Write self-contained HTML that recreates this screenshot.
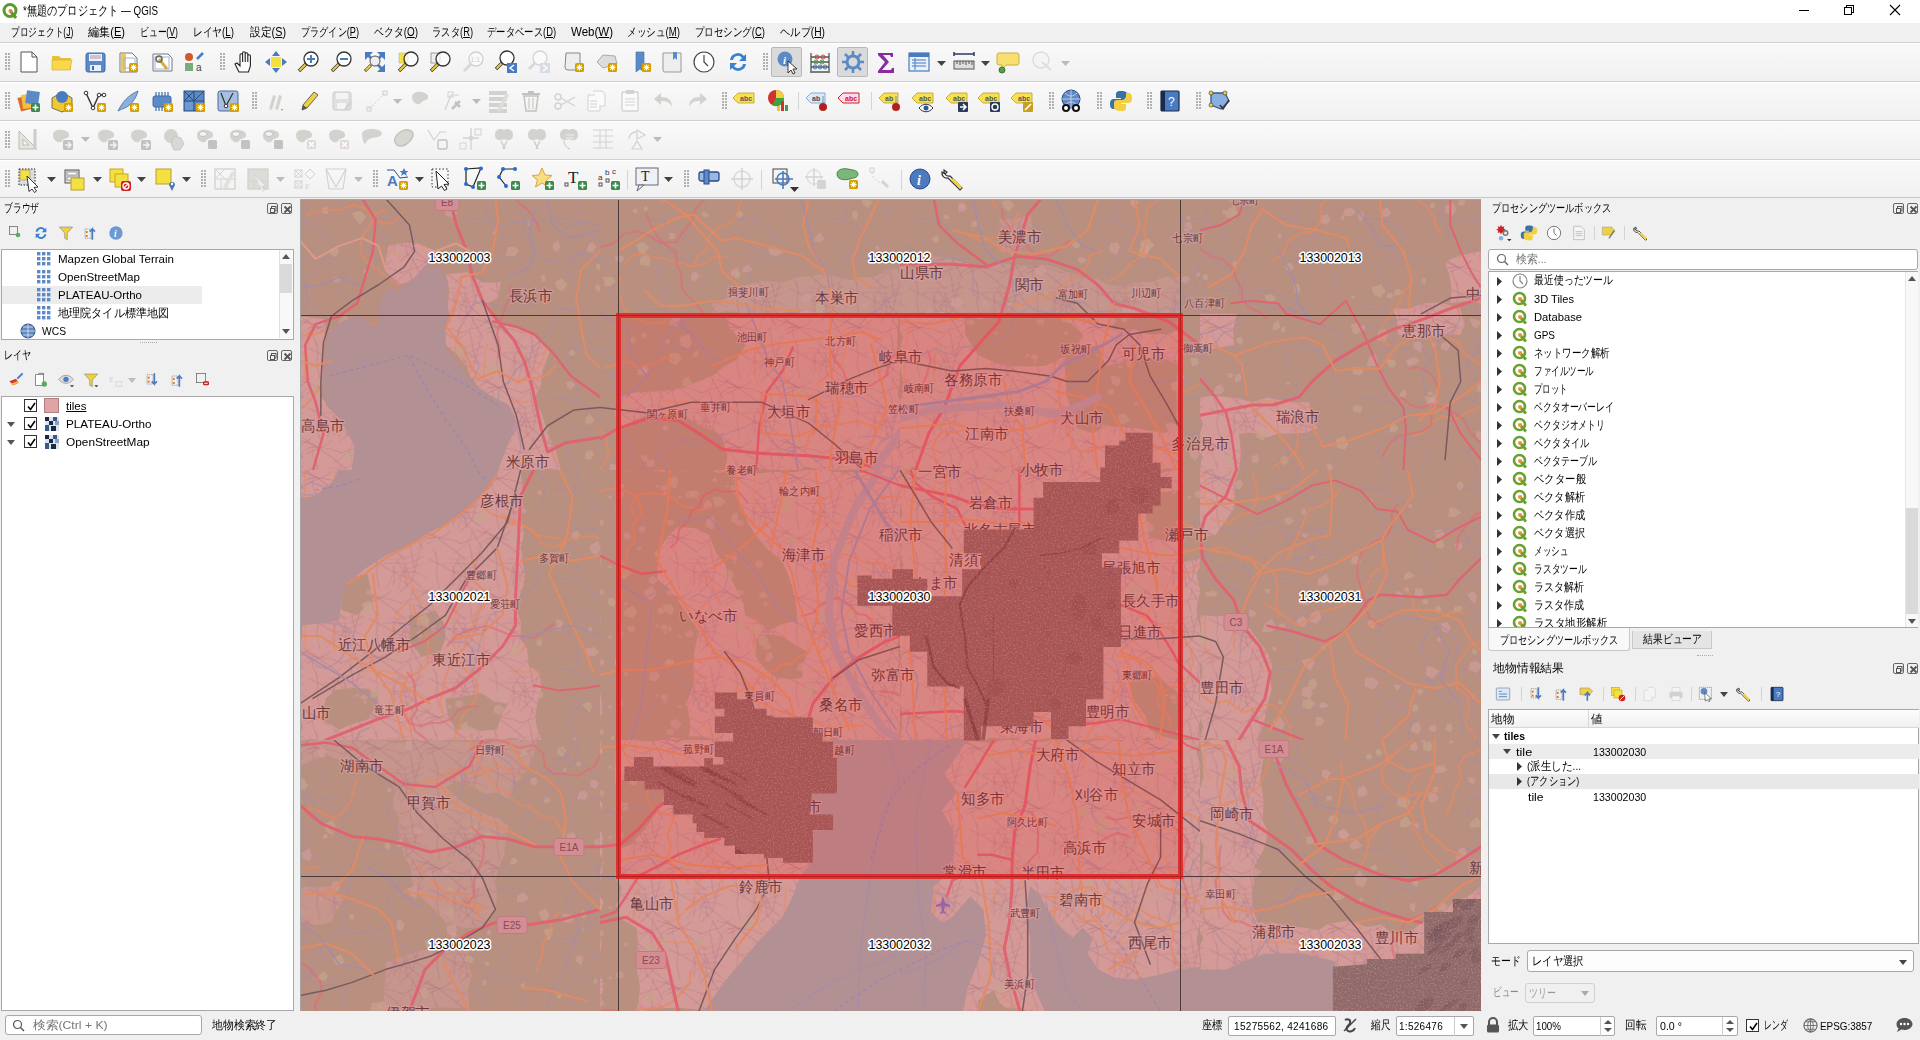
<!DOCTYPE html><html><head><meta charset="utf-8"><style>
*{box-sizing:border-box}
body{margin:0;width:1920px;height:1040px;overflow:hidden;position:relative;background:#f0f0f0;font-family:"Liberation Sans",sans-serif}
.t{position:absolute;white-space:nowrap;line-height:1.15;transform-origin:0 0}
.ic{position:absolute;overflow:visible}
.tbar{position:absolute;left:0;width:1920px;height:39px;background:linear-gradient(#f9f9f9,#f1f1f1);border-top:1px solid #d0d0d0;box-shadow:inset 0 1px 0 #fff}
.grip{position:absolute;width:5px;height:18px;background-image:radial-gradient(circle at 1px 1px,#b0b0b0 0.75px,transparent 1px);background-size:3px 3px}
.sep{position:absolute;width:1px;background:#d4d4d4}
.pressed{position:absolute;background:#dadada;border:1px solid #b8b8b8;border-radius:2px}
.dbtn{position:absolute;width:11px;height:11px;border:1px solid #666;border-radius:2px}
.box{position:absolute;background:#fff;border:1px solid #a8a8a8}
.cb{position:absolute;width:13px;height:13px;border:1px solid #333;background:#fff}
</style></head><body>
<div style="position:absolute;left:0;top:0;width:1920px;height:23px;background:#fff"></div><svg class="ic" style="left:2px;top:3px;width:16px;height:16px" viewBox="0 0 16 16"><circle cx="8" cy="7.5" r="6" fill="none" stroke="#5a9a30" stroke-width="3"/><path d="M9 9l5 6" stroke="#5a9a30" stroke-width="3"/><circle cx="8.5" cy="8" r="2" fill="#f08030"/></svg><div class="t" id="t0" style="left:23px;top:4px;font-size:12.5px;color:#000;transform:scaleX(0.9646);width:139.95px;clip-path:inset(-5px -1px -5px -2px);--w:135;">*無題のプロジェクト — QGIS</div><div style="position:absolute;left:1799px;top:10px;width:10px;height:1px;background:#000"></div><div style="position:absolute;left:1844px;top:7px;width:8px;height:8px;border:1px solid #000;background:#fff;box-shadow:2px -2px 0 -1px #fff,2px -2px 0 0 #000"></div><svg class="ic" style="left:1889px;top:4px;width:12px;height:12px" viewBox="0 0 12 12"><path d="M1 1l10 10M11 1L1 11" stroke="#000" stroke-width="1.1"/></svg><div style="position:absolute;left:0;top:23px;width:1920px;height:19px;background:#f0f0f0"></div><div class="t" id="t1" style="left:10.6px;top:26.3px;font-size:12px;color:#000;transform:scaleX(0.9176);width:68.00px;clip-path:inset(-5px -1px -5px -2px);--w:62.4;">プロジェクト(<u>J</u>)</div><div class="t" id="t2" style="left:88px;top:26.3px;font-size:12px;color:#000;transform:scaleX(1.0877);width:34.02px;clip-path:inset(-5px -1px -5px -2px);--w:37;">編集(<u>E</u>)</div><div class="t" id="t3" style="left:140px;top:26.3px;font-size:12px;color:#000;transform:scaleX(0.8834);width:43.02px;clip-path:inset(-5px -1px -5px -2px);--w:38;">ビュー(<u>V</u>)</div><div class="t" id="t4" style="left:193px;top:26.3px;font-size:12px;color:#000;transform:scaleX(0.9835);width:41.69px;clip-path:inset(-5px -1px -5px -2px);--w:41;">レイヤ(<u>L</u>)</div><div class="t" id="t5" style="left:250px;top:26.3px;font-size:12px;color:#000;transform:scaleX(1.0583);width:34.02px;clip-path:inset(-5px -1px -5px -2px);--w:36;">設定(<u>S</u>)</div><div class="t" id="t6" style="left:301px;top:26.3px;font-size:12px;color:#000;transform:scaleX(0.9506);width:61.02px;clip-path:inset(-5px -1px -5px -2px);--w:58;">プラグイン(<u>P</u>)</div><div class="t" id="t7" style="left:374px;top:26.3px;font-size:12px;color:#000;transform:scaleX(0.9922);width:44.34px;clip-path:inset(-5px -1px -5px -2px);--w:44;">ベクタ(<u>O</u>)</div><div class="t" id="t8" style="left:432px;top:26.3px;font-size:12px;color:#000;transform:scaleX(0.9388);width:43.67px;clip-path:inset(-5px -1px -5px -2px);--w:41;">ラスタ(<u>R</u>)</div><div class="t" id="t9" style="left:487px;top:26.3px;font-size:12px;color:#000;transform:scaleX(0.9763);width:70.67px;clip-path:inset(-5px -1px -5px -2px);--w:69;">データベース(<u>D</u>)</div><div class="t" id="t10" style="left:571px;top:26.3px;font-size:12px;color:#000;transform:scaleX(0.9593);width:43.78px;clip-path:inset(-5px -1px -5px -2px);--w:42;">Web(<u>W</u>)</div><div class="t" id="t11" style="left:627px;top:26.3px;font-size:12px;color:#000;transform:scaleX(0.9815);width:54.00px;clip-path:inset(-5px -1px -5px -2px);--w:53;">メッシュ(<u>M</u>)</div><div class="t" id="t12" style="left:695px;top:26.3px;font-size:12px;color:#000;transform:scaleX(0.9905);width:70.67px;clip-path:inset(-5px -1px -5px -2px);--w:70;">プロセシング(<u>C</u>)</div><div class="t" id="t13" style="left:780px;top:26.3px;font-size:12px;color:#000;transform:scaleX(1.0304);width:43.67px;clip-path:inset(-5px -1px -5px -2px);--w:45;">ヘルプ(<u>H</u>)</div><div class="tbar" style="top:42px"></div><div class="tbar" style="top:81px"></div><div class="tbar" style="top:120px"></div><div class="tbar" style="top:159px"></div><div class="grip" style="left:5px;top:53px"></div><div class="grip" style="left:220px;top:53px"></div><svg class="ic" style="left:17px;top:50px;width:24px;height:24px" viewBox="0 0 24 24"><path d="M4 2h11l5 5v15H4z" fill="#fff" stroke="#555" stroke-width="1"/><path d="M15 2v5h5" fill="none" stroke="#555"/></svg><svg class="ic" style="left:50px;top:50px;width:24px;height:24px" viewBox="0 0 24 24"><path d="M2 6h7l2 2h10v12H2z" fill="#e8c040"/><path d="M2 10h20l-2 10H2z" fill="#fbd84a" stroke="#d0a830" stroke-width=".6"/></svg><svg class="ic" style="left:83px;top:50px;width:24px;height:24px" viewBox="0 0 24 24"><rect x="3" y="3" width="19" height="19" rx="2" fill="#5b8ac6" stroke="#3e6ea8"/><rect x="6" y="4" width="13" height="7" fill="#eef"/><path d="M7 6h11M7 8h11" stroke="#889" stroke-width=".8"/><rect x="7" y="15" width="11" height="6" fill="#eef"/><rect x="9" y="16" width="2" height="4" fill="#3e6ea8"/></svg><svg class="ic" style="left:116px;top:50px;width:24px;height:24px" viewBox="0 0 24 24"><path d="M4 3h12l5 5v14H4z" fill="#fff" stroke="#777"/><path d="M5 4h5v17H5z" fill="#f0c850"/><rect x="8" y="8" width="11" height="10" fill="none" stroke="#9ab4e0"/><rect x="13" y="13" width="9" height="9" rx="1.5" fill="#d4a000"/><path d="M17.5 14.5v6M14.5 17.5h6M15.3 15.3l4.4 4.4M19.7 15.3l-4.4 4.4" stroke="#fff" stroke-width="1.1"/></svg><svg class="ic" style="left:150px;top:50px;width:24px;height:24px" viewBox="0 0 24 24"><path d="M3 4h15l4 4v13H3z" fill="#fff" stroke="#777"/><rect x="5" y="7" width="14" height="12" fill="none" stroke="#9ab4e0"/><path d="M9 9l8 10" stroke="#d8b040" stroke-width="3"/><circle cx="9" cy="9" r="3" fill="none" stroke="#666" stroke-width="1.5"/></svg><svg class="ic" style="left:183px;top:50px;width:24px;height:24px" viewBox="0 0 24 24"><circle cx="6" cy="7" r="4" fill="#d05a2a"/><path d="M14 9l6-6" stroke="#4a7ac0" stroke-width="2.5"/><rect x="2" y="13" width="8" height="8" fill="#7aaa80"/><text x="13" y="21" font-size="10" fill="#444" font-family="Liberation Sans">a</text></svg><svg class="ic" style="left:232px;top:50px;width:24px;height:24px" viewBox="0 0 24 24"><path d="M7 22l-4-8 2-1 3 3V5a1.3 1.3 0 012.6 0v7V3a1.3 1.3 0 012.6 0v9V4a1.3 1.3 0 012.6 0v8V6a1.3 1.3 0 012.6 0v10l-2 6z" fill="#fff" stroke="#222" stroke-width="1.1"/></svg><svg class="ic" style="left:264px;top:50px;width:24px;height:24px" viewBox="0 0 24 24"><rect x="7" y="7" width="10" height="10" fill="#f4e040"/><path d="M12 1l4 5H8zM12 23l4-5H8zM1 12l5-4v8zM23 12l-5-4v8z" fill="#4a7ac0"/></svg><svg class="ic" style="left:297px;top:50px;width:24px;height:24px" viewBox="0 0 24 24"><circle cx="14" cy="9" r="7" fill="#fff" stroke="#333" stroke-width="1.3"/><path d="M10 9h8M14 5v8" stroke="#4a7ac0" stroke-width="2"/><path d="M9 14l-7 7" stroke="#333" stroke-width="3.4"/><path d="M8.5 14.5l-6 6" stroke="#f0d040" stroke-width="2"/></svg><svg class="ic" style="left:330px;top:50px;width:24px;height:24px" viewBox="0 0 24 24"><circle cx="14" cy="9" r="7" fill="#fff" stroke="#333" stroke-width="1.3"/><path d="M10 9h8" stroke="#4a7ac0" stroke-width="2"/><path d="M9 14l-7 7" stroke="#333" stroke-width="3.4"/><path d="M8.5 14.5l-6 6" stroke="#f0d040" stroke-width="2"/></svg><svg class="ic" style="left:363px;top:50px;width:24px;height:24px" viewBox="0 0 24 24"><path d="M2 2h8l-3 3 4 4-2 2-4-4-3 3zM22 2v8l-3-3-4 4-2-2 4-4-3-3zM22 22h-8l3-3-4-4 2-2 4 4 3-3z" fill="#4a7ac0"/><circle cx="12" cy="11" r="5" fill="#eee" stroke="#555"/><path d="M8 15l-6 6" stroke="#333" stroke-width="3"/><path d="M7.5 15.5l-5 5" stroke="#f0d040" stroke-width="1.8"/></svg><svg class="ic" style="left:397px;top:50px;width:24px;height:24px" viewBox="0 0 24 24"><rect x="2" y="3" width="9" height="10" fill="#f4e040" stroke="#aaa" stroke-width=".5"/><circle cx="14" cy="9" r="7" fill="rgba(255,255,255,.7)" stroke="#333" stroke-width="1.3"/><path d="M9 14l-7 7" stroke="#333" stroke-width="3.4"/><path d="M8.5 14.5l-6 6" stroke="#f0d040" stroke-width="2"/></svg><svg class="ic" style="left:429px;top:50px;width:24px;height:24px" viewBox="0 0 24 24"><rect x="2" y="3" width="9" height="10" fill="#eee" stroke="#888" stroke-width=".8"/><circle cx="14" cy="9" r="7" fill="rgba(255,255,255,.7)" stroke="#333" stroke-width="1.3"/><path d="M9 14l-7 7" stroke="#333" stroke-width="3.4"/><path d="M8.5 14.5l-6 6" stroke="#f0d040" stroke-width="2"/></svg><svg class="ic" style="left:462px;top:50px;width:24px;height:24px" viewBox="0 0 24 24"><circle cx="14" cy="9" r="7" fill="#fafafa" stroke="#d0d0d0" stroke-width="1.3"/><text x="8.5" y="12" font-size="7" fill="#ccc" font-family="Liberation Sans">1:1</text><path d="M9 14l-7 7" stroke="#d8d8d8" stroke-width="3"/></svg><svg class="ic" style="left:495px;top:50px;width:24px;height:24px" viewBox="0 0 24 24"><circle cx="12" cy="8" r="7" fill="#fff" stroke="#333" stroke-width="1.3"/><path d="M7 13l-6 6" stroke="#333" stroke-width="3.2"/><path d="M6.5 13.5l-5 5" stroke="#f0d040" stroke-width="1.8"/><rect x="12" y="13" width="10" height="10" fill="#4a7ac0"/><path d="M19 15l-4 3 4 3" stroke="#fff" stroke-width="1.5" fill="none"/></svg><svg class="ic" style="left:528px;top:50px;width:24px;height:24px" viewBox="0 0 24 24"><circle cx="12" cy="8" r="7" fill="#fafafa" stroke="#d4d4d4" stroke-width="1.3"/><path d="M7 13l-6 6" stroke="#d8d8d8" stroke-width="3"/><rect x="12" y="13" width="10" height="10" fill="#d8dde4"/><path d="M15 15l4 3-4 3" stroke="#fff" stroke-width="1.5" fill="none"/></svg><svg class="ic" style="left:562px;top:50px;width:24px;height:24px" viewBox="0 0 24 24"><path d="M4 3h14v17H6a3 3 0 01-3-3z" fill="#eee" stroke="#888"/><rect x="13" y="13" width="9" height="9" rx="1.5" fill="#d4a000"/><path d="M17.5 14.5v6M14.5 17.5h6M15.3 15.3l4.4 4.4M19.7 15.3l-4.4 4.4" stroke="#fff" stroke-width="1.1"/></svg><svg class="ic" style="left:595px;top:50px;width:24px;height:24px" viewBox="0 0 24 24"><path d="M2 12l6-7 12 1 2 8-14 4z" fill="#ddd" stroke="#999" stroke-width=".8"/><rect x="13" y="13" width="9" height="9" rx="1.5" fill="#d4a000"/><path d="M17.5 14.5v6M14.5 17.5h6M15.3 15.3l4.4 4.4M19.7 15.3l-4.4 4.4" stroke="#fff" stroke-width="1.1"/></svg><svg class="ic" style="left:630px;top:50px;width:24px;height:24px" viewBox="0 0 24 24"><path d="M6 2h8v20l-4-3-4 3z" fill="#5b8ac6" stroke="#3e6ea8" stroke-width=".6"/><rect x="12" y="13" width="9" height="9" rx="1.5" fill="#d4a000"/><path d="M16.5 14.5v6M13.5 17.5h6M14.3 15.3l4.4 4.4M18.7 15.3l-4.4 4.4" stroke="#fff" stroke-width="1.1"/></svg><svg class="ic" style="left:660px;top:50px;width:24px;height:24px" viewBox="0 0 24 24"><path d="M3 3h18v19H5a2 2 0 01-2-2z" fill="#eee" stroke="#999"/><path d="M13 2h4v8l-2-2-2 2z" fill="#5b8ac6"/></svg><svg class="ic" style="left:692px;top:50px;width:24px;height:24px" viewBox="0 0 24 24"><circle cx="12" cy="12" r="10" fill="#fff" stroke="#444" stroke-width="1.2"/><path d="M12 5v7l4 4" stroke="#444" stroke-width="1.2" fill="none"/></svg><svg class="ic" style="left:726px;top:50px;width:24px;height:24px" viewBox="0 0 24 24"><path d="M4 10a8 8 0 0114-4l2-2v7h-7l3-3a5 5 0 00-9 2z" fill="#3a80d0"/><path d="M20 14a8 8 0 01-14 4l-2 2v-7h7l-3 3a5 5 0 009-2z" fill="#3a80d0"/></svg><div class="grip" style="left:763px;top:53px"></div><div class="pressed" style="left:771px;top:47px;width:31px;height:30px"></div><svg class="ic" style="left:775px;top:50px;width:24px;height:24px" viewBox="0 0 24 24"><circle cx="10" cy="9" r="7.5" fill="#5b8ac6"/><text x="8" y="14" font-size="11" font-style="italic" font-weight="bold" fill="#fff" font-family="Liberation Serif">i</text><path d="M13 11l9 8-4 0 2 4-2 1-2-4-3 3z" fill="#fff" stroke="#222" stroke-width=".9"/></svg><svg class="ic" style="left:808px;top:50px;width:24px;height:24px" viewBox="0 0 24 24"><path d="M2 22h20M3 3v18M21 3v18M3 7h18M3 12h18M3 17h18" stroke="#555" stroke-width="1.3"/><circle cx="9" cy="7" r="2" fill="none" stroke="#d04040"/><circle cx="15" cy="7" r="2" fill="none" stroke="#d04040"/><circle cx="8" cy="12" r="2" fill="none" stroke="#40a040"/><circle cx="14" cy="12" r="2" fill="none" stroke="#40a040"/><circle cx="7" cy="17" r="2" fill="none" stroke="#4a7ac0"/><circle cx="12" cy="17" r="2" fill="none" stroke="#4a7ac0"/><circle cx="17" cy="17" r="2" fill="none" stroke="#4a7ac0"/></svg><div class="pressed" style="left:837px;top:47px;width:31px;height:30px"></div><svg class="ic" style="left:841px;top:50px;width:24px;height:24px" viewBox="0 0 24 24"><circle cx="12" cy="12" r="6" fill="none" stroke="#5b8ac6" stroke-width="3"/><path d="M12 1v5M12 18v5M1 12h5M18 12h5M4 4l3.5 3.5M16.5 16.5L20 20M20 4l-3.5 3.5M7.5 16.5L4 20" stroke="#5b8ac6" stroke-width="2.6"/></svg><svg class="ic" style="left:874px;top:50px;width:24px;height:24px" viewBox="0 0 24 24"><path d="M4 3h15v4h-2l-1-2H9l6 7-7 8h9l1-2h2v5H4v-2l7-9-7-7z" fill="#8a2aa0"/></svg><svg class="ic" style="left:907px;top:50px;width:24px;height:24px" viewBox="0 0 24 24"><rect x="2" y="3" width="20" height="18" fill="#e8f0fa" stroke="#4a7ac0" stroke-width="1.2"/><rect x="2" y="3" width="20" height="4" fill="#4a7ac0"/><path d="M5 10h14M5 13h14M5 16h14M8 8v12" stroke="#4a7ac0" stroke-width="1"/></svg><svg class="ic" style="left:937px;top:61px;width:9px;height:5px" viewBox="0 0 9 5"><path d="M0 0h9L4.5 5z" fill="#444"/></svg><svg class="ic" style="left:952px;top:50px;width:24px;height:24px" viewBox="0 0 24 24"><path d="M2 4h20M2 2v4M22 2v4" stroke="#2a3a6a" stroke-width="1.5"/><rect x="2" y="11" width="20" height="8" fill="#ddd" stroke="#555"/><path d="M5 11v3M8 11v4M11 11v3M14 11v4M17 11v3M20 11v4" stroke="#555"/></svg><svg class="ic" style="left:981px;top:61px;width:9px;height:5px" viewBox="0 0 9 5"><path d="M0 0h9L4.5 5z" fill="#444"/></svg><svg class="ic" style="left:996px;top:50px;width:24px;height:24px" viewBox="0 0 24 24"><path d="M3 3h18a2 2 0 012 2v8a2 2 0 01-2 2H10l-4 4v-4H3a2 2 0 01-2-2V5a2 2 0 012-2z" fill="#f8e070" stroke="#c8b040"/><circle cx="6" cy="20" r="3" fill="#5a9a50" stroke="#3a7a30"/></svg><svg class="ic" style="left:1030px;top:50px;width:24px;height:24px" viewBox="0 0 24 24"><circle cx="11" cy="10" r="8" fill="#f4f4f4" stroke="#ddd" stroke-width="1.5"/><path d="M12 12l9 8" stroke="#ddd" stroke-width="2"/></svg><svg class="ic" style="left:1061px;top:61px;width:9px;height:5px" viewBox="0 0 9 5"><path d="M0 0h9L4.5 5z" fill="#bbb"/></svg><div class="grip" style="left:5px;top:92px"></div><svg class="ic" style="left:17px;top:89px;width:24px;height:24px" viewBox="0 0 24 24"><rect x="2" y="7" width="14" height="14" fill="#e06a2a" transform="rotate(-15 9 14)"/><rect x="5" y="5" width="14" height="14" fill="#f0c040" transform="rotate(-8 12 12)"/><rect x="9" y="2" width="13" height="13" fill="#5b8ac6" transform="rotate(8 15 9)"/><rect x="14" y="14" width="9" height="9" rx="1.5" fill="#3a8a4a"/><path d="M18.5 15.5v6M15.5 18.5h6" stroke="#fff" stroke-width="1.6"/></svg><svg class="ic" style="left:50px;top:89px;width:24px;height:24px" viewBox="0 0 24 24"><path d="M2 9l10-6 10 6v10l-10 4-10-4z" fill="#f0c830" stroke="#555" stroke-width=".8"/><circle cx="12" cy="8" r="6" fill="#4a7ac0"/><rect x="14" y="14" width="9" height="9" rx="1.5" fill="#d4a000"/><path d="M18.5 15.5v6M15.5 18.5h6M16.3 16.3l4.4 4.4M20.7 16.3l-4.4 4.4" stroke="#fff" stroke-width="1.1"/></svg><svg class="ic" style="left:83px;top:89px;width:24px;height:24px" viewBox="0 0 24 24"><path d="M3 4l7 15 6-13 5 0" fill="none" stroke="#333" stroke-width="1.4"/><circle cx="3" cy="4" r="1.8" fill="#fff" stroke="#333"/><circle cx="10" cy="19" r="1.8" fill="#fff" stroke="#333"/><circle cx="16" cy="6" r="1.8" fill="#fff" stroke="#333"/><circle cx="21" cy="6" r="1.8" fill="#fff" stroke="#333"/><rect x="14" y="14" width="9" height="9" rx="1.5" fill="#d4a000"/><path d="M18.5 15.5v6M15.5 18.5h6M16.3 16.3l4.4 4.4M20.7 16.3l-4.4 4.4" stroke="#fff" stroke-width="1.1"/></svg><svg class="ic" style="left:116px;top:89px;width:24px;height:24px" viewBox="0 0 24 24"><path d="M2 22C6 14 12 6 22 2c-2 8-8 16-16 18z" fill="#8ab0e0" stroke="#4a6a9a" stroke-width=".8"/><rect x="14" y="14" width="9" height="9" rx="1.5" fill="#d4a000"/><path d="M18.5 15.5v6M15.5 18.5h6M16.3 16.3l4.4 4.4M20.7 16.3l-4.4 4.4" stroke="#fff" stroke-width="1.1"/></svg><svg class="ic" style="left:150px;top:89px;width:24px;height:24px" viewBox="0 0 24 24"><rect x="3" y="7" width="18" height="11" rx="2" fill="#5b8ac6" stroke="#3e6ea8"/><path d="M6 3v4M9 3v4M12 3v4M15 3v4M18 3v4M6 18v4M9 18v4M12 18v4M15 18v4" stroke="#3e6ea8" stroke-width="1.2"/><rect x="14" y="14" width="9" height="9" rx="1.5" fill="#d4a000"/><path d="M18.5 15.5v6M15.5 18.5h6M16.3 16.3l4.4 4.4M20.7 16.3l-4.4 4.4" stroke="#fff" stroke-width="1.1"/></svg><svg class="ic" style="left:182px;top:89px;width:24px;height:24px" viewBox="0 0 24 24"><rect x="2" y="2" width="20" height="20" fill="#5b8ac6" stroke="#2a4a7a"/><path d="M2 12h20M12 2v20M2 2l10 10M12 2L2 12M22 2l-10 10" stroke="#2a4a7a" stroke-width="1" fill="none"/><rect x="3" y="13" width="8" height="8" fill="#6a9ad6"/><rect x="14" y="14" width="9" height="9" rx="1.5" fill="#d4a000"/><path d="M18.5 15.5v6M15.5 18.5h6M16.3 16.3l4.4 4.4M20.7 16.3l-4.4 4.4" stroke="#fff" stroke-width="1.1"/></svg><svg class="ic" style="left:216px;top:89px;width:24px;height:24px" viewBox="0 0 24 24"><rect x="2" y="2" width="20" height="20" rx="2" fill="#a8c0e0" stroke="#4a6a9a"/><path d="M5 4l5 13 7-13" stroke="#333" fill="none" stroke-width="1.2"/><circle cx="10" cy="17" r="1.8" fill="#fff" stroke="#333"/><rect x="14" y="14" width="9" height="9" rx="1.5" fill="#d4a000"/><path d="M18.5 15.5v6M15.5 18.5h6M16.3 16.3l4.4 4.4M20.7 16.3l-4.4 4.4" stroke="#fff" stroke-width="1.1"/></svg><div class="grip" style="left:252px;top:92px"></div><svg class="ic" style="left:266px;top:89px;width:24px;height:24px" viewBox="0 0 24 24"><path d="M3 20l4-14 3 1-4 14zM9 20l4-14 3 1-4 14z" fill="#d2d2ce"/><path d="M15 22l3-2h-3z" fill="#aaa"/></svg><svg class="ic" style="left:298px;top:89px;width:24px;height:24px" viewBox="0 0 24 24"><path d="M4 21l1-5 11-13 4 3-11 13z" fill="#f0d040" stroke="#555" stroke-width=".9"/><path d="M4 21l1-5 4 3z" fill="#555"/></svg><svg class="ic" style="left:330px;top:89px;width:24px;height:24px" viewBox="0 0 24 24"><rect x="3" y="3" width="18" height="18" rx="2" fill="#e0e0e0" stroke="#ccc"/><rect x="6" y="4" width="12" height="6" fill="#f4f4f4"/><rect x="7" y="14" width="9" height="6" fill="#f4f4f4"/><path d="M14 20l6-8 2 2-6 8z" fill="#d2d2ce"/></svg><svg class="ic" style="left:365px;top:89px;width:24px;height:24px" viewBox="0 0 24 24"><path d="M4 20L20 4" stroke="#d0d0d0" stroke-dasharray="2 2"/><rect x="2" y="18" width="4" height="4" fill="none" stroke="#d0d0d0"/><rect x="18" y="2" width="4" height="4" fill="none" stroke="#d0d0d0"/></svg><svg class="ic" style="left:393px;top:99px;width:9px;height:5px" viewBox="0 0 9 5"><path d="M0 0h9L4.5 5z" fill="#bbb"/></svg><svg class="ic" style="left:409px;top:89px;width:24px;height:24px" viewBox="0 0 24 24"><path d="M3 8c0-5 6-6 10-5s7 3 6 6-6 2-7 5-9 1-9-6z" fill="#d2d2ce"/></svg><svg class="ic" style="left:442px;top:89px;width:24px;height:24px" viewBox="0 0 24 24"><path d="M3 21l6-15M9 6h8" stroke="#d2d2ce" stroke-width="1.2"/><rect x="6" y="3" width="5" height="5" fill="none" stroke="#d2d2ce"/><path d="M10 20l8-8M13 13l5 5" stroke="#c2c2be" stroke-width="2.5"/></svg><svg class="ic" style="left:472px;top:99px;width:9px;height:5px" viewBox="0 0 9 5"><path d="M0 0h9L4.5 5z" fill="#bbb"/></svg><svg class="ic" style="left:487px;top:89px;width:24px;height:24px" viewBox="0 0 24 24"><path d="M2 4h18M2 10h18M2 16h18M2 22h18" stroke="#d2d2ce" stroke-width="4"/><path d="M10 21l9-17 3 2-9 17z" fill="#ddd"/></svg><svg class="ic" style="left:519px;top:89px;width:24px;height:24px" viewBox="0 0 24 24"><path d="M3 5h18M9 3h6" stroke="#c2c2be" stroke-width="2"/><path d="M5 7h14l-2 15H7z" fill="none" stroke="#c2c2be" stroke-width="1.5"/><path d="M10 9v11M14 9v11" stroke="#c2c2be"/></svg><svg class="ic" style="left:553px;top:89px;width:24px;height:24px" viewBox="0 0 24 24"><circle cx="5" cy="8" r="3" fill="none" stroke="#d2d2ce" stroke-width="1.4"/><circle cx="5" cy="17" r="3" fill="none" stroke="#d2d2ce" stroke-width="1.4"/><path d="M8 9l14 8M8 16l14-8" stroke="#d2d2ce" stroke-width="1.4"/></svg><svg class="ic" style="left:585px;top:89px;width:24px;height:24px" viewBox="0 0 24 24"><path d="M3 6h9l3 3v13H3z" fill="#fafafa" stroke="#d2d2ce"/><path d="M8 2h9l3 3v12h-5" fill="#fafafa" stroke="#d2d2ce"/><path d="M5 12h7M5 15h7M5 18h7" stroke="#d2d2ce"/></svg><svg class="ic" style="left:618px;top:89px;width:24px;height:24px" viewBox="0 0 24 24"><rect x="4" y="3" width="16" height="19" rx="1" fill="#fafafa" stroke="#d2d2ce" stroke-width="1.3"/><rect x="8" y="1" width="8" height="4" fill="#d2d2ce"/><path d="M7 10h10M7 13h10M7 16h10" stroke="#d2d2ce"/></svg><svg class="ic" style="left:652px;top:89px;width:24px;height:24px" viewBox="0 0 24 24"><path d="M9 4L2 10l7 6v-4c5 0 9 1 11 6 0-7-4-10-11-10z" fill="#d2d2ce"/></svg><svg class="ic" style="left:685px;top:89px;width:24px;height:24px" viewBox="0 0 24 24"><path d="M15 4l7 6-7 6v-4c-5 0-9 1-11 6 0-7 4-10 11-10z" fill="#d2d2ce"/></svg><div class="grip" style="left:722px;top:92px"></div><svg class="ic" style="left:732px;top:89px;width:24px;height:24px" viewBox="0 0 24 24"><path d="M1 9l5-5h16v10H6z" fill="#f8e050" stroke="#b8a030" stroke-width=".8"/><text x="8" y="12" font-size="7" font-weight="bold" fill="#555" font-family="Liberation Sans">abc</text></svg><svg class="ic" style="left:767px;top:89px;width:24px;height:24px" viewBox="0 0 24 24"><circle cx="9" cy="9" r="8" fill="#d03030"/><path d="M9 9V1a8 8 0 018 8z" fill="#f0d040"/><path d="M9 9h8a8 8 0 01-12 7z" fill="#40a040"/><rect x="14" y="12" width="3" height="10" fill="#d03030"/><rect x="18" y="16" width="3" height="6" fill="#40a040"/><rect x="10" y="17" width="3" height="5" fill="#f0c040"/></svg><div class="sep" style="left:798px;top:92px;height:18px"></div><svg class="ic" style="left:805px;top:89px;width:24px;height:24px" viewBox="0 0 24 24"><path d="M1 9l5-5h14v10H6z" fill="#dde8f8" stroke="#6a9ad6" stroke-width=".8"/><text x="7" y="12" font-size="7" font-weight="bold" fill="#445" font-family="Liberation Sans">ab</text><circle cx="18" cy="18" r="4" fill="#b02020"/><path d="M18 14V7" stroke="#888"/></svg><svg class="ic" style="left:837px;top:89px;width:24px;height:24px" viewBox="0 0 24 24"><path d="M1 9l5-5h16v10H6z" fill="#fde" stroke="#d02020" stroke-width="1"/><text x="8" y="12" font-size="7" font-weight="bold" fill="#d02020" font-family="Liberation Sans">abc</text></svg><div class="sep" style="left:871px;top:92px;height:18px"></div><svg class="ic" style="left:878px;top:89px;width:24px;height:24px" viewBox="0 0 24 24"><path d="M1 9l5-5h14v10H6z" fill="#f8e050" stroke="#b8a030" stroke-width=".8"/><text x="7" y="12" font-size="7" font-weight="bold" fill="#555" font-family="Liberation Sans">ab</text><circle cx="18" cy="18" r="4" fill="#b02020"/><path d="M18 14V7" stroke="#888"/></svg><svg class="ic" style="left:911px;top:89px;width:24px;height:24px" viewBox="0 0 24 24"><path d="M1 9l5-5h16v10H6z" fill="#f8e050" stroke="#b8a030" stroke-width=".8"/><text x="8" y="12" font-size="7" font-weight="bold" fill="#555" font-family="Liberation Sans">abc</text><path d="M8 19c4-5 10-5 14 0-4 5-10 5-14 0z" fill="#fff" stroke="#333"/><circle cx="15" cy="19" r="2.5" fill="#2a5a9a"/></svg><svg class="ic" style="left:945px;top:89px;width:24px;height:24px" viewBox="0 0 24 24"><path d="M1 9l5-5h16v10H6z" fill="#f8e050" stroke="#b8a030" stroke-width=".8"/><text x="8" y="12" font-size="7" font-weight="bold" fill="#555" font-family="Liberation Sans">abc</text><rect x="13" y="13" width="10" height="10" rx="1" fill="#2a3a5a"/><path d="M15 18h5M18 15l3 3-3 3" stroke="#fff" stroke-width="1.6" fill="none"/></svg><svg class="ic" style="left:977px;top:89px;width:24px;height:24px" viewBox="0 0 24 24"><path d="M1 9l5-5h16v10H6z" fill="#f8e050" stroke="#b8a030" stroke-width=".8"/><text x="8" y="12" font-size="7" font-weight="bold" fill="#555" font-family="Liberation Sans">abc</text><rect x="13" y="13" width="10" height="10" rx="1" fill="#2a3a5a"/><circle cx="18" cy="18" r="3" fill="none" stroke="#fff" stroke-width="1.4"/></svg><svg class="ic" style="left:1010px;top:89px;width:24px;height:24px" viewBox="0 0 24 24"><path d="M1 9l5-5h16v10H6z" fill="#f8e050" stroke="#b8a030" stroke-width=".8"/><text x="8" y="12" font-size="7" font-weight="bold" fill="#555" font-family="Liberation Sans">abc</text><rect x="13" y="13" width="10" height="10" rx="1" fill="#c8a020"/><path d="M15 21l6-6" stroke="#fff" stroke-width="1.6"/></svg><div class="grip" style="left:1049px;top:92px"></div><svg class="ic" style="left:1059px;top:89px;width:24px;height:24px" viewBox="0 0 24 24"><circle cx="12" cy="10" r="9" fill="#5b8ac6" stroke="#2a4a7a"/><path d="M3 10h18M12 1v18M6 4c4 4 8 4 12 0M6 16c4-4 8-4 12 0" stroke="#dde" stroke-width=".8" fill="none"/><circle cx="7" cy="19" r="4" fill="#111"/><circle cx="17" cy="19" r="4" fill="#111"/><circle cx="7" cy="19" r="2" fill="#fff"/><circle cx="17" cy="19" r="2" fill="#fff"/></svg><div class="grip" style="left:1097px;top:92px"></div><svg class="ic" style="left:1109px;top:89px;width:24px;height:24px" viewBox="0 0 24 24"><path d="M12 2c-5 0-5 2-5 4v3h5v1H5c-3 0-4 2-4 5s1 5 4 5h2v-3c0-2 2-4 4-4h5c2 0 3-1 3-3V6c0-2-2-4-7-4z" fill="#3a72a8"/><path d="M12 22c5 0 5-2 5-4v-3h-5v-1h7c3 0 4-2 4-5s-1-5-4-5h-2v3c0 2-2 4-4 4H8c-2 0-3 1-3 3v4c0 2 2 4 7 4z" fill="#f4d040"/></svg><div class="grip" style="left:1147px;top:92px"></div><svg class="ic" style="left:1158px;top:89px;width:24px;height:24px" viewBox="0 0 24 24"><rect x="3" y="2" width="18" height="20" rx="1" fill="#4a7ac0" stroke="#1a2a4a" stroke-width="1.2"/><rect x="3" y="2" width="4" height="20" fill="#1a2a4a"/><text x="10" y="17" font-size="12" fill="#fff" font-family="Liberation Sans">?</text></svg><div class="grip" style="left:1196px;top:92px"></div><svg class="ic" style="left:1207px;top:89px;width:24px;height:24px" viewBox="0 0 24 24"><path d="M4 4l14 0 4 8-8 8-10-4z" fill="#8ab0e0" stroke="#3a5a8a" stroke-width="1.3"/><circle cx="4" cy="4" r="2" fill="#f0d040" stroke="#333" stroke-width=".6"/><circle cx="18" cy="4" r="2" fill="#f0d040" stroke="#333" stroke-width=".6"/><circle cx="4" cy="16" r="2" fill="#f0d040" stroke="#333" stroke-width=".6"/><path d="M13 16l3 4 6-9" stroke="#333" stroke-width="1.5" fill="none"/></svg><div class="grip" style="left:5px;top:131px"></div><svg class="ic" style="left:17px;top:127px;width:24px;height:24px" viewBox="0 0 24 24"><path d="M2 22V4l18 18z" fill="#e8e4dc" stroke="#bbb"/><path d="M6 18V12l6 6z" fill="#f4f4f4" stroke="#bbb"/><path d="M18 2v20" stroke="#ccc" stroke-width="3"/></svg><svg class="ic" style="left:51px;top:127px;width:24px;height:24px" viewBox="0 0 24 24"><path d="M2 8c0-5 6-6 10-5s7 3 6 6-6 2-7 5-9 1-9-6z" fill="#d2d2ce"/><rect x="12" y="13" width="10" height="10" rx="1.5" fill="#c2c2be"/><path d="M14 18h5M17 15l3 3-3 3" stroke="#f4f4f4" stroke-width="1.4" fill="none"/></svg><svg class="ic" style="left:81px;top:137px;width:9px;height:5px" viewBox="0 0 9 5"><path d="M0 0h9L4.5 5z" fill="#bbb"/></svg><svg class="ic" style="left:96px;top:127px;width:24px;height:24px" viewBox="0 0 24 24"><path d="M2 8c0-5 6-6 10-5s7 3 6 6-6 2-7 5-9 1-9-6z" fill="#d2d2ce"/><rect x="12" y="13" width="10" height="10" rx="1.5" fill="#c2c2be"/><path d="M14 18h5M17 15l3 3-3 3" stroke="#f4f4f4" stroke-width="1.4" fill="none"/></svg><svg class="ic" style="left:129px;top:127px;width:24px;height:24px" viewBox="0 0 24 24"><path d="M2 8c0-5 6-6 10-5s7 3 6 6-6 2-7 5-9 1-9-6z" fill="#d2d2ce"/><rect x="12" y="13" width="10" height="10" rx="1.5" fill="#c2c2be"/><path d="M14 18h5M17 15l3 3-3 3" stroke="#f4f4f4" stroke-width="1.4" fill="none"/></svg><svg class="ic" style="left:162px;top:127px;width:24px;height:24px" viewBox="0 0 24 24"><circle cx="9" cy="9" r="7" fill="#d2d2ce"/><path d="M12 9l7 2 3 6-4 6h-6l-3-6z" fill="#d8d8d4" stroke="#c2c2be" stroke-width=".8"/></svg><svg class="ic" style="left:195px;top:127px;width:24px;height:24px" viewBox="0 0 24 24"><path d="M2 8c0-5 6-6 10-5s7 3 6 6-6 2-7 5-9 1-9-6z" fill="#d2d2ce"/><ellipse cx="8" cy="7" rx="4" ry="2.5" fill="#f4f4f4" stroke="#c2c2be"/><rect x="13" y="13" width="9" height="9" rx="1.5" fill="#c2c2be"/></svg><svg class="ic" style="left:228px;top:127px;width:24px;height:24px" viewBox="0 0 24 24"><path d="M2 8c0-5 6-6 10-5s7 3 6 6-6 2-7 5-9 1-9-6z" fill="#d2d2ce"/><ellipse cx="8" cy="7" rx="4" ry="2.5" fill="#f4f4f4" stroke="#c2c2be"/><rect x="13" y="13" width="9" height="9" rx="1.5" fill="#c2c2be"/></svg><svg class="ic" style="left:261px;top:127px;width:24px;height:24px" viewBox="0 0 24 24"><path d="M2 8c0-5 6-6 10-5s7 3 6 6-6 2-7 5-9 1-9-6z" fill="#d2d2ce"/><ellipse cx="8" cy="7" rx="4" ry="2.5" fill="#f4f4f4" stroke="#c2c2be"/><rect x="13" y="13" width="9" height="9" rx="1.5" fill="#c2c2be"/></svg><svg class="ic" style="left:294px;top:127px;width:24px;height:24px" viewBox="0 0 24 24"><path d="M2 8c0-5 6-6 10-5s7 3 6 6-6 2-7 5-9 1-9-6z" fill="#d2d2ce"/><rect x="13" y="13" width="9" height="9" rx="1.5" fill="#e0d8d8"/><path d="M15 15l5 5M20 15l-5 5" stroke="#fff" stroke-width="1.5"/></svg><svg class="ic" style="left:327px;top:127px;width:24px;height:24px" viewBox="0 0 24 24"><path d="M2 8c0-5 6-6 10-5s7 3 6 6-6 2-7 5-9 1-9-6z" fill="#d2d2ce"/><rect x="13" y="13" width="9" height="9" rx="1.5" fill="#e0d8d8"/><path d="M15 15l5 5M20 15l-5 5" stroke="#fff" stroke-width="1.5"/></svg><svg class="ic" style="left:360px;top:127px;width:24px;height:24px" viewBox="0 0 24 24"><path d="M2 6c2-4 10-5 16-3s4 6 0 7-10 0-12 6c-2 3-4-4-4-10z" fill="#d2d2ce"/></svg><svg class="ic" style="left:392px;top:127px;width:24px;height:24px" viewBox="0 0 24 24"><path d="M3 15c-2-6 8-14 14-12s5 7 0 12-12 6-14 0z" fill="#d8d6d0" stroke="#c2c2be" stroke-width="1.4"/></svg><svg class="ic" style="left:426px;top:127px;width:24px;height:24px" viewBox="0 0 24 24"><path d="M2 3l6 10 6-8h6" stroke="#d2d2ce" fill="none" stroke-width="1.2"/><rect x="12" y="13" width="9" height="9" rx="1.5" fill="none" stroke="#c2c2be" stroke-width="1.4"/></svg><svg class="ic" style="left:459px;top:127px;width:24px;height:24px" viewBox="0 0 24 24"><path d="M12 1v22M4 11h16" stroke="#d2d2ce" stroke-width="1.3"/><circle cx="12" cy="11" r="2" fill="none" stroke="#d2d2ce"/><rect x="16" y="2" width="6" height="6" fill="none" stroke="#d2d2ce"/><rect x="1" y="16" width="6" height="6" fill="none" stroke="#e0d0d0"/></svg><svg class="ic" style="left:492px;top:127px;width:24px;height:24px" viewBox="0 0 24 24"><path d="M3 8c0-6 6-7 9-5 3-2 9-1 9 5s-6 6-9 4c-3 2-9 2-9-4z" fill="#d2d2ce"/><path d="M9 14l4 8M15 14l-4 8" stroke="#d8c8c8" stroke-width="1.4"/></svg><svg class="ic" style="left:525px;top:127px;width:24px;height:24px" viewBox="0 0 24 24"><path d="M3 8c0-6 6-7 9-5 3-2 9-1 9 5s-6 6-9 4c-3 2-9 2-9-4z" fill="#d2d2ce"/><path d="M9 14l4 8M15 14l-4 8" stroke="#d8c8c8" stroke-width="1.4"/></svg><svg class="ic" style="left:558px;top:127px;width:24px;height:24px" viewBox="0 0 24 24"><path d="M2 8c0-6 6-7 9-5 3-2 9-1 9 5s-6 6-9 4c-3 2-9 2-9-4z" fill="#d2d2ce"/><path d="M8 8h8M8 11h8" stroke="#eee"/><path d="M6 14c0 4 3 7 6 8" stroke="#c2c2be" fill="none"/></svg><svg class="ic" style="left:591px;top:127px;width:24px;height:24px" viewBox="0 0 24 24"><path d="M2 3h20M2 9h20M2 15h20M2 21h20M9 3v18M15 3v18" stroke="#d2d2ce" stroke-width="1"/></svg><svg class="ic" style="left:625px;top:127px;width:24px;height:24px" viewBox="0 0 24 24"><path d="M4 12a7 7 0 017-7" stroke="#d2d2ce" fill="none" stroke-width="1.4"/><path d="M12 3l8 5-8 4zM12 14l5 8H7z" fill="none" stroke="#d2d2ce" stroke-width="1.2"/></svg><svg class="ic" style="left:653px;top:137px;width:9px;height:5px" viewBox="0 0 9 5"><path d="M0 0h9L4.5 5z" fill="#bbb"/></svg><div class="grip" style="left:5px;top:170px"></div><svg class="ic" style="left:18px;top:167px;width:24px;height:24px" viewBox="0 0 24 24"><rect x="1" y="2" width="16" height="16" fill="#ddd" stroke="#222" stroke-dasharray="1.5 1.5"/><rect x="2" y="3" width="10" height="10" fill="#f4e040" stroke="#888" stroke-width=".6"/><path d="M9 9l11 11-4 .5 2.5 3.5-2 1.5-2.5-3.5-3 2.5z" fill="#fff" stroke="#222" stroke-width=".9"/></svg><svg class="ic" style="left:47px;top:177px;width:9px;height:5px" viewBox="0 0 9 5"><path d="M0 0h9L4.5 5z" fill="#444"/></svg><svg class="ic" style="left:63px;top:167px;width:24px;height:24px" viewBox="0 0 24 24"><rect x="2" y="3" width="14" height="13" fill="#ddd" stroke="#555"/><rect x="4" y="5" width="10" height="3" fill="#fff" stroke="#777" stroke-width=".7"/><rect x="4" y="10" width="10" height="3" fill="#fff" stroke="#777" stroke-width=".7"/><rect x="8" y="11" width="13" height="12" fill="#f4e040" stroke="#b8a030"/></svg><svg class="ic" style="left:93px;top:177px;width:9px;height:5px" viewBox="0 0 9 5"><path d="M0 0h9L4.5 5z" fill="#444"/></svg><svg class="ic" style="left:108px;top:167px;width:24px;height:24px" viewBox="0 0 24 24"><rect x="2" y="2" width="13" height="13" fill="#f4e040" stroke="#c8a820"/><rect x="7" y="7" width="13" height="13" fill="#f4e040" stroke="#c8a820"/><rect x="13" y="14" width="10" height="10" rx="2" fill="#d02020"/><circle cx="18" cy="19" r="3" fill="none" stroke="#fff" stroke-width="1.3"/><path d="M16 21l4-4" stroke="#fff" stroke-width="1.2"/></svg><svg class="ic" style="left:137px;top:177px;width:9px;height:5px" viewBox="0 0 9 5"><path d="M0 0h9L4.5 5z" fill="#444"/></svg><svg class="ic" style="left:154px;top:167px;width:24px;height:24px" viewBox="0 0 24 24"><rect x="2" y="2" width="15" height="15" fill="#f4e040" stroke="#b8a030"/><path d="M18 24l-3-6a3 3 0 116 0z" fill="#4a7ab0"/><circle cx="18" cy="17" r="1.2" fill="#fff"/></svg><svg class="ic" style="left:182px;top:177px;width:9px;height:5px" viewBox="0 0 9 5"><path d="M0 0h9L4.5 5z" fill="#444"/></svg><div class="grip" style="left:201px;top:170px"></div><svg class="ic" style="left:213px;top:167px;width:24px;height:24px" viewBox="0 0 24 24"><rect x="2" y="2" width="20" height="20" fill="none" stroke="#d2d2ce" stroke-width="1.3"/><path d="M2 12h20M8 12v10M14 12v10M2 2l10 10M12 2L2 12" stroke="#d2d2ce"/><path d="M10 20l9-16 3 2-9 16z" fill="#e0e0dc"/></svg><svg class="ic" style="left:246px;top:167px;width:24px;height:24px" viewBox="0 0 24 24"><rect x="2" y="2" width="20" height="20" fill="#dedcd8" stroke="#d2d2ce" stroke-width="1.3"/><path d="M2 14h20M8 14v8M14 14v8" stroke="#d2d2ce"/><path d="M9 8l11 11-4 .5 2.5 3.5-2 1.5" fill="#eee" stroke="#d2d2ce"/></svg><svg class="ic" style="left:276px;top:177px;width:9px;height:5px" viewBox="0 0 9 5"><path d="M0 0h9L4.5 5z" fill="#bbb"/></svg><svg class="ic" style="left:293px;top:167px;width:24px;height:24px" viewBox="0 0 24 24"><rect x="2" y="3" width="7" height="7" fill="none" stroke="#d2d2ce"/><rect x="2" y="14" width="7" height="7" fill="none" stroke="#d2d2ce"/><path d="M2 3l7 7M9 3l-7 7M2 14l7 7M9 14l-7 7" stroke="#d2d2ce"/><path d="M17 2l5 5-5 5-5-5z" fill="none" stroke="#d2d2ce"/><text x="12" y="22" font-size="11" fill="#d2d2ce" font-family="Liberation Serif">ε</text></svg><svg class="ic" style="left:324px;top:167px;width:24px;height:24px" viewBox="0 0 24 24"><path d="M2 2l20 0-3 20-14 0zM2 2l10 18 10-18" stroke="#d2d2ce" fill="none" stroke-width="1.2"/></svg><svg class="ic" style="left:354px;top:177px;width:9px;height:5px" viewBox="0 0 9 5"><path d="M0 0h9L4.5 5z" fill="#bbb"/></svg><div class="grip" style="left:373px;top:170px"></div><svg class="ic" style="left:386px;top:167px;width:24px;height:24px" viewBox="0 0 24 24"><path d="M1 3l7 0 6 8 8-1" stroke="#2a4a8a" fill="none"/><text x="1" y="19" font-size="15" font-weight="bold" fill="#4a7ac0" font-family="Liberation Sans">A</text><path d="M18 1l1.5 3h3l-2.5 2 1 3-3-2-3 2 1-3-2.5-2h3z" fill="#4a7ac0"/><rect x="13" y="14" width="9" height="9" rx="1.5" fill="#d4a000"/><path d="M17.5 15.5v6M14.5 18.5h6M15.3 16.3l4.4 4.4M19.7 16.3l-4.4 4.4" stroke="#fff" stroke-width="1.1"/></svg><svg class="ic" style="left:415px;top:177px;width:9px;height:5px" viewBox="0 0 9 5"><path d="M0 0h9L4.5 5z" fill="#444"/></svg><svg class="ic" style="left:430px;top:167px;width:24px;height:24px" viewBox="0 0 24 24"><rect x="2" y="2" width="16" height="18" fill="none" stroke="#333" stroke-dasharray="1.5 2"/><path d="M6 4l13 13-5 .5 3 4.5-2.5 1.5-3-4.5-3.5 3z" fill="#fff" stroke="#222" stroke-width="1"/></svg><svg class="ic" style="left:463px;top:167px;width:24px;height:24px" viewBox="0 0 24 24"><path d="M3 2l15 -1 -8 19-7-3z" fill="none" stroke="#222" stroke-width="1.2"/><circle cx="3" cy="2" r="2" fill="#2a6ad0"/><circle cx="18" cy="1.5" r="2" fill="#2a6ad0"/><circle cx="10" cy="20" r="2" fill="#2a6ad0"/><circle cx="3" cy="17" r="2" fill="#2a6ad0"/><rect x="14" y="14" width="9" height="9" rx="1.5" fill="#3a8a4a"/><path d="M18.5 15.5v6M15.5 18.5h6" stroke="#fff" stroke-width="1.6"/></svg><svg class="ic" style="left:497px;top:167px;width:24px;height:24px" viewBox="0 0 24 24"><path d="M18 2H6L2 10l8 10" fill="none" stroke="#222" stroke-width="1.2"/><circle cx="18" cy="2" r="2" fill="#2a6ad0"/><circle cx="6" cy="2" r="2" fill="#2a6ad0"/><circle cx="2" cy="10" r="2" fill="#2a6ad0"/><circle cx="9" cy="19" r="2" fill="#2a6ad0"/><rect x="14" y="14" width="9" height="9" rx="1.5" fill="#3a8a4a"/><path d="M18.5 15.5v6M15.5 18.5h6" stroke="#fff" stroke-width="1.6"/></svg><svg class="ic" style="left:531px;top:167px;width:24px;height:24px" viewBox="0 0 24 24"><path d="M11 1l3 7 7 .5-5.5 4.5 2 7-6.5-4-6.5 4 2-7L1 8.5 8 8z" fill="#f8e080" stroke="#e0a040"/><rect x="14" y="14" width="9" height="9" rx="1.5" fill="#3a8a4a"/><path d="M18.5 15.5v6M15.5 18.5h6" stroke="#fff" stroke-width="1.6"/></svg><svg class="ic" style="left:564px;top:167px;width:24px;height:24px" viewBox="0 0 24 24"><text x="4" y="16" font-size="17" fill="#222" font-family="Liberation Serif">T</text><rect x="1" y="16" width="3" height="3" fill="none" stroke="#555"/><rect x="14" y="14" width="9" height="9" rx="1.5" fill="#3a8a4a"/><path d="M18.5 15.5v6M15.5 18.5h6" stroke="#fff" stroke-width="1.6"/></svg><svg class="ic" style="left:597px;top:167px;width:24px;height:24px" viewBox="0 0 24 24"><text x="1" y="13" font-size="8" fill="#333" font-family="Liberation Sans">a</text><text x="8" y="8" font-size="8" fill="#333" font-family="Liberation Sans">b</text><text x="15" y="7" font-size="8" fill="#333" font-family="Liberation Sans">c</text><rect x="2" y="16" width="3" height="3" fill="none" stroke="#555"/><rect x="9" y="12" width="3" height="3" fill="none" stroke="#555"/><rect x="14" y="14" width="9" height="9" rx="1.5" fill="#3a8a4a"/><path d="M18.5 15.5v6M15.5 18.5h6" stroke="#fff" stroke-width="1.6"/></svg><div class="sep" style="left:627px;top:170px;height:20px"></div><svg class="ic" style="left:635px;top:167px;width:24px;height:24px" viewBox="0 0 24 24"><rect x="1" y="1" width="22" height="17" fill="#eef2f6" stroke="#667"/><path d="M4 18l-2 6 7-6z" fill="#eef2f6" stroke="#667"/><text x="6" y="14" font-size="14" fill="#222" font-family="Liberation Serif">T</text></svg><svg class="ic" style="left:664px;top:177px;width:9px;height:5px" viewBox="0 0 9 5"><path d="M0 0h9L4.5 5z" fill="#444"/></svg><div class="grip" style="left:684px;top:170px"></div><svg class="ic" style="left:698px;top:167px;width:24px;height:24px" viewBox="0 0 24 24"><rect x="1" y="5" width="20" height="9" rx="2" fill="#9ab8e0" stroke="#2a4a8a" stroke-width="1.3"/><rect x="6" y="3" width="5" height="14" fill="#5b8ac6" stroke="#2a4a8a"/></svg><svg class="ic" style="left:730px;top:167px;width:24px;height:24px" viewBox="0 0 24 24"><circle cx="12" cy="12" r="8" fill="none" stroke="#d8d8d8" stroke-width="1.5"/><path d="M12 1v22M1 12h22" stroke="#d2d2ce" stroke-width="1.5"/></svg><div class="sep" style="left:761px;top:170px;height:20px"></div><svg class="ic" style="left:771px;top:167px;width:24px;height:24px" viewBox="0 0 24 24"><rect x="2" y="2" width="14" height="14" fill="#f4f4f4" stroke="#444"/><circle cx="12" cy="12" r="6" fill="none" stroke="#4a7ac0" stroke-width="1.6"/><path d="M12 4v18M4 12h18" stroke="#4a7ac0" stroke-width="1.6"/></svg><svg class="ic" style="left:790px;top:187px;width:9px;height:5px" viewBox="0 0 9 5"><path d="M0 0h9L4.5 5z" fill="#333"/></svg><svg class="ic" style="left:804px;top:167px;width:24px;height:24px" viewBox="0 0 24 24"><circle cx="10" cy="10" r="7" fill="none" stroke="#e0e0e0" stroke-width="1.4"/><path d="M10 1v18M1 10h18" stroke="#d2d2ce" stroke-width="1.4"/><rect x="13" y="13" width="9" height="9" rx="1.5" fill="#d4d4d4"/></svg><svg class="ic" style="left:836px;top:167px;width:24px;height:24px" viewBox="0 0 24 24"><path d="M1 7c0-5 7-6 11-5s10 1 10 5-5 4-8 5-13 2-13-5z" fill="#7ab87a" stroke="#3a6a3a" stroke-width=".8"/><rect x="13" y="13" width="9" height="9" rx="1.5" fill="#d4a000"/><path d="M17.5 14.5v6M14.5 17.5h6M15.3 15.3l4.4 4.4M19.7 15.3l-4.4 4.4" stroke="#fff" stroke-width="1.1"/></svg><svg class="ic" style="left:868px;top:167px;width:24px;height:24px" viewBox="0 0 24 24"><rect x="2" y="1" width="4" height="4" fill="none" stroke="#d2d2ce"/><path d="M4 5c0 8 6 10 12 12" stroke="#d2d2ce" stroke-dasharray="2 2" fill="none"/><path d="M14 14l6 6" stroke="#d8d4cc" stroke-width="3"/></svg><div class="sep" style="left:901px;top:170px;height:20px"></div><svg class="ic" style="left:908px;top:167px;width:24px;height:24px" viewBox="0 0 24 24"><circle cx="12" cy="12" r="10" fill="#4a7ac0" stroke="#2a4a8a"/><text x="9" y="18" font-size="14" font-style="italic" font-weight="bold" fill="#fff" font-family="Liberation Serif">i</text></svg><svg class="ic" style="left:941px;top:167px;width:24px;height:24px" viewBox="0 0 24 24"><path d="M3 3a5 5 0 006 6l12 12-2 2L7 11a5 5 0 01-6-6l3 2 2-2z" fill="#fff" stroke="#333" stroke-width="1.2"/><path d="M11 12l9 9" stroke="#f0d040" stroke-width="3"/></svg>
<div style="position:absolute;left:0;top:197px;width:1920px;height:1px;background:#c6c6c6"></div>
<div style="position:absolute;left:0;top:198px;width:300px;height:812px;background:#f0f0f0"></div><div class="t" id="t14" style="left:4px;top:202.3px;font-size:12px;color:#000;transform:scaleX(0.9722);width:36.00px;clip-path:inset(-5px -1px -5px -2px);--w:35;">ブラウザ</div><div class="dbtn" style="left:267px;top:203px"><svg viewBox="0 0 11 11" style="width:11px;height:11px;position:absolute;left:0;top:0"><rect x="3.5" y="2.5" width="4.5" height="4.5" fill="none" stroke="#555" stroke-width="1"/><rect x="2.5" y="4.5" width="4" height="4" fill="#f0f0f0" stroke="#555" stroke-width="1"/></svg></div><div class="dbtn" style="left:281px;top:203px"><svg viewBox="0 0 11 11" style="width:11px;height:11px;position:absolute;left:0;top:0"><path d="M2.5 2.5l6 6M8.5 2.5l-6 6" stroke="#555" stroke-width="1.8"/></svg></div><svg class="ic" style="left:8px;top:225px;width:16px;height:16px" viewBox="0 0 24 24"><rect x="2" y="2" width="12" height="12" fill="none" stroke="#555"/><circle cx="15" cy="15" r="3.5" fill="#5aaa5a"/></svg><svg class="ic" style="left:33px;top:225px;width:16px;height:16px" viewBox="0 0 24 24"><path d="M4 10a8 8 0 0114-4l2-2v7h-7l3-3a5 5 0 00-9 2z" fill="#3a80d0"/><path d="M20 14a8 8 0 01-14 4l-2 2v-7h7l-3 3a5 5 0 009-2z" fill="#3a80d0"/></svg><svg class="ic" style="left:58px;top:225px;width:16px;height:16px" viewBox="0 0 24 24"><path d="M2 3h20l-8 9v10l-4-2v-8z" fill="#f0d040" stroke="#777" stroke-width=".8"/></svg><svg class="ic" style="left:83px;top:225px;width:16px;height:16px" viewBox="0 0 24 24"><rect x="3" y="6" width="9" height="14" fill="none" stroke="#888" stroke-dasharray="2 1"/><path d="M14 22V6l-4 4M14 6l4 4" stroke="#4a7ac0" stroke-width="2.5" fill="none"/><rect x="4" y="9" width="3" height="3" fill="#e08020"/><rect x="4" y="15" width="3" height="3" fill="#e08020"/></svg><svg class="ic" style="left:108px;top:225px;width:16px;height:16px" viewBox="0 0 24 24"><circle cx="12" cy="12" r="10" fill="#6a9ad6"/><text x="9" y="18" font-size="14" font-style="italic" font-weight="bold" fill="#fff" font-family="Liberation Serif">i</text></svg><div class="box" style="left:1px;top:249px;width:293px;height:91px"></div><div style="position:absolute;left:2px;top:286px;width:200px;height:18px;background:#ececec"></div><div style="position:absolute;left:279px;top:250px;width:13px;height:88px;background:#f8f8f8;border-left:1px solid #e0e0e0"></div><div style="position:absolute;left:280px;top:264px;width:12px;height:29px;background:#dadada"></div><svg class="ic" style="left:282px;top:254px;width:8px;height:5px" viewBox="0 0 8 5"><path d="M0 5h8L4 0z" fill="#555"/></svg><svg class="ic" style="left:282px;top:329px;width:8px;height:5px" viewBox="0 0 8 5"><path d="M0 0h8L4 5z" fill="#555"/></svg><svg class="ic" style="left:36px;top:251px;width:16px;height:16px" viewBox="0 0 16 16"><rect x="1" y="1" width="3.4" height="3.4" fill="#5b8ac6"/><rect x="1" y="6" width="3.4" height="3.4" fill="#5b8ac6"/><rect x="1" y="11" width="3.4" height="3.4" fill="#5b8ac6"/><rect x="6" y="1" width="3.4" height="3.4" fill="#5b8ac6"/><rect x="6" y="6" width="3.4" height="3.4" fill="#5b8ac6"/><rect x="6" y="11" width="3.4" height="3.4" fill="#5b8ac6"/><rect x="11" y="1" width="3.4" height="3.4" fill="#5b8ac6"/><rect x="11" y="6" width="3.4" height="3.4" fill="#5b8ac6"/><rect x="11" y="11" width="3.4" height="3.4" fill="#5b8ac6"/></svg><div class="t" id="t15" style="left:58px;top:253.3px;font-size:11.5px;color:#000;transform:scaleX(1.0043);width:115.50px;clip-path:inset(-5px -1px -5px -2px);--w:116;">Mapzen Global Terrain</div><svg class="ic" style="left:36px;top:269px;width:16px;height:16px" viewBox="0 0 16 16"><rect x="1" y="1" width="3.4" height="3.4" fill="#5b8ac6"/><rect x="1" y="6" width="3.4" height="3.4" fill="#5b8ac6"/><rect x="1" y="11" width="3.4" height="3.4" fill="#5b8ac6"/><rect x="6" y="1" width="3.4" height="3.4" fill="#5b8ac6"/><rect x="6" y="6" width="3.4" height="3.4" fill="#5b8ac6"/><rect x="6" y="11" width="3.4" height="3.4" fill="#5b8ac6"/><rect x="11" y="1" width="3.4" height="3.4" fill="#5b8ac6"/><rect x="11" y="6" width="3.4" height="3.4" fill="#5b8ac6"/><rect x="11" y="11" width="3.4" height="3.4" fill="#5b8ac6"/></svg><div class="t" id="t16" style="left:58px;top:271.3px;font-size:11.5px;color:#000;transform:scaleX(1.0100);width:81.19px;clip-path:inset(-5px -1px -5px -2px);--w:82;">OpenStreetMap</div><svg class="ic" style="left:36px;top:287px;width:16px;height:16px" viewBox="0 0 16 16"><rect x="1" y="1" width="3.4" height="3.4" fill="#5b8ac6"/><rect x="1" y="6" width="3.4" height="3.4" fill="#5b8ac6"/><rect x="1" y="11" width="3.4" height="3.4" fill="#5b8ac6"/><rect x="6" y="1" width="3.4" height="3.4" fill="#5b8ac6"/><rect x="6" y="6" width="3.4" height="3.4" fill="#5b8ac6"/><rect x="6" y="11" width="3.4" height="3.4" fill="#5b8ac6"/><rect x="11" y="1" width="3.4" height="3.4" fill="#5b8ac6"/><rect x="11" y="6" width="3.4" height="3.4" fill="#5b8ac6"/><rect x="11" y="11" width="3.4" height="3.4" fill="#5b8ac6"/></svg><div class="t" id="t17" style="left:58px;top:289.3px;font-size:11.5px;color:#000;transform:scaleX(0.9981);width:84.16px;clip-path:inset(-5px -1px -5px -2px);--w:84;">PLATEAU-Ortho</div><svg class="ic" style="left:36px;top:305px;width:16px;height:16px" viewBox="0 0 16 16"><rect x="1" y="1" width="3.4" height="3.4" fill="#5b8ac6"/><rect x="1" y="6" width="3.4" height="3.4" fill="#5b8ac6"/><rect x="1" y="11" width="3.4" height="3.4" fill="#5b8ac6"/><rect x="6" y="1" width="3.4" height="3.4" fill="#5b8ac6"/><rect x="6" y="6" width="3.4" height="3.4" fill="#5b8ac6"/><rect x="6" y="11" width="3.4" height="3.4" fill="#5b8ac6"/><rect x="11" y="1" width="3.4" height="3.4" fill="#5b8ac6"/><rect x="11" y="6" width="3.4" height="3.4" fill="#5b8ac6"/><rect x="11" y="11" width="3.4" height="3.4" fill="#5b8ac6"/></svg><div class="t" id="t18" style="left:58px;top:307.3px;font-size:11.5px;color:#000;transform:scaleX(1.2870);width:86.25px;clip-path:inset(-5px -1px -5px -2px);--w:111;">地理院タイル標準地図</div><svg class="ic" style="left:20px;top:323px;width:16px;height:16px" viewBox="0 0 16 16"><circle cx="8" cy="8" r="7" fill="#5b8ac6" stroke="#2a4a7a"/><path d="M1 8h14M8 1v14M3 4h10M3 12h10" stroke="#dde" stroke-width=".9"/></svg><div class="t" id="t19" style="left:42px;top:325.3px;font-size:11.5px;color:#000;transform:scaleX(0.8941);width:26.84px;clip-path:inset(-5px -1px -5px -2px);--w:24;">WCS</div><div style="position:absolute;left:140px;top:342px;width:17px;height:1px;border-top:1px dotted #aaa"></div><div class="t" id="t20" style="left:4px;top:349.3px;font-size:12px;color:#000;transform:scaleX(1.0000);width:27.00px;clip-path:inset(-5px -1px -5px -2px);--w:27;">レイヤ</div><div class="dbtn" style="left:267px;top:350px"><svg viewBox="0 0 11 11" style="width:11px;height:11px;position:absolute;left:0;top:0"><rect x="3.5" y="2.5" width="4.5" height="4.5" fill="none" stroke="#555" stroke-width="1"/><rect x="2.5" y="4.5" width="4" height="4" fill="#f0f0f0" stroke="#555" stroke-width="1"/></svg></div><div class="dbtn" style="left:281px;top:350px"><svg viewBox="0 0 11 11" style="width:11px;height:11px;position:absolute;left:0;top:0"><path d="M2.5 2.5l6 6M8.5 2.5l-6 6" stroke="#555" stroke-width="1.8"/></svg></div><svg class="ic" style="left:8px;top:372px;width:16px;height:16px" viewBox="0 0 24 24"><path d="M2 14l10-4 4 6-8 4z" fill="#e03030"/><path d="M5 19l10-4" stroke="#f0c040" stroke-width="3"/><path d="M14 10l8-8" stroke="#4a7ac0" stroke-width="3"/></svg><svg class="ic" style="left:33px;top:372px;width:16px;height:16px" viewBox="0 0 24 24"><rect x="4" y="4" width="12" height="16" fill="#fff" stroke="#555"/><path d="M8 2h8v2" stroke="#555" fill="none"/><circle cx="17" cy="18" r="4" fill="#5aaa5a"/></svg><svg class="ic" style="left:58px;top:372px;width:16px;height:16px" viewBox="0 0 24 24"><path d="M1 11c6-8 16-8 22 0-6 8-16 8-22 0z" fill="#ddd" stroke="#888"/><circle cx="12" cy="11" r="4" fill="#4a7ac0"/><path d="M18 20l3 3 3-3z" fill="#333"/></svg><svg class="ic" style="left:83px;top:372px;width:16px;height:16px" viewBox="0 0 24 24"><path d="M2 3h20l-8 9v10l-4-2v-8z" fill="#f0d040" stroke="#777" stroke-width=".8"/><path d="M17 20l3 3 3-3z" fill="#333"/></svg><svg class="ic" style="left:108px;top:372px;width:16px;height:16px" viewBox="0 0 24 24"><text x="2" y="15" font-size="15" fill="#d2d2ce" font-family="Liberation Serif">ε</text><rect x="12" y="14" width="9" height="8" fill="#eee" stroke="#d2d2ce"/></svg><svg class="ic" style="left:128px;top:378px;width:8px;height:5px" viewBox="0 0 8 5"><path d="M0 0h8L4 5z" fill="#bbb"/></svg><svg class="ic" style="left:145px;top:372px;width:16px;height:16px" viewBox="0 0 24 24"><rect x="3" y="4" width="9" height="14" fill="none" stroke="#888" stroke-dasharray="2 1"/><path d="M14 2v16l-4-4M14 18l4-4" stroke="#4a7ac0" stroke-width="2.5" fill="none"/><rect x="4" y="7" width="3" height="3" fill="#e08020"/><rect x="4" y="13" width="3" height="3" fill="#e08020"/></svg><svg class="ic" style="left:170px;top:372px;width:16px;height:16px" viewBox="0 0 24 24"><rect x="3" y="6" width="9" height="14" fill="none" stroke="#888" stroke-dasharray="2 1"/><path d="M14 22V6l-4 4M14 6l4 4" stroke="#4a7ac0" stroke-width="2.5" fill="none"/><rect x="4" y="9" width="3" height="3" fill="#e08020"/><rect x="4" y="15" width="3" height="3" fill="#e08020"/></svg><svg class="ic" style="left:195px;top:372px;width:16px;height:16px" viewBox="0 0 24 24"><rect x="2" y="2" width="14" height="14" fill="none" stroke="#555"/><rect x="12" y="14" width="9" height="6" rx="2" fill="#d02020"/><path d="M14 17h5" stroke="#fff" stroke-width="1.5"/></svg><div class="box" style="left:1px;top:396px;width:293px;height:615px"></div><div class="cb" style="left:24px;top:399px"><svg viewBox="0 0 13 13" style="position:absolute;left:0;top:0;width:13px;height:13px"><path d="M3 6.5l2.5 3 4.5-6.5" stroke="#000" stroke-width="1.6" fill="none"/></svg></div><div style="position:absolute;left:44px;top:398px;width:15px;height:15px;background:#e0a4a6;border:1px solid #b08080;box-sizing:border-box"></div><div class="t" id="t21" style="left:66px;top:400.3px;font-size:11.5px;color:#000;transform:scaleX(0.9974);width:20.45px;clip-path:inset(-5px -1px -5px -2px);--w:20.4;"><u>tiles</u></div><svg class="ic" style="left:7px;top:422px;width:8px;height:5px" viewBox="0 0 8 5"><path d="M0 0h8L4 5z" fill="#555"/></svg><div class="cb" style="left:24px;top:417px"><svg viewBox="0 0 13 13" style="position:absolute;left:0;top:0;width:13px;height:13px"><path d="M3 6.5l2.5 3 4.5-6.5" stroke="#000" stroke-width="1.6" fill="none"/></svg></div><svg class="ic" style="left:45px;top:417px;width:14px;height:14px" viewBox="0 0 14 14"><rect x="0" y="0" width="14" height="14" fill="#dde4ee"/><rect x="0" y="0" width="4" height="4" fill="#1a2a44"/><rect x="8" y="0" width="4" height="4" fill="#3a5a8a"/><rect x="4" y="4" width="4" height="4" fill="#1a2a44"/><rect x="10" y="4" width="4" height="4" fill="#8aa0c0"/><rect x="0" y="8" width="4" height="6" fill="#3a5a8a"/><rect x="6" y="9" width="5" height="5" fill="#1a2a44"/></svg><div class="t" id="t22" style="left:66px;top:418.3px;font-size:11.5px;color:#000;transform:scaleX(1.0148);width:84.16px;clip-path:inset(-5px -1px -5px -2px);--w:85.4;">PLATEAU-Ortho</div><svg class="ic" style="left:7px;top:440px;width:8px;height:5px" viewBox="0 0 8 5"><path d="M0 0h8L4 5z" fill="#555"/></svg><div class="cb" style="left:24px;top:435px"><svg viewBox="0 0 13 13" style="position:absolute;left:0;top:0;width:13px;height:13px"><path d="M3 6.5l2.5 3 4.5-6.5" stroke="#000" stroke-width="1.6" fill="none"/></svg></div><svg class="ic" style="left:45px;top:435px;width:14px;height:14px" viewBox="0 0 14 14"><rect x="0" y="0" width="14" height="14" fill="#dde4ee"/><rect x="0" y="0" width="4" height="4" fill="#1a2a44"/><rect x="8" y="0" width="4" height="4" fill="#3a5a8a"/><rect x="4" y="4" width="4" height="4" fill="#1a2a44"/><rect x="10" y="4" width="4" height="4" fill="#8aa0c0"/><rect x="0" y="8" width="4" height="6" fill="#3a5a8a"/><rect x="6" y="9" width="5" height="5" fill="#1a2a44"/></svg><div class="t" id="t23" style="left:66px;top:436.3px;font-size:11.5px;color:#000;transform:scaleX(1.0297);width:81.19px;clip-path:inset(-5px -1px -5px -2px);--w:83.6;">OpenStreetMap</div><svg style="position:absolute;left:300px;top:199px;width:1181px;height:812px" viewBox="300 199 1181 812"><defs><filter id="halo" x="-5%" y="-20%" width="110%" height="140%"><feMorphology operator="dilate" radius="1.2" in="SourceAlpha" result="d"/><feFlood flood-color="#fff"/><feComposite in2="d" operator="in" result="h"/><feMerge><feMergeNode in="h"/><feMergeNode in="SourceGraphic"/></feMerge></filter><filter id="phalo" x="-5%" y="-20%" width="110%" height="140%"><feMorphology operator="dilate" radius="1.2" in="SourceAlpha" result="d"/><feFlood flood-color="#e0a8a8" flood-opacity=".8"/><feComposite in2="d" operator="in" result="h"/><feMerge><feMergeNode in="h"/><feMergeNode in="SourceGraphic"/></feMerge></filter></defs><rect x="300" y="199" width="1181" height="812" fill="#b9907f"/><defs><pattern id="purb" width="60" height="60" patternUnits="userSpaceOnUse" patternTransform="scale(3.84)"><path d="M19.4,9.1 L8.2,3.8 L1.7,2.0 L-4.5,0.2" transform="translate(-60,-60)" fill="none" stroke="#b07080" stroke-opacity="0.4" stroke-width="0.86"/><path d="M19.4,9.1 L8.2,3.8 L1.7,2.0 L-4.5,0.2" transform="translate(-60,0)" fill="none" stroke="#b07080" stroke-opacity="0.4" stroke-width="0.64"/><path d="M19.4,9.1 L8.2,3.8 L1.7,2.0 L-4.5,0.2" transform="translate(-60,60)" fill="none" stroke="#b07080" stroke-opacity="0.4" stroke-width="0.65"/><path d="M19.4,9.1 L8.2,3.8 L1.7,2.0 L-4.5,0.2" transform="translate(0,-60)" fill="none" stroke="#b07080" stroke-opacity="0.4" stroke-width="0.85"/><path d="M19.4,9.1 L8.2,3.8 L1.7,2.0 L-4.5,0.2" transform="translate(0,0)" fill="none" stroke="#b07080" stroke-opacity="0.4" stroke-width="1.10"/><path d="M19.4,9.1 L8.2,3.8 L1.7,2.0 L-4.5,0.2" transform="translate(0,60)" fill="none" stroke="#b07080" stroke-opacity="0.4" stroke-width="0.67"/><path d="M19.4,9.1 L8.2,3.8 L1.7,2.0 L-4.5,0.2" transform="translate(60,-60)" fill="none" stroke="#b07080" stroke-opacity="0.4" stroke-width="0.73"/><path d="M19.4,9.1 L8.2,3.8 L1.7,2.0 L-4.5,0.2" transform="translate(60,0)" fill="none" stroke="#b07080" stroke-opacity="0.4" stroke-width="0.98"/><path d="M19.4,9.1 L8.2,3.8 L1.7,2.0 L-4.5,0.2" transform="translate(60,60)" fill="none" stroke="#b07080" stroke-opacity="0.4" stroke-width="1.17"/><path d="M34.6,23.8 L47.2,13.4 L51.7,7.1 L53.3,-2.5" transform="translate(-60,-60)" fill="none" stroke="#b07080" stroke-opacity="0.4" stroke-width="1.09"/><path d="M34.6,23.8 L47.2,13.4 L51.7,7.1 L53.3,-2.5" transform="translate(-60,0)" fill="none" stroke="#b07080" stroke-opacity="0.4" stroke-width="0.71"/><path d="M34.6,23.8 L47.2,13.4 L51.7,7.1 L53.3,-2.5" transform="translate(-60,60)" fill="none" stroke="#b07080" stroke-opacity="0.4" stroke-width="0.95"/><path d="M34.6,23.8 L47.2,13.4 L51.7,7.1 L53.3,-2.5" transform="translate(0,-60)" fill="none" stroke="#b07080" stroke-opacity="0.4" stroke-width="0.98"/><path d="M34.6,23.8 L47.2,13.4 L51.7,7.1 L53.3,-2.5" transform="translate(0,0)" fill="none" stroke="#b07080" stroke-opacity="0.4" stroke-width="0.82"/><path d="M34.6,23.8 L47.2,13.4 L51.7,7.1 L53.3,-2.5" transform="translate(0,60)" fill="none" stroke="#b07080" stroke-opacity="0.4" stroke-width="0.93"/><path d="M34.6,23.8 L47.2,13.4 L51.7,7.1 L53.3,-2.5" transform="translate(60,-60)" fill="none" stroke="#b07080" stroke-opacity="0.4" stroke-width="0.64"/><path d="M34.6,23.8 L47.2,13.4 L51.7,7.1 L53.3,-2.5" transform="translate(60,0)" fill="none" stroke="#b07080" stroke-opacity="0.4" stroke-width="0.64"/><path d="M34.6,23.8 L47.2,13.4 L51.7,7.1 L53.3,-2.5" transform="translate(60,60)" fill="none" stroke="#b07080" stroke-opacity="0.4" stroke-width="0.72"/><path d="M40.8,25.7 L35.3,35.7 L31.2,50.7 L26.9,58.5" transform="translate(-60,-60)" fill="none" stroke="#b07080" stroke-opacity="0.4" stroke-width="0.94"/><path d="M40.8,25.7 L35.3,35.7 L31.2,50.7 L26.9,58.5" transform="translate(-60,0)" fill="none" stroke="#b07080" stroke-opacity="0.4" stroke-width="0.92"/><path d="M40.8,25.7 L35.3,35.7 L31.2,50.7 L26.9,58.5" transform="translate(-60,60)" fill="none" stroke="#b07080" stroke-opacity="0.4" stroke-width="1.13"/><path d="M40.8,25.7 L35.3,35.7 L31.2,50.7 L26.9,58.5" transform="translate(0,-60)" fill="none" stroke="#b07080" stroke-opacity="0.4" stroke-width="1.04"/><path d="M40.8,25.7 L35.3,35.7 L31.2,50.7 L26.9,58.5" transform="translate(0,0)" fill="none" stroke="#b07080" stroke-opacity="0.4" stroke-width="0.77"/><path d="M40.8,25.7 L35.3,35.7 L31.2,50.7 L26.9,58.5" transform="translate(0,60)" fill="none" stroke="#b07080" stroke-opacity="0.4" stroke-width="1.19"/><path d="M40.8,25.7 L35.3,35.7 L31.2,50.7 L26.9,58.5" transform="translate(60,-60)" fill="none" stroke="#b07080" stroke-opacity="0.4" stroke-width="0.67"/><path d="M40.8,25.7 L35.3,35.7 L31.2,50.7 L26.9,58.5" transform="translate(60,0)" fill="none" stroke="#b07080" stroke-opacity="0.4" stroke-width="0.85"/><path d="M40.8,25.7 L35.3,35.7 L31.2,50.7 L26.9,58.5" transform="translate(60,60)" fill="none" stroke="#b07080" stroke-opacity="0.4" stroke-width="1.05"/><path d="M9.1,29.3 L22.8,35.9 L37.0,44.3 L50.6,48.7" transform="translate(-60,-60)" fill="none" stroke="#b07080" stroke-opacity="0.4" stroke-width="0.96"/><path d="M9.1,29.3 L22.8,35.9 L37.0,44.3 L50.6,48.7" transform="translate(-60,0)" fill="none" stroke="#b07080" stroke-opacity="0.4" stroke-width="0.95"/><path d="M9.1,29.3 L22.8,35.9 L37.0,44.3 L50.6,48.7" transform="translate(-60,60)" fill="none" stroke="#b07080" stroke-opacity="0.4" stroke-width="0.87"/><path d="M9.1,29.3 L22.8,35.9 L37.0,44.3 L50.6,48.7" transform="translate(0,-60)" fill="none" stroke="#b07080" stroke-opacity="0.4" stroke-width="1.10"/><path d="M9.1,29.3 L22.8,35.9 L37.0,44.3 L50.6,48.7" transform="translate(0,0)" fill="none" stroke="#b07080" stroke-opacity="0.4" stroke-width="1.17"/><path d="M9.1,29.3 L22.8,35.9 L37.0,44.3 L50.6,48.7" transform="translate(0,60)" fill="none" stroke="#b07080" stroke-opacity="0.4" stroke-width="0.88"/><path d="M9.1,29.3 L22.8,35.9 L37.0,44.3 L50.6,48.7" transform="translate(60,-60)" fill="none" stroke="#b07080" stroke-opacity="0.4" stroke-width="1.00"/><path d="M9.1,29.3 L22.8,35.9 L37.0,44.3 L50.6,48.7" transform="translate(60,0)" fill="none" stroke="#b07080" stroke-opacity="0.4" stroke-width="0.64"/><path d="M9.1,29.3 L22.8,35.9 L37.0,44.3 L50.6,48.7" transform="translate(60,60)" fill="none" stroke="#b07080" stroke-opacity="0.4" stroke-width="1.02"/><path d="M38.8,59.6 L40.9,49.2 L43.3,43.4 L46.0,35.8" transform="translate(-60,-60)" fill="none" stroke="#b07080" stroke-opacity="0.4" stroke-width="0.67"/><path d="M38.8,59.6 L40.9,49.2 L43.3,43.4 L46.0,35.8" transform="translate(-60,0)" fill="none" stroke="#b07080" stroke-opacity="0.4" stroke-width="0.64"/><path d="M38.8,59.6 L40.9,49.2 L43.3,43.4 L46.0,35.8" transform="translate(-60,60)" fill="none" stroke="#b07080" stroke-opacity="0.4" stroke-width="1.06"/><path d="M38.8,59.6 L40.9,49.2 L43.3,43.4 L46.0,35.8" transform="translate(0,-60)" fill="none" stroke="#b07080" stroke-opacity="0.4" stroke-width="0.68"/><path d="M38.8,59.6 L40.9,49.2 L43.3,43.4 L46.0,35.8" transform="translate(0,0)" fill="none" stroke="#b07080" stroke-opacity="0.4" stroke-width="0.75"/><path d="M38.8,59.6 L40.9,49.2 L43.3,43.4 L46.0,35.8" transform="translate(0,60)" fill="none" stroke="#b07080" stroke-opacity="0.4" stroke-width="0.83"/><path d="M38.8,59.6 L40.9,49.2 L43.3,43.4 L46.0,35.8" transform="translate(60,-60)" fill="none" stroke="#b07080" stroke-opacity="0.4" stroke-width="1.12"/><path d="M38.8,59.6 L40.9,49.2 L43.3,43.4 L46.0,35.8" transform="translate(60,0)" fill="none" stroke="#b07080" stroke-opacity="0.4" stroke-width="0.65"/><path d="M38.8,59.6 L40.9,49.2 L43.3,43.4 L46.0,35.8" transform="translate(60,60)" fill="none" stroke="#b07080" stroke-opacity="0.4" stroke-width="0.87"/><path d="M33.0,53.0 L40.1,47.0 L47.3,39.6 L63.8,33.8" transform="translate(-60,-60)" fill="none" stroke="#b07080" stroke-opacity="0.4" stroke-width="0.69"/><path d="M33.0,53.0 L40.1,47.0 L47.3,39.6 L63.8,33.8" transform="translate(-60,0)" fill="none" stroke="#b07080" stroke-opacity="0.4" stroke-width="0.71"/><path d="M33.0,53.0 L40.1,47.0 L47.3,39.6 L63.8,33.8" transform="translate(-60,60)" fill="none" stroke="#b07080" stroke-opacity="0.4" stroke-width="0.74"/><path d="M33.0,53.0 L40.1,47.0 L47.3,39.6 L63.8,33.8" transform="translate(0,-60)" fill="none" stroke="#b07080" stroke-opacity="0.4" stroke-width="0.74"/><path d="M33.0,53.0 L40.1,47.0 L47.3,39.6 L63.8,33.8" transform="translate(0,0)" fill="none" stroke="#b07080" stroke-opacity="0.4" stroke-width="0.89"/><path d="M33.0,53.0 L40.1,47.0 L47.3,39.6 L63.8,33.8" transform="translate(0,60)" fill="none" stroke="#b07080" stroke-opacity="0.4" stroke-width="0.95"/><path d="M33.0,53.0 L40.1,47.0 L47.3,39.6 L63.8,33.8" transform="translate(60,-60)" fill="none" stroke="#b07080" stroke-opacity="0.4" stroke-width="0.76"/><path d="M33.0,53.0 L40.1,47.0 L47.3,39.6 L63.8,33.8" transform="translate(60,0)" fill="none" stroke="#b07080" stroke-opacity="0.4" stroke-width="0.60"/><path d="M33.0,53.0 L40.1,47.0 L47.3,39.6 L63.8,33.8" transform="translate(60,60)" fill="none" stroke="#b07080" stroke-opacity="0.4" stroke-width="0.85"/><path d="M22.2,34.0 L34.3,33.2 L48.4,34.2 L63.4,26.8" transform="translate(-60,-60)" fill="none" stroke="#b07080" stroke-opacity="0.4" stroke-width="1.07"/><path d="M22.2,34.0 L34.3,33.2 L48.4,34.2 L63.4,26.8" transform="translate(-60,0)" fill="none" stroke="#b07080" stroke-opacity="0.4" stroke-width="1.12"/><path d="M22.2,34.0 L34.3,33.2 L48.4,34.2 L63.4,26.8" transform="translate(-60,60)" fill="none" stroke="#b07080" stroke-opacity="0.4" stroke-width="1.08"/><path d="M22.2,34.0 L34.3,33.2 L48.4,34.2 L63.4,26.8" transform="translate(0,-60)" fill="none" stroke="#b07080" stroke-opacity="0.4" stroke-width="0.84"/><path d="M22.2,34.0 L34.3,33.2 L48.4,34.2 L63.4,26.8" transform="translate(0,0)" fill="none" stroke="#b07080" stroke-opacity="0.4" stroke-width="0.84"/><path d="M22.2,34.0 L34.3,33.2 L48.4,34.2 L63.4,26.8" transform="translate(0,60)" fill="none" stroke="#b07080" stroke-opacity="0.4" stroke-width="0.66"/><path d="M22.2,34.0 L34.3,33.2 L48.4,34.2 L63.4,26.8" transform="translate(60,-60)" fill="none" stroke="#b07080" stroke-opacity="0.4" stroke-width="0.98"/><path d="M22.2,34.0 L34.3,33.2 L48.4,34.2 L63.4,26.8" transform="translate(60,0)" fill="none" stroke="#b07080" stroke-opacity="0.4" stroke-width="0.64"/><path d="M22.2,34.0 L34.3,33.2 L48.4,34.2 L63.4,26.8" transform="translate(60,60)" fill="none" stroke="#b07080" stroke-opacity="0.4" stroke-width="0.64"/><path d="M12.5,9.7 L12.4,15.7 L15.1,22.4 L18.4,27.8" transform="translate(-60,-60)" fill="none" stroke="#b07080" stroke-opacity="0.4" stroke-width="1.12"/><path d="M12.5,9.7 L12.4,15.7 L15.1,22.4 L18.4,27.8" transform="translate(-60,0)" fill="none" stroke="#b07080" stroke-opacity="0.4" stroke-width="0.97"/><path d="M12.5,9.7 L12.4,15.7 L15.1,22.4 L18.4,27.8" transform="translate(-60,60)" fill="none" stroke="#b07080" stroke-opacity="0.4" stroke-width="0.69"/><path d="M12.5,9.7 L12.4,15.7 L15.1,22.4 L18.4,27.8" transform="translate(0,-60)" fill="none" stroke="#b07080" stroke-opacity="0.4" stroke-width="0.75"/><path d="M12.5,9.7 L12.4,15.7 L15.1,22.4 L18.4,27.8" transform="translate(0,0)" fill="none" stroke="#b07080" stroke-opacity="0.4" stroke-width="0.81"/><path d="M12.5,9.7 L12.4,15.7 L15.1,22.4 L18.4,27.8" transform="translate(0,60)" fill="none" stroke="#b07080" stroke-opacity="0.4" stroke-width="0.82"/><path d="M12.5,9.7 L12.4,15.7 L15.1,22.4 L18.4,27.8" transform="translate(60,-60)" fill="none" stroke="#b07080" stroke-opacity="0.4" stroke-width="0.67"/><path d="M12.5,9.7 L12.4,15.7 L15.1,22.4 L18.4,27.8" transform="translate(60,0)" fill="none" stroke="#b07080" stroke-opacity="0.4" stroke-width="1.11"/><path d="M12.5,9.7 L12.4,15.7 L15.1,22.4 L18.4,27.8" transform="translate(60,60)" fill="none" stroke="#b07080" stroke-opacity="0.4" stroke-width="1.20"/><path d="M28.0,29.0 L38.1,29.7 L53.6,26.2 L58.7,22.5" transform="translate(-60,-60)" fill="none" stroke="#b07080" stroke-opacity="0.4" stroke-width="1.17"/><path d="M28.0,29.0 L38.1,29.7 L53.6,26.2 L58.7,22.5" transform="translate(-60,0)" fill="none" stroke="#b07080" stroke-opacity="0.4" stroke-width="0.92"/><path d="M28.0,29.0 L38.1,29.7 L53.6,26.2 L58.7,22.5" transform="translate(-60,60)" fill="none" stroke="#b07080" stroke-opacity="0.4" stroke-width="0.69"/><path d="M28.0,29.0 L38.1,29.7 L53.6,26.2 L58.7,22.5" transform="translate(0,-60)" fill="none" stroke="#b07080" stroke-opacity="0.4" stroke-width="0.93"/><path d="M28.0,29.0 L38.1,29.7 L53.6,26.2 L58.7,22.5" transform="translate(0,0)" fill="none" stroke="#b07080" stroke-opacity="0.4" stroke-width="0.62"/><path d="M28.0,29.0 L38.1,29.7 L53.6,26.2 L58.7,22.5" transform="translate(0,60)" fill="none" stroke="#b07080" stroke-opacity="0.4" stroke-width="0.92"/><path d="M28.0,29.0 L38.1,29.7 L53.6,26.2 L58.7,22.5" transform="translate(60,-60)" fill="none" stroke="#b07080" stroke-opacity="0.4" stroke-width="1.19"/><path d="M28.0,29.0 L38.1,29.7 L53.6,26.2 L58.7,22.5" transform="translate(60,0)" fill="none" stroke="#b07080" stroke-opacity="0.4" stroke-width="1.12"/><path d="M28.0,29.0 L38.1,29.7 L53.6,26.2 L58.7,22.5" transform="translate(60,60)" fill="none" stroke="#b07080" stroke-opacity="0.4" stroke-width="1.02"/><path d="M15.7,22.0 L18.1,34.2 L16.7,44.0 L19.7,59.5" transform="translate(-60,-60)" fill="none" stroke="#b07080" stroke-opacity="0.4" stroke-width="1.19"/><path d="M15.7,22.0 L18.1,34.2 L16.7,44.0 L19.7,59.5" transform="translate(-60,0)" fill="none" stroke="#b07080" stroke-opacity="0.4" stroke-width="1.11"/><path d="M15.7,22.0 L18.1,34.2 L16.7,44.0 L19.7,59.5" transform="translate(-60,60)" fill="none" stroke="#b07080" stroke-opacity="0.4" stroke-width="1.08"/><path d="M15.7,22.0 L18.1,34.2 L16.7,44.0 L19.7,59.5" transform="translate(0,-60)" fill="none" stroke="#b07080" stroke-opacity="0.4" stroke-width="1.09"/><path d="M15.7,22.0 L18.1,34.2 L16.7,44.0 L19.7,59.5" transform="translate(0,0)" fill="none" stroke="#b07080" stroke-opacity="0.4" stroke-width="1.04"/><path d="M15.7,22.0 L18.1,34.2 L16.7,44.0 L19.7,59.5" transform="translate(0,60)" fill="none" stroke="#b07080" stroke-opacity="0.4" stroke-width="0.74"/><path d="M15.7,22.0 L18.1,34.2 L16.7,44.0 L19.7,59.5" transform="translate(60,-60)" fill="none" stroke="#b07080" stroke-opacity="0.4" stroke-width="0.91"/><path d="M15.7,22.0 L18.1,34.2 L16.7,44.0 L19.7,59.5" transform="translate(60,0)" fill="none" stroke="#b07080" stroke-opacity="0.4" stroke-width="0.81"/><path d="M15.7,22.0 L18.1,34.2 L16.7,44.0 L19.7,59.5" transform="translate(60,60)" fill="none" stroke="#b07080" stroke-opacity="0.4" stroke-width="0.62"/><path d="M1.7,16.8 L-3.3,33.5 L-7.2,50.3 L-19.8,62.4" transform="translate(-60,-60)" fill="none" stroke="#b07080" stroke-opacity="0.4" stroke-width="0.82"/><path d="M1.7,16.8 L-3.3,33.5 L-7.2,50.3 L-19.8,62.4" transform="translate(-60,0)" fill="none" stroke="#b07080" stroke-opacity="0.4" stroke-width="0.73"/><path d="M1.7,16.8 L-3.3,33.5 L-7.2,50.3 L-19.8,62.4" transform="translate(-60,60)" fill="none" stroke="#b07080" stroke-opacity="0.4" stroke-width="0.74"/><path d="M1.7,16.8 L-3.3,33.5 L-7.2,50.3 L-19.8,62.4" transform="translate(0,-60)" fill="none" stroke="#b07080" stroke-opacity="0.4" stroke-width="0.72"/><path d="M1.7,16.8 L-3.3,33.5 L-7.2,50.3 L-19.8,62.4" transform="translate(0,0)" fill="none" stroke="#b07080" stroke-opacity="0.4" stroke-width="0.72"/><path d="M1.7,16.8 L-3.3,33.5 L-7.2,50.3 L-19.8,62.4" transform="translate(0,60)" fill="none" stroke="#b07080" stroke-opacity="0.4" stroke-width="0.97"/><path d="M1.7,16.8 L-3.3,33.5 L-7.2,50.3 L-19.8,62.4" transform="translate(60,-60)" fill="none" stroke="#b07080" stroke-opacity="0.4" stroke-width="1.14"/><path d="M1.7,16.8 L-3.3,33.5 L-7.2,50.3 L-19.8,62.4" transform="translate(60,0)" fill="none" stroke="#b07080" stroke-opacity="0.4" stroke-width="1.10"/><path d="M1.7,16.8 L-3.3,33.5 L-7.2,50.3 L-19.8,62.4" transform="translate(60,60)" fill="none" stroke="#b07080" stroke-opacity="0.4" stroke-width="0.89"/><path d="M39.2,48.0 L51.8,59.2 L59.1,72.3 L63.3,79.3" transform="translate(-60,-60)" fill="none" stroke="#b07080" stroke-opacity="0.4" stroke-width="1.07"/><path d="M39.2,48.0 L51.8,59.2 L59.1,72.3 L63.3,79.3" transform="translate(-60,0)" fill="none" stroke="#b07080" stroke-opacity="0.4" stroke-width="0.80"/><path d="M39.2,48.0 L51.8,59.2 L59.1,72.3 L63.3,79.3" transform="translate(-60,60)" fill="none" stroke="#b07080" stroke-opacity="0.4" stroke-width="1.08"/><path d="M39.2,48.0 L51.8,59.2 L59.1,72.3 L63.3,79.3" transform="translate(0,-60)" fill="none" stroke="#b07080" stroke-opacity="0.4" stroke-width="1.18"/><path d="M39.2,48.0 L51.8,59.2 L59.1,72.3 L63.3,79.3" transform="translate(0,0)" fill="none" stroke="#b07080" stroke-opacity="0.4" stroke-width="0.84"/><path d="M39.2,48.0 L51.8,59.2 L59.1,72.3 L63.3,79.3" transform="translate(0,60)" fill="none" stroke="#b07080" stroke-opacity="0.4" stroke-width="0.84"/><path d="M39.2,48.0 L51.8,59.2 L59.1,72.3 L63.3,79.3" transform="translate(60,-60)" fill="none" stroke="#b07080" stroke-opacity="0.4" stroke-width="1.17"/><path d="M39.2,48.0 L51.8,59.2 L59.1,72.3 L63.3,79.3" transform="translate(60,0)" fill="none" stroke="#b07080" stroke-opacity="0.4" stroke-width="1.03"/><path d="M39.2,48.0 L51.8,59.2 L59.1,72.3 L63.3,79.3" transform="translate(60,60)" fill="none" stroke="#b07080" stroke-opacity="0.4" stroke-width="0.70"/><path d="M7.6,9.1 L15.2,7.3 L32.7,10.2 L42.3,13.7" transform="translate(-60,-60)" fill="none" stroke="#b07080" stroke-opacity="0.4" stroke-width="0.93"/><path d="M7.6,9.1 L15.2,7.3 L32.7,10.2 L42.3,13.7" transform="translate(-60,0)" fill="none" stroke="#b07080" stroke-opacity="0.4" stroke-width="0.68"/><path d="M7.6,9.1 L15.2,7.3 L32.7,10.2 L42.3,13.7" transform="translate(-60,60)" fill="none" stroke="#b07080" stroke-opacity="0.4" stroke-width="0.61"/><path d="M7.6,9.1 L15.2,7.3 L32.7,10.2 L42.3,13.7" transform="translate(0,-60)" fill="none" stroke="#b07080" stroke-opacity="0.4" stroke-width="1.18"/><path d="M7.6,9.1 L15.2,7.3 L32.7,10.2 L42.3,13.7" transform="translate(0,0)" fill="none" stroke="#b07080" stroke-opacity="0.4" stroke-width="0.99"/><path d="M7.6,9.1 L15.2,7.3 L32.7,10.2 L42.3,13.7" transform="translate(0,60)" fill="none" stroke="#b07080" stroke-opacity="0.4" stroke-width="0.92"/><path d="M7.6,9.1 L15.2,7.3 L32.7,10.2 L42.3,13.7" transform="translate(60,-60)" fill="none" stroke="#b07080" stroke-opacity="0.4" stroke-width="1.16"/><path d="M7.6,9.1 L15.2,7.3 L32.7,10.2 L42.3,13.7" transform="translate(60,0)" fill="none" stroke="#b07080" stroke-opacity="0.4" stroke-width="0.86"/><path d="M7.6,9.1 L15.2,7.3 L32.7,10.2 L42.3,13.7" transform="translate(60,60)" fill="none" stroke="#b07080" stroke-opacity="0.4" stroke-width="1.12"/><path d="M49.6,12.7 L51.7,21.3 L52.9,30.3 L54.6,37.7" transform="translate(-60,-60)" fill="none" stroke="#b07080" stroke-opacity="0.4" stroke-width="1.15"/><path d="M49.6,12.7 L51.7,21.3 L52.9,30.3 L54.6,37.7" transform="translate(-60,0)" fill="none" stroke="#b07080" stroke-opacity="0.4" stroke-width="0.81"/><path d="M49.6,12.7 L51.7,21.3 L52.9,30.3 L54.6,37.7" transform="translate(-60,60)" fill="none" stroke="#b07080" stroke-opacity="0.4" stroke-width="0.87"/><path d="M49.6,12.7 L51.7,21.3 L52.9,30.3 L54.6,37.7" transform="translate(0,-60)" fill="none" stroke="#b07080" stroke-opacity="0.4" stroke-width="0.95"/><path d="M49.6,12.7 L51.7,21.3 L52.9,30.3 L54.6,37.7" transform="translate(0,0)" fill="none" stroke="#b07080" stroke-opacity="0.4" stroke-width="1.14"/><path d="M49.6,12.7 L51.7,21.3 L52.9,30.3 L54.6,37.7" transform="translate(0,60)" fill="none" stroke="#b07080" stroke-opacity="0.4" stroke-width="0.85"/><path d="M49.6,12.7 L51.7,21.3 L52.9,30.3 L54.6,37.7" transform="translate(60,-60)" fill="none" stroke="#b07080" stroke-opacity="0.4" stroke-width="1.15"/><path d="M49.6,12.7 L51.7,21.3 L52.9,30.3 L54.6,37.7" transform="translate(60,0)" fill="none" stroke="#b07080" stroke-opacity="0.4" stroke-width="0.90"/><path d="M49.6,12.7 L51.7,21.3 L52.9,30.3 L54.6,37.7" transform="translate(60,60)" fill="none" stroke="#b07080" stroke-opacity="0.4" stroke-width="0.92"/><path d="M31.4,1.1 L27.0,5.3 L19.6,8.4 L6.2,14.5" transform="translate(-60,-60)" fill="none" stroke="#b07080" stroke-opacity="0.4" stroke-width="0.93"/><path d="M31.4,1.1 L27.0,5.3 L19.6,8.4 L6.2,14.5" transform="translate(-60,0)" fill="none" stroke="#b07080" stroke-opacity="0.4" stroke-width="0.80"/><path d="M31.4,1.1 L27.0,5.3 L19.6,8.4 L6.2,14.5" transform="translate(-60,60)" fill="none" stroke="#b07080" stroke-opacity="0.4" stroke-width="0.91"/><path d="M31.4,1.1 L27.0,5.3 L19.6,8.4 L6.2,14.5" transform="translate(0,-60)" fill="none" stroke="#b07080" stroke-opacity="0.4" stroke-width="0.93"/><path d="M31.4,1.1 L27.0,5.3 L19.6,8.4 L6.2,14.5" transform="translate(0,0)" fill="none" stroke="#b07080" stroke-opacity="0.4" stroke-width="1.07"/><path d="M31.4,1.1 L27.0,5.3 L19.6,8.4 L6.2,14.5" transform="translate(0,60)" fill="none" stroke="#b07080" stroke-opacity="0.4" stroke-width="0.66"/><path d="M31.4,1.1 L27.0,5.3 L19.6,8.4 L6.2,14.5" transform="translate(60,-60)" fill="none" stroke="#b07080" stroke-opacity="0.4" stroke-width="0.94"/><path d="M31.4,1.1 L27.0,5.3 L19.6,8.4 L6.2,14.5" transform="translate(60,0)" fill="none" stroke="#b07080" stroke-opacity="0.4" stroke-width="0.75"/><path d="M31.4,1.1 L27.0,5.3 L19.6,8.4 L6.2,14.5" transform="translate(60,60)" fill="none" stroke="#b07080" stroke-opacity="0.4" stroke-width="0.77"/><path d="M46.3,30.5 L33.4,19.5 L22.6,11.7 L12.8,4.4" transform="translate(-60,-60)" fill="none" stroke="#b07080" stroke-opacity="0.4" stroke-width="1.02"/><path d="M46.3,30.5 L33.4,19.5 L22.6,11.7 L12.8,4.4" transform="translate(-60,0)" fill="none" stroke="#b07080" stroke-opacity="0.4" stroke-width="0.87"/><path d="M46.3,30.5 L33.4,19.5 L22.6,11.7 L12.8,4.4" transform="translate(-60,60)" fill="none" stroke="#b07080" stroke-opacity="0.4" stroke-width="0.92"/><path d="M46.3,30.5 L33.4,19.5 L22.6,11.7 L12.8,4.4" transform="translate(0,-60)" fill="none" stroke="#b07080" stroke-opacity="0.4" stroke-width="0.89"/><path d="M46.3,30.5 L33.4,19.5 L22.6,11.7 L12.8,4.4" transform="translate(0,0)" fill="none" stroke="#b07080" stroke-opacity="0.4" stroke-width="1.16"/><path d="M46.3,30.5 L33.4,19.5 L22.6,11.7 L12.8,4.4" transform="translate(0,60)" fill="none" stroke="#b07080" stroke-opacity="0.4" stroke-width="1.02"/><path d="M46.3,30.5 L33.4,19.5 L22.6,11.7 L12.8,4.4" transform="translate(60,-60)" fill="none" stroke="#b07080" stroke-opacity="0.4" stroke-width="1.13"/><path d="M46.3,30.5 L33.4,19.5 L22.6,11.7 L12.8,4.4" transform="translate(60,0)" fill="none" stroke="#b07080" stroke-opacity="0.4" stroke-width="1.17"/><path d="M46.3,30.5 L33.4,19.5 L22.6,11.7 L12.8,4.4" transform="translate(60,60)" fill="none" stroke="#b07080" stroke-opacity="0.4" stroke-width="0.76"/><path d="M33.6,56.6 L34.5,49.2 L35.0,42.3 L33.2,35.7" transform="translate(-60,-60)" fill="none" stroke="#b07080" stroke-opacity="0.4" stroke-width="1.00"/><path d="M33.6,56.6 L34.5,49.2 L35.0,42.3 L33.2,35.7" transform="translate(-60,0)" fill="none" stroke="#b07080" stroke-opacity="0.4" stroke-width="1.07"/><path d="M33.6,56.6 L34.5,49.2 L35.0,42.3 L33.2,35.7" transform="translate(-60,60)" fill="none" stroke="#b07080" stroke-opacity="0.4" stroke-width="1.14"/><path d="M33.6,56.6 L34.5,49.2 L35.0,42.3 L33.2,35.7" transform="translate(0,-60)" fill="none" stroke="#b07080" stroke-opacity="0.4" stroke-width="0.69"/><path d="M33.6,56.6 L34.5,49.2 L35.0,42.3 L33.2,35.7" transform="translate(0,0)" fill="none" stroke="#b07080" stroke-opacity="0.4" stroke-width="1.03"/><path d="M33.6,56.6 L34.5,49.2 L35.0,42.3 L33.2,35.7" transform="translate(0,60)" fill="none" stroke="#b07080" stroke-opacity="0.4" stroke-width="1.00"/><path d="M33.6,56.6 L34.5,49.2 L35.0,42.3 L33.2,35.7" transform="translate(60,-60)" fill="none" stroke="#b07080" stroke-opacity="0.4" stroke-width="0.69"/><path d="M33.6,56.6 L34.5,49.2 L35.0,42.3 L33.2,35.7" transform="translate(60,0)" fill="none" stroke="#b07080" stroke-opacity="0.4" stroke-width="1.13"/><path d="M33.6,56.6 L34.5,49.2 L35.0,42.3 L33.2,35.7" transform="translate(60,60)" fill="none" stroke="#b07080" stroke-opacity="0.4" stroke-width="1.18"/><path d="M13.2,57.2 L-1.0,68.0 L-8.7,70.0 L-20.2,74.1" transform="translate(-60,-60)" fill="none" stroke="#b07080" stroke-opacity="0.4" stroke-width="0.80"/><path d="M13.2,57.2 L-1.0,68.0 L-8.7,70.0 L-20.2,74.1" transform="translate(-60,0)" fill="none" stroke="#b07080" stroke-opacity="0.4" stroke-width="0.72"/><path d="M13.2,57.2 L-1.0,68.0 L-8.7,70.0 L-20.2,74.1" transform="translate(-60,60)" fill="none" stroke="#b07080" stroke-opacity="0.4" stroke-width="0.79"/><path d="M13.2,57.2 L-1.0,68.0 L-8.7,70.0 L-20.2,74.1" transform="translate(0,-60)" fill="none" stroke="#b07080" stroke-opacity="0.4" stroke-width="1.03"/><path d="M13.2,57.2 L-1.0,68.0 L-8.7,70.0 L-20.2,74.1" transform="translate(0,0)" fill="none" stroke="#b07080" stroke-opacity="0.4" stroke-width="0.61"/><path d="M13.2,57.2 L-1.0,68.0 L-8.7,70.0 L-20.2,74.1" transform="translate(0,60)" fill="none" stroke="#b07080" stroke-opacity="0.4" stroke-width="0.93"/><path d="M13.2,57.2 L-1.0,68.0 L-8.7,70.0 L-20.2,74.1" transform="translate(60,-60)" fill="none" stroke="#b07080" stroke-opacity="0.4" stroke-width="0.86"/><path d="M13.2,57.2 L-1.0,68.0 L-8.7,70.0 L-20.2,74.1" transform="translate(60,0)" fill="none" stroke="#b07080" stroke-opacity="0.4" stroke-width="0.61"/><path d="M13.2,57.2 L-1.0,68.0 L-8.7,70.0 L-20.2,74.1" transform="translate(60,60)" fill="none" stroke="#b07080" stroke-opacity="0.4" stroke-width="0.80"/><path d="M37.4,30.7 L46.0,43.6 L46.1,50.9 L48.0,57.1" transform="translate(-60,-60)" fill="none" stroke="#b07080" stroke-opacity="0.4" stroke-width="1.07"/><path d="M37.4,30.7 L46.0,43.6 L46.1,50.9 L48.0,57.1" transform="translate(-60,0)" fill="none" stroke="#b07080" stroke-opacity="0.4" stroke-width="0.76"/><path d="M37.4,30.7 L46.0,43.6 L46.1,50.9 L48.0,57.1" transform="translate(-60,60)" fill="none" stroke="#b07080" stroke-opacity="0.4" stroke-width="0.68"/><path d="M37.4,30.7 L46.0,43.6 L46.1,50.9 L48.0,57.1" transform="translate(0,-60)" fill="none" stroke="#b07080" stroke-opacity="0.4" stroke-width="0.85"/><path d="M37.4,30.7 L46.0,43.6 L46.1,50.9 L48.0,57.1" transform="translate(0,0)" fill="none" stroke="#b07080" stroke-opacity="0.4" stroke-width="1.15"/><path d="M37.4,30.7 L46.0,43.6 L46.1,50.9 L48.0,57.1" transform="translate(0,60)" fill="none" stroke="#b07080" stroke-opacity="0.4" stroke-width="1.09"/><path d="M37.4,30.7 L46.0,43.6 L46.1,50.9 L48.0,57.1" transform="translate(60,-60)" fill="none" stroke="#b07080" stroke-opacity="0.4" stroke-width="0.76"/><path d="M37.4,30.7 L46.0,43.6 L46.1,50.9 L48.0,57.1" transform="translate(60,0)" fill="none" stroke="#b07080" stroke-opacity="0.4" stroke-width="0.69"/><path d="M37.4,30.7 L46.0,43.6 L46.1,50.9 L48.0,57.1" transform="translate(60,60)" fill="none" stroke="#b07080" stroke-opacity="0.4" stroke-width="1.15"/><path d="M34.2,42.0 L48.5,42.5 L55.3,42.1 L67.5,48.2" transform="translate(-60,-60)" fill="none" stroke="#b07080" stroke-opacity="0.4" stroke-width="1.08"/><path d="M34.2,42.0 L48.5,42.5 L55.3,42.1 L67.5,48.2" transform="translate(-60,0)" fill="none" stroke="#b07080" stroke-opacity="0.4" stroke-width="0.65"/><path d="M34.2,42.0 L48.5,42.5 L55.3,42.1 L67.5,48.2" transform="translate(-60,60)" fill="none" stroke="#b07080" stroke-opacity="0.4" stroke-width="1.11"/><path d="M34.2,42.0 L48.5,42.5 L55.3,42.1 L67.5,48.2" transform="translate(0,-60)" fill="none" stroke="#b07080" stroke-opacity="0.4" stroke-width="0.64"/><path d="M34.2,42.0 L48.5,42.5 L55.3,42.1 L67.5,48.2" transform="translate(0,0)" fill="none" stroke="#b07080" stroke-opacity="0.4" stroke-width="1.12"/><path d="M34.2,42.0 L48.5,42.5 L55.3,42.1 L67.5,48.2" transform="translate(0,60)" fill="none" stroke="#b07080" stroke-opacity="0.4" stroke-width="0.87"/><path d="M34.2,42.0 L48.5,42.5 L55.3,42.1 L67.5,48.2" transform="translate(60,-60)" fill="none" stroke="#b07080" stroke-opacity="0.4" stroke-width="0.80"/><path d="M34.2,42.0 L48.5,42.5 L55.3,42.1 L67.5,48.2" transform="translate(60,0)" fill="none" stroke="#b07080" stroke-opacity="0.4" stroke-width="0.93"/><path d="M34.2,42.0 L48.5,42.5 L55.3,42.1 L67.5,48.2" transform="translate(60,60)" fill="none" stroke="#b07080" stroke-opacity="0.4" stroke-width="1.16"/><path d="M16.1,7.8 L8.8,8.8 L3.2,12.3 L-2.8,20.0" transform="translate(-60,-60)" fill="none" stroke="#b07080" stroke-opacity="0.4" stroke-width="0.78"/><path d="M16.1,7.8 L8.8,8.8 L3.2,12.3 L-2.8,20.0" transform="translate(-60,0)" fill="none" stroke="#b07080" stroke-opacity="0.4" stroke-width="1.06"/><path d="M16.1,7.8 L8.8,8.8 L3.2,12.3 L-2.8,20.0" transform="translate(-60,60)" fill="none" stroke="#b07080" stroke-opacity="0.4" stroke-width="0.77"/><path d="M16.1,7.8 L8.8,8.8 L3.2,12.3 L-2.8,20.0" transform="translate(0,-60)" fill="none" stroke="#b07080" stroke-opacity="0.4" stroke-width="0.90"/><path d="M16.1,7.8 L8.8,8.8 L3.2,12.3 L-2.8,20.0" transform="translate(0,0)" fill="none" stroke="#b07080" stroke-opacity="0.4" stroke-width="0.71"/><path d="M16.1,7.8 L8.8,8.8 L3.2,12.3 L-2.8,20.0" transform="translate(0,60)" fill="none" stroke="#b07080" stroke-opacity="0.4" stroke-width="0.81"/><path d="M16.1,7.8 L8.8,8.8 L3.2,12.3 L-2.8,20.0" transform="translate(60,-60)" fill="none" stroke="#b07080" stroke-opacity="0.4" stroke-width="0.61"/><path d="M16.1,7.8 L8.8,8.8 L3.2,12.3 L-2.8,20.0" transform="translate(60,0)" fill="none" stroke="#b07080" stroke-opacity="0.4" stroke-width="0.75"/><path d="M16.1,7.8 L8.8,8.8 L3.2,12.3 L-2.8,20.0" transform="translate(60,60)" fill="none" stroke="#b07080" stroke-opacity="0.4" stroke-width="0.61"/><path d="M44.0,33.1 L50.9,48.8 L63.1,58.9 L72.9,65.7" transform="translate(-60,-60)" fill="none" stroke="#b07080" stroke-opacity="0.4" stroke-width="1.10"/><path d="M44.0,33.1 L50.9,48.8 L63.1,58.9 L72.9,65.7" transform="translate(-60,0)" fill="none" stroke="#b07080" stroke-opacity="0.4" stroke-width="0.84"/><path d="M44.0,33.1 L50.9,48.8 L63.1,58.9 L72.9,65.7" transform="translate(-60,60)" fill="none" stroke="#b07080" stroke-opacity="0.4" stroke-width="0.90"/><path d="M44.0,33.1 L50.9,48.8 L63.1,58.9 L72.9,65.7" transform="translate(0,-60)" fill="none" stroke="#b07080" stroke-opacity="0.4" stroke-width="1.01"/><path d="M44.0,33.1 L50.9,48.8 L63.1,58.9 L72.9,65.7" transform="translate(0,0)" fill="none" stroke="#b07080" stroke-opacity="0.4" stroke-width="1.19"/><path d="M44.0,33.1 L50.9,48.8 L63.1,58.9 L72.9,65.7" transform="translate(0,60)" fill="none" stroke="#b07080" stroke-opacity="0.4" stroke-width="0.81"/><path d="M44.0,33.1 L50.9,48.8 L63.1,58.9 L72.9,65.7" transform="translate(60,-60)" fill="none" stroke="#b07080" stroke-opacity="0.4" stroke-width="1.10"/><path d="M44.0,33.1 L50.9,48.8 L63.1,58.9 L72.9,65.7" transform="translate(60,0)" fill="none" stroke="#b07080" stroke-opacity="0.4" stroke-width="1.02"/><path d="M44.0,33.1 L50.9,48.8 L63.1,58.9 L72.9,65.7" transform="translate(60,60)" fill="none" stroke="#b07080" stroke-opacity="0.4" stroke-width="0.98"/></pattern><pattern id="purb2" width="150" height="150" patternUnits="userSpaceOnUse" patternTransform="scale(3.84)"><path d="M60.7,52.1 L67.5,51.4 L76.4,53.1 L83.3,51.6 L99.4,54.7 L108.1,58.4" transform="translate(-150,-150)" fill="none" stroke="#e48a62" stroke-opacity="0.55" stroke-width="1.75"/><path d="M60.7,52.1 L67.5,51.4 L76.4,53.1 L83.3,51.6 L99.4,54.7 L108.1,58.4" transform="translate(-150,0)" fill="none" stroke="#e48a62" stroke-opacity="0.55" stroke-width="1.78"/><path d="M60.7,52.1 L67.5,51.4 L76.4,53.1 L83.3,51.6 L99.4,54.7 L108.1,58.4" transform="translate(-150,150)" fill="none" stroke="#e48a62" stroke-opacity="0.55" stroke-width="1.88"/><path d="M60.7,52.1 L67.5,51.4 L76.4,53.1 L83.3,51.6 L99.4,54.7 L108.1,58.4" transform="translate(0,-150)" fill="none" stroke="#e48a62" stroke-opacity="0.55" stroke-width="1.69"/><path d="M60.7,52.1 L67.5,51.4 L76.4,53.1 L83.3,51.6 L99.4,54.7 L108.1,58.4" transform="translate(0,0)" fill="none" stroke="#e48a62" stroke-opacity="0.55" stroke-width="1.87"/><path d="M60.7,52.1 L67.5,51.4 L76.4,53.1 L83.3,51.6 L99.4,54.7 L108.1,58.4" transform="translate(0,150)" fill="none" stroke="#e48a62" stroke-opacity="0.55" stroke-width="1.76"/><path d="M60.7,52.1 L67.5,51.4 L76.4,53.1 L83.3,51.6 L99.4,54.7 L108.1,58.4" transform="translate(150,-150)" fill="none" stroke="#e48a62" stroke-opacity="0.55" stroke-width="2.18"/><path d="M60.7,52.1 L67.5,51.4 L76.4,53.1 L83.3,51.6 L99.4,54.7 L108.1,58.4" transform="translate(150,0)" fill="none" stroke="#e48a62" stroke-opacity="0.55" stroke-width="2.18"/><path d="M60.7,52.1 L67.5,51.4 L76.4,53.1 L83.3,51.6 L99.4,54.7 L108.1,58.4" transform="translate(150,150)" fill="none" stroke="#e48a62" stroke-opacity="0.55" stroke-width="1.93"/><path d="M36.7,144.9 L35.5,150.7 L34.8,162.4 L34.2,170.8 L33.8,176.9 L35.3,183.8" transform="translate(-150,-150)" fill="none" stroke="#e48a62" stroke-opacity="0.55" stroke-width="1.84"/><path d="M36.7,144.9 L35.5,150.7 L34.8,162.4 L34.2,170.8 L33.8,176.9 L35.3,183.8" transform="translate(-150,0)" fill="none" stroke="#e48a62" stroke-opacity="0.55" stroke-width="1.63"/><path d="M36.7,144.9 L35.5,150.7 L34.8,162.4 L34.2,170.8 L33.8,176.9 L35.3,183.8" transform="translate(-150,150)" fill="none" stroke="#e48a62" stroke-opacity="0.55" stroke-width="1.61"/><path d="M36.7,144.9 L35.5,150.7 L34.8,162.4 L34.2,170.8 L33.8,176.9 L35.3,183.8" transform="translate(0,-150)" fill="none" stroke="#e48a62" stroke-opacity="0.55" stroke-width="1.78"/><path d="M36.7,144.9 L35.5,150.7 L34.8,162.4 L34.2,170.8 L33.8,176.9 L35.3,183.8" transform="translate(0,0)" fill="none" stroke="#e48a62" stroke-opacity="0.55" stroke-width="1.74"/><path d="M36.7,144.9 L35.5,150.7 L34.8,162.4 L34.2,170.8 L33.8,176.9 L35.3,183.8" transform="translate(0,150)" fill="none" stroke="#e48a62" stroke-opacity="0.55" stroke-width="1.95"/><path d="M36.7,144.9 L35.5,150.7 L34.8,162.4 L34.2,170.8 L33.8,176.9 L35.3,183.8" transform="translate(150,-150)" fill="none" stroke="#e48a62" stroke-opacity="0.55" stroke-width="1.92"/><path d="M36.7,144.9 L35.5,150.7 L34.8,162.4 L34.2,170.8 L33.8,176.9 L35.3,183.8" transform="translate(150,0)" fill="none" stroke="#e48a62" stroke-opacity="0.55" stroke-width="2.05"/><path d="M36.7,144.9 L35.5,150.7 L34.8,162.4 L34.2,170.8 L33.8,176.9 L35.3,183.8" transform="translate(150,150)" fill="none" stroke="#e48a62" stroke-opacity="0.55" stroke-width="1.99"/><path d="M107.4,131.9 L96.4,145.9 L92.8,160.1 L90.1,166.1 L77.9,177.4 L65.6,185.8" transform="translate(-150,-150)" fill="none" stroke="#e48a62" stroke-opacity="0.55" stroke-width="2.09"/><path d="M107.4,131.9 L96.4,145.9 L92.8,160.1 L90.1,166.1 L77.9,177.4 L65.6,185.8" transform="translate(-150,0)" fill="none" stroke="#e48a62" stroke-opacity="0.55" stroke-width="1.68"/><path d="M107.4,131.9 L96.4,145.9 L92.8,160.1 L90.1,166.1 L77.9,177.4 L65.6,185.8" transform="translate(-150,150)" fill="none" stroke="#e48a62" stroke-opacity="0.55" stroke-width="1.91"/><path d="M107.4,131.9 L96.4,145.9 L92.8,160.1 L90.1,166.1 L77.9,177.4 L65.6,185.8" transform="translate(0,-150)" fill="none" stroke="#e48a62" stroke-opacity="0.55" stroke-width="1.90"/><path d="M107.4,131.9 L96.4,145.9 L92.8,160.1 L90.1,166.1 L77.9,177.4 L65.6,185.8" transform="translate(0,0)" fill="none" stroke="#e48a62" stroke-opacity="0.55" stroke-width="2.10"/><path d="M107.4,131.9 L96.4,145.9 L92.8,160.1 L90.1,166.1 L77.9,177.4 L65.6,185.8" transform="translate(0,150)" fill="none" stroke="#e48a62" stroke-opacity="0.55" stroke-width="2.08"/><path d="M107.4,131.9 L96.4,145.9 L92.8,160.1 L90.1,166.1 L77.9,177.4 L65.6,185.8" transform="translate(150,-150)" fill="none" stroke="#e48a62" stroke-opacity="0.55" stroke-width="2.10"/><path d="M107.4,131.9 L96.4,145.9 L92.8,160.1 L90.1,166.1 L77.9,177.4 L65.6,185.8" transform="translate(150,0)" fill="none" stroke="#e48a62" stroke-opacity="0.55" stroke-width="1.95"/><path d="M107.4,131.9 L96.4,145.9 L92.8,160.1 L90.1,166.1 L77.9,177.4 L65.6,185.8" transform="translate(150,150)" fill="none" stroke="#e48a62" stroke-opacity="0.55" stroke-width="2.14"/><path d="M102.4,104.0 L107.3,109.9 L112.7,114.6 L118.3,126.0 L122.3,139.0 L123.3,150.8" transform="translate(-150,-150)" fill="none" stroke="#e48a62" stroke-opacity="0.55" stroke-width="1.60"/><path d="M102.4,104.0 L107.3,109.9 L112.7,114.6 L118.3,126.0 L122.3,139.0 L123.3,150.8" transform="translate(-150,0)" fill="none" stroke="#e48a62" stroke-opacity="0.55" stroke-width="2.08"/><path d="M102.4,104.0 L107.3,109.9 L112.7,114.6 L118.3,126.0 L122.3,139.0 L123.3,150.8" transform="translate(-150,150)" fill="none" stroke="#e48a62" stroke-opacity="0.55" stroke-width="2.05"/><path d="M102.4,104.0 L107.3,109.9 L112.7,114.6 L118.3,126.0 L122.3,139.0 L123.3,150.8" transform="translate(0,-150)" fill="none" stroke="#e48a62" stroke-opacity="0.55" stroke-width="1.90"/><path d="M102.4,104.0 L107.3,109.9 L112.7,114.6 L118.3,126.0 L122.3,139.0 L123.3,150.8" transform="translate(0,0)" fill="none" stroke="#e48a62" stroke-opacity="0.55" stroke-width="1.92"/><path d="M102.4,104.0 L107.3,109.9 L112.7,114.6 L118.3,126.0 L122.3,139.0 L123.3,150.8" transform="translate(0,150)" fill="none" stroke="#e48a62" stroke-opacity="0.55" stroke-width="2.00"/><path d="M102.4,104.0 L107.3,109.9 L112.7,114.6 L118.3,126.0 L122.3,139.0 L123.3,150.8" transform="translate(150,-150)" fill="none" stroke="#e48a62" stroke-opacity="0.55" stroke-width="1.64"/><path d="M102.4,104.0 L107.3,109.9 L112.7,114.6 L118.3,126.0 L122.3,139.0 L123.3,150.8" transform="translate(150,0)" fill="none" stroke="#e48a62" stroke-opacity="0.55" stroke-width="2.04"/><path d="M102.4,104.0 L107.3,109.9 L112.7,114.6 L118.3,126.0 L122.3,139.0 L123.3,150.8" transform="translate(150,150)" fill="none" stroke="#e48a62" stroke-opacity="0.55" stroke-width="1.75"/><path d="M11.2,39.8 L4.2,26.7 L5.3,14.8 L4.7,3.0 L7.2,-11.9 L11.3,-25.0" transform="translate(-150,-150)" fill="none" stroke="#e48a62" stroke-opacity="0.55" stroke-width="1.65"/><path d="M11.2,39.8 L4.2,26.7 L5.3,14.8 L4.7,3.0 L7.2,-11.9 L11.3,-25.0" transform="translate(-150,0)" fill="none" stroke="#e48a62" stroke-opacity="0.55" stroke-width="1.69"/><path d="M11.2,39.8 L4.2,26.7 L5.3,14.8 L4.7,3.0 L7.2,-11.9 L11.3,-25.0" transform="translate(-150,150)" fill="none" stroke="#e48a62" stroke-opacity="0.55" stroke-width="1.75"/><path d="M11.2,39.8 L4.2,26.7 L5.3,14.8 L4.7,3.0 L7.2,-11.9 L11.3,-25.0" transform="translate(0,-150)" fill="none" stroke="#e48a62" stroke-opacity="0.55" stroke-width="2.05"/><path d="M11.2,39.8 L4.2,26.7 L5.3,14.8 L4.7,3.0 L7.2,-11.9 L11.3,-25.0" transform="translate(0,0)" fill="none" stroke="#e48a62" stroke-opacity="0.55" stroke-width="1.78"/><path d="M11.2,39.8 L4.2,26.7 L5.3,14.8 L4.7,3.0 L7.2,-11.9 L11.3,-25.0" transform="translate(0,150)" fill="none" stroke="#e48a62" stroke-opacity="0.55" stroke-width="1.94"/><path d="M11.2,39.8 L4.2,26.7 L5.3,14.8 L4.7,3.0 L7.2,-11.9 L11.3,-25.0" transform="translate(150,-150)" fill="none" stroke="#e48a62" stroke-opacity="0.55" stroke-width="1.61"/><path d="M11.2,39.8 L4.2,26.7 L5.3,14.8 L4.7,3.0 L7.2,-11.9 L11.3,-25.0" transform="translate(150,0)" fill="none" stroke="#e48a62" stroke-opacity="0.55" stroke-width="1.64"/><path d="M11.2,39.8 L4.2,26.7 L5.3,14.8 L4.7,3.0 L7.2,-11.9 L11.3,-25.0" transform="translate(150,150)" fill="none" stroke="#e48a62" stroke-opacity="0.55" stroke-width="1.76"/></pattern><pattern id="prur" width="90" height="90" patternUnits="userSpaceOnUse" ><path d="M60.5,62.3 L52.5,53.1 L44.5,44.7 L28.8,38.9 L11.0,39.1" transform="translate(-90,-90)" fill="none" stroke="#a88aa0" stroke-opacity="0.5" stroke-width="1.56"/><path d="M60.5,62.3 L52.5,53.1 L44.5,44.7 L28.8,38.9 L11.0,39.1" transform="translate(-90,0)" fill="none" stroke="#a88aa0" stroke-opacity="0.5" stroke-width="1.01"/><path d="M60.5,62.3 L52.5,53.1 L44.5,44.7 L28.8,38.9 L11.0,39.1" transform="translate(-90,90)" fill="none" stroke="#a88aa0" stroke-opacity="0.5" stroke-width="1.28"/><path d="M60.5,62.3 L52.5,53.1 L44.5,44.7 L28.8,38.9 L11.0,39.1" transform="translate(0,-90)" fill="none" stroke="#a88aa0" stroke-opacity="0.5" stroke-width="1.49"/><path d="M60.5,62.3 L52.5,53.1 L44.5,44.7 L28.8,38.9 L11.0,39.1" transform="translate(0,0)" fill="none" stroke="#a88aa0" stroke-opacity="0.5" stroke-width="1.58"/><path d="M60.5,62.3 L52.5,53.1 L44.5,44.7 L28.8,38.9 L11.0,39.1" transform="translate(0,90)" fill="none" stroke="#a88aa0" stroke-opacity="0.5" stroke-width="1.27"/><path d="M60.5,62.3 L52.5,53.1 L44.5,44.7 L28.8,38.9 L11.0,39.1" transform="translate(90,-90)" fill="none" stroke="#a88aa0" stroke-opacity="0.5" stroke-width="1.16"/><path d="M60.5,62.3 L52.5,53.1 L44.5,44.7 L28.8,38.9 L11.0,39.1" transform="translate(90,0)" fill="none" stroke="#a88aa0" stroke-opacity="0.5" stroke-width="1.13"/><path d="M60.5,62.3 L52.5,53.1 L44.5,44.7 L28.8,38.9 L11.0,39.1" transform="translate(90,90)" fill="none" stroke="#a88aa0" stroke-opacity="0.5" stroke-width="1.57"/><path d="M19.0,52.3 L29.5,66.2 L43.6,73.5 L58.3,81.3 L64.8,87.2" transform="translate(-90,-90)" fill="none" stroke="#a88aa0" stroke-opacity="0.5" stroke-width="1.54"/><path d="M19.0,52.3 L29.5,66.2 L43.6,73.5 L58.3,81.3 L64.8,87.2" transform="translate(-90,0)" fill="none" stroke="#a88aa0" stroke-opacity="0.5" stroke-width="1.29"/><path d="M19.0,52.3 L29.5,66.2 L43.6,73.5 L58.3,81.3 L64.8,87.2" transform="translate(-90,90)" fill="none" stroke="#a88aa0" stroke-opacity="0.5" stroke-width="1.01"/><path d="M19.0,52.3 L29.5,66.2 L43.6,73.5 L58.3,81.3 L64.8,87.2" transform="translate(0,-90)" fill="none" stroke="#a88aa0" stroke-opacity="0.5" stroke-width="1.00"/><path d="M19.0,52.3 L29.5,66.2 L43.6,73.5 L58.3,81.3 L64.8,87.2" transform="translate(0,0)" fill="none" stroke="#a88aa0" stroke-opacity="0.5" stroke-width="1.30"/><path d="M19.0,52.3 L29.5,66.2 L43.6,73.5 L58.3,81.3 L64.8,87.2" transform="translate(0,90)" fill="none" stroke="#a88aa0" stroke-opacity="0.5" stroke-width="1.27"/><path d="M19.0,52.3 L29.5,66.2 L43.6,73.5 L58.3,81.3 L64.8,87.2" transform="translate(90,-90)" fill="none" stroke="#a88aa0" stroke-opacity="0.5" stroke-width="1.18"/><path d="M19.0,52.3 L29.5,66.2 L43.6,73.5 L58.3,81.3 L64.8,87.2" transform="translate(90,0)" fill="none" stroke="#a88aa0" stroke-opacity="0.5" stroke-width="1.08"/><path d="M19.0,52.3 L29.5,66.2 L43.6,73.5 L58.3,81.3 L64.8,87.2" transform="translate(90,90)" fill="none" stroke="#a88aa0" stroke-opacity="0.5" stroke-width="1.21"/><path d="M28.4,75.6 L43.7,80.6 L60.7,78.1 L77.4,80.0 L87.8,78.5" transform="translate(-90,-90)" fill="none" stroke="#a88aa0" stroke-opacity="0.5" stroke-width="1.24"/><path d="M28.4,75.6 L43.7,80.6 L60.7,78.1 L77.4,80.0 L87.8,78.5" transform="translate(-90,0)" fill="none" stroke="#a88aa0" stroke-opacity="0.5" stroke-width="1.60"/><path d="M28.4,75.6 L43.7,80.6 L60.7,78.1 L77.4,80.0 L87.8,78.5" transform="translate(-90,90)" fill="none" stroke="#a88aa0" stroke-opacity="0.5" stroke-width="1.35"/><path d="M28.4,75.6 L43.7,80.6 L60.7,78.1 L77.4,80.0 L87.8,78.5" transform="translate(0,-90)" fill="none" stroke="#a88aa0" stroke-opacity="0.5" stroke-width="1.22"/><path d="M28.4,75.6 L43.7,80.6 L60.7,78.1 L77.4,80.0 L87.8,78.5" transform="translate(0,0)" fill="none" stroke="#a88aa0" stroke-opacity="0.5" stroke-width="1.26"/><path d="M28.4,75.6 L43.7,80.6 L60.7,78.1 L77.4,80.0 L87.8,78.5" transform="translate(0,90)" fill="none" stroke="#a88aa0" stroke-opacity="0.5" stroke-width="1.17"/><path d="M28.4,75.6 L43.7,80.6 L60.7,78.1 L77.4,80.0 L87.8,78.5" transform="translate(90,-90)" fill="none" stroke="#a88aa0" stroke-opacity="0.5" stroke-width="1.03"/><path d="M28.4,75.6 L43.7,80.6 L60.7,78.1 L77.4,80.0 L87.8,78.5" transform="translate(90,0)" fill="none" stroke="#a88aa0" stroke-opacity="0.5" stroke-width="1.06"/><path d="M28.4,75.6 L43.7,80.6 L60.7,78.1 L77.4,80.0 L87.8,78.5" transform="translate(90,90)" fill="none" stroke="#a88aa0" stroke-opacity="0.5" stroke-width="1.50"/><path d="M25.7,84.2 L29.1,95.8 L35.5,104.1 L37.4,120.6 L33.8,133.7" transform="translate(-90,-90)" fill="none" stroke="#a88aa0" stroke-opacity="0.5" stroke-width="1.55"/><path d="M25.7,84.2 L29.1,95.8 L35.5,104.1 L37.4,120.6 L33.8,133.7" transform="translate(-90,0)" fill="none" stroke="#a88aa0" stroke-opacity="0.5" stroke-width="1.56"/><path d="M25.7,84.2 L29.1,95.8 L35.5,104.1 L37.4,120.6 L33.8,133.7" transform="translate(-90,90)" fill="none" stroke="#a88aa0" stroke-opacity="0.5" stroke-width="1.33"/><path d="M25.7,84.2 L29.1,95.8 L35.5,104.1 L37.4,120.6 L33.8,133.7" transform="translate(0,-90)" fill="none" stroke="#a88aa0" stroke-opacity="0.5" stroke-width="1.43"/><path d="M25.7,84.2 L29.1,95.8 L35.5,104.1 L37.4,120.6 L33.8,133.7" transform="translate(0,0)" fill="none" stroke="#a88aa0" stroke-opacity="0.5" stroke-width="1.03"/><path d="M25.7,84.2 L29.1,95.8 L35.5,104.1 L37.4,120.6 L33.8,133.7" transform="translate(0,90)" fill="none" stroke="#a88aa0" stroke-opacity="0.5" stroke-width="1.44"/><path d="M25.7,84.2 L29.1,95.8 L35.5,104.1 L37.4,120.6 L33.8,133.7" transform="translate(90,-90)" fill="none" stroke="#a88aa0" stroke-opacity="0.5" stroke-width="1.27"/><path d="M25.7,84.2 L29.1,95.8 L35.5,104.1 L37.4,120.6 L33.8,133.7" transform="translate(90,0)" fill="none" stroke="#a88aa0" stroke-opacity="0.5" stroke-width="1.45"/><path d="M25.7,84.2 L29.1,95.8 L35.5,104.1 L37.4,120.6 L33.8,133.7" transform="translate(90,90)" fill="none" stroke="#a88aa0" stroke-opacity="0.5" stroke-width="1.39"/><path d="M25.8,4.4 L32.9,-4.8 L37.3,-13.3 L49.6,-26.1 L55.9,-38.4" transform="translate(-90,-90)" fill="none" stroke="#a88aa0" stroke-opacity="0.5" stroke-width="1.18"/><path d="M25.8,4.4 L32.9,-4.8 L37.3,-13.3 L49.6,-26.1 L55.9,-38.4" transform="translate(-90,0)" fill="none" stroke="#a88aa0" stroke-opacity="0.5" stroke-width="1.33"/><path d="M25.8,4.4 L32.9,-4.8 L37.3,-13.3 L49.6,-26.1 L55.9,-38.4" transform="translate(-90,90)" fill="none" stroke="#a88aa0" stroke-opacity="0.5" stroke-width="1.24"/><path d="M25.8,4.4 L32.9,-4.8 L37.3,-13.3 L49.6,-26.1 L55.9,-38.4" transform="translate(0,-90)" fill="none" stroke="#a88aa0" stroke-opacity="0.5" stroke-width="1.10"/><path d="M25.8,4.4 L32.9,-4.8 L37.3,-13.3 L49.6,-26.1 L55.9,-38.4" transform="translate(0,0)" fill="none" stroke="#a88aa0" stroke-opacity="0.5" stroke-width="1.10"/><path d="M25.8,4.4 L32.9,-4.8 L37.3,-13.3 L49.6,-26.1 L55.9,-38.4" transform="translate(0,90)" fill="none" stroke="#a88aa0" stroke-opacity="0.5" stroke-width="1.12"/><path d="M25.8,4.4 L32.9,-4.8 L37.3,-13.3 L49.6,-26.1 L55.9,-38.4" transform="translate(90,-90)" fill="none" stroke="#a88aa0" stroke-opacity="0.5" stroke-width="1.54"/><path d="M25.8,4.4 L32.9,-4.8 L37.3,-13.3 L49.6,-26.1 L55.9,-38.4" transform="translate(90,0)" fill="none" stroke="#a88aa0" stroke-opacity="0.5" stroke-width="1.30"/><path d="M25.8,4.4 L32.9,-4.8 L37.3,-13.3 L49.6,-26.1 L55.9,-38.4" transform="translate(90,90)" fill="none" stroke="#a88aa0" stroke-opacity="0.5" stroke-width="1.13"/><path d="M81.6,89.7 L75.5,95.3 L72.2,104.9 L73.6,113.6 L79.1,125.2" transform="translate(-90,-90)" fill="none" stroke="#a88aa0" stroke-opacity="0.5" stroke-width="1.53"/><path d="M81.6,89.7 L75.5,95.3 L72.2,104.9 L73.6,113.6 L79.1,125.2" transform="translate(-90,0)" fill="none" stroke="#a88aa0" stroke-opacity="0.5" stroke-width="1.45"/><path d="M81.6,89.7 L75.5,95.3 L72.2,104.9 L73.6,113.6 L79.1,125.2" transform="translate(-90,90)" fill="none" stroke="#a88aa0" stroke-opacity="0.5" stroke-width="1.25"/><path d="M81.6,89.7 L75.5,95.3 L72.2,104.9 L73.6,113.6 L79.1,125.2" transform="translate(0,-90)" fill="none" stroke="#a88aa0" stroke-opacity="0.5" stroke-width="1.25"/><path d="M81.6,89.7 L75.5,95.3 L72.2,104.9 L73.6,113.6 L79.1,125.2" transform="translate(0,0)" fill="none" stroke="#a88aa0" stroke-opacity="0.5" stroke-width="1.31"/><path d="M81.6,89.7 L75.5,95.3 L72.2,104.9 L73.6,113.6 L79.1,125.2" transform="translate(0,90)" fill="none" stroke="#a88aa0" stroke-opacity="0.5" stroke-width="1.23"/><path d="M81.6,89.7 L75.5,95.3 L72.2,104.9 L73.6,113.6 L79.1,125.2" transform="translate(90,-90)" fill="none" stroke="#a88aa0" stroke-opacity="0.5" stroke-width="1.20"/><path d="M81.6,89.7 L75.5,95.3 L72.2,104.9 L73.6,113.6 L79.1,125.2" transform="translate(90,0)" fill="none" stroke="#a88aa0" stroke-opacity="0.5" stroke-width="1.04"/><path d="M81.6,89.7 L75.5,95.3 L72.2,104.9 L73.6,113.6 L79.1,125.2" transform="translate(90,90)" fill="none" stroke="#a88aa0" stroke-opacity="0.5" stroke-width="1.17"/></pattern><pattern id="prurb" width="70" height="70" patternUnits="userSpaceOnUse" ><ellipse cx="-2.3" cy="-61.2" rx="2.8" ry="2.2" fill="#d89a98" fill-opacity="0.55"/><ellipse cx="-2.3" cy="8.8" rx="2.8" ry="2.6" fill="#d89a98" fill-opacity="0.55"/><ellipse cx="-2.3" cy="78.8" rx="2.8" ry="1.7" fill="#d89a98" fill-opacity="0.55"/><ellipse cx="67.7" cy="-61.2" rx="2.8" ry="1.8" fill="#d89a98" fill-opacity="0.55"/><ellipse cx="67.7" cy="8.8" rx="2.8" ry="1.7" fill="#d89a98" fill-opacity="0.55"/><ellipse cx="67.7" cy="78.8" rx="2.8" ry="1.9" fill="#d89a98" fill-opacity="0.55"/><ellipse cx="137.7" cy="-61.2" rx="2.8" ry="2.0" fill="#d89a98" fill-opacity="0.55"/><ellipse cx="137.7" cy="8.8" rx="2.8" ry="2.7" fill="#d89a98" fill-opacity="0.55"/><ellipse cx="137.7" cy="78.8" rx="2.8" ry="2.5" fill="#d89a98" fill-opacity="0.55"/><ellipse cx="-8.9" cy="-68.5" rx="1.6" ry="1.4" fill="#d89a98" fill-opacity="0.55"/><ellipse cx="-8.9" cy="1.5" rx="1.6" ry="1.5" fill="#d89a98" fill-opacity="0.55"/><ellipse cx="-8.9" cy="71.5" rx="1.6" ry="1.2" fill="#d89a98" fill-opacity="0.55"/><ellipse cx="61.1" cy="-68.5" rx="1.6" ry="1.3" fill="#d89a98" fill-opacity="0.55"/><ellipse cx="61.1" cy="1.5" rx="1.6" ry="0.8" fill="#d89a98" fill-opacity="0.55"/><ellipse cx="61.1" cy="71.5" rx="1.6" ry="1.1" fill="#d89a98" fill-opacity="0.55"/><ellipse cx="131.1" cy="-68.5" rx="1.6" ry="1.5" fill="#d89a98" fill-opacity="0.55"/><ellipse cx="131.1" cy="1.5" rx="1.6" ry="1.4" fill="#d89a98" fill-opacity="0.55"/><ellipse cx="131.1" cy="71.5" rx="1.6" ry="1.5" fill="#d89a98" fill-opacity="0.55"/><ellipse cx="-1.9" cy="-52.6" rx="1.8" ry="1.0" fill="#d89a98" fill-opacity="0.55"/><ellipse cx="-1.9" cy="17.4" rx="1.8" ry="1.3" fill="#d89a98" fill-opacity="0.55"/><ellipse cx="-1.9" cy="87.4" rx="1.8" ry="1.5" fill="#d89a98" fill-opacity="0.55"/><ellipse cx="68.1" cy="-52.6" rx="1.8" ry="1.7" fill="#d89a98" fill-opacity="0.55"/><ellipse cx="68.1" cy="17.4" rx="1.8" ry="1.5" fill="#d89a98" fill-opacity="0.55"/><ellipse cx="68.1" cy="87.4" rx="1.8" ry="1.5" fill="#d89a98" fill-opacity="0.55"/><ellipse cx="138.1" cy="-52.6" rx="1.8" ry="1.6" fill="#d89a98" fill-opacity="0.55"/><ellipse cx="138.1" cy="17.4" rx="1.8" ry="1.3" fill="#d89a98" fill-opacity="0.55"/><ellipse cx="138.1" cy="87.4" rx="1.8" ry="1.4" fill="#d89a98" fill-opacity="0.55"/><ellipse cx="-67.2" cy="-15.2" rx="2.1" ry="2.0" fill="#d89a98" fill-opacity="0.55"/><ellipse cx="-67.2" cy="54.8" rx="2.1" ry="1.7" fill="#d89a98" fill-opacity="0.55"/><ellipse cx="-67.2" cy="124.8" rx="2.1" ry="1.4" fill="#d89a98" fill-opacity="0.55"/><ellipse cx="2.8" cy="-15.2" rx="2.1" ry="1.2" fill="#d89a98" fill-opacity="0.55"/><ellipse cx="2.8" cy="54.8" rx="2.1" ry="1.3" fill="#d89a98" fill-opacity="0.55"/><ellipse cx="2.8" cy="124.8" rx="2.1" ry="1.7" fill="#d89a98" fill-opacity="0.55"/><ellipse cx="72.8" cy="-15.2" rx="2.1" ry="1.8" fill="#d89a98" fill-opacity="0.55"/><ellipse cx="72.8" cy="54.8" rx="2.1" ry="1.2" fill="#d89a98" fill-opacity="0.55"/><ellipse cx="72.8" cy="124.8" rx="2.1" ry="1.1" fill="#d89a98" fill-opacity="0.55"/><ellipse cx="-33.3" cy="-29.2" rx="2.5" ry="1.5" fill="#d89a98" fill-opacity="0.55"/><ellipse cx="-33.3" cy="40.8" rx="2.5" ry="2.0" fill="#d89a98" fill-opacity="0.55"/><ellipse cx="-33.3" cy="110.8" rx="2.5" ry="1.2" fill="#d89a98" fill-opacity="0.55"/><ellipse cx="36.7" cy="-29.2" rx="2.5" ry="1.6" fill="#d89a98" fill-opacity="0.55"/><ellipse cx="36.7" cy="40.8" rx="2.5" ry="1.8" fill="#d89a98" fill-opacity="0.55"/><ellipse cx="36.7" cy="110.8" rx="2.5" ry="2.4" fill="#d89a98" fill-opacity="0.55"/><ellipse cx="106.7" cy="-29.2" rx="2.5" ry="2.0" fill="#d89a98" fill-opacity="0.55"/><ellipse cx="106.7" cy="40.8" rx="2.5" ry="2.3" fill="#d89a98" fill-opacity="0.55"/><ellipse cx="106.7" cy="110.8" rx="2.5" ry="1.8" fill="#d89a98" fill-opacity="0.55"/><ellipse cx="-53.6" cy="-52.7" rx="3.9" ry="3.3" fill="#d89a98" fill-opacity="0.55"/><ellipse cx="-53.6" cy="17.3" rx="3.9" ry="2.6" fill="#d89a98" fill-opacity="0.55"/><ellipse cx="-53.6" cy="87.3" rx="3.9" ry="2.0" fill="#d89a98" fill-opacity="0.55"/><ellipse cx="16.4" cy="-52.7" rx="3.9" ry="2.9" fill="#d89a98" fill-opacity="0.55"/><ellipse cx="16.4" cy="17.3" rx="3.9" ry="3.3" fill="#d89a98" fill-opacity="0.55"/><ellipse cx="16.4" cy="87.3" rx="3.9" ry="2.8" fill="#d89a98" fill-opacity="0.55"/><ellipse cx="86.4" cy="-52.7" rx="3.9" ry="2.5" fill="#d89a98" fill-opacity="0.55"/><ellipse cx="86.4" cy="17.3" rx="3.9" ry="3.3" fill="#d89a98" fill-opacity="0.55"/><ellipse cx="86.4" cy="87.3" rx="3.9" ry="3.8" fill="#d89a98" fill-opacity="0.55"/><ellipse cx="-54.1" cy="-67.6" rx="2.3" ry="1.7" fill="#d89a98" fill-opacity="0.55"/><ellipse cx="-54.1" cy="2.4" rx="2.3" ry="2.0" fill="#d89a98" fill-opacity="0.55"/><ellipse cx="-54.1" cy="72.4" rx="2.3" ry="1.4" fill="#d89a98" fill-opacity="0.55"/><ellipse cx="15.9" cy="-67.6" rx="2.3" ry="2.1" fill="#d89a98" fill-opacity="0.55"/><ellipse cx="15.9" cy="2.4" rx="2.3" ry="2.0" fill="#d89a98" fill-opacity="0.55"/><ellipse cx="15.9" cy="72.4" rx="2.3" ry="1.8" fill="#d89a98" fill-opacity="0.55"/><ellipse cx="85.9" cy="-67.6" rx="2.3" ry="1.4" fill="#d89a98" fill-opacity="0.55"/><ellipse cx="85.9" cy="2.4" rx="2.3" ry="2.3" fill="#d89a98" fill-opacity="0.55"/><ellipse cx="85.9" cy="72.4" rx="2.3" ry="1.5" fill="#d89a98" fill-opacity="0.55"/></pattern><pattern id="prurbT" width="70" height="70" patternUnits="userSpaceOnUse" patternTransform="scale(3.84)"><ellipse cx="-12.6" cy="-53.8" rx="2.1" ry="1.8" fill="#d89a98" fill-opacity="0.55"/><ellipse cx="-12.6" cy="16.2" rx="2.1" ry="1.3" fill="#d89a98" fill-opacity="0.55"/><ellipse cx="-12.6" cy="86.2" rx="2.1" ry="2.0" fill="#d89a98" fill-opacity="0.55"/><ellipse cx="57.4" cy="-53.8" rx="2.1" ry="1.5" fill="#d89a98" fill-opacity="0.55"/><ellipse cx="57.4" cy="16.2" rx="2.1" ry="1.2" fill="#d89a98" fill-opacity="0.55"/><ellipse cx="57.4" cy="86.2" rx="2.1" ry="1.3" fill="#d89a98" fill-opacity="0.55"/><ellipse cx="127.4" cy="-53.8" rx="2.1" ry="1.5" fill="#d89a98" fill-opacity="0.55"/><ellipse cx="127.4" cy="16.2" rx="2.1" ry="1.7" fill="#d89a98" fill-opacity="0.55"/><ellipse cx="127.4" cy="86.2" rx="2.1" ry="2.0" fill="#d89a98" fill-opacity="0.55"/><ellipse cx="-59.8" cy="-42.5" rx="2.0" ry="2.0" fill="#d89a98" fill-opacity="0.55"/><ellipse cx="-59.8" cy="27.5" rx="2.0" ry="1.2" fill="#d89a98" fill-opacity="0.55"/><ellipse cx="-59.8" cy="97.5" rx="2.0" ry="1.1" fill="#d89a98" fill-opacity="0.55"/><ellipse cx="10.2" cy="-42.5" rx="2.0" ry="1.1" fill="#d89a98" fill-opacity="0.55"/><ellipse cx="10.2" cy="27.5" rx="2.0" ry="1.4" fill="#d89a98" fill-opacity="0.55"/><ellipse cx="10.2" cy="97.5" rx="2.0" ry="1.9" fill="#d89a98" fill-opacity="0.55"/><ellipse cx="80.2" cy="-42.5" rx="2.0" ry="1.9" fill="#d89a98" fill-opacity="0.55"/><ellipse cx="80.2" cy="27.5" rx="2.0" ry="1.8" fill="#d89a98" fill-opacity="0.55"/><ellipse cx="80.2" cy="97.5" rx="2.0" ry="2.0" fill="#d89a98" fill-opacity="0.55"/><ellipse cx="-4.8" cy="-47.0" rx="2.0" ry="1.9" fill="#d89a98" fill-opacity="0.55"/><ellipse cx="-4.8" cy="23.0" rx="2.0" ry="1.7" fill="#d89a98" fill-opacity="0.55"/><ellipse cx="-4.8" cy="93.0" rx="2.0" ry="1.0" fill="#d89a98" fill-opacity="0.55"/><ellipse cx="65.2" cy="-47.0" rx="2.0" ry="1.6" fill="#d89a98" fill-opacity="0.55"/><ellipse cx="65.2" cy="23.0" rx="2.0" ry="1.4" fill="#d89a98" fill-opacity="0.55"/><ellipse cx="65.2" cy="93.0" rx="2.0" ry="1.3" fill="#d89a98" fill-opacity="0.55"/><ellipse cx="135.2" cy="-47.0" rx="2.0" ry="1.3" fill="#d89a98" fill-opacity="0.55"/><ellipse cx="135.2" cy="23.0" rx="2.0" ry="1.1" fill="#d89a98" fill-opacity="0.55"/><ellipse cx="135.2" cy="93.0" rx="2.0" ry="1.0" fill="#d89a98" fill-opacity="0.55"/><ellipse cx="-50.4" cy="-45.4" rx="3.9" ry="2.2" fill="#d89a98" fill-opacity="0.55"/><ellipse cx="-50.4" cy="24.6" rx="3.9" ry="3.8" fill="#d89a98" fill-opacity="0.55"/><ellipse cx="-50.4" cy="94.6" rx="3.9" ry="2.3" fill="#d89a98" fill-opacity="0.55"/><ellipse cx="19.6" cy="-45.4" rx="3.9" ry="2.6" fill="#d89a98" fill-opacity="0.55"/><ellipse cx="19.6" cy="24.6" rx="3.9" ry="3.5" fill="#d89a98" fill-opacity="0.55"/><ellipse cx="19.6" cy="94.6" rx="3.9" ry="3.5" fill="#d89a98" fill-opacity="0.55"/><ellipse cx="89.6" cy="-45.4" rx="3.9" ry="2.8" fill="#d89a98" fill-opacity="0.55"/><ellipse cx="89.6" cy="24.6" rx="3.9" ry="2.0" fill="#d89a98" fill-opacity="0.55"/><ellipse cx="89.6" cy="94.6" rx="3.9" ry="2.9" fill="#d89a98" fill-opacity="0.55"/><ellipse cx="-43.9" cy="-5.6" rx="2.0" ry="1.4" fill="#d89a98" fill-opacity="0.55"/><ellipse cx="-43.9" cy="64.4" rx="2.0" ry="1.9" fill="#d89a98" fill-opacity="0.55"/><ellipse cx="-43.9" cy="134.4" rx="2.0" ry="1.0" fill="#d89a98" fill-opacity="0.55"/><ellipse cx="26.1" cy="-5.6" rx="2.0" ry="1.4" fill="#d89a98" fill-opacity="0.55"/><ellipse cx="26.1" cy="64.4" rx="2.0" ry="1.8" fill="#d89a98" fill-opacity="0.55"/><ellipse cx="26.1" cy="134.4" rx="2.0" ry="1.8" fill="#d89a98" fill-opacity="0.55"/><ellipse cx="96.1" cy="-5.6" rx="2.0" ry="1.0" fill="#d89a98" fill-opacity="0.55"/><ellipse cx="96.1" cy="64.4" rx="2.0" ry="1.0" fill="#d89a98" fill-opacity="0.55"/><ellipse cx="96.1" cy="134.4" rx="2.0" ry="1.1" fill="#d89a98" fill-opacity="0.55"/><ellipse cx="-5.6" cy="-52.0" rx="3.4" ry="3.2" fill="#d89a98" fill-opacity="0.55"/><ellipse cx="-5.6" cy="18.0" rx="3.4" ry="2.3" fill="#d89a98" fill-opacity="0.55"/><ellipse cx="-5.6" cy="88.0" rx="3.4" ry="2.1" fill="#d89a98" fill-opacity="0.55"/><ellipse cx="64.4" cy="-52.0" rx="3.4" ry="3.3" fill="#d89a98" fill-opacity="0.55"/><ellipse cx="64.4" cy="18.0" rx="3.4" ry="2.7" fill="#d89a98" fill-opacity="0.55"/><ellipse cx="64.4" cy="88.0" rx="3.4" ry="2.1" fill="#d89a98" fill-opacity="0.55"/><ellipse cx="134.4" cy="-52.0" rx="3.4" ry="2.9" fill="#d89a98" fill-opacity="0.55"/><ellipse cx="134.4" cy="18.0" rx="3.4" ry="2.2" fill="#d89a98" fill-opacity="0.55"/><ellipse cx="134.4" cy="88.0" rx="3.4" ry="2.1" fill="#d89a98" fill-opacity="0.55"/><ellipse cx="-69.7" cy="-17.1" rx="3.8" ry="3.1" fill="#d89a98" fill-opacity="0.55"/><ellipse cx="-69.7" cy="52.9" rx="3.8" ry="3.7" fill="#d89a98" fill-opacity="0.55"/><ellipse cx="-69.7" cy="122.9" rx="3.8" ry="1.9" fill="#d89a98" fill-opacity="0.55"/><ellipse cx="0.3" cy="-17.1" rx="3.8" ry="2.3" fill="#d89a98" fill-opacity="0.55"/><ellipse cx="0.3" cy="52.9" rx="3.8" ry="2.8" fill="#d89a98" fill-opacity="0.55"/><ellipse cx="0.3" cy="122.9" rx="3.8" ry="3.7" fill="#d89a98" fill-opacity="0.55"/><ellipse cx="70.3" cy="-17.1" rx="3.8" ry="3.7" fill="#d89a98" fill-opacity="0.55"/><ellipse cx="70.3" cy="52.9" rx="3.8" ry="2.6" fill="#d89a98" fill-opacity="0.55"/><ellipse cx="70.3" cy="122.9" rx="3.8" ry="2.4" fill="#d89a98" fill-opacity="0.55"/></pattern><pattern id="porth" width="50" height="50" patternUnits="userSpaceOnUse" patternTransform="scale(3.84)"><ellipse cx="-28.5" cy="-25.3" rx="2.1" ry="1.2" fill="#7a4046" fill-opacity="0.18"/><ellipse cx="-28.5" cy="24.7" rx="2.1" ry="1.9" fill="#7a4046" fill-opacity="0.18"/><ellipse cx="-28.5" cy="74.7" rx="2.1" ry="1.8" fill="#7a4046" fill-opacity="0.18"/><ellipse cx="21.5" cy="-25.3" rx="2.1" ry="1.9" fill="#7a4046" fill-opacity="0.18"/><ellipse cx="21.5" cy="24.7" rx="2.1" ry="1.8" fill="#7a4046" fill-opacity="0.18"/><ellipse cx="21.5" cy="74.7" rx="2.1" ry="1.7" fill="#7a4046" fill-opacity="0.18"/><ellipse cx="71.5" cy="-25.3" rx="2.1" ry="1.4" fill="#7a4046" fill-opacity="0.18"/><ellipse cx="71.5" cy="24.7" rx="2.1" ry="1.4" fill="#7a4046" fill-opacity="0.18"/><ellipse cx="71.5" cy="74.7" rx="2.1" ry="1.4" fill="#7a4046" fill-opacity="0.18"/><ellipse cx="-10.9" cy="-46.0" rx="0.9" ry="0.8" fill="#7a4046" fill-opacity="0.18"/><ellipse cx="-10.9" cy="4.0" rx="0.9" ry="0.6" fill="#7a4046" fill-opacity="0.18"/><ellipse cx="-10.9" cy="54.0" rx="0.9" ry="0.5" fill="#7a4046" fill-opacity="0.18"/><ellipse cx="39.1" cy="-46.0" rx="0.9" ry="0.5" fill="#7a4046" fill-opacity="0.18"/><ellipse cx="39.1" cy="4.0" rx="0.9" ry="0.7" fill="#7a4046" fill-opacity="0.18"/><ellipse cx="39.1" cy="54.0" rx="0.9" ry="0.6" fill="#7a4046" fill-opacity="0.18"/><ellipse cx="89.1" cy="-46.0" rx="0.9" ry="0.9" fill="#7a4046" fill-opacity="0.18"/><ellipse cx="89.1" cy="4.0" rx="0.9" ry="0.9" fill="#7a4046" fill-opacity="0.18"/><ellipse cx="89.1" cy="54.0" rx="0.9" ry="0.9" fill="#7a4046" fill-opacity="0.18"/><ellipse cx="-36.8" cy="-45.8" rx="0.8" ry="0.6" fill="#7a4046" fill-opacity="0.18"/><ellipse cx="-36.8" cy="4.2" rx="0.8" ry="0.6" fill="#7a4046" fill-opacity="0.18"/><ellipse cx="-36.8" cy="54.2" rx="0.8" ry="0.5" fill="#7a4046" fill-opacity="0.18"/><ellipse cx="13.2" cy="-45.8" rx="0.8" ry="0.5" fill="#7a4046" fill-opacity="0.18"/><ellipse cx="13.2" cy="4.2" rx="0.8" ry="0.5" fill="#7a4046" fill-opacity="0.18"/><ellipse cx="13.2" cy="54.2" rx="0.8" ry="0.6" fill="#7a4046" fill-opacity="0.18"/><ellipse cx="63.2" cy="-45.8" rx="0.8" ry="0.6" fill="#7a4046" fill-opacity="0.18"/><ellipse cx="63.2" cy="4.2" rx="0.8" ry="0.7" fill="#7a4046" fill-opacity="0.18"/><ellipse cx="63.2" cy="54.2" rx="0.8" ry="0.7" fill="#7a4046" fill-opacity="0.18"/><ellipse cx="-16.8" cy="-43.9" rx="1.9" ry="1.3" fill="#7a4046" fill-opacity="0.18"/><ellipse cx="-16.8" cy="6.1" rx="1.9" ry="1.5" fill="#7a4046" fill-opacity="0.18"/><ellipse cx="-16.8" cy="56.1" rx="1.9" ry="1.3" fill="#7a4046" fill-opacity="0.18"/><ellipse cx="33.2" cy="-43.9" rx="1.9" ry="1.7" fill="#7a4046" fill-opacity="0.18"/><ellipse cx="33.2" cy="6.1" rx="1.9" ry="1.2" fill="#7a4046" fill-opacity="0.18"/><ellipse cx="33.2" cy="56.1" rx="1.9" ry="1.2" fill="#7a4046" fill-opacity="0.18"/><ellipse cx="83.2" cy="-43.9" rx="1.9" ry="1.2" fill="#7a4046" fill-opacity="0.18"/><ellipse cx="83.2" cy="6.1" rx="1.9" ry="1.1" fill="#7a4046" fill-opacity="0.18"/><ellipse cx="83.2" cy="56.1" rx="1.9" ry="1.8" fill="#7a4046" fill-opacity="0.18"/><ellipse cx="-21.1" cy="-33.7" rx="1.2" ry="1.2" fill="#7a4046" fill-opacity="0.18"/><ellipse cx="-21.1" cy="16.3" rx="1.2" ry="0.9" fill="#7a4046" fill-opacity="0.18"/><ellipse cx="-21.1" cy="66.3" rx="1.2" ry="0.8" fill="#7a4046" fill-opacity="0.18"/><ellipse cx="28.9" cy="-33.7" rx="1.2" ry="1.1" fill="#7a4046" fill-opacity="0.18"/><ellipse cx="28.9" cy="16.3" rx="1.2" ry="1.0" fill="#7a4046" fill-opacity="0.18"/><ellipse cx="28.9" cy="66.3" rx="1.2" ry="1.2" fill="#7a4046" fill-opacity="0.18"/><ellipse cx="78.9" cy="-33.7" rx="1.2" ry="0.7" fill="#7a4046" fill-opacity="0.18"/><ellipse cx="78.9" cy="16.3" rx="1.2" ry="0.9" fill="#7a4046" fill-opacity="0.18"/><ellipse cx="78.9" cy="66.3" rx="1.2" ry="1.1" fill="#7a4046" fill-opacity="0.18"/><ellipse cx="-8.0" cy="-4.3" rx="0.7" ry="0.4" fill="#7a4046" fill-opacity="0.18"/><ellipse cx="-8.0" cy="45.7" rx="0.7" ry="0.4" fill="#7a4046" fill-opacity="0.18"/><ellipse cx="-8.0" cy="95.7" rx="0.7" ry="0.4" fill="#7a4046" fill-opacity="0.18"/><ellipse cx="42.0" cy="-4.3" rx="0.7" ry="0.7" fill="#7a4046" fill-opacity="0.18"/><ellipse cx="42.0" cy="45.7" rx="0.7" ry="0.5" fill="#7a4046" fill-opacity="0.18"/><ellipse cx="42.0" cy="95.7" rx="0.7" ry="0.6" fill="#7a4046" fill-opacity="0.18"/><ellipse cx="92.0" cy="-4.3" rx="0.7" ry="0.5" fill="#7a4046" fill-opacity="0.18"/><ellipse cx="92.0" cy="45.7" rx="0.7" ry="0.6" fill="#7a4046" fill-opacity="0.18"/><ellipse cx="92.0" cy="95.7" rx="0.7" ry="0.5" fill="#7a4046" fill-opacity="0.18"/><ellipse cx="-37.0" cy="-11.1" rx="2.1" ry="1.2" fill="#7a4046" fill-opacity="0.18"/><ellipse cx="-37.0" cy="38.9" rx="2.1" ry="1.7" fill="#7a4046" fill-opacity="0.18"/><ellipse cx="-37.0" cy="88.9" rx="2.1" ry="1.7" fill="#7a4046" fill-opacity="0.18"/><ellipse cx="13.0" cy="-11.1" rx="2.1" ry="1.3" fill="#7a4046" fill-opacity="0.18"/><ellipse cx="13.0" cy="38.9" rx="2.1" ry="1.4" fill="#7a4046" fill-opacity="0.18"/><ellipse cx="13.0" cy="88.9" rx="2.1" ry="1.2" fill="#7a4046" fill-opacity="0.18"/><ellipse cx="63.0" cy="-11.1" rx="2.1" ry="1.3" fill="#7a4046" fill-opacity="0.18"/><ellipse cx="63.0" cy="38.9" rx="2.1" ry="1.3" fill="#7a4046" fill-opacity="0.18"/><ellipse cx="63.0" cy="88.9" rx="2.1" ry="1.7" fill="#7a4046" fill-opacity="0.18"/><ellipse cx="-17.4" cy="-39.8" rx="0.6" ry="0.4" fill="#7a4046" fill-opacity="0.18"/><ellipse cx="-17.4" cy="10.2" rx="0.6" ry="0.5" fill="#7a4046" fill-opacity="0.18"/><ellipse cx="-17.4" cy="60.2" rx="0.6" ry="0.4" fill="#7a4046" fill-opacity="0.18"/><ellipse cx="32.6" cy="-39.8" rx="0.6" ry="0.4" fill="#7a4046" fill-opacity="0.18"/><ellipse cx="32.6" cy="10.2" rx="0.6" ry="0.4" fill="#7a4046" fill-opacity="0.18"/><ellipse cx="32.6" cy="60.2" rx="0.6" ry="0.6" fill="#7a4046" fill-opacity="0.18"/><ellipse cx="82.6" cy="-39.8" rx="0.6" ry="0.5" fill="#7a4046" fill-opacity="0.18"/><ellipse cx="82.6" cy="10.2" rx="0.6" ry="0.3" fill="#7a4046" fill-opacity="0.18"/><ellipse cx="82.6" cy="60.2" rx="0.6" ry="0.3" fill="#7a4046" fill-opacity="0.18"/><ellipse cx="-30.2" cy="-22.5" rx="1.6" ry="0.9" fill="#7a4046" fill-opacity="0.18"/><ellipse cx="-30.2" cy="27.5" rx="1.6" ry="0.9" fill="#7a4046" fill-opacity="0.18"/><ellipse cx="-30.2" cy="77.5" rx="1.6" ry="1.4" fill="#7a4046" fill-opacity="0.18"/><ellipse cx="19.8" cy="-22.5" rx="1.6" ry="1.1" fill="#7a4046" fill-opacity="0.18"/><ellipse cx="19.8" cy="27.5" rx="1.6" ry="1.0" fill="#7a4046" fill-opacity="0.18"/><ellipse cx="19.8" cy="77.5" rx="1.6" ry="1.1" fill="#7a4046" fill-opacity="0.18"/><ellipse cx="69.8" cy="-22.5" rx="1.6" ry="1.6" fill="#7a4046" fill-opacity="0.18"/><ellipse cx="69.8" cy="27.5" rx="1.6" ry="1.1" fill="#7a4046" fill-opacity="0.18"/><ellipse cx="69.8" cy="77.5" rx="1.6" ry="1.3" fill="#7a4046" fill-opacity="0.18"/><ellipse cx="-32.1" cy="-29.2" rx="2.0" ry="2.0" fill="#7a4046" fill-opacity="0.18"/><ellipse cx="-32.1" cy="20.8" rx="2.0" ry="1.4" fill="#7a4046" fill-opacity="0.18"/><ellipse cx="-32.1" cy="70.8" rx="2.0" ry="1.2" fill="#7a4046" fill-opacity="0.18"/><ellipse cx="17.9" cy="-29.2" rx="2.0" ry="1.7" fill="#7a4046" fill-opacity="0.18"/><ellipse cx="17.9" cy="20.8" rx="2.0" ry="1.2" fill="#7a4046" fill-opacity="0.18"/><ellipse cx="17.9" cy="70.8" rx="2.0" ry="1.0" fill="#7a4046" fill-opacity="0.18"/><ellipse cx="67.9" cy="-29.2" rx="2.0" ry="1.9" fill="#7a4046" fill-opacity="0.18"/><ellipse cx="67.9" cy="20.8" rx="2.0" ry="1.4" fill="#7a4046" fill-opacity="0.18"/><ellipse cx="67.9" cy="70.8" rx="2.0" ry="1.8" fill="#7a4046" fill-opacity="0.18"/><ellipse cx="-29.7" cy="-5.9" rx="1.3" ry="0.8" fill="#7a4046" fill-opacity="0.18"/><ellipse cx="-29.7" cy="44.1" rx="1.3" ry="0.7" fill="#7a4046" fill-opacity="0.18"/><ellipse cx="-29.7" cy="94.1" rx="1.3" ry="1.0" fill="#7a4046" fill-opacity="0.18"/><ellipse cx="20.3" cy="-5.9" rx="1.3" ry="1.1" fill="#7a4046" fill-opacity="0.18"/><ellipse cx="20.3" cy="44.1" rx="1.3" ry="1.3" fill="#7a4046" fill-opacity="0.18"/><ellipse cx="20.3" cy="94.1" rx="1.3" ry="0.7" fill="#7a4046" fill-opacity="0.18"/><ellipse cx="70.3" cy="-5.9" rx="1.3" ry="1.1" fill="#7a4046" fill-opacity="0.18"/><ellipse cx="70.3" cy="44.1" rx="1.3" ry="0.9" fill="#7a4046" fill-opacity="0.18"/><ellipse cx="70.3" cy="94.1" rx="1.3" ry="1.0" fill="#7a4046" fill-opacity="0.18"/><ellipse cx="-42.7" cy="-35.8" rx="1.4" ry="1.4" fill="#7a4046" fill-opacity="0.18"/><ellipse cx="-42.7" cy="14.2" rx="1.4" ry="0.8" fill="#7a4046" fill-opacity="0.18"/><ellipse cx="-42.7" cy="64.2" rx="1.4" ry="1.1" fill="#7a4046" fill-opacity="0.18"/><ellipse cx="7.3" cy="-35.8" rx="1.4" ry="1.3" fill="#7a4046" fill-opacity="0.18"/><ellipse cx="7.3" cy="14.2" rx="1.4" ry="1.4" fill="#7a4046" fill-opacity="0.18"/><ellipse cx="7.3" cy="64.2" rx="1.4" ry="0.9" fill="#7a4046" fill-opacity="0.18"/><ellipse cx="57.3" cy="-35.8" rx="1.4" ry="0.8" fill="#7a4046" fill-opacity="0.18"/><ellipse cx="57.3" cy="14.2" rx="1.4" ry="1.4" fill="#7a4046" fill-opacity="0.18"/><ellipse cx="57.3" cy="64.2" rx="1.4" ry="1.4" fill="#7a4046" fill-opacity="0.18"/></pattern></defs><g clip-path="url(#cl0)"><rect x="300" y="199" width="300" height="271" fill="#b9907f"/><rect x="300" y="199" width="300" height="271" fill="url(#prur)"/><g transform="translate(300,199) scale(0.26062)"><path d="M560,290 L640,280 L700,320 L770,320 L760,380 L720,400 L760,470 L830,490 L900,520 L960,580 L930,660 L923.3,722.6 L900,760 L927.2,823.2 L950,900 L982.2,966.5 L1000,1040 L948.4,1035.5 L882,1048.2 L806.5,1035.3 L760,1040 L777.1,964.3 L800,900 L778.4,834.6 L731.9,787.9 L700,740 L654.7,684.3 L640.9,646.4 L606.8,601.5 L560,560 L555.4,497.1 L548.2,438.2 L567.5,408.9 L572.4,350.2Z" fill="#d49a97" /><path d="M560,290 L640,280 L700,320 L770,320 L760,380 L720,400 L760,470 L830,490 L900,520 L960,580 L930,660 L923.3,722.6 L900,760 L927.2,823.2 L950,900 L982.2,966.5 L1000,1040 L948.4,1035.5 L882,1048.2 L806.5,1035.3 L760,1040 L777.1,964.3 L800,900 L778.4,834.6 L731.9,787.9 L700,740 L654.7,684.3 L640.9,646.4 L606.8,601.5 L560,560 L555.4,497.1 L548.2,438.2 L567.5,408.9 L572.4,350.2Z" fill="url(#purb)" /><path d="M560,290 L640,280 L700,320 L770,320 L760,380 L720,400 L760,470 L830,490 L900,520 L960,580 L930,660 L923.3,722.6 L900,760 L927.2,823.2 L950,900 L982.2,966.5 L1000,1040 L948.4,1035.5 L882,1048.2 L806.5,1035.3 L760,1040 L777.1,964.3 L800,900 L778.4,834.6 L731.9,787.9 L700,740 L654.7,684.3 L640.9,646.4 L606.8,601.5 L560,560 L555.4,497.1 L548.2,438.2 L567.5,408.9 L572.4,350.2Z" fill="url(#purb2)" /><path d="M0,450 L60.7,457.8 L100,460 L94.4,542.5 L90,600 L88.1,644.3 L85.4,717.1 L80,760 L122.1,800.7 L150,840 L186.6,888.8 L210,950 L200,1040 L155,1043.1 L87.7,1052.5 L59.6,1048 L0,1040 L-6.5,994.2 L-4,920.3 L11.2,884.9 L-6.8,824.4 L-8.9,782.7 L-4.8,727.8 L-2.3,666.7 L-6.5,597.9 L-13.2,548.2 L-3,491.7Z" fill="#d49a97" /><path d="M0,450 L60.7,457.8 L100,460 L94.4,542.5 L90,600 L88.1,644.3 L85.4,717.1 L80,760 L122.1,800.7 L150,840 L186.6,888.8 L210,950 L200,1040 L155,1043.1 L87.7,1052.5 L59.6,1048 L0,1040 L-6.5,994.2 L-4,920.3 L11.2,884.9 L-6.8,824.4 L-8.9,782.7 L-4.8,727.8 L-2.3,666.7 L-6.5,597.9 L-13.2,548.2 L-3,491.7Z" fill="url(#purb)" /><path d="M0,450 L60.7,457.8 L100,460 L94.4,542.5 L90,600 L88.1,644.3 L85.4,717.1 L80,760 L122.1,800.7 L150,840 L186.6,888.8 L210,950 L200,1040 L155,1043.1 L87.7,1052.5 L59.6,1048 L0,1040 L-6.5,994.2 L-4,920.3 L11.2,884.9 L-6.8,824.4 L-8.9,782.7 L-4.8,727.8 L-2.3,666.7 L-6.5,597.9 L-13.2,548.2 L-3,491.7Z" fill="url(#purb2)" /><path d="M340,180 L394.3,167.7 L450,170 L520,200 L488.5,246.9 L470,300 L380,330 L330,280 L329,228.9Z" fill="#d49a97" /><path d="M340,180 L394.3,167.7 L450,170 L520,200 L488.5,246.9 L470,300 L380,330 L330,280 L329,228.9Z" fill="url(#purb)" /><path d="M340,180 L394.3,167.7 L450,170 L520,200 L488.5,246.9 L470,300 L380,330 L330,280 L329,228.9Z" fill="url(#purb2)" /></g><path d="M350.4,322.3 L345.4,329.1 L338.9,324.5 L339.2,320.2 L346.1,314.8Z" fill="#cf9c98" fill-opacity=".7"/><path d="M395.1,407.1 L393.7,410.4 L389.4,408.5 L389.4,405.2 L394.1,403.4Z" fill="#cf9c98" fill-opacity=".7"/><path d="M496.5,232.6 L495.3,234.2 L492.3,234.3 L493.2,231.4 L495.3,229.9Z" fill="#cf9c98" fill-opacity=".7"/><path d="M472,461.5 L467.7,465.4 L461.9,464.5 L462.7,457.7 L467.5,456.8Z" fill="#c6a28c" fill-opacity=".7"/><path d="M548.3,440.3 L546.3,446.1 L539,443.4 L540,437.1 L545.3,434.7Z" fill="#c6a28c" fill-opacity=".7"/><path d="M353.1,403.3 L351.2,407.3 L345.7,406.8 L344.5,399.5 L351.2,398.8Z" fill="#cf9c98" fill-opacity=".7"/><path d="M339.6,251.3 L335.5,257.2 L330.8,254.4 L330.1,248.2 L335.6,246.7Z" fill="#c6a28c" fill-opacity=".7"/><path d="M352.2,415.5 L349.9,419.4 L344.8,419.5 L344.9,413.1 L351,410Z" fill="#cf9c98" fill-opacity=".7"/><path d="M445.4,292.1 L443.3,295 L439.6,294.5 L437.6,289.4 L444.1,288.4Z" fill="#cf9c98" fill-opacity=".7"/><path d="M519.4,250.6 L514.9,256 L505.7,256.2 L507.4,247.5 L514.5,246.4Z" fill="#cf9c98" fill-opacity=".7"/><path d="M500.6,368.7 L495,374.3 L487,371.4 L485.9,366.6 L494.9,363.6Z" fill="#c6a28c" fill-opacity=".7"/><path d="M345.6,440.4 L343.8,441.9 L341.5,441.6 L341.8,439.5 L343.9,438.3Z" fill="#cf9c98" fill-opacity=".7"/><path d="M490.6,370.5 L488.2,372.7 L484.7,372.3 L485.9,369.1 L488.4,367.5Z" fill="#c6a28c" fill-opacity=".7"/><path d="M328.8,211.6 L327.1,214.3 L322.5,213.3 L322.7,208.2 L327.1,206.8Z" fill="#cf9c98" fill-opacity=".7"/><path d="M356.1,456.4 L352.2,463.2 L345.3,458.6 L345,452.4 L353.4,452.1Z" fill="#c6a28c" fill-opacity=".7"/><path d="M535.3,293.4 L534.6,294.9 L531.9,294.2 L532.1,292 L534.4,292Z" fill="#c6a28c" fill-opacity=".7"/><path d="M558,358.4 L556.6,360.9 L554.6,359.8 L554.3,356.5 L556.1,356.7Z" fill="#c6a28c" fill-opacity=".7"/><path d="M340.7,280.3 L337.5,282.8 L334.1,282.1 L332.5,278 L337.5,276.3Z" fill="#cf9c98" fill-opacity=".7"/><path d="M398.4,254.2 L395.8,256.1 L390.9,255.6 L391.3,251.7 L395.2,250.9Z" fill="#c6a28c" fill-opacity=".7"/><path d="M305.9,333.7 L303.1,336.9 L299.6,335.7 L297.8,330.4 L303.2,331.3Z" fill="#cf9c98" fill-opacity=".7"/><path d="M560.4,246.7 L558.1,252.1 L553.2,250.5 L552.7,243.9 L558,240.4Z" fill="#cf9c98" fill-opacity=".7"/><path d="M454.8,466.7 L451.1,472.6 L444.7,470.8 L445.8,463.6 L451.2,459.3Z" fill="#c6a28c" fill-opacity=".7"/><path d="M405.9,408.7 L403,412.3 L399.3,410.6 L397.5,405 L403.9,405Z" fill="#c6a28c" fill-opacity=".7"/><path d="M405.3,386.4 L402.5,391.8 L396.5,390.1 L395.7,383.8 L402.6,382.1Z" fill="#cf9c98" fill-opacity=".7"/><path d="M594.7,454.5 L590,459.9 L585,458.2 L585.4,452.2 L590.8,449.9Z" fill="#c6a28c" fill-opacity=".7"/><path d="M317.5,384.5 L314.8,391.3 L307.1,388.3 L308.4,380.1 L315.6,378.4Z" fill="#cf9c98" fill-opacity=".7"/><path d="M596.7,247.1 L592.4,252.3 L587,251 L588.4,244.5 L592.1,241.8Z" fill="#cf9c98" fill-opacity=".7"/><path d="M364.6,320.4 L360.9,324.1 L354.7,323.1 L356.8,317.6 L360.4,315Z" fill="#c6a28c" fill-opacity=".7"/><path d="M523.4,458.5 L520.5,461.1 L518.2,459.8 L517.5,457 L520.6,455.3Z" fill="#c6a28c" fill-opacity=".7"/><path d="M338.4,353.6 L335.9,358.8 L330.6,355.7 L331.8,349.8 L336.3,348.1Z" fill="#cf9c98" fill-opacity=".7"/><path d="M489.7,452.4 L486.2,456.8 L480.4,457 L480.6,449.7 L486.5,446.4Z" fill="#c6a28c" fill-opacity=".7"/><path d="M516.7,381.3 L514.1,386 L510,382.7 L509.9,378.9 L514,378.4Z" fill="#cf9c98" fill-opacity=".7"/><path d="M320.7,390.4 L316.6,395.8 L310,394 L310.2,386.8 L316.1,384.2Z" fill="#c6a28c" fill-opacity=".7"/><path d="M549.8,429.2 L546.2,433.6 L538.8,433.6 L540.2,426.8 L545.3,424.1Z" fill="#cf9c98" fill-opacity=".7"/><path d="M372.7,264.6 L370.7,266.5 L367.5,266.4 L368.2,262.2 L370.7,261Z" fill="#cf9c98" fill-opacity=".7"/><path d="M472.6,358.9 L470.1,363.7 L464.6,361.2 L464.8,355.5 L470.2,352.4Z" fill="#c6a28c" fill-opacity=".7"/><path d="M602.4,287.9 L598.7,292.2 L595.7,289.3 L594.9,286.4 L598.2,284.1Z" fill="#cf9c98" fill-opacity=".7"/><path d="M439.6,372.1 L437.6,375.4 L433.3,374.3 L433.3,370.8 L437.7,367.6Z" fill="#cf9c98" fill-opacity=".7"/><path d="M526.1,353.8 L524.6,359.3 L519.7,357.8 L519.7,349.4 L524.9,347.5Z" fill="#c6a28c" fill-opacity=".7"/><path d="M390.2,364.7 L388,367.3 L386.4,366.2 L385,363.4 L388.2,362.2Z" fill="#c6a28c" fill-opacity=".7"/><path d="M457.9,213 L452.3,218.1 L445.7,215.5 L445,208.9 L451.3,208.3Z" fill="#cf9c98" fill-opacity=".7"/><path d="M303.9,418.4 L300.8,420.2 L297.5,419.5 L298.1,416 L301.2,415.2Z" fill="#cf9c98" fill-opacity=".7"/><path d="M489.8,400.8 L488.3,407.2 L481.3,403.1 L481.2,398.6 L487.8,394.5Z" fill="#c6a28c" fill-opacity=".7"/><path d="M567.6,284.4 L562,291.4 L556.1,287.6 L555,282.1 L561.9,278.3Z" fill="#c6a28c" fill-opacity=".7"/><path d="M466.2,350.3 L461,355.8 L455.5,354.5 L456,347.8 L460.8,345.4Z" fill="#c6a28c" fill-opacity=".7"/><path d="M394,332.2 L391.2,335.6 L387.8,333.4 L386.8,331.1 L391.3,330.2Z" fill="#cf9c98" fill-opacity=".7"/><path d="M438.8,314.1 L434.2,318.3 L430.3,318.1 L429.2,310.1 L434.4,308.8Z" fill="#cf9c98" fill-opacity=".7"/><path d="M405.5,250.7 L400.5,257.1 L395.7,253.2 L393.7,248.8 L399.9,245.3Z" fill="#cf9c98" fill-opacity=".7"/><path d="M575.9,353.4 L573.2,355.8 L570.2,356.1 L568.5,351.9 L572.7,349.2Z" fill="#c6a28c" fill-opacity=".7"/><path d="M442.1,428.9 L436.9,432.3 L429.2,431.3 L428.2,424.5 L436.6,423.6Z" fill="#c6a28c" fill-opacity=".7"/><path d="M393.1,385.7 L391.5,390.4 L384.2,390.6 L383.3,382.6 L390.8,380.1Z" fill="#cf9c98" fill-opacity=".7"/><path d="M602.7,266.2 L599.2,270.7 L595.9,267.8 L595.8,264.7 L598.6,263.5Z" fill="#c6a28c" fill-opacity=".7"/><path d="M575.3,385 L571,390.1 L567.3,387.4 L566.1,382 L570.9,381Z" fill="#cf9c98" fill-opacity=".7"/><path d="M411.4,416.9 L409.4,420.9 L406.4,418.5 L406.4,415 L409.6,414Z" fill="#cf9c98" fill-opacity=".7"/><path d="M366.2,216.6 L360.2,224.7 L354.9,218.9 L351.6,212.9 L360.3,210.7Z" fill="#c6a28c" fill-opacity=".7"/><path d="M504.5,400 L500.7,405.2 L496.4,402.5 L494.7,396.8 L500.2,395.3Z" fill="#c6a28c" fill-opacity=".7"/><path d="M368.7,271.7 L367.4,276.5 L363.2,273.4 L364.3,269.5 L367,269.4Z" fill="#cf9c98" fill-opacity=".7"/><path d="M545.6,278.2 L544.8,281.5 L541.7,280.9 L540.5,275.9 L544.7,274.8Z" fill="#cf9c98" fill-opacity=".7"/><path d="M532.6,223.2 L530.1,226.7 L527.2,224.7 L527.4,221 L530.2,221.3Z" fill="#cf9c98" fill-opacity=".7"/><path d="M402.3,414.2 L400,420.8 L394.8,416.7 L392.6,410.4 L399.6,410Z" fill="#cf9c98" fill-opacity=".7"/><path d="M314.9,368.1 L312.8,371.6 L304.8,372.3 L305.4,365.4 L312.2,360.5Z" fill="#c6a28c" fill-opacity=".7"/><path d="M594.5,420.5 L589.4,425.3 L585.3,422.9 L585.7,417.5 L590.2,413.9Z" fill="#c6a28c" fill-opacity=".7"/><path d="M523,416 L516,427 L510,439 L500,444 L493,453 L485,458 L477,472 L480,480 L477,493 L465,502" fill="none" stroke="#a58ca8" stroke-width="1.4" stroke-opacity="0.6" stroke-linejoin="round"/><path d="M342,408 L351,419 L363,423 L376,427 L384,428 L394,426 L400,431 L404,439 L413,449 L418,456" fill="none" stroke="#a58ca8" stroke-width="1.4" stroke-opacity="0.6" stroke-linejoin="round"/><path d="M376,272 L376,256 L370,247 L360,241 L346,242 L337,246 L329,249 L325,258 L316,268 L310,276 L306,283 L307,298 L314,306 L325,317 L325,325" fill="none" stroke="#a58ca8" stroke-width="1.4" stroke-opacity="0.6" stroke-linejoin="round"/><path d="M490,211 L491,220 L500,225 L515,222 L531,223 L544,221 L557,222 L568,228 L582,222 L597,224 L604,236 L609,246 L613,260 L611,271 L606,280" fill="none" stroke="#a58ca8" stroke-width="1.4" stroke-opacity="0.6" stroke-linejoin="round"/><path d="M573,191 L576,183 L579,168 L588,162 L596,150 L605,149 L613,142 L619,136 L618,125 L607,116" fill="none" stroke="#a58ca8" stroke-width="1.4" stroke-opacity="0.6" stroke-linejoin="round"/><path d="M471,419 L481,421 L488,417 L502,419 L516,426 L520,440 L521,449 L517,458 L517,470 L527,479 L540,483 L545,492 L545,507" fill="none" stroke="#a58ca8" stroke-width="1.4" stroke-opacity="0.6" stroke-linejoin="round"/><path d="M468,470 L457,471 L443,462 L434,451 L430,438 L427,422 L418,413 L410,405 L406,398 L410,384 L405,370 L397,359 L383,357" fill="none" stroke="#a58ca8" stroke-width="1.4" stroke-opacity="0.6" stroke-linejoin="round"/><path d="M536,306 L522,305 L511,311 L503,309 L494,305 L482,302 L473,304 L466,318 L458,331 L457,341 L467,353 L476,358 L479,367 L473,380 L472,395" fill="none" stroke="#a58ca8" stroke-width="1.4" stroke-opacity="0.6" stroke-linejoin="round"/><path d="M561,307 L557,315 L552,326 L543,339 L532,348 L530,359 L517,369 L509,381 L499,389 L498,403 L487,414" fill="none" stroke="#a58ca8" stroke-width="1.4" stroke-opacity="0.6" stroke-linejoin="round"/><path d="M613,408 L625,407 L634,406 L647,406 L661,399 L677,397 L690,394 L706,396 L717,393" fill="none" stroke="#a58ca8" stroke-width="1.4" stroke-opacity="0.6" stroke-linejoin="round"/><path d="M593,257 L584,254 L575,255 L569,261 L558,262 L544,260 L534,249 L528,238 L523,231 L525,218 L519,209" fill="none" stroke="#a58ca8" stroke-width="1.4" stroke-opacity="0.6" stroke-linejoin="round"/><path d="M422,382 L426,390 L432,396 L434,407 L437,421 L437,433 L439,445 L450,453 L460,455 L473,446" fill="none" stroke="#a58ca8" stroke-width="1.4" stroke-opacity="0.6" stroke-linejoin="round"/><path d="M429,190 L437,186 L448,175 L458,166 L467,165 L481,169 L491,167 L505,175 L515,178" fill="none" stroke="#e48a62" stroke-width="2" stroke-opacity="0.75" stroke-linejoin="round"/><path d="M284,334 L300,334 L310,336 L324,331 L333,330 L343,323 L359,322 L369,325 L381,321 L392,314 L404,313 L419,316" fill="none" stroke="#e48a62" stroke-width="2" stroke-opacity="0.75" stroke-linejoin="round"/><path d="M383,358 L398,353 L407,342 L414,329 L422,327 L429,320 L432,306 L430,294 L421,286 L408,281" fill="none" stroke="#e48a62" stroke-width="2" stroke-opacity="0.75" stroke-linejoin="round"/><path d="M404,211 L395,221 L385,224 L374,219 L367,209 L353,205 L340,210 L329,210 L315,212 L306,215" fill="none" stroke="#e48a62" stroke-width="2" stroke-opacity="0.75" stroke-linejoin="round"/><path d="M321,386 L312,398 L305,406 L293,412 L278,408 L271,397 L264,384 L258,370 L244,364 L229,364 L217,369 L206,368 L198,365" fill="none" stroke="#e48a62" stroke-width="2" stroke-opacity="0.75" stroke-linejoin="round"/><path d="M358,437 L363,426 L363,415 L355,403 L357,394 L370,388 L385,386 L393,383 L408,380 L415,367 L419,356 L415,348" fill="none" stroke="#e48a62" stroke-width="2" stroke-opacity="0.75" stroke-linejoin="round"/><path d="M386,209 L375,215 L368,229 L362,236 L360,249 L364,259 L371,265 L380,272 L389,278 L396,285 L395,296 L387,303 L380,317" fill="none" stroke="#e48a62" stroke-width="2" stroke-opacity="0.75" stroke-linejoin="round"/><path d="M541,233 L536,222 L528,210 L521,205 L514,197 L509,187 L505,172 L495,166" fill="none" stroke="#df6a72" stroke-width="2.2" stroke-opacity="0.6" stroke-linejoin="round"/><path d="M614,273 L626,272 L635,267 L640,254 L646,247 L650,238 L654,224 L667,216 L675,212 L682,199" fill="none" stroke="#df6a72" stroke-width="2.2" stroke-opacity="0.6" stroke-linejoin="round"/><path d="M498,358 L500,349 L497,334 L499,326 L503,314 L507,302 L511,294 L510,286" fill="none" stroke="#df6a72" stroke-width="2.2" stroke-opacity="0.6" stroke-linejoin="round"/><g transform="translate(300,199) scale(0.26062)"><path d="M480,255 L545,270 L570,320 L560,390 L575,450 L560,490 L555,560 L600,625 L660,705 L740,760 L800,790 L825,840 L815,900 L790,960 L760,1040 L200,1040 L210,950 L160,850 L100,790 L85,700 L95,600 L110,510 L160,470 L230,445 L280,490 L300,470 L310,380 L350,340 L380,360 L400,330 L440,300Z" fill="#b39094" /><path d="M575,0 L600,100 L640,200 L660,290 L700,390 L760,470 L820,540 L860,620 L890,720 L910,810 L930,900 L950,970 L1020,935 L1151,915" fill="none" stroke="#df6470" stroke-width="11.51" stroke-linejoin="round" stroke-linecap="round"/><path d="M740,470 L830,490 L900,520 L970,590 L1040,680 L1151,760" fill="none" stroke="#df6470" stroke-width="9.59" stroke-linejoin="round" stroke-linecap="round"/><path d="M240,0 L290,80 L280,200 L250,300 L220,400 L150,450 L60,480 L20,560 L30,700 L60,780 L90,900 L50,1040" fill="none" stroke="#df6470" stroke-width="9.59" stroke-linejoin="round" stroke-linecap="round"/><path d="M330,0 L420,100 L440,200 L400,260 L300,330 L200,390 L120,450 L90,550 L80,700 L80,830" fill="none" stroke="#7a5a5e" stroke-width="5.76" stroke-linejoin="round" stroke-linecap="round"/><path d="M700,390 L760,560 L780,700 L830,830 L860,960" fill="none" stroke="#7a5a5e" stroke-width="5.76" stroke-linejoin="round" stroke-linecap="round"/><path d="M880,960 L950,870 L1050,810 L1151,800" fill="none" stroke="#7a5a5e" stroke-width="5.76" stroke-linejoin="round" stroke-linecap="round"/><path d="M1151,200 L1080,270 L1060,380 L1080,500 L1100,600 L1151,650" fill="none" stroke="#e48a62" stroke-width="7.67" stroke-linejoin="round" stroke-linecap="round"/><path d="M750,0 L760,80 L740,200 L700,280 L620,300 L600,400 L560,490" fill="none" stroke="#e48a62" stroke-width="7.67" stroke-linejoin="round" stroke-linecap="round"/><path d="M560,490 L620,560 L680,690 L760,660 L830,700 L940,680 L980,640" fill="none" stroke="#e48a62" stroke-width="7.67" stroke-linejoin="round" stroke-linecap="round"/><path d="M0,620 L60,640 L120,620" fill="none" stroke="#e48a62" stroke-width="7.67" stroke-linejoin="round" stroke-linecap="round"/><path d="M0,160 L60,230 L150,180 L240,150 L300,180 L330,270" fill="none" stroke="#dd9a86" stroke-width="7.67" stroke-linejoin="round" stroke-linecap="round"/><path d="M440,180 L520,200 L600,170 L650,200" fill="none" stroke="#dd9a86" stroke-width="7.67" stroke-linejoin="round" stroke-linecap="round"/><path d="M950,0 L970,100 L1040,150 L1151,120" fill="none" stroke="#a58ca8" stroke-width="5.76" stroke-linejoin="round" stroke-linecap="round"/><path d="M0,340 L80,330 L150,300 L230,330" fill="none" stroke="#a58ca8" stroke-width="5.76" stroke-linejoin="round" stroke-linecap="round"/><path d="M800,300 L880,260 L900,200 L880,120 L900,40" fill="none" stroke="#a58ca8" stroke-width="5.76" stroke-linejoin="round" stroke-linecap="round"/></g></g><g clip-path="url(#cl1)"><rect x="600" y="199" width="300" height="271" fill="#b9907f"/><rect x="600" y="199" width="300" height="271" fill="url(#prur)"/><g transform="translate(600,199) scale(0.26062)"><path d="M480,440 L535.5,443.6 L576,448.6 L630.3,436.2 L692.6,435.8 L750.6,438.9 L786.1,426.6 L848.5,432 L891.7,444.9 L943.6,452.6 L993.2,436 L1036.7,426.8 L1088.7,442 L1151,440 L1140.2,490 L1141.2,548.2 L1138,597.7 L1163.2,652.5 L1150.1,698.7 L1141.8,752.9 L1164.3,796.1 L1164.1,843.5 L1164.2,886.8 L1139.3,931.8 L1161.2,999.6 L1151,1040 L1096.1,1046 L1059,1035.8 L989.6,1053.6 L940.9,1051.9 L886,1053 L828.4,1035.9 L788,1027.5 L746.8,1052.3 L684,1045.5 L628.2,1034.6 L588,1040.4 L520.4,1053.7 L480,1040 L488.7,983.1 L470,920 L436.9,890.4 L380,870 L300,820 L238,828.8 L180,830 L100,860 L70,900 L58.1,817.3 L70,760 L135.4,741.5 L200,740 L272,733.7 L330,720 L377.4,699.6 L430,680 L480.3,639.6 L520,620 L560,560 L500,500Z" fill="#d49a97" /><path d="M480,440 L535.5,443.6 L576,448.6 L630.3,436.2 L692.6,435.8 L750.6,438.9 L786.1,426.6 L848.5,432 L891.7,444.9 L943.6,452.6 L993.2,436 L1036.7,426.8 L1088.7,442 L1151,440 L1140.2,490 L1141.2,548.2 L1138,597.7 L1163.2,652.5 L1150.1,698.7 L1141.8,752.9 L1164.3,796.1 L1164.1,843.5 L1164.2,886.8 L1139.3,931.8 L1161.2,999.6 L1151,1040 L1096.1,1046 L1059,1035.8 L989.6,1053.6 L940.9,1051.9 L886,1053 L828.4,1035.9 L788,1027.5 L746.8,1052.3 L684,1045.5 L628.2,1034.6 L588,1040.4 L520.4,1053.7 L480,1040 L488.7,983.1 L470,920 L436.9,890.4 L380,870 L300,820 L238,828.8 L180,830 L100,860 L70,900 L58.1,817.3 L70,760 L135.4,741.5 L200,740 L272,733.7 L330,720 L377.4,699.6 L430,680 L480.3,639.6 L520,620 L560,560 L500,500Z" fill="url(#purb)" /><path d="M480,440 L535.5,443.6 L576,448.6 L630.3,436.2 L692.6,435.8 L750.6,438.9 L786.1,426.6 L848.5,432 L891.7,444.9 L943.6,452.6 L993.2,436 L1036.7,426.8 L1088.7,442 L1151,440 L1140.2,490 L1141.2,548.2 L1138,597.7 L1163.2,652.5 L1150.1,698.7 L1141.8,752.9 L1164.3,796.1 L1164.1,843.5 L1164.2,886.8 L1139.3,931.8 L1161.2,999.6 L1151,1040 L1096.1,1046 L1059,1035.8 L989.6,1053.6 L940.9,1051.9 L886,1053 L828.4,1035.9 L788,1027.5 L746.8,1052.3 L684,1045.5 L628.2,1034.6 L588,1040.4 L520.4,1053.7 L480,1040 L488.7,983.1 L470,920 L436.9,890.4 L380,870 L300,820 L238,828.8 L180,830 L100,860 L70,900 L58.1,817.3 L70,760 L135.4,741.5 L200,740 L272,733.7 L330,720 L377.4,699.6 L430,680 L480.3,639.6 L520,620 L560,560 L500,500Z" fill="url(#purb2)" /><path d="M430,400 L502.7,374.3 L560,330 L621.7,314.7 L700,320 L760,300 L850,290 L907.1,297.8 L958.3,310.6 L1000,300 L1056.4,298.6 L1092.5,270.6 L1151,260 L1161.9,326 L1155,377.1 L1151,440 L1092,450.2 L1035.3,451.1 L1005.9,452.4 L932,441.1 L899.8,437.3 L854.6,444.8 L799.9,427.2 L751.6,430.9 L682.3,436.7 L643.3,428.6 L582.8,450 L535.3,435 L483.3,430.4 L430,440Z" fill="#c6958c" /><path d="M430,400 L502.7,374.3 L560,330 L621.7,314.7 L700,320 L760,300 L850,290 L907.1,297.8 L958.3,310.6 L1000,300 L1056.4,298.6 L1092.5,270.6 L1151,260 L1161.9,326 L1155,377.1 L1151,440 L1092,450.2 L1035.3,451.1 L1005.9,452.4 L932,441.1 L899.8,437.3 L854.6,444.8 L799.9,427.2 L751.6,430.9 L682.3,436.7 L643.3,428.6 L582.8,450 L535.3,435 L483.3,430.4 L430,440Z" fill="url(#purb)" /></g><path d="M783.3,251.8 L776.7,256.6 L770.2,255 L768.1,248.8 L777.2,247.7Z" fill="#cf9c98" fill-opacity=".7"/><path d="M630.4,407.6 L628,411 L624.3,409.8 L624.1,406.1 L628.2,403.4Z" fill="#c6a28c" fill-opacity=".7"/><path d="M868.4,305.9 L866.1,308.1 L861.7,308.3 L862,304.6 L866.1,303.7Z" fill="#cf9c98" fill-opacity=".7"/><path d="M647.9,208.4 L647.1,211.7 L643.9,210.3 L643.7,206.6 L647.2,206Z" fill="#c6a28c" fill-opacity=".7"/><path d="M808.7,384.2 L807.9,387 L805,385.8 L806.1,382.7 L808.1,381.6Z" fill="#c6a28c" fill-opacity=".7"/><path d="M649.1,247.5 L643.8,254.8 L638.8,252.2 L635.9,244.5 L643.3,241.7Z" fill="#c6a28c" fill-opacity=".7"/><path d="M709.5,214.6 L706.6,217.2 L703,216 L701.2,211.9 L706,212.4Z" fill="#c6a28c" fill-opacity=".7"/><path d="M872.9,202.3 L867.9,208.3 L863,204.7 L861.6,199.2 L867.9,198.1Z" fill="#c6a28c" fill-opacity=".7"/><path d="M692.2,383 L687.9,386.8 L682.8,385.5 L682,379.7 L688.3,376.2Z" fill="#c6a28c" fill-opacity=".7"/><path d="M811.6,297.7 L807.8,302 L801.3,301.4 L802.8,294.8 L807.7,293.6Z" fill="#cf9c98" fill-opacity=".7"/><path d="M620.2,468.1 L616.3,474.3 L608.7,472.1 L610.5,463.5 L617.2,464.7Z" fill="#cf9c98" fill-opacity=".7"/><path d="M739.2,273.3 L737.6,276.3 L730.9,275.7 L731.1,269.9 L737.8,267.4Z" fill="#cf9c98" fill-opacity=".7"/><path d="M824.1,238.8 L820.3,242.8 L813.5,240.9 L815.6,236.4 L820.2,232.6Z" fill="#cf9c98" fill-opacity=".7"/><path d="M802.1,443 L800.8,447.7 L794.8,445.5 L796.8,440.3 L801.2,439.5Z" fill="#c6a28c" fill-opacity=".7"/><path d="M874.2,355.3 L872,359.9 L867,359 L867.3,351.7 L872.4,352.4Z" fill="#cf9c98" fill-opacity=".7"/><path d="M692.1,342.8 L688.9,348.7 L680.8,345.7 L679.4,337.5 L689,334.1Z" fill="#cf9c98" fill-opacity=".7"/><path d="M615.9,281.6 L611.1,286 L604.9,286.6 L603,277.1 L612.1,277.1Z" fill="#c6a28c" fill-opacity=".7"/><path d="M670.2,341.5 L668,343.9 L665.1,343 L665.6,339.8 L668.2,339.1Z" fill="#c6a28c" fill-opacity=".7"/><path d="M858.4,214 L856.4,220.5 L852.3,218.3 L852.3,212.1 L855.9,210.6Z" fill="#c6a28c" fill-opacity=".7"/><path d="M854,447.5 L851.7,449.8 L847.2,449.5 L847.8,446 L851.4,444Z" fill="#cf9c98" fill-opacity=".7"/><path d="M751.7,448.2 L747.7,452.8 L744.4,451 L743.7,445.6 L747.8,445.5Z" fill="#c6a28c" fill-opacity=".7"/><path d="M675.5,236 L674.4,238.6 L669.3,239.2 L669.5,232.9 L674.4,233.1Z" fill="#cf9c98" fill-opacity=".7"/><path d="M842.5,433.8 L837.9,440.7 L829.2,438.6 L832.1,429.5 L837.3,430.3Z" fill="#cf9c98" fill-opacity=".7"/><path d="M818.7,342.4 L816.7,348.7 L810.8,345.7 L812.3,340.4 L816.3,336.7Z" fill="#cf9c98" fill-opacity=".7"/><path d="M646.7,334.5 L645.3,338.7 L642.1,337.1 L642.4,332.8 L645.5,332.5Z" fill="#cf9c98" fill-opacity=".7"/><path d="M650.9,261.4 L648.9,266.1 L639.8,264.6 L640.1,257.5 L648,253.6Z" fill="#c6a28c" fill-opacity=".7"/><path d="M698.6,354.4 L697.3,356.8 L692,356.8 L694.1,353 L696.8,350Z" fill="#c6a28c" fill-opacity=".7"/><path d="M680.2,319.7 L677.1,326.8 L668.4,324.7 L672.1,317 L676.6,313.1Z" fill="#cf9c98" fill-opacity=".7"/><path d="M882.5,365.8 L878.8,371.9 L871.6,369.4 L873.8,363.9 L878.1,360.2Z" fill="#cf9c98" fill-opacity=".7"/><path d="M866,431.3 L862.8,435.1 L856.3,435.2 L855.8,428.9 L862.9,427Z" fill="#cf9c98" fill-opacity=".7"/><path d="M734.1,389.1 L732.4,391 L729.6,390.9 L730.4,387.4 L732.2,387.2Z" fill="#cf9c98" fill-opacity=".7"/><path d="M669.5,427.5 L666.1,431.1 L662.6,429.9 L663.5,425.4 L665.8,425.4Z" fill="#cf9c98" fill-opacity=".7"/><path d="M699.7,275.6 L695.4,281.2 L690.9,279.6 L691.6,273.1 L695.8,272Z" fill="#cf9c98" fill-opacity=".7"/><path d="M655.3,463 L652.6,466.6 L647.4,467.3 L646.1,460 L653.3,459.2Z" fill="#cf9c98" fill-opacity=".7"/><path d="M634,422.4 L630.6,426.3 L626.9,424.8 L625.6,420.9 L630.3,420.1Z" fill="#cf9c98" fill-opacity=".7"/><path d="M636,340.1 L634.1,343.6 L629.8,341.8 L630,337.9 L633.8,336.3Z" fill="#c6a28c" fill-opacity=".7"/><path d="M653.1,402.7 L648.6,409.2 L642.1,405 L641.2,399 L648.3,399.6Z" fill="#cf9c98" fill-opacity=".7"/><path d="M807.2,394.8 L800.1,398.8 L793.9,398.4 L793.9,390 L800.8,387.1Z" fill="#c6a28c" fill-opacity=".7"/><path d="M833.7,338.2 L831,343.2 L825.8,340.1 L826.1,335.9 L830.4,335.6Z" fill="#cf9c98" fill-opacity=".7"/><path d="M885.5,389.5 L883.1,390.9 L880.6,390.7 L880.4,388.5 L883.1,387Z" fill="#c6a28c" fill-opacity=".7"/><path d="M751.7,350.1 L749.4,353.2 L746.6,351.4 L747,348.1 L749.4,346.6Z" fill="#c6a28c" fill-opacity=".7"/><path d="M841.4,428.1 L840.9,431.2 L837.3,429.6 L836.9,426.8 L840.2,424.9Z" fill="#cf9c98" fill-opacity=".7"/><path d="M817.3,375.2 L815.8,378.3 L813,376.3 L812.9,373.7 L815.7,371.7Z" fill="#cf9c98" fill-opacity=".7"/><path d="M649.3,368.7 L645.7,373.6 L641.9,371.7 L641.9,366.3 L645.7,364.7Z" fill="#cf9c98" fill-opacity=".7"/><path d="M740.9,275 L738.6,278.7 L734,277.7 L735.7,273.4 L738.7,271.5Z" fill="#c6a28c" fill-opacity=".7"/><path d="M786.2,332.6 L778.5,340.5 L773.4,338.1 L770.4,327.2 L778.8,325Z" fill="#cf9c98" fill-opacity=".7"/><path d="M879.4,247.4 L878.3,249.9 L875.6,248.9 L875.2,246.5 L878.1,245.7Z" fill="#cf9c98" fill-opacity=".7"/><path d="M768.5,394.1 L766.1,396.3 L763.6,396.1 L762.2,392.9 L766.5,391.3Z" fill="#c6a28c" fill-opacity=".7"/><path d="M648.2,458.2 L645.6,462.4 L641.5,459.9 L640.7,456.7 L646,454.4Z" fill="#cf9c98" fill-opacity=".7"/><path d="M901.4,433.7 L896.9,437.9 L890.8,436 L890.7,430.9 L897.4,428.4Z" fill="#cf9c98" fill-opacity=".7"/><path d="M877.6,359.8 L876.5,363.3 L872.8,361.4 L873.6,357.9 L876.8,357.6Z" fill="#cf9c98" fill-opacity=".7"/><path d="M637.7,211 L636.5,213.7 L632.8,212.1 L633,209.8 L636.2,208.6Z" fill="#c6a28c" fill-opacity=".7"/><path d="M743.4,214.8 L740.2,217.8 L737.1,217.1 L736.5,212.9 L740.5,210.4Z" fill="#c6a28c" fill-opacity=".7"/><path d="M824.5,308.4 L821.4,314.4 L815.6,311.2 L817,303.7 L821.4,301.6Z" fill="#c6a28c" fill-opacity=".7"/><path d="M681.6,358.6 L676.8,364.9 L669.4,362.3 L669.2,353.5 L678.1,352.8Z" fill="#c6a28c" fill-opacity=".7"/><path d="M863.1,367.9 L861.9,369.5 L858.7,369.3 L858.7,366.1 L862.3,365.8Z" fill="#cf9c98" fill-opacity=".7"/><path d="M624.8,259 L621.3,262.8 L615.2,261.2 L615.3,256.1 L621.8,255.6Z" fill="#cf9c98" fill-opacity=".7"/><path d="M752.9,269.7 L747.3,272.6 L741.7,272.4 L743.7,267.1 L748,264.5Z" fill="#cf9c98" fill-opacity=".7"/><path d="M889.8,465.1 L888.6,466.7 L885.7,466.8 L886.2,463.2 L888.8,462.7Z" fill="#cf9c98" fill-opacity=".7"/><path d="M843.1,443.4 L840.5,448.2 L836.1,445.2 L835.5,441.7 L839.9,439.6Z" fill="#cf9c98" fill-opacity=".7"/><path d="M648,371.8 L645,375.4 L636.2,374.4 L638.1,369.6 L644.7,366.6Z" fill="#cf9c98" fill-opacity=".7"/><path d="M761.1,461.1 L757.8,466.7 L752.5,464.7 L753.6,459 L758.1,455.4Z" fill="#cf9c98" fill-opacity=".7"/><path d="M594,369 L606,373 L617,380 L621,387 L623,396 L621,405 L620,418 L622,432 L632,444 L632,455 L638,467 L648,470 L656,477" fill="none" stroke="#a58ca8" stroke-width="1.4" stroke-opacity="0.6" stroke-linejoin="round"/><path d="M721,204 L728,194 L725,180 L728,168 L739,161 L749,162 L764,157" fill="none" stroke="#a58ca8" stroke-width="1.4" stroke-opacity="0.6" stroke-linejoin="round"/><path d="M920,212 L913,203 L902,193 L893,193 L886,189 L874,185 L866,179 L857,169" fill="none" stroke="#a58ca8" stroke-width="1.4" stroke-opacity="0.6" stroke-linejoin="round"/><path d="M859,326 L867,316 L878,310 L886,302 L894,293 L905,291 L920,299 L929,294 L938,291 L948,293 L956,295 L971,295 L979,285 L994,282" fill="none" stroke="#a58ca8" stroke-width="1.4" stroke-opacity="0.6" stroke-linejoin="round"/><path d="M724,433 L712,439 L697,446 L684,441 L674,445 L663,452 L656,461" fill="none" stroke="#a58ca8" stroke-width="1.4" stroke-opacity="0.6" stroke-linejoin="round"/><path d="M881,214 L889,212 L899,206 L901,197 L906,190 L916,182 L923,175 L923,167 L921,158 L914,151 L906,141 L896,136 L885,125 L883,116 L889,105" fill="none" stroke="#a58ca8" stroke-width="1.4" stroke-opacity="0.6" stroke-linejoin="round"/><path d="M718,450 L721,437 L730,432 L743,428 L754,422 L764,426 L770,440 L781,449 L794,452 L802,466 L809,474 L805,488 L802,502" fill="none" stroke="#a58ca8" stroke-width="1.4" stroke-opacity="0.6" stroke-linejoin="round"/><path d="M862,437 L876,436 L886,440 L899,432 L910,434 L918,434 L924,441 L931,446 L934,459 L930,471" fill="none" stroke="#a58ca8" stroke-width="1.4" stroke-opacity="0.6" stroke-linejoin="round"/><path d="M814,461 L823,460 L831,455 L843,453 L854,458 L865,460 L877,461 L885,465 L893,468 L908,466 L917,463" fill="none" stroke="#a58ca8" stroke-width="1.4" stroke-opacity="0.6" stroke-linejoin="round"/><path d="M912,404 L899,410 L892,421 L892,434 L880,443 L876,451 L876,463" fill="none" stroke="#a58ca8" stroke-width="1.4" stroke-opacity="0.6" stroke-linejoin="round"/><path d="M696,318 L684,320 L673,325 L668,336 L661,349 L653,362 L649,373 L649,381" fill="none" stroke="#a58ca8" stroke-width="1.4" stroke-opacity="0.6" stroke-linejoin="round"/><path d="M826,397 L838,392 L848,397 L859,396 L870,403 L884,408 L892,416" fill="none" stroke="#a58ca8" stroke-width="1.4" stroke-opacity="0.6" stroke-linejoin="round"/><path d="M805,451 L809,437 L817,429 L829,425 L841,424 L857,421 L867,424 L877,428" fill="none" stroke="#e48a62" stroke-width="2" stroke-opacity="0.75" stroke-linejoin="round"/><path d="M624,265 L632,255 L644,254 L653,257 L665,259 L680,263 L690,266 L702,265 L715,256 L728,257" fill="none" stroke="#e48a62" stroke-width="2" stroke-opacity="0.75" stroke-linejoin="round"/><path d="M599,428 L606,437 L607,447 L609,456 L601,468 L599,482 L590,488" fill="none" stroke="#e48a62" stroke-width="2" stroke-opacity="0.75" stroke-linejoin="round"/><path d="M692,267 L698,256 L707,250 L708,237 L719,227 L732,222 L738,212 L740,203 L747,189 L758,185 L763,178 L768,168 L771,159 L778,152" fill="none" stroke="#e48a62" stroke-width="2" stroke-opacity="0.75" stroke-linejoin="round"/><path d="M621,276 L618,290 L621,299 L624,309 L635,318 L646,323 L659,324 L669,319" fill="none" stroke="#e48a62" stroke-width="2" stroke-opacity="0.75" stroke-linejoin="round"/><path d="M674,360 L665,357 L654,363 L639,367 L628,361 L617,365 L604,368" fill="none" stroke="#e48a62" stroke-width="2" stroke-opacity="0.75" stroke-linejoin="round"/><path d="M661,204 L667,196 L671,189 L674,175 L668,164 L667,149 L668,140 L677,129 L690,124 L704,125 L713,125 L723,119 L736,110" fill="none" stroke="#e48a62" stroke-width="2" stroke-opacity="0.75" stroke-linejoin="round"/><path d="M704,314 L698,306 L687,295 L682,288 L681,273 L677,265 L676,252 L666,245 L659,239 L651,226 L646,212" fill="none" stroke="#df6a72" stroke-width="2.2" stroke-opacity="0.6" stroke-linejoin="round"/><path d="M711,196 L701,202 L694,211 L691,222 L683,232 L676,242 L661,243 L649,236 L638,231 L623,234 L617,241 L609,245 L599,247" fill="none" stroke="#df6a72" stroke-width="2.2" stroke-opacity="0.6" stroke-linejoin="round"/><path d="M831,350 L835,361 L843,370 L846,379 L859,385 L870,386 L878,381 L887,375 L889,361 L897,352 L912,350 L924,354 L934,347 L947,352 L958,349" fill="none" stroke="#df6a72" stroke-width="2.2" stroke-opacity="0.6" stroke-linejoin="round"/><g transform="translate(600,199) scale(0.26062)"><path d="M0,920 L70,880 L190,840 L300,850 L380,900 L470,960 L600,975 L800,985 L950,1000 L1050,1030" fill="none" stroke="#df6470" stroke-width="11.51" stroke-linejoin="round" stroke-linecap="round"/><path d="M600,1040 L610,880 L640,740 L700,660 L740,570" fill="none" stroke="#df6470" stroke-width="9.59" stroke-linejoin="round" stroke-linecap="round"/><path d="M70,200 L200,120 L300,70 L360,60 L400,100 L470,160 L520,150 L640,180 L780,220 L860,280" fill="none" stroke="#e48a62" stroke-width="7.67" stroke-linejoin="round" stroke-linecap="round"/><path d="M170,350 L230,410 L320,410 L430,390 L520,400 L640,420 L760,430" fill="none" stroke="#e48a62" stroke-width="7.67" stroke-linejoin="round" stroke-linecap="round"/><path d="M800,0 L780,100 L800,180 L850,250 L880,330 L890,440 L880,520" fill="none" stroke="#e48a62" stroke-width="7.67" stroke-linejoin="round" stroke-linecap="round"/><path d="M1070,0 L1000,150 L970,230 L980,300 L1040,340" fill="none" stroke="#e48a62" stroke-width="7.67" stroke-linejoin="round" stroke-linecap="round"/><path d="M620,750 L620,900 L760,910 L830,880 L830,760 L700,750 L620,750" fill="none" stroke="#e48a62" stroke-width="7.67" stroke-linejoin="round" stroke-linecap="round"/><path d="M430,640 L520,600 L570,580 L650,560 L800,540 L900,530 L1000,510 L1080,540" fill="none" stroke="#e48a62" stroke-width="7.67" stroke-linejoin="round" stroke-linecap="round"/><path d="M880,560 L890,700 L920,800 L890,950 L880,1040" fill="none" stroke="#e48a62" stroke-width="7.67" stroke-linejoin="round" stroke-linecap="round"/><path d="M1040,560 L1080,700 L1100,800 L1050,920 L1000,1040" fill="none" stroke="#e48a62" stroke-width="7.67" stroke-linejoin="round" stroke-linecap="round"/><path d="M240,0 L330,60 L380,120 L450,200 L470,280 L530,330" fill="none" stroke="#e48a62" stroke-width="7.67" stroke-linejoin="round" stroke-linecap="round"/><path d="M0,800 L180,820 L350,780 L430,780 L620,780 L800,860 L900,940 L1000,1030" fill="none" stroke="#7a5a5e" stroke-width="5.76" stroke-linejoin="round" stroke-linecap="round"/><path d="M1151,620 L1060,650 L960,690 L800,770" fill="none" stroke="#7a5a5e" stroke-width="5.76" stroke-linejoin="round" stroke-linecap="round"/><path d="M770,0 L800,100 L820,200 L870,280 L880,340" fill="none" stroke="#a58ca8" stroke-width="5.76" stroke-linejoin="round" stroke-linecap="round"/><path d="M0,440 L110,500 L120,600 L180,680 L100,760" fill="none" stroke="#a58ca8" stroke-width="5.76" stroke-linejoin="round" stroke-linecap="round"/><path d="M560,400 L600,500 L640,600 L700,700 L720,800 L760,1040" fill="none" stroke="#a58ca8" stroke-width="5.76" stroke-linejoin="round" stroke-linecap="round"/><path d="M300,480 L380,540 L410,600 L470,620" fill="none" stroke="#a58ca8" stroke-width="5.76" stroke-linejoin="round" stroke-linecap="round"/><path d="M1200,830 L1105,963 L1036,1060" fill="none" stroke="#bc949e" stroke-width="30.70" stroke-linejoin="round" stroke-linecap="round"/></g></g><g clip-path="url(#cl2)"><rect x="900" y="199" width="300" height="271" fill="#b9907f"/><rect x="900" y="199" width="300" height="271" fill="url(#prur)"/><g transform="translate(900,199) scale(0.26062)"><path d="M0,440 L51.3,430.7 L98.2,448.6 L159.1,430.8 L215.6,450.1 L243.1,444 L303.8,428.2 L353.3,444.1 L398.6,435 L466,432.5 L522.4,442 L566.8,427.1 L602.2,443.2 L656.3,440.7 L727.8,442.6 L766.3,428.8 L808.6,432.9 L883,447.1 L912.2,427.3 L985.8,453 L1024.7,433.6 L1075,440 L1076,501.1 L1068,547.9 L1074.9,591.3 L1087.3,626.3 L1069.4,678.8 L1065.8,750.3 L1061.9,802.7 L1071,843 L1074.8,879 L1067.9,931.6 L1070.3,976.2 L1075,1040 L1025.9,1032.8 L977.7,1041.3 L931,1052.8 L865.2,1043.8 L826.9,1034.5 L770.6,1046.6 L726.8,1047.4 L665.4,1040 L610.9,1044 L576.6,1026.6 L517.1,1046.3 L458.6,1026.5 L403.1,1051.6 L365.6,1045 L319.4,1051.1 L242.3,1038.4 L210.3,1048.3 L152.8,1027.8 L105.7,1044.8 L48.7,1026.8 L0,1040 L-8.9,980.7 L-0.6,949.1 L-9.6,885.8 L-8.2,829.6 L-9.3,791.3 L7.7,752.4 L11.6,703 L0.8,647.8 L-6.3,594.1 L9.7,534.1 L-8.3,482.7Z" fill="#d49a97" /><path d="M0,440 L51.3,430.7 L98.2,448.6 L159.1,430.8 L215.6,450.1 L243.1,444 L303.8,428.2 L353.3,444.1 L398.6,435 L466,432.5 L522.4,442 L566.8,427.1 L602.2,443.2 L656.3,440.7 L727.8,442.6 L766.3,428.8 L808.6,432.9 L883,447.1 L912.2,427.3 L985.8,453 L1024.7,433.6 L1075,440 L1076,501.1 L1068,547.9 L1074.9,591.3 L1087.3,626.3 L1069.4,678.8 L1065.8,750.3 L1061.9,802.7 L1071,843 L1074.8,879 L1067.9,931.6 L1070.3,976.2 L1075,1040 L1025.9,1032.8 L977.7,1041.3 L931,1052.8 L865.2,1043.8 L826.9,1034.5 L770.6,1046.6 L726.8,1047.4 L665.4,1040 L610.9,1044 L576.6,1026.6 L517.1,1046.3 L458.6,1026.5 L403.1,1051.6 L365.6,1045 L319.4,1051.1 L242.3,1038.4 L210.3,1048.3 L152.8,1027.8 L105.7,1044.8 L48.7,1026.8 L0,1040 L-8.9,980.7 L-0.6,949.1 L-9.6,885.8 L-8.2,829.6 L-9.3,791.3 L7.7,752.4 L11.6,703 L0.8,647.8 L-6.3,594.1 L9.7,534.1 L-8.3,482.7Z" fill="url(#purb)" /><path d="M0,440 L51.3,430.7 L98.2,448.6 L159.1,430.8 L215.6,450.1 L243.1,444 L303.8,428.2 L353.3,444.1 L398.6,435 L466,432.5 L522.4,442 L566.8,427.1 L602.2,443.2 L656.3,440.7 L727.8,442.6 L766.3,428.8 L808.6,432.9 L883,447.1 L912.2,427.3 L985.8,453 L1024.7,433.6 L1075,440 L1076,501.1 L1068,547.9 L1074.9,591.3 L1087.3,626.3 L1069.4,678.8 L1065.8,750.3 L1061.9,802.7 L1071,843 L1074.8,879 L1067.9,931.6 L1070.3,976.2 L1075,1040 L1025.9,1032.8 L977.7,1041.3 L931,1052.8 L865.2,1043.8 L826.9,1034.5 L770.6,1046.6 L726.8,1047.4 L665.4,1040 L610.9,1044 L576.6,1026.6 L517.1,1046.3 L458.6,1026.5 L403.1,1051.6 L365.6,1045 L319.4,1051.1 L242.3,1038.4 L210.3,1048.3 L152.8,1027.8 L105.7,1044.8 L48.7,1026.8 L0,1040 L-8.9,980.7 L-0.6,949.1 L-9.6,885.8 L-8.2,829.6 L-9.3,791.3 L7.7,752.4 L11.6,703 L0.8,647.8 L-6.3,594.1 L9.7,534.1 L-8.3,482.7Z" fill="url(#purb2)" /><path d="M0,230 L63.2,229.7 L120,220 L182.9,222.3 L250,240 L330,260 L384.8,245.2 L440,250 L508.4,259.6 L560,250 L619,271.5 L700,300 L760.9,308.2 L800,330 L859.7,336.1 L900,320 L964.2,318.9 L1014,299.7 L1075,300 L1073.3,358.2 L1075,440 L1013.2,443.9 L965.6,432.7 L934.1,445.3 L870.1,440.8 L805.8,452.1 L765.4,433.8 L707.6,447.2 L666.5,440.6 L613.1,453.2 L576.6,438.2 L500.1,453.6 L453.9,449.3 L395.6,448.2 L357.5,450.7 L299.6,442.7 L269.5,435.6 L192.6,450.5 L160.5,426.2 L98.2,430.1 L48.7,448.1 L0,440 L1.8,385.2 L-0.4,342 L-12,281.8Z" fill="#c6958c" /><path d="M0,230 L63.2,229.7 L120,220 L182.9,222.3 L250,240 L330,260 L384.8,245.2 L440,250 L508.4,259.6 L560,250 L619,271.5 L700,300 L760.9,308.2 L800,330 L859.7,336.1 L900,320 L964.2,318.9 L1014,299.7 L1075,300 L1073.3,358.2 L1075,440 L1013.2,443.9 L965.6,432.7 L934.1,445.3 L870.1,440.8 L805.8,452.1 L765.4,433.8 L707.6,447.2 L666.5,440.6 L613.1,453.2 L576.6,438.2 L500.1,453.6 L453.9,449.3 L395.6,448.2 L357.5,450.7 L299.6,442.7 L269.5,435.6 L192.6,450.5 L160.5,426.2 L98.2,430.1 L48.7,448.1 L0,440 L1.8,385.2 L-0.4,342 L-12,281.8Z" fill="url(#purb)" /><path d="M380,80 L444.5,74.6 L500,60 L509.8,122.6 L520,160 L475.5,178.3 L440,220 L380,200 L390.7,151Z" fill="#c6958c" /><path d="M380,80 L444.5,74.6 L500,60 L509.8,122.6 L520,160 L475.5,178.3 L440,220 L380,200 L390.7,151Z" fill="url(#purb)" /><path d="M250,450 L306.8,462.3 L355.9,449.3 L405.3,447.6 L458.9,447.5 L507.4,447.3 L555.2,438.3 L620,450 L664.8,484.7 L700,520 L680,561.6 L640,600 L560,640 L479,642.4 L420,640 L365.3,627.8 L300,600 L250,520Z" fill="#b9907f" /><path d="M250,450 L306.8,462.3 L355.9,449.3 L405.3,447.6 L458.9,447.5 L507.4,447.3 L555.2,438.3 L620,450 L664.8,484.7 L700,520 L680,561.6 L640,600 L560,640 L479,642.4 L420,640 L365.3,627.8 L300,600 L250,520Z" fill="url(#prurbT)" /><path d="M620,560 L696.4,573 L760,560 L790,640 L839.8,631.5 L897,609.5 L960,610 L1023.3,614.9 L1070,640 L1060.3,697 L1061.5,748.4 L1060.4,826.2 L1070,880 L1014.7,897.6 L960,890 L900.2,879.1 L852.6,875.7 L800,870 L740,900 L680,880 L668.4,828.6 L640,760 L636.3,704.9 L632.9,650.6 L636.3,598.7Z" fill="#b9907f" /><path d="M620,560 L696.4,573 L760,560 L790,640 L839.8,631.5 L897,609.5 L960,610 L1023.3,614.9 L1070,640 L1060.3,697 L1061.5,748.4 L1060.4,826.2 L1070,880 L1014.7,897.6 L960,890 L900.2,879.1 L852.6,875.7 L800,870 L740,900 L680,880 L668.4,828.6 L640,760 L636.3,704.9 L632.9,650.6 L636.3,598.7Z" fill="url(#prurbT)" /><path d="M780,440 L840.8,449 L889.2,435.6 L959.5,448.5 L1029.7,452.3 L1075,440 L1075,500 L1029.9,518.1 L960,520 L893.6,499.1 L820,500Z" fill="#b9907f" /><path d="M780,440 L840.8,449 L889.2,435.6 L959.5,448.5 L1029.7,452.3 L1075,440 L1075,500 L1029.9,518.1 L960,520 L893.6,499.1 L820,500Z" fill="url(#prurbT)" /></g><path d="M947.9,365.9 L945.3,369 L942,367 L942,364 L945.4,362.3Z" fill="#c6a28c" fill-opacity=".7"/><path d="M1016.6,260.5 L1014.1,262.9 L1010.9,261.7 L1010.9,259.3 L1014.1,257.6Z" fill="#c6a28c" fill-opacity=".7"/><path d="M978.2,223.9 L975.3,227.2 L971.2,226.8 L971.8,222.3 L975.2,220.1Z" fill="#cf9c98" fill-opacity=".7"/><path d="M1074.4,318.4 L1069.2,323.3 L1061.6,321.4 L1062.7,314.4 L1069.3,313.9Z" fill="#c6a28c" fill-opacity=".7"/><path d="M1085.3,447 L1081.7,451.4 L1074.5,451 L1077.1,445 L1082.1,440.7Z" fill="#cf9c98" fill-opacity=".7"/><path d="M981.4,384.5 L978.7,389.3 L971.5,387.2 L971.2,381.5 L977.7,378.9Z" fill="#cf9c98" fill-opacity=".7"/><path d="M939.1,239.8 L936.8,242.9 L933.2,241.8 L931.7,238 L936.9,235Z" fill="#c6a28c" fill-opacity=".7"/><path d="M1042.7,427.4 L1039.9,433.4 L1034.9,431.2 L1033,423.3 L1040.2,424.5Z" fill="#cf9c98" fill-opacity=".7"/><path d="M973,374.9 L968,380.6 L961.4,379 L962.1,371 L967.7,368.2Z" fill="#cf9c98" fill-opacity=".7"/><path d="M959.2,456.4 L957.4,459.9 L953.4,457.8 L955,454.2 L957.4,454.3Z" fill="#cf9c98" fill-opacity=".7"/><path d="M906.3,356.9 L903.8,361.4 L900.9,359.4 L899.3,354.1 L903.4,353.6Z" fill="#cf9c98" fill-opacity=".7"/><path d="M1084,326.7 L1080.7,331.1 L1076.6,328 L1076.3,325.3 L1080.7,323.1Z" fill="#cf9c98" fill-opacity=".7"/><path d="M949.8,217.3 L946.9,219.3 L943.7,219 L943.6,214.9 L946.4,214.5Z" fill="#cf9c98" fill-opacity=".7"/><path d="M936.4,386.1 L933.5,388.3 L929.3,389.2 L930.9,384 L934.3,381.6Z" fill="#c6a28c" fill-opacity=".7"/><path d="M1061.1,462.3 L1059.4,464.5 L1056.9,463.6 L1056.3,460.4 L1059.3,460.4Z" fill="#c6a28c" fill-opacity=".7"/><path d="M1130.3,419.7 L1125,423.8 L1120.4,423.7 L1117.6,415.5 L1124.5,413.6Z" fill="#c6a28c" fill-opacity=".7"/><path d="M964.3,205.4 L963.2,208.9 L959.3,207.8 L958.7,203.7 L963.2,202.1Z" fill="#cf9c98" fill-opacity=".7"/><path d="M1080.6,245.2 L1076.9,248.8 L1072.9,246.7 L1072.3,243.2 L1076.4,241.7Z" fill="#c6a28c" fill-opacity=".7"/><path d="M926.3,411.8 L924.9,415 L921.4,413 L922.1,409.9 L924.7,409.1Z" fill="#c6a28c" fill-opacity=".7"/><path d="M963.2,303.3 L959,307 L952.2,306.5 L951.8,298.5 L958.8,297Z" fill="#cf9c98" fill-opacity=".7"/><path d="M1179.3,427.8 L1173.9,434 L1167.3,430.8 L1166.1,422.9 L1173.3,422.5Z" fill="#cf9c98" fill-opacity=".7"/><path d="M1012.4,304.3 L1010.5,306.2 L1007.1,306.4 L1008,302.9 L1010.6,302Z" fill="#cf9c98" fill-opacity=".7"/><path d="M950.8,423.7 L946.9,428.6 L942.1,426.3 L942.8,421.1 L947.6,421.1Z" fill="#cf9c98" fill-opacity=".7"/><path d="M1137.3,312.2 L1130.2,319.2 L1122.8,316.4 L1122,308.3 L1131.5,305.3Z" fill="#cf9c98" fill-opacity=".7"/><path d="M1154.9,244.7 L1147.7,251.8 L1141.3,248.1 L1140.1,241.5 L1147.6,238.4Z" fill="#c6a28c" fill-opacity=".7"/><path d="M1192.7,227.7 L1189.5,231.3 L1184,231.1 L1184.6,223.7 L1189.4,221.3Z" fill="#cf9c98" fill-opacity=".7"/><path d="M1049.9,377.8 L1048.2,380.3 L1044.6,379.9 L1044.1,375.8 L1048.6,373.9Z" fill="#c6a28c" fill-opacity=".7"/><path d="M1180.7,387.2 L1178.1,391.9 L1172.1,390.5 L1170.6,383.2 L1177,380.9Z" fill="#c6a28c" fill-opacity=".7"/><path d="M1199.8,454.3 L1195.4,460.7 L1190,456.2 L1188.8,450.5 L1195.4,449.9Z" fill="#cf9c98" fill-opacity=".7"/><path d="M939.8,429.8 L938.8,432.8 L934,431.1 L934.7,427.4 L938.7,427.4Z" fill="#cf9c98" fill-opacity=".7"/><path d="M1146.6,446.6 L1144.7,449.6 L1142.1,448.1 L1142.6,444.7 L1144.7,444.8Z" fill="#c6a28c" fill-opacity=".7"/><path d="M967,208.1 L964.6,211.3 L958.1,211.7 L958.4,204.3 L965.4,204.3Z" fill="#cf9c98" fill-opacity=".7"/><path d="M1082.8,433.7 L1079.7,437.6 L1074.6,435.5 L1072.2,431.4 L1079.4,428.7Z" fill="#c6a28c" fill-opacity=".7"/><path d="M1184.3,377 L1182.3,380.4 L1178.8,378.9 L1178.4,374.6 L1182.2,373.8Z" fill="#c6a28c" fill-opacity=".7"/><path d="M912.7,467.8 L909.3,470.4 L903.6,469.3 L906,465 L909.4,464.6Z" fill="#c6a28c" fill-opacity=".7"/><path d="M1117.1,320.6 L1111.1,327 L1106.3,323.5 L1103.4,316.8 L1111.2,315.2Z" fill="#cf9c98" fill-opacity=".7"/><path d="M1116.1,340.6 L1113.8,343.8 L1109,343.9 L1108.1,337.9 L1113.6,337.5Z" fill="#cf9c98" fill-opacity=".7"/><path d="M1127.7,318.5 L1124.9,323.4 L1121.8,321.4 L1120.6,316.6 L1124.9,315.4Z" fill="#cf9c98" fill-opacity=".7"/><path d="M1200.7,274.5 L1198.5,276.4 L1195.7,275.8 L1195.9,272.9 L1199,272.3Z" fill="#cf9c98" fill-opacity=".7"/><path d="M1118.3,353.6 L1114.3,360.1 L1107.4,356.3 L1108.9,350.3 L1115.1,347.7Z" fill="#cf9c98" fill-opacity=".7"/><path d="M1037.9,409.2 L1035.7,412.8 L1031.1,412.2 L1031.8,406.8 L1036.1,404.9Z" fill="#c6a28c" fill-opacity=".7"/><path d="M1148.2,252.2 L1144.8,258.2 L1138.2,256.1 L1139.8,248.2 L1145.7,246.9Z" fill="#c6a28c" fill-opacity=".7"/><path d="M1138.8,202.1 L1135.1,207.8 L1130.4,204.8 L1130.7,199.5 L1134.2,199.3Z" fill="#cf9c98" fill-opacity=".7"/><path d="M1119.9,246.4 L1116.7,254.7 L1109.6,251.5 L1109.9,243.2 L1117.7,242.6Z" fill="#cf9c98" fill-opacity=".7"/><path d="M946.4,350.7 L944.1,353.9 L936.3,353.1 L939.1,347.4 L943.5,345.8Z" fill="#c6a28c" fill-opacity=".7"/><path d="M908.3,362.8 L905.1,365.5 L902.4,363.9 L901.7,361.2 L905.6,359.5Z" fill="#c6a28c" fill-opacity=".7"/><path d="M1190.7,279.1 L1187.5,284.6 L1181.4,282.1 L1181.7,277.1 L1186.9,276Z" fill="#cf9c98" fill-opacity=".7"/><path d="M1086.7,259.8 L1082.9,263.5 L1078.6,261.7 L1077.4,257.4 L1082.9,257.4Z" fill="#cf9c98" fill-opacity=".7"/><path d="M1047.1,270.7 L1042.3,275 L1036,274 L1035.3,268.7 L1042.5,264.7Z" fill="#cf9c98" fill-opacity=".7"/><path d="M914.1,319.9 L913.3,323.4 L908.7,322.1 L909.6,317.6 L913.4,315.7Z" fill="#c6a28c" fill-opacity=".7"/><path d="M1144.4,461.4 L1139.5,470 L1133.6,465 L1133.4,458.8 L1139.3,456.8Z" fill="#cf9c98" fill-opacity=".7"/><path d="M1076.8,349.3 L1075.5,352 L1071.7,351.5 L1069.2,346.1 L1075.9,344.1Z" fill="#cf9c98" fill-opacity=".7"/><path d="M1120.9,380.7 L1118.2,386.4 L1112.3,383.7 L1110.4,375.5 L1119.5,376.7Z" fill="#cf9c98" fill-opacity=".7"/><path d="M1041.5,407.9 L1036.1,411.3 L1028.9,412.2 L1030.3,404.9 L1035.4,400.8Z" fill="#cf9c98" fill-opacity=".7"/><path d="M987.9,302.5 L984.8,305 L981.6,304.8 L982.4,301.2 L984.9,300.2Z" fill="#cf9c98" fill-opacity=".7"/><path d="M936.4,315.3 L931.5,319.8 L922.8,320.6 L924.2,313 L931.1,307Z" fill="#cf9c98" fill-opacity=".7"/><path d="M988.8,390 L983.6,393.8 L978.7,393.3 L977.9,387.4 L983.7,385.2Z" fill="#cf9c98" fill-opacity=".7"/><path d="M1048.5,292.7 L1046.5,295 L1043.6,294.2 L1043.5,291.9 L1046.8,290.2Z" fill="#c6a28c" fill-opacity=".7"/><path d="M1191.4,217.5 L1188.5,219.9 L1185.3,219.1 L1186.7,216.4 L1189,215.8Z" fill="#cf9c98" fill-opacity=".7"/><path d="M1150.1,248.7 L1148.1,254.4 L1143,251 L1142,245.3 L1147.5,243.4Z" fill="#cf9c98" fill-opacity=".7"/><path d="M1199.2,362.1 L1196.9,365.5 L1191.9,365.9 L1190.4,358.3 L1197.5,357.5Z" fill="#c6a28c" fill-opacity=".7"/><path d="M1014.9,205.1 L1009.1,211.8 L1003.7,207.7 L1001.2,201.8 L1008.5,199.1Z" fill="#c6a28c" fill-opacity=".7"/><path d="M1181,218 L1184,226 L1191,231 L1199,240 L1202,253 L1203,263 L1195,276 L1188,281 L1183,291 L1184,301 L1196,310 L1206,308 L1215,306 L1222,301 L1225,291" fill="none" stroke="#a58ca8" stroke-width="1.4" stroke-opacity="0.6" stroke-linejoin="round"/><path d="M1156,345 L1162,339 L1169,332 L1173,319 L1174,308 L1185,297 L1195,290 L1195,281" fill="none" stroke="#a58ca8" stroke-width="1.4" stroke-opacity="0.6" stroke-linejoin="round"/><path d="M1175,311 L1166,307 L1153,314 L1144,319 L1139,331 L1136,346 L1132,354 L1118,358 L1105,365 L1097,368 L1089,375 L1080,382 L1072,386 L1066,393" fill="none" stroke="#a58ca8" stroke-width="1.4" stroke-opacity="0.6" stroke-linejoin="round"/><path d="M1010,489 L1024,487 L1031,492 L1041,491 L1053,490 L1061,484 L1070,485" fill="none" stroke="#a58ca8" stroke-width="1.4" stroke-opacity="0.6" stroke-linejoin="round"/><path d="M1111,311 L1096,312 L1084,302 L1068,304 L1058,314 L1049,313 L1034,310 L1024,301 L1018,290 L1011,277 L1011,264 L1018,256 L1021,246" fill="none" stroke="#a58ca8" stroke-width="1.4" stroke-opacity="0.6" stroke-linejoin="round"/><path d="M969,400 L982,398 L996,397 L1002,402 L1011,404 L1020,411 L1024,420 L1024,431 L1031,439" fill="none" stroke="#a58ca8" stroke-width="1.4" stroke-opacity="0.6" stroke-linejoin="round"/><path d="M1162,442 L1172,446 L1183,441 L1191,435 L1202,431 L1213,432 L1222,442 L1237,441 L1246,430 L1250,422 L1255,413 L1264,412" fill="none" stroke="#a58ca8" stroke-width="1.4" stroke-opacity="0.6" stroke-linejoin="round"/><path d="M1027,309 L1015,316 L1010,331 L1002,339 L993,345 L977,346 L963,347 L957,354 L948,354 L935,349 L921,355 L910,359 L899,358 L889,349" fill="none" stroke="#a58ca8" stroke-width="1.4" stroke-opacity="0.6" stroke-linejoin="round"/><path d="M1143,312 L1139,324 L1129,331 L1127,340 L1133,350 L1137,363 L1139,372 L1146,381 L1160,383 L1168,380 L1180,379 L1189,381" fill="none" stroke="#a58ca8" stroke-width="1.4" stroke-opacity="0.6" stroke-linejoin="round"/><path d="M883,254 L891,248 L899,246 L908,246 L917,256 L931,262 L943,259 L952,258 L962,261 L973,272 L973,281 L973,294 L980,299" fill="none" stroke="#a58ca8" stroke-width="1.4" stroke-opacity="0.6" stroke-linejoin="round"/><path d="M1144,398 L1151,407 L1163,410 L1170,420 L1180,425 L1186,432 L1196,440 L1205,445 L1219,449 L1232,450 L1242,449" fill="none" stroke="#a58ca8" stroke-width="1.4" stroke-opacity="0.6" stroke-linejoin="round"/><path d="M880,192 L865,196 L855,201 L844,211 L835,214 L823,209 L809,213 L799,212 L786,212" fill="none" stroke="#a58ca8" stroke-width="1.4" stroke-opacity="0.6" stroke-linejoin="round"/><path d="M1102,250 L1090,256 L1088,265 L1080,274 L1067,282 L1060,291 L1052,295 L1044,299 L1034,299 L1024,304 L1011,304" fill="none" stroke="#e48a62" stroke-width="2" stroke-opacity="0.75" stroke-linejoin="round"/><path d="M1020,212 L1013,221 L1010,229 L1004,237 L989,238 L981,241 L966,234" fill="none" stroke="#e48a62" stroke-width="2" stroke-opacity="0.75" stroke-linejoin="round"/><path d="M1002,430 L988,429 L978,429 L962,430 L954,433 L944,431 L937,437 L932,448 L937,463 L936,478" fill="none" stroke="#e48a62" stroke-width="2" stroke-opacity="0.75" stroke-linejoin="round"/><path d="M1189,451 L1204,449 L1212,436 L1210,421 L1216,414 L1221,400 L1220,388 L1215,382 L1205,381 L1196,386 L1188,391 L1177,390" fill="none" stroke="#e48a62" stroke-width="2" stroke-opacity="0.75" stroke-linejoin="round"/><path d="M996,208 L992,200 L987,189 L979,183 L971,182 L956,180 L942,174 L936,162 L929,158 L922,153" fill="none" stroke="#e48a62" stroke-width="2" stroke-opacity="0.75" stroke-linejoin="round"/><path d="M1106,445 L1096,449 L1082,452 L1072,445 L1070,436 L1068,426 L1066,416 L1060,407 L1059,391 L1060,382 L1073,372" fill="none" stroke="#e48a62" stroke-width="2" stroke-opacity="0.75" stroke-linejoin="round"/><path d="M1108,281 L1121,275 L1131,263 L1141,257 L1146,243 L1144,229 L1146,220 L1148,207 L1158,200" fill="none" stroke="#e48a62" stroke-width="2" stroke-opacity="0.75" stroke-linejoin="round"/><path d="M1070,240 L1060,249 L1050,256 L1034,254 L1024,242 L1015,237 L1009,227 L1003,218 L1002,208" fill="none" stroke="#df6a72" stroke-width="2.2" stroke-opacity="0.6" stroke-linejoin="round"/><path d="M885,462 L873,460 L862,453 L860,444 L865,434 L877,426 L879,411 L878,397 L872,383 L867,371 L858,362" fill="none" stroke="#df6a72" stroke-width="2.2" stroke-opacity="0.6" stroke-linejoin="round"/><path d="M883,402 L894,391 L904,391 L916,389 L923,384 L927,374 L931,359 L927,350" fill="none" stroke="#df6a72" stroke-width="2.2" stroke-opacity="0.6" stroke-linejoin="round"/><g transform="translate(900,199) scale(0.26062)"><path d="M60,1040 L110,900 L170,800 L230,640 L300,560 L380,470 L420,330 L440,220 L490,60 L540,0" fill="none" stroke="#df6470" stroke-width="11.51" stroke-linejoin="round" stroke-linecap="round"/><path d="M0,250 L200,250 L330,260 L450,220 L560,230 L680,270 L760,330 L820,400 L900,420 L1030,470 L1151,560" fill="none" stroke="#df6470" stroke-width="11.51" stroke-linejoin="round" stroke-linecap="round"/><path d="M130,0 L150,100 L220,170 L330,250" fill="none" stroke="#df6470" stroke-width="9.59" stroke-linejoin="round" stroke-linecap="round"/><path d="M0,620 L100,640 L200,660 L330,650 L430,660 L580,680 L640,700 L720,700 L800,620 L830,560 L880,520 L1000,500" fill="none" stroke="#7a5a5e" stroke-width="5.76" stroke-linejoin="round" stroke-linecap="round"/><path d="M600,380 L680,400 L760,480 L860,500 L920,560 L960,680 L1020,780 L1075,880" fill="none" stroke="#7a5a5e" stroke-width="5.76" stroke-linejoin="round" stroke-linecap="round"/><path d="M820,400 L780,560 L760,700 L740,900 L760,1040" fill="none" stroke="#e48a62" stroke-width="7.67" stroke-linejoin="round" stroke-linecap="round"/><path d="M0,470 L120,480 L250,450 L400,440 L560,450 L760,470" fill="none" stroke="#e48a62" stroke-width="7.67" stroke-linejoin="round" stroke-linecap="round"/><path d="M400,700 L420,800 L470,880 L480,1040" fill="none" stroke="#e48a62" stroke-width="7.67" stroke-linejoin="round" stroke-linecap="round"/><path d="M600,740 L700,760 L800,800 L860,900 L1000,960 L1075,980" fill="none" stroke="#e48a62" stroke-width="7.67" stroke-linejoin="round" stroke-linecap="round"/><path d="M900,560 L880,700 L940,800 L1000,900 L1060,1040" fill="none" stroke="#e48a62" stroke-width="7.67" stroke-linejoin="round" stroke-linecap="round"/><path d="M200,120 L330,150 L400,200 L520,210 L640,180 L720,120 L760,0" fill="none" stroke="#e48a62" stroke-width="7.67" stroke-linejoin="round" stroke-linecap="round"/><path d="M900,0 L920,100 L880,200 L1000,230 L1075,300" fill="none" stroke="#e48a62" stroke-width="7.67" stroke-linejoin="round" stroke-linecap="round"/><path d="M0,880 L200,860 L330,900 L500,880 L620,840" fill="none" stroke="#e48a62" stroke-width="7.67" stroke-linejoin="round" stroke-linecap="round"/><path d="M-60,860 L115,809 L384,790 L614,828 L760,760" fill="none" stroke="#bc949e" stroke-width="30.70" stroke-linejoin="round" stroke-linecap="round"/><path d="M0,800 L150,780 L300,760 L450,740 L560,700 L620,640 L700,600 L780,560 L850,520" fill="none" stroke="#a58ca8" stroke-width="11.51" stroke-linejoin="round" stroke-linecap="round"/><path d="M280,0 L300,100 L330,200 L400,260" fill="none" stroke="#a58ca8" stroke-width="5.76" stroke-linejoin="round" stroke-linecap="round"/><path d="M600,0 L640,100 L700,180 L760,200" fill="none" stroke="#a58ca8" stroke-width="5.76" stroke-linejoin="round" stroke-linecap="round"/></g></g><g clip-path="url(#cl3)"><rect x="1200" y="199" width="281" height="271" fill="#b9907f"/><rect x="1200" y="199" width="281" height="271" fill="url(#prur)"/><g transform="translate(1200,199) scale(0.26069)"><path d="M0,760 L40.8,755.9 L100,760 L141.4,764.7 L200,780 L261,761.5 L300,770 L368.1,780.6 L420,780 L421.8,817 L450,880 L401.6,897.8 L347.8,899.7 L300,900 L259.3,913.7 L204,896.4 L150,900 L157.1,972.7 L150,1040 L99.3,1049.4 L47.8,1044 L0,1040 L5.9,994.6 L-10.2,937.1 L11.5,860.1 L-7.8,816.8Z" fill="#d49a97" /><path d="M0,760 L40.8,755.9 L100,760 L141.4,764.7 L200,780 L261,761.5 L300,770 L368.1,780.6 L420,780 L421.8,817 L450,880 L401.6,897.8 L347.8,899.7 L300,900 L259.3,913.7 L204,896.4 L150,900 L157.1,972.7 L150,1040 L99.3,1049.4 L47.8,1044 L0,1040 L5.9,994.6 L-10.2,937.1 L11.5,860.1 L-7.8,816.8Z" fill="url(#purb)" /><path d="M0,760 L40.8,755.9 L100,760 L141.4,764.7 L200,780 L261,761.5 L300,770 L368.1,780.6 L420,780 L421.8,817 L450,880 L401.6,897.8 L347.8,899.7 L300,900 L259.3,913.7 L204,896.4 L150,900 L157.1,972.7 L150,1040 L99.3,1049.4 L47.8,1044 L0,1040 L5.9,994.6 L-10.2,937.1 L11.5,860.1 L-7.8,816.8Z" fill="url(#purb2)" /><path d="M740,420 L798.1,421 L860,400 L917.8,396.4 L1000,420 L1009.9,475.5 L1000,520 L939.4,519.3 L880,530 L821,536.1 L760,520 L756.7,469.5Z" fill="#d49a97" /><path d="M740,420 L798.1,421 L860,400 L917.8,396.4 L1000,420 L1009.9,475.5 L1000,520 L939.4,519.3 L880,530 L821,536.1 L760,520 L756.7,469.5Z" fill="url(#purb)" /><path d="M740,420 L798.1,421 L860,400 L917.8,396.4 L1000,420 L1009.9,475.5 L1000,520 L939.4,519.3 L880,530 L821,536.1 L760,520 L756.7,469.5Z" fill="url(#purb2)" /><path d="M940,240 L999,215.5 L1078,200 L1077,256.6 L1088.8,306.6 L1085.6,360.1 L1078,400 L1020.6,390.8 L960,400 L965.3,346.2 L957.2,296.6Z" fill="#d49a97" /><path d="M940,240 L999,215.5 L1078,200 L1077,256.6 L1088.8,306.6 L1085.6,360.1 L1078,400 L1020.6,390.8 L960,400 L965.3,346.2 L957.2,296.6Z" fill="url(#purb)" /><path d="M940,240 L999,215.5 L1078,200 L1077,256.6 L1088.8,306.6 L1085.6,360.1 L1078,400 L1020.6,390.8 L960,400 L965.3,346.2 L957.2,296.6Z" fill="url(#purb2)" /><path d="M0,440 L71.9,440 L140,440 L127.1,507.6 L130,560 L54.4,572.2 L0,580 L-9.2,500.7Z" fill="#d49a97" /><path d="M0,440 L71.9,440 L140,440 L127.1,507.6 L130,560 L54.4,572.2 L0,580 L-9.2,500.7Z" fill="url(#purb)" /><path d="M0,440 L71.9,440 L140,440 L127.1,507.6 L130,560 L54.4,572.2 L0,580 L-9.2,500.7Z" fill="url(#purb2)" /></g><path d="M1481.7,322.7 L1476.2,328.3 L1472.1,325.6 L1469.3,318.4 L1476.3,319.2Z" fill="#cf9c98" fill-opacity=".7"/><path d="M1434.8,205.7 L1433.7,207.9 L1430.3,207.9 L1429.7,204 L1433.9,202.5Z" fill="#c6a28c" fill-opacity=".7"/><path d="M1276.6,299 L1271.4,302.7 L1266.7,301.2 L1264.5,295.3 L1271.9,294.3Z" fill="#c6a28c" fill-opacity=".7"/><path d="M1285.9,329.5 L1283.9,333.1 L1281.8,331.6 L1280.7,328.4 L1284.2,325.7Z" fill="#c6a28c" fill-opacity=".7"/><path d="M1362.8,408.2 L1360.1,412.9 L1352.7,411.2 L1353,406.1 L1359.9,404.9Z" fill="#c6a28c" fill-opacity=".7"/><path d="M1450.5,346.3 L1446.6,351.1 L1440.9,348.8 L1441.4,343.9 L1446.8,341.1Z" fill="#cf9c98" fill-opacity=".7"/><path d="M1398.9,429.1 L1394.4,432.3 L1389.2,432.5 L1390.2,426.1 L1394.4,423.1Z" fill="#c6a28c" fill-opacity=".7"/><path d="M1300.4,289.1 L1299.2,294.4 L1294.1,291.9 L1293.7,285.2 L1298.4,283.3Z" fill="#c6a28c" fill-opacity=".7"/><path d="M1293.8,267.3 L1290.8,272.7 L1286.1,269.2 L1285,263.8 L1291.2,262.8Z" fill="#c6a28c" fill-opacity=".7"/><path d="M1465.1,201.5 L1463.5,205.6 L1458.3,204.9 L1459.5,200 L1464.3,196.3Z" fill="#cf9c98" fill-opacity=".7"/><path d="M1238.2,213.2 L1234.1,220.6 L1225,216.2 L1227.4,209.6 L1234,205.5Z" fill="#c6a28c" fill-opacity=".7"/><path d="M1366.3,328.2 L1363.8,331.6 L1359.4,330.6 L1361.2,326.7 L1363.9,324.9Z" fill="#cf9c98" fill-opacity=".7"/><path d="M1465.1,323.9 L1462.6,330.6 L1456.9,328.5 L1456.5,321 L1463.1,319Z" fill="#cf9c98" fill-opacity=".7"/><path d="M1233.8,375.1 L1231.2,378.3 L1227.8,376.9 L1227,373.7 L1231.3,372.7Z" fill="#c6a28c" fill-opacity=".7"/><path d="M1288.7,460.5 L1285.4,465.4 L1279.8,462.1 L1281.2,457.4 L1285,454.7Z" fill="#c6a28c" fill-opacity=".7"/><path d="M1438.8,400.9 L1433.3,406 L1427.7,404.1 L1424.2,396.5 L1432.6,397.1Z" fill="#cf9c98" fill-opacity=".7"/><path d="M1354.8,296.8 L1353.8,299.5 L1351.5,298.3 L1351.6,295.7 L1353.9,295.2Z" fill="#cf9c98" fill-opacity=".7"/><path d="M1266.9,434.3 L1262.8,441.1 L1255.9,436.9 L1257.8,431.1 L1262.7,428Z" fill="#c6a28c" fill-opacity=".7"/><path d="M1412.7,362.5 L1409.8,366.2 L1406.5,363.8 L1406.1,360.3 L1409.9,359.3Z" fill="#cf9c98" fill-opacity=".7"/><path d="M1227.2,212 L1225.5,214.2 L1223,214 L1221.9,209.8 L1225.9,210.5Z" fill="#cf9c98" fill-opacity=".7"/><path d="M1485.3,387.6 L1482,393.5 L1476.3,391.1 L1477.2,385.4 L1482.4,379.7Z" fill="#c6a28c" fill-opacity=".7"/><path d="M1364.3,216.1 L1361.8,221 L1357.9,219 L1358.6,214.4 L1362.2,211Z" fill="#cf9c98" fill-opacity=".7"/><path d="M1259,459.5 L1257.4,463.3 L1251.8,462 L1251.5,456.8 L1257.1,453.9Z" fill="#cf9c98" fill-opacity=".7"/><path d="M1438,401.3 L1435.7,405.9 L1426.2,405.2 L1429.4,398.4 L1436.2,393.6Z" fill="#cf9c98" fill-opacity=".7"/><path d="M1456.7,209.3 L1453,215.4 L1445.2,212.4 L1444.9,206.3 L1452.7,203.1Z" fill="#cf9c98" fill-opacity=".7"/><path d="M1433.5,393.7 L1431.3,395.3 L1427.7,395.2 L1427.6,392.3 L1430.9,391Z" fill="#c6a28c" fill-opacity=".7"/><path d="M1423.3,345.6 L1420.6,352.3 L1412.6,347.9 L1413.3,342.4 L1420.7,341.6Z" fill="#cf9c98" fill-opacity=".7"/><path d="M1385.7,291.4 L1380.5,297.9 L1373.5,294.5 L1371.5,287.4 L1381.5,284Z" fill="#c6a28c" fill-opacity=".7"/><path d="M1232.6,459.9 L1230,464.3 L1226.3,461.7 L1225.2,456.2 L1230.8,453.6Z" fill="#c6a28c" fill-opacity=".7"/><path d="M1378.2,362.1 L1375.7,365.8 L1366.6,366.5 L1368.9,357.2 L1375.6,354.6Z" fill="#cf9c98" fill-opacity=".7"/><path d="M1444.8,335.8 L1442.5,339.1 L1439.3,336.8 L1439.1,333.8 L1442.5,333.9Z" fill="#cf9c98" fill-opacity=".7"/><path d="M1356.2,211.6 L1351.8,215.8 L1342.9,216.2 L1344.6,209.1 L1351.2,207.7Z" fill="#cf9c98" fill-opacity=".7"/><path d="M1243.4,339.9 L1241.3,345 L1236.9,342.5 L1236.1,338.2 L1241.3,337.1Z" fill="#cf9c98" fill-opacity=".7"/><path d="M1348.5,444.6 L1344.8,449.6 L1337.2,447.8 L1335.7,439.4 L1344.2,435.8Z" fill="#c6a28c" fill-opacity=".7"/><path d="M1242.1,377.9 L1239.6,381.8 L1234.8,381.4 L1235.2,375.6 L1240.1,373.2Z" fill="#cf9c98" fill-opacity=".7"/><path d="M1229.4,426.5 L1228.5,428.4 L1224.4,428.4 L1225.2,424.3 L1227.8,424.5Z" fill="#cf9c98" fill-opacity=".7"/><path d="M1391.4,213.2 L1387.9,216.6 L1382.3,216.9 L1382.5,209.6 L1387.6,207.5Z" fill="#cf9c98" fill-opacity=".7"/><path d="M1280.3,326.4 L1278.5,329.4 L1272.3,330.5 L1273.1,323.8 L1278.7,320.1Z" fill="#c6a28c" fill-opacity=".7"/><path d="M1364,371.6 L1359.6,375.4 L1353.3,374.4 L1352.3,367.6 L1359.5,366.7Z" fill="#c6a28c" fill-opacity=".7"/><path d="M1485.9,435.7 L1480.9,440.8 L1475.9,438.8 L1476.5,430.9 L1481.3,431.9Z" fill="#cf9c98" fill-opacity=".7"/><path d="M1330.2,220.1 L1327.2,224.6 L1320.2,223.1 L1320,216.5 L1327.7,214.1Z" fill="#cf9c98" fill-opacity=".7"/><path d="M1290,383.5 L1289.1,384.9 L1285.9,384.8 L1286.8,381.7 L1288.9,381.8Z" fill="#c6a28c" fill-opacity=".7"/><path d="M1225,390.4 L1219.8,394.5 L1213,393.7 L1215.7,386.7 L1220.4,383.9Z" fill="#cf9c98" fill-opacity=".7"/><path d="M1396.3,363.3 L1393.9,367.7 L1388.8,367.2 L1385.8,358.8 L1394.1,359.7Z" fill="#c6a28c" fill-opacity=".7"/><path d="M1282,235.7 L1280.5,239.1 L1278,238.1 L1278.1,234.1 L1280.5,233.4Z" fill="#cf9c98" fill-opacity=".7"/><path d="M1344.7,217.6 L1343.7,220 L1340.4,218.7 L1341.2,215.6 L1344,215.8Z" fill="#cf9c98" fill-opacity=".7"/><path d="M1437.4,345.1 L1435.8,347.6 L1432.6,347.3 L1431.3,342.9 L1436,342.3Z" fill="#cf9c98" fill-opacity=".7"/><path d="M1393.9,296 L1391.1,298.3 L1386.2,298.1 L1387.8,293.4 L1390.8,292.7Z" fill="#cf9c98" fill-opacity=".7"/><path d="M1364.3,329.2 L1358.7,334.4 L1353.4,333.4 L1350.2,324.8 L1357.6,322.4Z" fill="#c6a28c" fill-opacity=".7"/><path d="M1472,297 L1469.9,303.6 L1462,299.9 L1464.1,294.8 L1470.1,293.5Z" fill="#cf9c98" fill-opacity=".7"/><path d="M1388.1,333.8 L1384.9,341.9 L1375.8,339.3 L1379.6,329.1 L1385.5,329.5Z" fill="#cf9c98" fill-opacity=".7"/><path d="M1406.8,394.1 L1405.1,397.7 L1399.2,396.9 L1400.1,392.7 L1405.1,389.2Z" fill="#cf9c98" fill-opacity=".7"/><path d="M1208.3,277.4 L1206.4,280.7 L1203.3,279.6 L1202.4,275.2 L1206.5,273.9Z" fill="#c6a28c" fill-opacity=".7"/><path d="M1333.3,467.2 L1331,470.9 L1327.8,470 L1326.4,465.4 L1330.5,462.8Z" fill="#c6a28c" fill-opacity=".7"/><path d="M1237.4,264.5 L1236.6,267.6 L1232.7,266.7 L1232.8,262.1 L1236.2,260.6Z" fill="#cf9c98" fill-opacity=".7"/><path d="M1420,361 L1415.4,364.5 L1407.5,365.1 L1409.7,358.2 L1415.1,357.3Z" fill="#cf9c98" fill-opacity=".7"/><path d="M1402.8,292.4 L1398.4,295.5 L1393,295.2 L1395.1,290.1 L1398.6,288.2Z" fill="#c6a28c" fill-opacity=".7"/><path d="M1426.1,280.6 L1425,284.1 L1421.2,282.9 L1422.1,279.2 L1424.6,277Z" fill="#c6a28c" fill-opacity=".7"/><path d="M1300,447 L1293,453 L1280,457 L1273,465 L1272,476 L1266,485 L1256,490 L1246,491 L1233,490 L1222,490" fill="none" stroke="#a58ca8" stroke-width="1.4" stroke-opacity="0.6" stroke-linejoin="round"/><path d="M1208,230 L1196,227 L1185,228 L1176,234 L1165,232 L1149,231 L1141,240 L1130,249 L1118,253 L1104,249 L1094,244 L1085,241 L1074,240 L1064,242 L1053,240" fill="none" stroke="#a58ca8" stroke-width="1.4" stroke-opacity="0.6" stroke-linejoin="round"/><path d="M1459,377 L1450,371 L1437,363 L1429,357 L1423,350 L1421,339 L1416,325 L1406,319 L1395,320 L1380,326 L1371,325 L1363,330 L1352,338" fill="none" stroke="#a58ca8" stroke-width="1.4" stroke-opacity="0.6" stroke-linejoin="round"/><path d="M1472,331 L1479,344 L1476,353 L1470,361 L1461,369 L1461,383 L1457,392 L1449,395" fill="none" stroke="#a58ca8" stroke-width="1.4" stroke-opacity="0.6" stroke-linejoin="round"/><path d="M1241,322 L1232,330 L1223,333 L1217,341 L1206,352 L1197,359 L1185,369 L1180,376 L1177,385 L1179,396" fill="none" stroke="#a58ca8" stroke-width="1.4" stroke-opacity="0.6" stroke-linejoin="round"/><path d="M1405,486 L1414,485 L1424,490 L1433,494 L1448,498 L1458,510 L1469,518 L1472,529 L1478,541" fill="none" stroke="#a58ca8" stroke-width="1.4" stroke-opacity="0.6" stroke-linejoin="round"/><path d="M1458,238 L1449,234 L1445,223 L1439,216 L1441,204 L1444,189 L1439,180 L1427,177 L1414,186 L1402,194" fill="none" stroke="#a58ca8" stroke-width="1.4" stroke-opacity="0.6" stroke-linejoin="round"/><path d="M1456,465 L1445,472 L1438,479 L1434,489 L1437,497 L1437,509 L1448,519 L1453,529 L1457,538 L1460,549 L1468,560" fill="none" stroke="#a58ca8" stroke-width="1.4" stroke-opacity="0.6" stroke-linejoin="round"/><path d="M1345,362 L1341,355 L1342,340 L1335,330 L1320,325 L1310,315 L1300,305 L1289,301 L1275,294 L1268,292 L1258,290 L1249,294 L1238,291 L1227,291 L1216,289" fill="none" stroke="#a58ca8" stroke-width="1.4" stroke-opacity="0.6" stroke-linejoin="round"/><path d="M1391,420 L1405,415 L1417,408 L1424,396 L1427,386 L1423,377 L1428,362 L1436,349 L1439,340 L1446,335 L1454,332 L1460,318" fill="none" stroke="#a58ca8" stroke-width="1.4" stroke-opacity="0.6" stroke-linejoin="round"/><path d="M1196,335 L1206,333 L1220,328 L1229,325 L1240,317 L1254,311 L1262,312 L1275,308" fill="none" stroke="#a58ca8" stroke-width="1.4" stroke-opacity="0.6" stroke-linejoin="round"/><path d="M1300,321 L1291,308 L1281,308 L1269,304 L1253,304 L1242,300 L1239,293 L1239,284 L1233,272 L1219,265 L1213,259" fill="none" stroke="#a58ca8" stroke-width="1.4" stroke-opacity="0.6" stroke-linejoin="round"/><path d="M1411,437 L1424,432 L1433,421 L1443,416 L1457,419 L1466,413 L1479,407 L1493,407 L1504,412 L1508,419" fill="none" stroke="#e48a62" stroke-width="2" stroke-opacity="0.75" stroke-linejoin="round"/><path d="M1390,347 L1381,338 L1382,326 L1391,314 L1399,304 L1404,292 L1413,280" fill="none" stroke="#e48a62" stroke-width="2" stroke-opacity="0.75" stroke-linejoin="round"/><path d="M1271,262 L1282,255 L1289,240 L1302,233 L1314,231 L1321,220 L1321,205 L1333,195 L1341,196 L1356,197 L1366,197" fill="none" stroke="#e48a62" stroke-width="2" stroke-opacity="0.75" stroke-linejoin="round"/><path d="M1445,336 L1458,343 L1464,354 L1475,361 L1487,369 L1489,383 L1483,396" fill="none" stroke="#e48a62" stroke-width="2" stroke-opacity="0.75" stroke-linejoin="round"/><path d="M1442,236 L1437,229 L1434,217 L1425,205 L1417,199 L1415,186 L1422,177 L1422,167 L1428,158 L1437,148 L1449,145 L1463,149 L1473,151" fill="none" stroke="#e48a62" stroke-width="2" stroke-opacity="0.75" stroke-linejoin="round"/><path d="M1269,473 L1274,466 L1287,458 L1296,452 L1298,436 L1296,428 L1291,421" fill="none" stroke="#e48a62" stroke-width="2" stroke-opacity="0.75" stroke-linejoin="round"/><path d="M1485,438 L1496,440 L1508,447 L1517,448 L1531,448 L1539,450 L1547,451 L1558,444 L1569,445 L1579,440" fill="none" stroke="#e48a62" stroke-width="2" stroke-opacity="0.75" stroke-linejoin="round"/><path d="M1401,397 L1412,406 L1422,408 L1430,404 L1445,408 L1455,413 L1463,419 L1470,432 L1481,443 L1491,448 L1496,456" fill="none" stroke="#df6a72" stroke-width="2.2" stroke-opacity="0.6" stroke-linejoin="round"/><path d="M1409,369 L1417,367 L1427,371 L1434,378 L1439,389 L1436,402 L1432,410 L1431,425 L1423,431 L1412,433 L1398,436 L1390,443 L1382,457" fill="none" stroke="#df6a72" stroke-width="2.2" stroke-opacity="0.6" stroke-linejoin="round"/><path d="M1267,319 L1261,313 L1250,308 L1242,300 L1242,290 L1236,279 L1233,269 L1222,259 L1212,257 L1199,248 L1189,239 L1180,235 L1176,222 L1171,207" fill="none" stroke="#df6a72" stroke-width="2.2" stroke-opacity="0.6" stroke-linejoin="round"/><g transform="translate(1200,199) scale(0.26069)"><path d="M0,830 L100,810 L200,790 L280,790 L380,760 L430,700 L520,620 L620,560 L740,500 L860,460 L960,420 L1078,380" fill="none" stroke="#df6470" stroke-width="11.51" stroke-linejoin="round" stroke-linecap="round"/><path d="M0,690 L60,760 L100,820 L120,900 L140,1040" fill="none" stroke="#df6470" stroke-width="9.59" stroke-linejoin="round" stroke-linecap="round"/><path d="M120,400 L200,390 L300,400 L330,440 L460,480 L560,390 L580,430 L630,520 L680,640 L720,720 L780,800 L790,880 L780,1040" fill="none" stroke="#df6470" stroke-width="7.67" stroke-linejoin="round" stroke-linecap="round"/><path d="M0,120 L80,100 L150,60 L170,0" fill="none" stroke="#df6470" stroke-width="7.67" stroke-linejoin="round" stroke-linecap="round"/><path d="M960,0 L960,100 L1000,200 L1040,280 L1078,340" fill="none" stroke="#df6470" stroke-width="7.67" stroke-linejoin="round" stroke-linecap="round"/><path d="M950,800 L1000,900 L1078,1000" fill="none" stroke="#df6470" stroke-width="7.67" stroke-linejoin="round" stroke-linecap="round"/><path d="M240,40 L200,100 L170,200 L120,290 L30,340" fill="none" stroke="#e48a62" stroke-width="7.67" stroke-linejoin="round" stroke-linecap="round"/><path d="M240,40 L330,100 L450,120 L560,150 L570,180" fill="none" stroke="#e48a62" stroke-width="7.67" stroke-linejoin="round" stroke-linecap="round"/><path d="M690,0 L700,100 L780,200 L810,300 L800,420" fill="none" stroke="#e48a62" stroke-width="7.67" stroke-linejoin="round" stroke-linecap="round"/><path d="M50,560 L130,600 L160,630 L180,750" fill="none" stroke="#e48a62" stroke-width="7.67" stroke-linejoin="round" stroke-linecap="round"/><path d="M130,600 L270,550 L400,530 L470,560 L520,660 L600,650 L690,650 L760,560 L800,540" fill="none" stroke="#e48a62" stroke-width="7.67" stroke-linejoin="round" stroke-linecap="round"/><path d="M420,850 L470,950 L560,930 L700,880 L800,830 L900,820 L1000,760 L1078,700" fill="none" stroke="#e48a62" stroke-width="7.67" stroke-linejoin="round" stroke-linecap="round"/><path d="M860,500 L900,560 L920,700 L900,800 L840,850" fill="none" stroke="#e48a62" stroke-width="7.67" stroke-linejoin="round" stroke-linecap="round"/><path d="M200,800 L300,900 L380,1000 L400,1040" fill="none" stroke="#e48a62" stroke-width="7.67" stroke-linejoin="round" stroke-linecap="round"/><path d="M920,520 L990,580 L1000,700 L960,780 L940,1000" fill="none" stroke="#7a5a5e" stroke-width="5.75" stroke-linejoin="round" stroke-linecap="round"/><path d="M850,440 L960,380 L1078,370" fill="none" stroke="#7a5a5e" stroke-width="5.75" stroke-linejoin="round" stroke-linecap="round"/><path d="M300,200 L360,300 L380,400 L420,460" fill="none" stroke="#a58ca8" stroke-width="5.75" stroke-linejoin="round" stroke-linecap="round"/><path d="M600,40 L650,100 L700,180 L760,180" fill="none" stroke="#a58ca8" stroke-width="5.75" stroke-linejoin="round" stroke-linecap="round"/></g></g><g clip-path="url(#cl4)"><rect x="300" y="470" width="300" height="271" fill="#b9907f"/><rect x="300" y="470" width="300" height="271" fill="url(#prur)"/><g transform="translate(300,470) scale(0.25954)"><path d="M-10,-10 L45.6,-8 L111.9,-2.9 L160,-10 L140,60 L91.4,80.3 L60,120 L-10,130 L-3.1,65.3Z" fill="#d49a97" /><path d="M-10,-10 L45.6,-8 L111.9,-2.9 L160,-10 L140,60 L91.4,80.3 L60,120 L-10,130 L-3.1,65.3Z" fill="url(#purb)" /><path d="M-10,-10 L45.6,-8 L111.9,-2.9 L160,-10 L140,60 L91.4,80.3 L60,120 L-10,130 L-3.1,65.3Z" fill="url(#purb2)" /><path d="M760,0 L850,0 L856.6,63.4 L858,94.4 L860,150 L851.9,186.9 L861.9,247.4 L850,300 L853.7,340.1 L868.5,397.6 L860,450 L837.6,506.4 L840,550 L852.3,588.3 L850,650 L874.8,688.1 L881.9,756.8 L922.4,780.5 L930,840 L910,920 L908.7,977.3 L930,1040 L869.2,1046.6 L815.3,1033 L780,1038.3 L727.7,1033.8 L682.3,1046 L618.5,1044.4 L571.4,1039.5 L530,1048.3 L470.4,1051.2 L411.9,1053.1 L359.1,1040.7 L314.2,1038.5 L252.3,1041 L195.1,1040.6 L164,1040.4 L102.5,1051.3 L64.4,1038.8 L0,1040 L9.6,978.4 L-6.4,946.2 L3.9,876.7 L-9.4,839 L1.6,780.1 L-3.8,726.3 L4.9,658.3 L9.8,622.9 L0,560 L40.6,531.5 L99.5,523.6 L160,500 L171.9,443.7 L200,400 L261.4,363.8 L288.6,344.9 L356.8,302 L400,280 L435.1,248.3 L472.7,219.3 L536.2,179.9 L571,146.9 L600.6,127.8 L651.9,84.2 L700,60Z" fill="#d49a97" /><path d="M760,0 L850,0 L856.6,63.4 L858,94.4 L860,150 L851.9,186.9 L861.9,247.4 L850,300 L853.7,340.1 L868.5,397.6 L860,450 L837.6,506.4 L840,550 L852.3,588.3 L850,650 L874.8,688.1 L881.9,756.8 L922.4,780.5 L930,840 L910,920 L908.7,977.3 L930,1040 L869.2,1046.6 L815.3,1033 L780,1038.3 L727.7,1033.8 L682.3,1046 L618.5,1044.4 L571.4,1039.5 L530,1048.3 L470.4,1051.2 L411.9,1053.1 L359.1,1040.7 L314.2,1038.5 L252.3,1041 L195.1,1040.6 L164,1040.4 L102.5,1051.3 L64.4,1038.8 L0,1040 L9.6,978.4 L-6.4,946.2 L3.9,876.7 L-9.4,839 L1.6,780.1 L-3.8,726.3 L4.9,658.3 L9.8,622.9 L0,560 L40.6,531.5 L99.5,523.6 L160,500 L171.9,443.7 L200,400 L261.4,363.8 L288.6,344.9 L356.8,302 L400,280 L435.1,248.3 L472.7,219.3 L536.2,179.9 L571,146.9 L600.6,127.8 L651.9,84.2 L700,60Z" fill="url(#purb)" /><path d="M760,0 L850,0 L856.6,63.4 L858,94.4 L860,150 L851.9,186.9 L861.9,247.4 L850,300 L853.7,340.1 L868.5,397.6 L860,450 L837.6,506.4 L840,550 L852.3,588.3 L850,650 L874.8,688.1 L881.9,756.8 L922.4,780.5 L930,840 L910,920 L908.7,977.3 L930,1040 L869.2,1046.6 L815.3,1033 L780,1038.3 L727.7,1033.8 L682.3,1046 L618.5,1044.4 L571.4,1039.5 L530,1048.3 L470.4,1051.2 L411.9,1053.1 L359.1,1040.7 L314.2,1038.5 L252.3,1041 L195.1,1040.6 L164,1040.4 L102.5,1051.3 L64.4,1038.8 L0,1040 L9.6,978.4 L-6.4,946.2 L3.9,876.7 L-9.4,839 L1.6,780.1 L-3.8,726.3 L4.9,658.3 L9.8,622.9 L0,560 L40.6,531.5 L99.5,523.6 L160,500 L171.9,443.7 L200,400 L261.4,363.8 L288.6,344.9 L356.8,302 L400,280 L435.1,248.3 L472.7,219.3 L536.2,179.9 L571,146.9 L600.6,127.8 L651.9,84.2 L700,60Z" fill="url(#purb2)" /><path d="M420,560 L457,562.7 L520,540 L560,600 L559,653.3 L540,700 L470,720 L420,660 L423.1,617.7Z" fill="#b9907f" /><path d="M420,560 L457,562.7 L520,540 L560,600 L559,653.3 L540,700 L470,720 L420,660 L423.1,617.7Z" fill="url(#prurbT)" /><path d="M160,420 L218.5,410.8 L260,400 L271.9,457.3 L280,500 L220,560 L160,540 L159.8,485.3Z" fill="#b9907f" /><path d="M160,420 L218.5,410.8 L260,400 L271.9,457.3 L280,500 L220,560 L160,540 L159.8,485.3Z" fill="url(#prurbT)" /><path d="M100,880 L137.2,847.1 L200,840 L258.2,843.2 L300,860 L292.5,913.1 L260,960 L204.4,977.8 L150,1000 L80,960Z" fill="#b9907f" /><path d="M100,880 L137.2,847.1 L200,840 L258.2,843.2 L300,860 L292.5,913.1 L260,960 L204.4,977.8 L150,1000 L80,960Z" fill="url(#prurbT)" /><path d="M560,880 L619,875.9 L700,860 L747.8,891.9 L800,900 L776.7,943 L760,1000 L698.3,1006.1 L645.3,999.2 L600,1000 L569.6,947.3Z" fill="#b9907f" /><path d="M560,880 L619,875.9 L700,860 L747.8,891.9 L800,900 L776.7,943 L760,1000 L698.3,1006.1 L645.3,999.2 L600,1000 L569.6,947.3Z" fill="url(#prurbT)" /></g><path d="M592.3,706.3 L590,712.9 L585.3,708.6 L582,704 L589.9,701.7Z" fill="#c6a28c" fill-opacity=".7"/><path d="M562.1,627.6 L560,631.1 L555.6,630 L556.1,625.9 L560,625.1Z" fill="#cf9c98" fill-opacity=".7"/><path d="M543.6,694.4 L541.4,698.8 L538.5,696.9 L538.9,692.2 L541.8,691.1Z" fill="#c6a28c" fill-opacity=".7"/><path d="M577.2,740 L575,742 L572.4,741.9 L572.6,738.8 L574.7,736.5Z" fill="#cf9c98" fill-opacity=".7"/><path d="M327.8,638.3 L323.4,644.5 L317.9,642.4 L316.5,634.1 L323.9,631.6Z" fill="#cf9c98" fill-opacity=".7"/><path d="M459.7,668.8 L457.8,673.4 L452.9,670.7 L452.5,665.8 L458.6,663.8Z" fill="#cf9c98" fill-opacity=".7"/><path d="M476,729.9 L471.3,733.6 L466.5,732.5 L466.4,728 L470.7,726.2Z" fill="#cf9c98" fill-opacity=".7"/><path d="M541.6,492.5 L540.4,495.5 L537.7,493.9 L537.2,491.4 L540.9,489.5Z" fill="#cf9c98" fill-opacity=".7"/><path d="M469,726.7 L466.2,731.9 L461,728.9 L460.2,724.9 L466.2,721.5Z" fill="#c6a28c" fill-opacity=".7"/><path d="M442.2,473 L439,478.9 L435.4,475.1 L435,469.5 L439,467.8Z" fill="#c6a28c" fill-opacity=".7"/><path d="M307,588.7 L304.4,591.9 L300.9,589.7 L302.2,587.3 L304.3,586.3Z" fill="#cf9c98" fill-opacity=".7"/><path d="M599,651.9 L593.9,656.5 L586,654.7 L584.5,648.7 L594.4,647.1Z" fill="#cf9c98" fill-opacity=".7"/><path d="M381.1,693.2 L375.2,697.7 L370.9,698 L370.5,689 L375,688.5Z" fill="#c6a28c" fill-opacity=".7"/><path d="M360,488.9 L357.1,497.3 L349.5,491.2 L350.1,484.8 L356.4,483.3Z" fill="#c6a28c" fill-opacity=".7"/><path d="M504,695.3 L498.7,701.6 L491.2,700.5 L492.1,691.6 L500,689.2Z" fill="#cf9c98" fill-opacity=".7"/><path d="M442,543.2 L436.8,549.7 L430.2,546.9 L431.6,539 L437.5,536.9Z" fill="#cf9c98" fill-opacity=".7"/><path d="M493.7,505.7 L493.1,508.7 L490.4,507.4 L490.1,503.9 L492.9,503.6Z" fill="#c6a28c" fill-opacity=".7"/><path d="M401.9,659.1 L400.1,661.5 L394.7,661.2 L396.5,656.2 L399.8,654.5Z" fill="#cf9c98" fill-opacity=".7"/><path d="M331.2,577.8 L328.5,584.7 L322.9,582.9 L322.1,572.4 L328.4,572.8Z" fill="#cf9c98" fill-opacity=".7"/><path d="M318.4,519.7 L314.5,524.7 L307.8,522.2 L310.3,517.6 L315.4,514.6Z" fill="#cf9c98" fill-opacity=".7"/><path d="M452.4,491.6 L449.7,495.6 L446.8,493.4 L445.6,489.3 L449.9,487.5Z" fill="#cf9c98" fill-opacity=".7"/><path d="M372.6,608.1 L369.2,616.1 L364.2,610.8 L362,603.6 L369.6,600.7Z" fill="#c6a28c" fill-opacity=".7"/><path d="M423,489.8 L419,493.1 L413.8,492.5 L411.9,487.2 L418.4,486.1Z" fill="#cf9c98" fill-opacity=".7"/><path d="M453.2,662.1 L451.8,667.4 L445.8,666.2 L442.9,659.9 L450.4,657.3Z" fill="#cf9c98" fill-opacity=".7"/><path d="M340.2,492.9 L335.6,498.3 L331.9,494.6 L332.3,491.5 L336.3,488.9Z" fill="#c6a28c" fill-opacity=".7"/><path d="M465.6,489.2 L463,493.5 L458.1,492.3 L459.7,486.7 L463.1,484.5Z" fill="#c6a28c" fill-opacity=".7"/><path d="M312,521.5 L304.6,527.9 L297.3,525.4 L298.2,517.1 L304.6,515.3Z" fill="#c6a28c" fill-opacity=".7"/><path d="M468.6,567.7 L466.1,571.3 L462.4,569.8 L462.1,565.7 L465.7,564.7Z" fill="#c6a28c" fill-opacity=".7"/><path d="M384.2,683.3 L381.8,686.3 L377.3,686.2 L377.1,679.5 L381.8,679.1Z" fill="#cf9c98" fill-opacity=".7"/><path d="M504.9,709.4 L499.7,715 L493.2,712.1 L494.5,705.6 L500,704.4Z" fill="#cf9c98" fill-opacity=".7"/><path d="M411.6,493.2 L410.5,496.4 L406,495.2 L407.1,491.5 L410.7,491.3Z" fill="#cf9c98" fill-opacity=".7"/><path d="M436.5,509.6 L435.2,513 L429.7,510.9 L431.5,507.9 L435.2,506.5Z" fill="#cf9c98" fill-opacity=".7"/><path d="M563.8,622.9 L561,626.8 L557.4,626.1 L555.8,619.8 L561.2,619.9Z" fill="#cf9c98" fill-opacity=".7"/><path d="M485.2,517.5 L481.8,522.4 L475.2,521.3 L476.1,514.8 L480.7,509.7Z" fill="#c6a28c" fill-opacity=".7"/><path d="M542.6,642.6 L540.6,646.3 L536.6,645.4 L537.1,639.8 L540.6,638.5Z" fill="#c6a28c" fill-opacity=".7"/><path d="M451.4,614.4 L448.2,617.4 L442.6,615.9 L443,612.6 L447.8,610.3Z" fill="#cf9c98" fill-opacity=".7"/><path d="M521.5,649.7 L518,655.4 L510.6,652.4 L510.9,646.9 L517.1,643.7Z" fill="#c6a28c" fill-opacity=".7"/><path d="M444.7,514.8 L442.7,518.5 L437.4,517.7 L436.1,511.3 L443,509.5Z" fill="#c6a28c" fill-opacity=".7"/><path d="M372.3,538.5 L365.4,543.6 L359.1,540.9 L358.2,533.3 L365.8,533Z" fill="#cf9c98" fill-opacity=".7"/><path d="M422.1,634.4 L421.4,638.2 L418,636.4 L416.5,632.6 L421.2,629.7Z" fill="#cf9c98" fill-opacity=".7"/><path d="M441.1,510.4 L437.2,516.1 L431.1,514.7 L430.5,508.3 L436.9,505.8Z" fill="#cf9c98" fill-opacity=".7"/><path d="M358.1,518.4 L355.9,525.3 L349.3,521.2 L349.5,513.6 L356.3,511.9Z" fill="#cf9c98" fill-opacity=".7"/><path d="M526.9,510.7 L524.7,513.6 L520.2,513.3 L520.2,507.3 L524.3,508.3Z" fill="#cf9c98" fill-opacity=".7"/><path d="M386.3,581.6 L384.2,583.6 L381.8,582.7 L381.2,580.7 L384.1,580Z" fill="#cf9c98" fill-opacity=".7"/><path d="M334.2,728.6 L331.5,731.8 L327.1,731.2 L327,726.9 L331,724Z" fill="#cf9c98" fill-opacity=".7"/><path d="M487.3,679.3 L483.4,684.9 L476.8,682.5 L475.2,676.8 L483.2,674.9Z" fill="#cf9c98" fill-opacity=".7"/><path d="M522.9,556.7 L520.3,563 L513.9,561.2 L512.4,554.4 L520.9,549.1Z" fill="#cf9c98" fill-opacity=".7"/><path d="M429.9,621.3 L427.2,626.6 L417.2,625.1 L416.9,618 L426.4,613.5Z" fill="#c6a28c" fill-opacity=".7"/><path d="M518,540.9 L514.5,546.3 L508.3,544.1 L508.3,537.5 L513.9,536Z" fill="#cf9c98" fill-opacity=".7"/><path d="M321.6,584.2 L320,587.1 L315.7,585.8 L315.8,581.7 L319.8,580.2Z" fill="#c6a28c" fill-opacity=".7"/><path d="M592.4,628.8 L591.5,631.8 L587.8,630.8 L588.5,627.5 L591.4,626.5Z" fill="#cf9c98" fill-opacity=".7"/><path d="M424.5,734.3 L419.1,739.8 L412.4,737.6 L411.4,731.8 L418.3,725.6Z" fill="#cf9c98" fill-opacity=".7"/><path d="M365.2,654.6 L360.8,658.3 L355.6,656.6 L356.5,651.4 L361.6,650.5Z" fill="#cf9c98" fill-opacity=".7"/><path d="M351.8,517.3 L347.6,521.9 L343.1,520.2 L343.9,513.9 L347,513.9Z" fill="#cf9c98" fill-opacity=".7"/><path d="M375.5,483.2 L373.1,486.1 L366.6,484.9 L367.7,480.8 L372.8,478.7Z" fill="#cf9c98" fill-opacity=".7"/><path d="M453.3,620.1 L449.1,624.5 L443.1,622 L443.4,617.5 L449.1,614.7Z" fill="#c6a28c" fill-opacity=".7"/><path d="M385.2,526.9 L383.7,532.5 L378.2,528.8 L380.4,525.1 L383.3,521.4Z" fill="#cf9c98" fill-opacity=".7"/><path d="M382.6,710.6 L378.6,714 L374.6,713.2 L373.7,707.8 L378.9,708.1Z" fill="#cf9c98" fill-opacity=".7"/><path d="M600.9,548.5 L597,555.3 L591.5,552.8 L589.6,545.8 L597.9,540.7Z" fill="#cf9c98" fill-opacity=".7"/><path d="M323.3,616.5 L321.3,619.1 L318,618.1 L318.5,614.8 L321.7,612.7Z" fill="#c6a28c" fill-opacity=".7"/><path d="M431.5,485.5 L427,489.2 L418.9,488.8 L419.1,483.1 L425.7,479.6Z" fill="#cf9c98" fill-opacity=".7"/><path d="M580.2,535 L576.8,540.2 L571.1,537.5 L572.4,533.1 L576.7,530.5Z" fill="#cf9c98" fill-opacity=".7"/><path d="M540,556 L539,571 L537,584 L529,592 L521,597 L514,604 L501,611 L490,615 L484,629 L480,642 L478,652 L476,661 L471,675 L466,683" fill="none" stroke="#a58ca8" stroke-width="1.4" stroke-opacity="0.6" stroke-linejoin="round"/><path d="M301,488 L310,482 L324,487 L333,488 L346,494 L353,507 L357,521 L352,529 L343,537" fill="none" stroke="#a58ca8" stroke-width="1.4" stroke-opacity="0.6" stroke-linejoin="round"/><path d="M364,652 L355,641 L350,629 L339,625 L324,622 L317,615 L317,600" fill="none" stroke="#a58ca8" stroke-width="1.4" stroke-opacity="0.6" stroke-linejoin="round"/><path d="M337,491 L327,490 L316,495 L307,495 L294,493 L286,489 L274,487 L267,492 L263,507 L251,513 L236,512 L222,516 L208,520" fill="none" stroke="#a58ca8" stroke-width="1.4" stroke-opacity="0.6" stroke-linejoin="round"/><path d="M490,476 L496,469 L507,463 L512,450 L519,441 L528,433 L530,421 L539,412 L544,406 L548,397" fill="none" stroke="#a58ca8" stroke-width="1.4" stroke-opacity="0.6" stroke-linejoin="round"/><path d="M466,521 L457,508 L452,499 L448,491 L437,487 L423,492 L409,495 L400,496" fill="none" stroke="#a58ca8" stroke-width="1.4" stroke-opacity="0.6" stroke-linejoin="round"/><path d="M302,626 L293,638 L295,645 L301,652 L308,657 L317,666 L327,669 L339,661 L347,649 L356,640" fill="none" stroke="#a58ca8" stroke-width="1.4" stroke-opacity="0.6" stroke-linejoin="round"/><path d="M540,508 L544,501 L544,489 L544,480 L534,468 L527,462 L520,459 L511,450 L496,448 L486,451 L481,463 L477,470 L466,480 L466,495 L472,508" fill="none" stroke="#a58ca8" stroke-width="1.4" stroke-opacity="0.6" stroke-linejoin="round"/><path d="M371,727 L360,732 L352,743 L351,753 L360,763 L357,777 L356,790 L346,798 L335,800 L324,811 L312,821 L303,828 L296,836 L286,848" fill="none" stroke="#a58ca8" stroke-width="1.4" stroke-opacity="0.6" stroke-linejoin="round"/><path d="M425,527 L437,525 L451,517 L455,510 L454,495 L453,482 L457,474 L467,468" fill="none" stroke="#a58ca8" stroke-width="1.4" stroke-opacity="0.6" stroke-linejoin="round"/><path d="M416,605 L431,611 L434,621 L440,632 L450,642 L459,642 L468,643 L475,653 L476,665 L470,675 L460,681" fill="none" stroke="#a58ca8" stroke-width="1.4" stroke-opacity="0.6" stroke-linejoin="round"/><path d="M587,454 L583,440 L581,427 L579,416 L582,406 L589,395 L602,387 L616,381 L631,387 L642,389" fill="none" stroke="#a58ca8" stroke-width="1.4" stroke-opacity="0.6" stroke-linejoin="round"/><path d="M565,548 L561,539 L547,537 L536,535 L526,526 L511,524 L504,518 L493,515 L485,509 L479,497 L467,491 L455,486 L443,493 L433,492 L425,492" fill="none" stroke="#e48a62" stroke-width="2" stroke-opacity="0.75" stroke-linejoin="round"/><path d="M420,750 L407,743 L394,742 L386,747 L378,758 L370,762 L360,760 L346,767" fill="none" stroke="#e48a62" stroke-width="2" stroke-opacity="0.75" stroke-linejoin="round"/><path d="M501,514 L508,518 L520,524 L534,531 L542,544 L555,547 L564,544 L571,538 L583,537 L594,536 L608,542 L616,547 L619,560 L618,573 L621,588" fill="none" stroke="#e48a62" stroke-width="2" stroke-opacity="0.75" stroke-linejoin="round"/><path d="M290,543 L304,545 L314,537 L319,522 L319,513 L330,502 L339,497 L348,495 L357,493 L365,496 L379,503" fill="none" stroke="#e48a62" stroke-width="2" stroke-opacity="0.75" stroke-linejoin="round"/><path d="M413,603 L416,616 L423,627 L428,639 L428,653 L427,665 L418,672 L408,677 L401,691 L401,700 L406,712 L409,721 L411,732" fill="none" stroke="#e48a62" stroke-width="2" stroke-opacity="0.75" stroke-linejoin="round"/><path d="M443,713 L440,702 L443,690 L445,678 L451,663 L456,655 L464,649 L468,635 L474,625 L476,613 L484,607 L484,591 L476,583 L476,568 L472,559" fill="none" stroke="#e48a62" stroke-width="2" stroke-opacity="0.75" stroke-linejoin="round"/><path d="M462,666 L469,674 L476,680 L478,689 L475,700 L468,709 L462,717 L458,730 L452,743 L444,753 L436,758 L420,759" fill="none" stroke="#e48a62" stroke-width="2" stroke-opacity="0.75" stroke-linejoin="round"/><path d="M407,672 L414,681 L415,694 L417,710 L411,719 L415,731 L426,739 L430,750" fill="none" stroke="#df6a72" stroke-width="2.2" stroke-opacity="0.6" stroke-linejoin="round"/><path d="M402,705 L404,714 L409,723 L420,726 L431,723 L440,723 L452,719 L458,710 L468,707 L479,706" fill="none" stroke="#df6a72" stroke-width="2.2" stroke-opacity="0.6" stroke-linejoin="round"/><path d="M447,646 L457,635 L467,631 L476,628 L487,626 L498,630 L512,636 L521,636 L533,638 L543,632 L554,624" fill="none" stroke="#df6a72" stroke-width="2.2" stroke-opacity="0.6" stroke-linejoin="round"/><g transform="translate(300,470) scale(0.25954)"><path d="M-10,110 L60,100 L130,40 L150,-10 L770,-10 L740,60 L680,120 L640,160 L580,200 L500,240 L420,290 L330,330 L250,380 L180,440 L160,500 L150,580 L80,590 L-10,600Z" fill="#b39094" /><path d="M900,0 L850,100 L840,300 L830,500 L830,600 L780,680 L700,760 L600,840 L500,880 L420,920 L300,960 L200,1000 L100,1040" fill="none" stroke="#df6470" stroke-width="11.56" stroke-linejoin="round" stroke-linecap="round"/><path d="M900,830 L1000,850 L1100,840 L1156,830" fill="none" stroke="#df6470" stroke-width="7.71" stroke-linejoin="round" stroke-linecap="round"/><path d="M650,420 L600,520 L560,600 L480,660 L380,700" fill="none" stroke="#df6470" stroke-width="7.71" stroke-linejoin="round" stroke-linecap="round"/><path d="M850,0 L800,200 L700,320 L600,420 L500,520 L400,600 L280,700 L150,800 L0,900" fill="none" stroke="#7a5a5e" stroke-width="5.78" stroke-linejoin="round" stroke-linecap="round"/><path d="M830,100 L760,300 L640,420 L560,560 L450,640 L330,720 L200,790 L50,880" fill="none" stroke="#7a5a5e" stroke-width="5.78" stroke-linejoin="round" stroke-linecap="round"/><path d="M0,640 L80,640 L200,720 L300,780 L400,830 L500,900" fill="none" stroke="#e48a62" stroke-width="7.71" stroke-linejoin="round" stroke-linecap="round"/><path d="M180,440 L250,400 L330,340 L420,290 L520,240 L620,170 L700,100 L760,20" fill="none" stroke="#e48a62" stroke-width="7.71" stroke-linejoin="round" stroke-linecap="round"/><path d="M850,350 L950,330 L1050,350 L1156,330" fill="none" stroke="#e48a62" stroke-width="7.71" stroke-linejoin="round" stroke-linecap="round"/><path d="M1000,0 L1050,100 L1030,250 L960,400 L1050,600 L1100,700 L1130,780" fill="none" stroke="#e48a62" stroke-width="7.71" stroke-linejoin="round" stroke-linecap="round"/><path d="M600,650 L700,630 L780,560 L800,450 L760,300" fill="none" stroke="#e48a62" stroke-width="7.71" stroke-linejoin="round" stroke-linecap="round"/><path d="M280,400 L300,560 L250,640 L280,760 L350,860 L400,1040" fill="none" stroke="#e48a62" stroke-width="7.71" stroke-linejoin="round" stroke-linecap="round"/><path d="M850,650 L950,620 L1050,600 L1156,640" fill="none" stroke="#a58ca8" stroke-width="5.78" stroke-linejoin="round" stroke-linecap="round"/><path d="M0,700 L100,760 L200,820 L300,900" fill="none" stroke="#a58ca8" stroke-width="5.78" stroke-linejoin="round" stroke-linecap="round"/></g></g><g clip-path="url(#cl5)"><rect x="600" y="470" width="300" height="271" fill="#b9907f"/><rect x="600" y="470" width="300" height="271" fill="url(#prur)"/><g transform="translate(600,470) scale(0.25954)"><path d="M0,0 L40.4,9.6 L94.4,5.6 L145,8.3 L205.1,-12.3 L264.2,9.6 L298.9,1 L358,6.9 L411.7,13.1 L464.5,-7 L489.2,-6.1 L544.8,7.4 L610.7,13.4 L663.4,7.8 L717.4,6.8 L750.6,8.3 L813.2,-5.3 L847.3,-8.8 L892.7,6.5 L968.9,8.5 L1007.5,11.4 L1052.7,-3.6 L1092,-9.2 L1156,0 L1161,49.7 L1169.1,90.3 L1166.3,164.8 L1159.5,211.4 L1159.9,247.9 L1153,324.9 L1156.2,353.1 L1154.5,404.3 L1160.9,463.5 L1169.5,532.1 L1157.5,561.9 L1156,631.8 L1145.3,669.3 L1152.7,736.6 L1147.1,773.9 L1165.5,825.7 L1162.2,872 L1155.6,925.4 L1157.3,978.9 L1156,1040 L1094.9,1051.6 L1061.7,1040.5 L992.8,1039.5 L941,1048.9 L904.7,1029.7 L852.8,1049.6 L816,1040.1 L757.9,1036.5 L710.2,1038.3 L664.7,1043.6 L592.8,1036.8 L563,1030.1 L505.3,1044.4 L443.4,1037.1 L393.1,1027.2 L350.8,1026.3 L292.1,1040.4 L252,1034.7 L195,1037.3 L162.7,1053.6 L89.4,1045.6 L62,1049.9 L0,1040 L6.7,995.5 L-4.7,930.5 L-11.1,881.2 L13.7,842.7 L-13.1,772.8 L-11.5,729.1 L-8.7,668.4 L13.5,616.9 L-5,582.9 L5.6,509.1 L2,479.6 L0.4,409.2 L2.8,374.2 L-12.1,298.3 L7.1,261.3 L-0.3,198.1 L9.1,156 L6.1,99 L-7,57.2Z" fill="#d49a97" /><path d="M0,0 L40.4,9.6 L94.4,5.6 L145,8.3 L205.1,-12.3 L264.2,9.6 L298.9,1 L358,6.9 L411.7,13.1 L464.5,-7 L489.2,-6.1 L544.8,7.4 L610.7,13.4 L663.4,7.8 L717.4,6.8 L750.6,8.3 L813.2,-5.3 L847.3,-8.8 L892.7,6.5 L968.9,8.5 L1007.5,11.4 L1052.7,-3.6 L1092,-9.2 L1156,0 L1161,49.7 L1169.1,90.3 L1166.3,164.8 L1159.5,211.4 L1159.9,247.9 L1153,324.9 L1156.2,353.1 L1154.5,404.3 L1160.9,463.5 L1169.5,532.1 L1157.5,561.9 L1156,631.8 L1145.3,669.3 L1152.7,736.6 L1147.1,773.9 L1165.5,825.7 L1162.2,872 L1155.6,925.4 L1157.3,978.9 L1156,1040 L1094.9,1051.6 L1061.7,1040.5 L992.8,1039.5 L941,1048.9 L904.7,1029.7 L852.8,1049.6 L816,1040.1 L757.9,1036.5 L710.2,1038.3 L664.7,1043.6 L592.8,1036.8 L563,1030.1 L505.3,1044.4 L443.4,1037.1 L393.1,1027.2 L350.8,1026.3 L292.1,1040.4 L252,1034.7 L195,1037.3 L162.7,1053.6 L89.4,1045.6 L62,1049.9 L0,1040 L6.7,995.5 L-4.7,930.5 L-11.1,881.2 L13.7,842.7 L-13.1,772.8 L-11.5,729.1 L-8.7,668.4 L13.5,616.9 L-5,582.9 L5.6,509.1 L2,479.6 L0.4,409.2 L2.8,374.2 L-12.1,298.3 L7.1,261.3 L-0.3,198.1 L9.1,156 L6.1,99 L-7,57.2Z" fill="url(#purb)" /><path d="M0,0 L40.4,9.6 L94.4,5.6 L145,8.3 L205.1,-12.3 L264.2,9.6 L298.9,1 L358,6.9 L411.7,13.1 L464.5,-7 L489.2,-6.1 L544.8,7.4 L610.7,13.4 L663.4,7.8 L717.4,6.8 L750.6,8.3 L813.2,-5.3 L847.3,-8.8 L892.7,6.5 L968.9,8.5 L1007.5,11.4 L1052.7,-3.6 L1092,-9.2 L1156,0 L1161,49.7 L1169.1,90.3 L1166.3,164.8 L1159.5,211.4 L1159.9,247.9 L1153,324.9 L1156.2,353.1 L1154.5,404.3 L1160.9,463.5 L1169.5,532.1 L1157.5,561.9 L1156,631.8 L1145.3,669.3 L1152.7,736.6 L1147.1,773.9 L1165.5,825.7 L1162.2,872 L1155.6,925.4 L1157.3,978.9 L1156,1040 L1094.9,1051.6 L1061.7,1040.5 L992.8,1039.5 L941,1048.9 L904.7,1029.7 L852.8,1049.6 L816,1040.1 L757.9,1036.5 L710.2,1038.3 L664.7,1043.6 L592.8,1036.8 L563,1030.1 L505.3,1044.4 L443.4,1037.1 L393.1,1027.2 L350.8,1026.3 L292.1,1040.4 L252,1034.7 L195,1037.3 L162.7,1053.6 L89.4,1045.6 L62,1049.9 L0,1040 L6.7,995.5 L-4.7,930.5 L-11.1,881.2 L13.7,842.7 L-13.1,772.8 L-11.5,729.1 L-8.7,668.4 L13.5,616.9 L-5,582.9 L5.6,509.1 L2,479.6 L0.4,409.2 L2.8,374.2 L-12.1,298.3 L7.1,261.3 L-0.3,198.1 L9.1,156 L6.1,99 L-7,57.2Z" fill="url(#purb2)" /><path d="M70,0 L111.5,9.8 L170.8,-4.9 L244.9,8.8 L294.8,-0.1 L336.9,7.2 L385.7,-5.4 L459.9,12.8 L500,0 L521.7,54.9 L520,100 L555.8,159.4 L569.7,205.8 L600,250 L642.5,303.2 L700,350 L720,390.1 L740,450 L756.2,523.7 L760,580 L695.8,594.5 L650,620 L608.8,582.6 L560,560 L550.5,509.5 L527.1,463.7 L499.3,405.1 L480,360 L446.3,316.3 L420,250 L367.9,224 L300,220 L268.3,248.4 L230,300 L223.9,362.8 L220,420 L261.1,451.6 L300,500 L336.5,557.3 L380,620 L363.8,700.3 L360,760 L363.3,817.2 L338.1,885.9 L338.4,924.4 L348.6,989 L340,1040 L277.9,1029.4 L228.4,1052.8 L165.7,1039 L130.3,1039.1 L70,1040 L64.2,991.8 L71.5,943.1 L74.1,888.7 L76.8,841.4 L63.1,775.7 L68.9,726.7 L74.5,665.6 L78.7,637.3 L58.6,570.4 L73.5,519.4 L79.8,456.9 L74.1,411.3 L67.6,366.6 L76.4,316.9 L66.2,254.8 L56.9,209.7 L62.3,155.7 L82.4,99.6 L56.6,57.3Z" fill="#b9907f" /><path d="M70,0 L111.5,9.8 L170.8,-4.9 L244.9,8.8 L294.8,-0.1 L336.9,7.2 L385.7,-5.4 L459.9,12.8 L500,0 L521.7,54.9 L520,100 L555.8,159.4 L569.7,205.8 L600,250 L642.5,303.2 L700,350 L720,390.1 L740,450 L756.2,523.7 L760,580 L695.8,594.5 L650,620 L608.8,582.6 L560,560 L550.5,509.5 L527.1,463.7 L499.3,405.1 L480,360 L446.3,316.3 L420,250 L367.9,224 L300,220 L268.3,248.4 L230,300 L223.9,362.8 L220,420 L261.1,451.6 L300,500 L336.5,557.3 L380,620 L363.8,700.3 L360,760 L363.3,817.2 L338.1,885.9 L338.4,924.4 L348.6,989 L340,1040 L277.9,1029.4 L228.4,1052.8 L165.7,1039 L130.3,1039.1 L70,1040 L64.2,991.8 L71.5,943.1 L74.1,888.7 L76.8,841.4 L63.1,775.7 L68.9,726.7 L74.5,665.6 L78.7,637.3 L58.6,570.4 L73.5,519.4 L79.8,456.9 L74.1,411.3 L67.6,366.6 L76.4,316.9 L66.2,254.8 L56.9,209.7 L62.3,155.7 L82.4,99.6 L56.6,57.3Z" fill="url(#prurbT)" /><path d="M0,0 L70,0 L76.3,60.5 L82.8,114.6 L60.1,144.1 L63.8,202.1 L79,263.2 L81.2,322.2 L82.7,368.4 L69.8,407.2 L72.6,472.1 L74.6,526.1 L63.1,574.1 L81.3,610.5 L68.8,671.3 L56.5,738.4 L68.8,786.7 L61.7,829.4 L75.3,887.3 L60.8,931.4 L71,1000.2 L70,1040 L0,1040 L-11.6,980.6 L9,936.8 L4.6,878.4 L-4.6,832.9 L-8.2,790.4 L-4.2,738.8 L-10.6,675.2 L2.1,630.5 L1.2,561.2 L-8.5,529.9 L-13.3,476.1 L-4.8,422.9 L2.4,357.8 L2.4,308.1 L-5.8,250 L-9.7,206.8 L-4.6,148.4 L-1.6,108 L-8.1,38.7Z" fill="#b9907f" /><path d="M0,0 L70,0 L76.3,60.5 L82.8,114.6 L60.1,144.1 L63.8,202.1 L79,263.2 L81.2,322.2 L82.7,368.4 L69.8,407.2 L72.6,472.1 L74.6,526.1 L63.1,574.1 L81.3,610.5 L68.8,671.3 L56.5,738.4 L68.8,786.7 L61.7,829.4 L75.3,887.3 L60.8,931.4 L71,1000.2 L70,1040 L0,1040 L-11.6,980.6 L9,936.8 L4.6,878.4 L-4.6,832.9 L-8.2,790.4 L-4.2,738.8 L-10.6,675.2 L2.1,630.5 L1.2,561.2 L-8.5,529.9 L-13.3,476.1 L-4.8,422.9 L2.4,357.8 L2.4,308.1 L-5.8,250 L-9.7,206.8 L-4.6,148.4 L-1.6,108 L-8.1,38.7Z" fill="url(#prurbT)" /><path d="M600,650 L644.2,632.5 L700,640 L762.2,680.4 L800,700 L781,753.8 L780,800 L730.4,806 L680,800 L640.2,771.8 L600,720Z" fill="#b9907f" /><path d="M600,650 L644.2,632.5 L700,640 L762.2,680.4 L800,700 L781,753.8 L780,800 L730.4,806 L680,800 L640.2,771.8 L600,720Z" fill="url(#prurbT)" /></g><path d="M871.4,564.6 L865.6,569.4 L860,567.6 L857.7,562.2 L865.5,559.8Z" fill="#cf9c98" fill-opacity=".7"/><path d="M734.7,574.7 L730.1,580.4 L725.3,578.2 L724.7,572.2 L730.1,569.2Z" fill="#c6a28c" fill-opacity=".7"/><path d="M794.7,501.6 L790,509.5 L781.7,504.8 L782.5,498 L789.7,495.3Z" fill="#c6a28c" fill-opacity=".7"/><path d="M762.9,629.9 L757,634.3 L749.6,633.1 L750.3,627.2 L756,623.7Z" fill="#c6a28c" fill-opacity=".7"/><path d="M863.1,732.2 L861.2,738.2 L856.9,735.6 L856.4,729.2 L862.1,727Z" fill="#cf9c98" fill-opacity=".7"/><path d="M795.9,566.4 L793.3,572.3 L786.9,571.3 L783.2,562.5 L792,558.1Z" fill="#cf9c98" fill-opacity=".7"/><path d="M678.6,481.8 L675.4,488.7 L666.6,484.6 L668.2,478.8 L676.2,475.9Z" fill="#c6a28c" fill-opacity=".7"/><path d="M853.9,614.9 L852.9,619.9 L847.6,616.5 L847.2,611.7 L853.1,610Z" fill="#c6a28c" fill-opacity=".7"/><path d="M708.2,568.1 L706,570.4 L702.9,569.3 L702.9,566 L706,564.3Z" fill="#cf9c98" fill-opacity=".7"/><path d="M810.7,622.4 L806.5,627 L802.7,624.6 L802.6,620.3 L806.3,617.9Z" fill="#cf9c98" fill-opacity=".7"/><path d="M738.1,517.8 L736.1,523.7 L730.6,521.1 L732.4,515.1 L736.8,512.3Z" fill="#cf9c98" fill-opacity=".7"/><path d="M631.7,572.8 L624.8,579.6 L617.4,576.6 L616.2,568.8 L624.4,565.4Z" fill="#c6a28c" fill-opacity=".7"/><path d="M638,612.1 L632.5,618.1 L622.9,615.4 L625.2,609.5 L632.6,604.9Z" fill="#c6a28c" fill-opacity=".7"/><path d="M896.1,541.2 L894.6,543.4 L890.9,543.7 L891,539.4 L894.3,538.7Z" fill="#cf9c98" fill-opacity=".7"/><path d="M854.1,474 L851.8,476.3 L849.1,475.1 L849.2,472.7 L851.9,472Z" fill="#cf9c98" fill-opacity=".7"/><path d="M614.4,738.1 L612.8,740.9 L610.6,739 L610.8,737.1 L613,735.1Z" fill="#c6a28c" fill-opacity=".7"/><path d="M674.8,662.4 L669.9,665.5 L663.9,664.1 L666.6,659.7 L669.9,659.1Z" fill="#c6a28c" fill-opacity=".7"/><path d="M660,676.5 L655.6,681.4 L649.1,680.2 L649.1,673.3 L656.6,670.9Z" fill="#cf9c98" fill-opacity=".7"/><path d="M748.8,698.3 L744.2,703.9 L740.2,701.2 L739,695.7 L743.9,692.4Z" fill="#cf9c98" fill-opacity=".7"/><path d="M726.1,501.9 L719.8,506.7 L714.4,506.5 L712.6,497 L720.3,496.8Z" fill="#c6a28c" fill-opacity=".7"/><path d="M634.9,629.5 L633.4,632.5 L629.5,632.5 L626.8,626.7 L633.9,625.3Z" fill="#cf9c98" fill-opacity=".7"/><path d="M657.3,593.4 L651.5,600.6 L644.2,596.1 L644.3,590.4 L651.9,586Z" fill="#cf9c98" fill-opacity=".7"/><path d="M641.3,548.5 L640.6,550.5 L637.3,549.5 L637.1,547.1 L640.4,546.8Z" fill="#cf9c98" fill-opacity=".7"/><path d="M769,640.4 L763.4,646.3 L759.5,644.5 L757.9,638.5 L763.9,633.8Z" fill="#c6a28c" fill-opacity=".7"/><path d="M882.8,609.3 L878.7,612.9 L873.3,612.7 L871.5,604.9 L877.7,602.1Z" fill="#cf9c98" fill-opacity=".7"/><path d="M715.2,660 L712.8,668.2 L705,663.2 L703.2,657 L711.9,656.1Z" fill="#cf9c98" fill-opacity=".7"/><path d="M740.9,606.5 L736.3,610.8 L731.4,609 L728.3,602.4 L736.9,600.1Z" fill="#cf9c98" fill-opacity=".7"/><path d="M829.3,616.1 L824.4,623.3 L817.6,619.7 L819.3,612.2 L824.8,611.9Z" fill="#c6a28c" fill-opacity=".7"/><path d="M816.1,688.2 L811.2,695.5 L802.9,691.9 L806.5,683.5 L811.8,683.4Z" fill="#c6a28c" fill-opacity=".7"/><path d="M727.3,607.2 L723.8,610.8 L718.7,610.8 L719.2,605.1 L723.8,603.1Z" fill="#cf9c98" fill-opacity=".7"/><path d="M745.3,626.7 L742.3,632.5 L733.7,629.5 L735.2,622.9 L743.4,619.9Z" fill="#c6a28c" fill-opacity=".7"/><path d="M861.7,718.7 L860.3,722.8 L854.8,722.4 L852.8,716.2 L859.5,713.6Z" fill="#cf9c98" fill-opacity=".7"/><path d="M712.3,505.8 L710.1,508.8 L702.8,509.4 L704.4,502.6 L709.2,499.4Z" fill="#cf9c98" fill-opacity=".7"/><path d="M798.1,539.6 L794.8,545 L787.6,542.9 L787.2,536.9 L796,533.6Z" fill="#c6a28c" fill-opacity=".7"/><path d="M657.9,580.9 L653,584.8 L648.6,582.6 L649.2,577.7 L652.7,575.5Z" fill="#cf9c98" fill-opacity=".7"/><path d="M659.8,554 L657.7,556.5 L654.4,555.1 L654.2,552.8 L657.6,550.5Z" fill="#c6a28c" fill-opacity=".7"/><path d="M768.5,595.7 L764.5,598.3 L759.4,598 L759.6,593 L764.3,591.9Z" fill="#c6a28c" fill-opacity=".7"/><path d="M773.2,657.6 L770.7,661 L764.9,661.5 L766.7,653.9 L770.8,651.1Z" fill="#cf9c98" fill-opacity=".7"/><path d="M715.3,522.7 L713.1,530.2 L705.4,526.4 L706.5,519.9 L713.7,515.4Z" fill="#cf9c98" fill-opacity=".7"/><path d="M645.8,528.4 L643.6,533.6 L638.6,530.4 L639.1,526.7 L644,526Z" fill="#cf9c98" fill-opacity=".7"/><path d="M834.1,652.4 L832.2,653.8 L829.6,654.2 L830.1,650.7 L832.1,650.4Z" fill="#cf9c98" fill-opacity=".7"/><path d="M750.9,498.2 L750.1,500.4 L746.5,499.3 L747.5,496.3 L750.1,496.5Z" fill="#cf9c98" fill-opacity=".7"/><path d="M681.5,723.5 L677.6,729.6 L670.8,726.3 L670.3,720.7 L676.6,719Z" fill="#cf9c98" fill-opacity=".7"/><path d="M789.7,508.5 L787.2,516.2 L780.8,511.2 L782,505.7 L787.6,503.9Z" fill="#c6a28c" fill-opacity=".7"/><path d="M832.8,519.6 L831.9,521.5 L829.8,521.3 L830.1,517.8 L832.2,516.7Z" fill="#cf9c98" fill-opacity=".7"/><path d="M744.1,604.8 L739.6,612.8 L735.3,608.6 L731.8,601.5 L740,599Z" fill="#cf9c98" fill-opacity=".7"/><path d="M732.3,713 L730.8,717.2 L725.5,715 L725.7,710.2 L730,709.6Z" fill="#cf9c98" fill-opacity=".7"/><path d="M671.9,629.5 L670.9,631.9 L668.7,630.8 L667.6,628.2 L670.7,626.3Z" fill="#c6a28c" fill-opacity=".7"/><path d="M808.5,668.1 L803.3,671.4 L796.5,670.2 L798.8,663.9 L803.6,662.3Z" fill="#cf9c98" fill-opacity=".7"/><path d="M615.5,602.2 L613.8,607.6 L608.3,604.2 L607.7,598.3 L613.5,597.7Z" fill="#c6a28c" fill-opacity=".7"/><path d="M624.7,485.8 L621,489.7 L615.6,487.5 L615.5,483.2 L621.9,482.9Z" fill="#cf9c98" fill-opacity=".7"/><path d="M674.2,609 L671.7,615.2 L664.6,611.6 L662.8,604.2 L670.6,604.3Z" fill="#c6a28c" fill-opacity=".7"/><path d="M708.4,554 L703.7,557.1 L697.3,556.1 L697.8,551.3 L703.6,547.9Z" fill="#cf9c98" fill-opacity=".7"/><path d="M848.2,549 L845.3,553.8 L841.4,552.4 L839.2,545.4 L845.2,543.4Z" fill="#c6a28c" fill-opacity=".7"/><path d="M833.3,511.1 L831.2,514.6 L826.2,513.4 L824.4,507.9 L831.3,507.8Z" fill="#cf9c98" fill-opacity=".7"/><path d="M665,611 L661.9,614.6 L657.6,613 L657.6,609.2 L661.6,606.9Z" fill="#cf9c98" fill-opacity=".7"/><path d="M730.1,690.5 L729.2,693.9 L721.6,693.2 L723.3,688.7 L728.7,686.5Z" fill="#cf9c98" fill-opacity=".7"/><path d="M631.8,536.8 L628,540 L623.9,538 L623.8,534 L628.2,533.8Z" fill="#cf9c98" fill-opacity=".7"/><path d="M699.3,493.5 L696.8,498 L689.7,497 L691.2,491.2 L696.1,490.3Z" fill="#c6a28c" fill-opacity=".7"/><path d="M888.3,680.5 L885.6,684.6 L880.1,682.5 L879.7,678.8 L885,677.3Z" fill="#cf9c98" fill-opacity=".7"/><path d="M771.7,646.7 L767.8,650.3 L763.3,648.4 L763.9,644.7 L768.3,642.7Z" fill="#cf9c98" fill-opacity=".7"/><path d="M717.8,480.2 L715.4,482.6 L712.3,481.3 L712.8,479 L715.3,476.9Z" fill="#cf9c98" fill-opacity=".7"/><path d="M874,608 L858,605 L843,604 L837,596 L837,582 L834,569 L821,561 L811,561 L799,555 L790,547" fill="none" stroke="#a58ca8" stroke-width="1.4" stroke-opacity="0.6" stroke-linejoin="round"/><path d="M902,746 L910,743 L920,738 L924,725 L922,711 L927,703 L926,691 L938,680 L951,671 L954,663 L952,655 L951,646 L945,641 L944,632 L949,618" fill="none" stroke="#a58ca8" stroke-width="1.4" stroke-opacity="0.6" stroke-linejoin="round"/><path d="M673,580 L663,589 L649,596 L637,597 L627,588 L619,578 L617,563 L625,553 L634,548 L642,538" fill="none" stroke="#a58ca8" stroke-width="1.4" stroke-opacity="0.6" stroke-linejoin="round"/><path d="M690,598 L699,594 L707,598 L715,595 L724,590 L728,577 L727,565" fill="none" stroke="#a58ca8" stroke-width="1.4" stroke-opacity="0.6" stroke-linejoin="round"/><path d="M740,725 L731,725 L724,731 L721,740 L714,746 L705,748 L698,755 L687,762 L678,772 L669,772 L657,772" fill="none" stroke="#a58ca8" stroke-width="1.4" stroke-opacity="0.6" stroke-linejoin="round"/><path d="M660,697 L656,705 L647,713 L643,723 L631,731 L625,741 L628,752 L627,765 L620,774" fill="none" stroke="#a58ca8" stroke-width="1.4" stroke-opacity="0.6" stroke-linejoin="round"/><path d="M866,560 L874,565 L883,578 L890,583 L898,584 L910,591 L915,600 L918,610" fill="none" stroke="#a58ca8" stroke-width="1.4" stroke-opacity="0.6" stroke-linejoin="round"/><path d="M610,452 L608,440 L608,430 L597,418 L584,410 L576,398 L568,397 L556,402 L545,406 L532,410 L527,419 L518,430 L520,443 L525,453 L528,464" fill="none" stroke="#a58ca8" stroke-width="1.4" stroke-opacity="0.6" stroke-linejoin="round"/><path d="M644,656 L653,658 L662,670 L676,676 L685,681 L688,692 L697,699 L699,709 L708,713" fill="none" stroke="#a58ca8" stroke-width="1.4" stroke-opacity="0.6" stroke-linejoin="round"/><path d="M828,640 L839,631 L853,628 L862,628 L877,626 L889,624 L897,612 L894,604" fill="none" stroke="#a58ca8" stroke-width="1.4" stroke-opacity="0.6" stroke-linejoin="round"/><path d="M715,739 L707,753 L696,754 L687,763 L679,768 L677,778 L675,790 L683,802 L687,816 L686,832" fill="none" stroke="#a58ca8" stroke-width="1.4" stroke-opacity="0.6" stroke-linejoin="round"/><path d="M891,479 L878,475 L872,465 L863,459 L855,457 L847,454 L833,460 L817,463 L809,460 L801,451 L797,440" fill="none" stroke="#a58ca8" stroke-width="1.4" stroke-opacity="0.6" stroke-linejoin="round"/><path d="M877,496 L891,497 L902,497 L911,487 L918,480 L920,465 L919,450 L912,442 L909,428 L901,417" fill="none" stroke="#e48a62" stroke-width="2" stroke-opacity="0.75" stroke-linejoin="round"/><path d="M623,598 L618,583 L623,571 L627,561 L627,550 L635,541 L633,525 L641,513 L640,505 L636,496 L623,489 L609,489 L594,493 L583,502 L582,514" fill="none" stroke="#e48a62" stroke-width="2" stroke-opacity="0.75" stroke-linejoin="round"/><path d="M864,726 L850,725 L840,728 L824,726 L813,722 L804,726 L795,724 L788,714 L778,710 L769,706 L757,701 L743,708 L734,709 L721,701 L713,692" fill="none" stroke="#e48a62" stroke-width="2" stroke-opacity="0.75" stroke-linejoin="round"/><path d="M635,518 L631,507 L634,499 L640,494 L652,493 L661,494 L674,498 L679,505 L692,508 L701,510 L710,507" fill="none" stroke="#e48a62" stroke-width="2" stroke-opacity="0.75" stroke-linejoin="round"/><path d="M733,694 L744,689 L755,685 L761,675 L776,670 L782,664 L790,664 L799,657 L807,653 L814,641 L822,635 L830,631 L839,635" fill="none" stroke="#e48a62" stroke-width="2" stroke-opacity="0.75" stroke-linejoin="round"/><path d="M908,658 L912,648 L912,637 L911,625 L906,612 L902,601 L898,592 L899,578 L893,569 L880,562 L869,564 L855,558 L844,554 L831,556 L821,560" fill="none" stroke="#e48a62" stroke-width="2" stroke-opacity="0.75" stroke-linejoin="round"/><path d="M877,584 L869,590 L860,587 L851,586 L845,580 L838,572 L827,566 L818,564" fill="none" stroke="#e48a62" stroke-width="2" stroke-opacity="0.75" stroke-linejoin="round"/><path d="M748,503 L738,491 L724,492 L716,489 L703,496 L699,507 L692,511 L689,519 L679,530 L677,542 L670,548" fill="none" stroke="#df6a72" stroke-width="2.2" stroke-opacity="0.6" stroke-linejoin="round"/><path d="M876,626 L866,615 L858,614 L847,603 L838,598 L830,600 L819,606 L813,613 L801,616" fill="none" stroke="#df6a72" stroke-width="2.2" stroke-opacity="0.6" stroke-linejoin="round"/><path d="M879,691 L894,693 L902,697 L914,705 L923,716 L930,729 L933,739 L943,746 L957,743 L966,745" fill="none" stroke="#df6a72" stroke-width="2.2" stroke-opacity="0.6" stroke-linejoin="round"/><g transform="translate(600,470) scale(0.25954)"><path d="M1090,-20 L980,150 L900,350 L880,550 L910,700 L990,850 L1090,1000 L1156,1040" fill="none" stroke="#bc949e" stroke-width="30.82" stroke-linejoin="round" stroke-linecap="round"/><path d="M1150,0 L1040,150 L960,350 L930,550 L960,700 L1040,850 L1140,1000" fill="none" stroke="#a58ca8" stroke-width="7.71" stroke-linejoin="round" stroke-linecap="round"/><path d="M980,0 L1040,100 L1100,200 L1156,260" fill="none" stroke="#a58ca8" stroke-width="11.56" stroke-linejoin="round" stroke-linecap="round"/><path d="M780,1040 L820,900 L900,800 L1000,720 L1100,660 L1156,640" fill="none" stroke="#df6470" stroke-width="11.56" stroke-linejoin="round" stroke-linecap="round"/><path d="M0,330 L80,370 L160,400 L250,390" fill="none" stroke="#df6470" stroke-width="9.63" stroke-linejoin="round" stroke-linecap="round"/><path d="M1000,0 L1080,30 L1156,60" fill="none" stroke="#df6470" stroke-width="7.71" stroke-linejoin="round" stroke-linecap="round"/><path d="M0,790 L70,770 L200,770 L330,740 L450,720 L560,740 L650,800 L730,880 L760,1000" fill="none" stroke="#e48a62" stroke-width="7.71" stroke-linejoin="round" stroke-linecap="round"/><path d="M270,0 L260,150 L220,350 L300,480 L380,600 L440,700 L520,760 L600,860" fill="none" stroke="#e48a62" stroke-width="7.71" stroke-linejoin="round" stroke-linecap="round"/><path d="M430,380 L520,320 L600,250 L640,200" fill="none" stroke="#e48a62" stroke-width="7.71" stroke-linejoin="round" stroke-linecap="round"/><path d="M520,0 L540,150 L600,220 L700,300 L740,400 L760,500 L800,600 L860,750 L900,850 L960,1000" fill="none" stroke="#e48a62" stroke-width="7.71" stroke-linejoin="round" stroke-linecap="round"/><path d="M720,0 L700,100 L680,200 L660,300" fill="none" stroke="#e48a62" stroke-width="7.71" stroke-linejoin="round" stroke-linecap="round"/><path d="M830,0 L850,150 L820,300 L840,500 L830,600" fill="none" stroke="#e48a62" stroke-width="7.71" stroke-linejoin="round" stroke-linecap="round"/><path d="M480,700 L540,780 L580,880 L620,1000" fill="none" stroke="#7a5a5e" stroke-width="5.78" stroke-linejoin="round" stroke-linecap="round"/><path d="M900,800 L1000,730 L1156,680" fill="none" stroke="#7a5a5e" stroke-width="5.78" stroke-linejoin="round" stroke-linecap="round"/><path d="M80,440 L200,520 L180,700 L160,900 L120,1040" fill="none" stroke="#a58ca8" stroke-width="5.78" stroke-linejoin="round" stroke-linecap="round"/><path d="M300,200 L420,180 L480,250 L540,330 L620,420 L680,520 L760,590" fill="none" stroke="#a58ca8" stroke-width="5.78" stroke-linejoin="round" stroke-linecap="round"/></g></g><g clip-path="url(#cl6)"><rect x="900" y="470" width="300" height="271" fill="#b9907f"/><rect x="900" y="470" width="300" height="271" fill="url(#prur)"/><g transform="translate(900,470) scale(0.25954)"><path d="M0,0 L57.5,-0.3 L97.3,-2.4 L144.3,-7.4 L201.7,5.6 L259.6,-2.1 L314.4,-10 L365.7,8.3 L412.1,-10.4 L455.8,6.2 L512.6,7.1 L539.7,2.4 L592.3,10.9 L662.1,-1.1 L715.2,-11.3 L753.8,-10.7 L811.7,10.3 L855,7 L891.7,-9.1 L943.5,-1.8 L1009.1,11.1 L1051.4,0.3 L1111.7,-6.7 L1156,0 L1155.9,46.1 L1152.6,106.6 L1155.1,158.4 L1156.9,217.9 L1160.6,263.9 L1154.1,316.7 L1161.9,353.3 L1142.5,402.7 L1157.4,463.5 L1142.8,531.7 L1146.1,575.7 L1166.5,620.2 L1159.1,666.8 L1161.7,730.7 L1157.8,781.4 L1148.8,844.1 L1153.3,884.9 L1162.9,942 L1149.7,993.3 L1156,1040 L1104.9,1027.3 L1066,1043.4 L1005.7,1051.9 L955.5,1029 L918.3,1043.5 L848.8,1052.1 L795.8,1038.3 L748,1033.5 L717.2,1046.1 L648.5,1037.4 L612.6,1032.8 L565.1,1032.6 L494.3,1052.4 L448.7,1030.6 L391.5,1036.4 L347.6,1030.3 L314.7,1045.9 L239.5,1036 L214.6,1032.5 L160.3,1043.9 L105.3,1036.4 L64.3,1041.7 L0,1040 L6.3,998.8 L10.5,936.6 L0,896.8 L7.9,821.7 L-7.4,777.2 L6.2,721.1 L-6.1,675.6 L-4.4,618.8 L10.2,572.1 L-3.2,527.8 L-10.5,471.7 L-4.6,427.3 L13.9,366.4 L-7.7,306.1 L3.2,264.1 L-8.6,216.5 L10.3,166.7 L-8.1,98.7 L-5.5,46.2Z" fill="#d49a97" /><path d="M0,0 L57.5,-0.3 L97.3,-2.4 L144.3,-7.4 L201.7,5.6 L259.6,-2.1 L314.4,-10 L365.7,8.3 L412.1,-10.4 L455.8,6.2 L512.6,7.1 L539.7,2.4 L592.3,10.9 L662.1,-1.1 L715.2,-11.3 L753.8,-10.7 L811.7,10.3 L855,7 L891.7,-9.1 L943.5,-1.8 L1009.1,11.1 L1051.4,0.3 L1111.7,-6.7 L1156,0 L1155.9,46.1 L1152.6,106.6 L1155.1,158.4 L1156.9,217.9 L1160.6,263.9 L1154.1,316.7 L1161.9,353.3 L1142.5,402.7 L1157.4,463.5 L1142.8,531.7 L1146.1,575.7 L1166.5,620.2 L1159.1,666.8 L1161.7,730.7 L1157.8,781.4 L1148.8,844.1 L1153.3,884.9 L1162.9,942 L1149.7,993.3 L1156,1040 L1104.9,1027.3 L1066,1043.4 L1005.7,1051.9 L955.5,1029 L918.3,1043.5 L848.8,1052.1 L795.8,1038.3 L748,1033.5 L717.2,1046.1 L648.5,1037.4 L612.6,1032.8 L565.1,1032.6 L494.3,1052.4 L448.7,1030.6 L391.5,1036.4 L347.6,1030.3 L314.7,1045.9 L239.5,1036 L214.6,1032.5 L160.3,1043.9 L105.3,1036.4 L64.3,1041.7 L0,1040 L6.3,998.8 L10.5,936.6 L0,896.8 L7.9,821.7 L-7.4,777.2 L6.2,721.1 L-6.1,675.6 L-4.4,618.8 L10.2,572.1 L-3.2,527.8 L-10.5,471.7 L-4.6,427.3 L13.9,366.4 L-7.7,306.1 L3.2,264.1 L-8.6,216.5 L10.3,166.7 L-8.1,98.7 L-5.5,46.2Z" fill="url(#purb)" /><path d="M0,0 L57.5,-0.3 L97.3,-2.4 L144.3,-7.4 L201.7,5.6 L259.6,-2.1 L314.4,-10 L365.7,8.3 L412.1,-10.4 L455.8,6.2 L512.6,7.1 L539.7,2.4 L592.3,10.9 L662.1,-1.1 L715.2,-11.3 L753.8,-10.7 L811.7,10.3 L855,7 L891.7,-9.1 L943.5,-1.8 L1009.1,11.1 L1051.4,0.3 L1111.7,-6.7 L1156,0 L1155.9,46.1 L1152.6,106.6 L1155.1,158.4 L1156.9,217.9 L1160.6,263.9 L1154.1,316.7 L1161.9,353.3 L1142.5,402.7 L1157.4,463.5 L1142.8,531.7 L1146.1,575.7 L1166.5,620.2 L1159.1,666.8 L1161.7,730.7 L1157.8,781.4 L1148.8,844.1 L1153.3,884.9 L1162.9,942 L1149.7,993.3 L1156,1040 L1104.9,1027.3 L1066,1043.4 L1005.7,1051.9 L955.5,1029 L918.3,1043.5 L848.8,1052.1 L795.8,1038.3 L748,1033.5 L717.2,1046.1 L648.5,1037.4 L612.6,1032.8 L565.1,1032.6 L494.3,1052.4 L448.7,1030.6 L391.5,1036.4 L347.6,1030.3 L314.7,1045.9 L239.5,1036 L214.6,1032.5 L160.3,1043.9 L105.3,1036.4 L64.3,1041.7 L0,1040 L6.3,998.8 L10.5,936.6 L0,896.8 L7.9,821.7 L-7.4,777.2 L6.2,721.1 L-6.1,675.6 L-4.4,618.8 L10.2,572.1 L-3.2,527.8 L-10.5,471.7 L-4.6,427.3 L13.9,366.4 L-7.7,306.1 L3.2,264.1 L-8.6,216.5 L10.3,166.7 L-8.1,98.7 L-5.5,46.2Z" fill="url(#purb2)" /><path d="M930,100 L1006,84.4 L1070,80 L1074.5,131.6 L1079.5,168.6 L1073.7,227.2 L1070,280 L1023.3,272.6 L960,260 L951.7,219.9 L946.2,150.4Z" fill="#b9907f" /><path d="M930,100 L1006,84.4 L1070,80 L1074.5,131.6 L1079.5,168.6 L1073.7,227.2 L1070,280 L1023.3,272.6 L960,260 L951.7,219.9 L946.2,150.4Z" fill="url(#prurbT)" /><path d="M1080,0 L1156,0 L1156.3,68.8 L1156.7,102.5 L1164.2,162 L1162.7,233.1 L1165.4,292 L1156,340 L1080,360 L1070.9,309.4 L1071.9,264.8 L1091.5,196.8 L1073.5,167.9 L1070.3,94.5 L1091.3,43.5Z" fill="#b9907f" /><path d="M1080,0 L1156,0 L1156.3,68.8 L1156.7,102.5 L1164.2,162 L1162.7,233.1 L1165.4,292 L1156,340 L1080,360 L1070.9,309.4 L1071.9,264.8 L1091.5,196.8 L1073.5,167.9 L1070.3,94.5 L1091.3,43.5Z" fill="url(#prurbT)" /><path d="M880,820 L943.3,797.3 L1000,800 L1070,860 L1073.5,918.4 L1071.6,978.6 L1070,1040 L1004,1022.5 L960,1000 L945.8,948.2 L893,875.5Z" fill="#b9907f" /><path d="M880,820 L943.3,797.3 L1000,800 L1070,860 L1073.5,918.4 L1071.6,978.6 L1070,1040 L1004,1022.5 L960,1000 L945.8,948.2 L893,875.5Z" fill="url(#prurbT)" /></g><path d="M1116.2,714.2 L1113.6,716.8 L1111,715.2 L1110.7,713.1 L1113.9,711.8Z" fill="#c6a28c" fill-opacity=".7"/><path d="M1127,545.4 L1125.3,548.1 L1120.9,548.6 L1121.4,542.9 L1124.8,540.4Z" fill="#cf9c98" fill-opacity=".7"/><path d="M958.9,672 L955.8,675.7 L952.1,673.7 L952,670 L955.6,666.7Z" fill="#cf9c98" fill-opacity=".7"/><path d="M942.8,542.9 L940.4,546.4 L937,544.4 L937.3,541 L940,540.2Z" fill="#cf9c98" fill-opacity=".7"/><path d="M1104.2,706.2 L1102.4,711.3 L1097.8,708.2 L1096.2,702.6 L1102.1,700.3Z" fill="#cf9c98" fill-opacity=".7"/><path d="M1154.3,528.5 L1148.5,533.3 L1141,532.4 L1143.9,524.3 L1148.6,521.1Z" fill="#cf9c98" fill-opacity=".7"/><path d="M934.6,559.8 L931.5,563.1 L928.4,563.3 L927.1,557.7 L931.5,555.4Z" fill="#cf9c98" fill-opacity=".7"/><path d="M952.8,651 L948.6,656.3 L942.7,654.5 L943.6,647.7 L948.3,647.8Z" fill="#cf9c98" fill-opacity=".7"/><path d="M1069,635.5 L1067.4,639.9 L1063.9,638.4 L1063.1,633.4 L1067.8,630.4Z" fill="#cf9c98" fill-opacity=".7"/><path d="M921.7,703.2 L918.1,707.4 L915.2,705.8 L914.8,700.7 L918.6,698.9Z" fill="#cf9c98" fill-opacity=".7"/><path d="M1193.5,613.1 L1191.6,616.2 L1187.4,615.8 L1187.6,611.8 L1191.5,610.8Z" fill="#cf9c98" fill-opacity=".7"/><path d="M1066.2,591.4 L1064,595.2 L1059.9,593.7 L1057.3,587.1 L1064.6,585.3Z" fill="#cf9c98" fill-opacity=".7"/><path d="M1005.8,665.4 L1004.5,669.4 L997,670.4 L997.2,662.7 L1003.8,658.7Z" fill="#c6a28c" fill-opacity=".7"/><path d="M970.7,606.6 L967.9,608.6 L964.8,608.8 L964.2,604.3 L967.6,604.8Z" fill="#cf9c98" fill-opacity=".7"/><path d="M1122.5,544.1 L1118.9,547.9 L1116.1,546.2 L1115.2,542.6 L1118.9,539.5Z" fill="#c6a28c" fill-opacity=".7"/><path d="M1053.5,592.7 L1049.3,598.7 L1041.9,595.9 L1042.1,590.3 L1049.5,584.6Z" fill="#c6a28c" fill-opacity=".7"/><path d="M1156.1,735.3 L1153,738.8 L1148.1,736.9 L1147,731.7 L1153.4,730.6Z" fill="#cf9c98" fill-opacity=".7"/><path d="M1040.5,495.8 L1039.1,500.4 L1035.7,497.3 L1034.4,492.8 L1039,492.1Z" fill="#c6a28c" fill-opacity=".7"/><path d="M966.5,470.6 L963.3,475.2 L957.1,472.8 L959.3,468.5 L962.8,466.9Z" fill="#c6a28c" fill-opacity=".7"/><path d="M985.3,736.7 L982.7,738.8 L979,738 L978.7,734.8 L982.6,734.1Z" fill="#cf9c98" fill-opacity=".7"/><path d="M999.5,701.8 L997.7,707.2 L992.1,705 L994,699.3 L997.4,698.5Z" fill="#c6a28c" fill-opacity=".7"/><path d="M1161.6,565.2 L1158.5,571.2 L1148.8,570.1 L1150.1,560.7 L1158.8,557Z" fill="#c6a28c" fill-opacity=".7"/><path d="M1008.7,631.7 L1007.3,635.3 L1002.2,633.4 L1002.1,628.5 L1007,627.3Z" fill="#cf9c98" fill-opacity=".7"/><path d="M906.3,472 L904.6,474.9 L901,473.1 L902.1,470.1 L904.2,469.2Z" fill="#c6a28c" fill-opacity=".7"/><path d="M923.2,682.9 L920.8,686.9 L915.4,685.4 L915.6,680.2 L920.5,679.3Z" fill="#cf9c98" fill-opacity=".7"/><path d="M936.2,479.2 L934.2,482 L930,482 L929.2,477.2 L934,477.1Z" fill="#cf9c98" fill-opacity=".7"/><path d="M1067.7,482.9 L1066,486.6 L1058.8,484.8 L1059.7,480 L1065.3,478.6Z" fill="#c6a28c" fill-opacity=".7"/><path d="M969,526 L966.5,530.2 L962.5,528.4 L961.7,522.9 L966.2,523.2Z" fill="#cf9c98" fill-opacity=".7"/><path d="M1144.4,592.2 L1141.4,597.1 L1137.5,594.7 L1138.4,590.7 L1142.1,589.8Z" fill="#c6a28c" fill-opacity=".7"/><path d="M939.3,631.7 L937.9,636.1 L931.9,633.2 L931.3,629.2 L937.5,627.8Z" fill="#cf9c98" fill-opacity=".7"/><path d="M982.7,676.6 L976.7,681.9 L968.8,679.2 L971.1,674 L976.7,668Z" fill="#cf9c98" fill-opacity=".7"/><path d="M1055.2,628.2 L1052.9,631.3 L1050.3,629.6 L1051.2,626.7 L1053.3,625.2Z" fill="#cf9c98" fill-opacity=".7"/><path d="M987,728.2 L982.1,736.2 L972.9,731.2 L975.7,722.8 L982.1,720.2Z" fill="#cf9c98" fill-opacity=".7"/><path d="M1140.9,591 L1134.2,599.6 L1125,595 L1129.1,587.5 L1134.8,582.7Z" fill="#c6a28c" fill-opacity=".7"/><path d="M1061.7,584.7 L1056.7,589.2 L1049.6,587.2 L1051.4,582.5 L1056.7,581.6Z" fill="#c6a28c" fill-opacity=".7"/><path d="M1002.6,689.5 L1001.1,694.4 L994.5,693.2 L995.9,686.7 L1001.2,686.3Z" fill="#cf9c98" fill-opacity=".7"/><path d="M1011.3,713.7 L1005,718 L997.7,717.8 L997.9,710 L1004.8,707Z" fill="#cf9c98" fill-opacity=".7"/><path d="M1018.5,480.4 L1014.6,485.5 L1010.5,484.6 L1009.1,477.8 L1015.4,474.4Z" fill="#cf9c98" fill-opacity=".7"/><path d="M988.5,726.7 L985.8,730.2 L981.7,728.1 L981.6,725.5 L985.8,723.2Z" fill="#c6a28c" fill-opacity=".7"/><path d="M994.9,678.8 L992.7,682.2 L987.4,680.3 L987.7,676.4 L992.4,676.4Z" fill="#cf9c98" fill-opacity=".7"/><path d="M997,473.3 L991.2,479 L985.7,477.5 L984.5,469.1 L991.1,468.8Z" fill="#cf9c98" fill-opacity=".7"/><path d="M1096.2,491.9 L1094.9,495 L1091.1,493.8 L1091.3,490.7 L1094.8,488.4Z" fill="#cf9c98" fill-opacity=".7"/><path d="M996,659.4 L991.5,662.3 L987.2,661.2 L986,657.5 L991.5,654.9Z" fill="#cf9c98" fill-opacity=".7"/><path d="M1058.8,686.9 L1058.1,689.6 L1054.6,687.9 L1055.7,685.4 L1058.1,684.3Z" fill="#cf9c98" fill-opacity=".7"/><path d="M1140.8,482.7 L1137.4,485.5 L1132.7,484.6 L1134,481.4 L1137,479.2Z" fill="#cf9c98" fill-opacity=".7"/><path d="M994.7,556.3 L993,563.3 L986.9,560 L985.2,552.8 L992.3,550.6Z" fill="#c6a28c" fill-opacity=".7"/><path d="M1102.7,637.4 L1100.4,640.9 L1096.9,639.2 L1096.4,635.4 L1100.8,634.2Z" fill="#c6a28c" fill-opacity=".7"/><path d="M1157,570.2 L1152.8,573.5 L1145.6,572.3 L1148.3,567.1 L1152,567.1Z" fill="#c6a28c" fill-opacity=".7"/><path d="M1168.7,552 L1165.9,558.6 L1160.1,554.2 L1158.9,548 L1165.5,545.3Z" fill="#c6a28c" fill-opacity=".7"/><path d="M961.3,567.5 L959.7,571.2 L954.7,571.9 L952,564.9 L958.7,563.3Z" fill="#cf9c98" fill-opacity=".7"/><path d="M1073.4,484.6 L1072.2,488.2 L1068.5,486.4 L1067.4,482.6 L1072.7,479.8Z" fill="#cf9c98" fill-opacity=".7"/><path d="M1103.7,731.1 L1098.3,735.3 L1090.6,734.1 L1091.9,728.5 L1097.5,726.9Z" fill="#cf9c98" fill-opacity=".7"/><path d="M1189.8,672.9 L1187.6,675.4 L1184.8,674.2 L1184.5,671.7 L1187.2,670.6Z" fill="#cf9c98" fill-opacity=".7"/><path d="M970.7,624.8 L967.7,628.6 L964.1,627.4 L964.5,622.1 L968.3,622.6Z" fill="#cf9c98" fill-opacity=".7"/><path d="M1100.6,679.3 L1099.7,681.2 L1097.4,680.2 L1097,677.5 L1099.6,676.7Z" fill="#cf9c98" fill-opacity=".7"/><path d="M1186.5,589.4 L1183.9,593.2 L1179.3,591.5 L1180.1,586.8 L1184.1,586.9Z" fill="#c6a28c" fill-opacity=".7"/><path d="M1102.4,587.4 L1100.2,591.9 L1094.3,590.4 L1094.9,585.5 L1099.7,583.7Z" fill="#cf9c98" fill-opacity=".7"/><path d="M1006,509 L1004.7,512 L1001.3,510.3 L1001.6,507.9 L1004.6,505.6Z" fill="#cf9c98" fill-opacity=".7"/><path d="M1115.2,473.7 L1113.3,476.6 L1110.4,475.6 L1110.4,471.2 L1112.8,471.5Z" fill="#cf9c98" fill-opacity=".7"/><path d="M1093.7,555.6 L1091.1,560.6 L1086.8,558.3 L1084.6,553.7 L1091,551.8Z" fill="#c6a28c" fill-opacity=".7"/><path d="M1134.2,713.7 L1131.4,717.2 L1124,715.8 L1124.8,709.5 L1130.6,707.3Z" fill="#c6a28c" fill-opacity=".7"/><path d="M1040.2,543 L1037.9,548.1 L1031.1,546.5 L1027.7,537.6 L1036.7,536.1Z" fill="#c6a28c" fill-opacity=".7"/><path d="M1033,746 L1044,756 L1052,769 L1063,774 L1070,780 L1077,785 L1092,786 L1106,786 L1115,789 L1127,797 L1135,801 L1146,813 L1151,826 L1147,837" fill="none" stroke="#a58ca8" stroke-width="1.4" stroke-opacity="0.6" stroke-linejoin="round"/><path d="M1121,708 L1122,699 L1122,686 L1118,676 L1118,668 L1112,658 L1117,645 L1132,638 L1139,630" fill="none" stroke="#a58ca8" stroke-width="1.4" stroke-opacity="0.6" stroke-linejoin="round"/><path d="M980,733 L967,725 L959,725 L945,730 L942,737 L940,753 L937,762 L933,773 L932,783 L940,790 L949,802" fill="none" stroke="#a58ca8" stroke-width="1.4" stroke-opacity="0.6" stroke-linejoin="round"/><path d="M1022,521 L1014,526 L1004,525 L991,523 L979,516 L977,501 L980,493 L975,479 L973,467 L975,458 L984,453 L992,442 L993,429 L994,415" fill="none" stroke="#a58ca8" stroke-width="1.4" stroke-opacity="0.6" stroke-linejoin="round"/><path d="M982,657 L988,672 L993,684 L1005,694 L1014,692 L1024,696 L1030,702 L1039,707 L1048,708 L1056,703 L1071,706 L1079,706 L1086,701 L1093,688 L1107,682" fill="none" stroke="#a58ca8" stroke-width="1.4" stroke-opacity="0.6" stroke-linejoin="round"/><path d="M1117,567 L1107,557 L1096,558 L1085,551 L1080,543 L1076,531 L1074,517 L1072,509 L1073,498 L1083,487" fill="none" stroke="#a58ca8" stroke-width="1.4" stroke-opacity="0.6" stroke-linejoin="round"/><path d="M972,507 L961,517 L953,517 L945,507 L937,499 L924,500 L915,510" fill="none" stroke="#a58ca8" stroke-width="1.4" stroke-opacity="0.6" stroke-linejoin="round"/><path d="M1081,540 L1093,544 L1101,549 L1113,546 L1119,536 L1116,523 L1113,514 L1116,500 L1119,485 L1117,469 L1118,459 L1110,447 L1111,437 L1118,423" fill="none" stroke="#a58ca8" stroke-width="1.4" stroke-opacity="0.6" stroke-linejoin="round"/><path d="M987,667 L995,676 L1007,678 L1016,675 L1029,673 L1038,674 L1048,685 L1060,693 L1066,703 L1075,708 L1084,711 L1090,724" fill="none" stroke="#a58ca8" stroke-width="1.4" stroke-opacity="0.6" stroke-linejoin="round"/><path d="M1208,552 L1205,544 L1197,538 L1194,525 L1199,512 L1210,506 L1221,509 L1230,510 L1239,506 L1247,509 L1260,508 L1270,503 L1275,497 L1284,486" fill="none" stroke="#a58ca8" stroke-width="1.4" stroke-opacity="0.6" stroke-linejoin="round"/><path d="M1105,662 L1092,666 L1083,668 L1072,664 L1067,657 L1062,649 L1056,641 L1051,627 L1058,615 L1064,602 L1061,588 L1068,578 L1066,563" fill="none" stroke="#a58ca8" stroke-width="1.4" stroke-opacity="0.6" stroke-linejoin="round"/><path d="M901,760 L912,751 L912,740 L906,731 L909,716 L914,709 L916,695 L918,684 L916,676 L912,668" fill="none" stroke="#a58ca8" stroke-width="1.4" stroke-opacity="0.6" stroke-linejoin="round"/><path d="M945,565 L948,556 L958,552 L968,548 L973,541 L980,533 L988,532 L1002,526 L1013,524 L1026,522 L1039,520 L1048,510 L1058,511" fill="none" stroke="#e48a62" stroke-width="2" stroke-opacity="0.75" stroke-linejoin="round"/><path d="M1031,698 L1036,712 L1045,723 L1056,728 L1064,741 L1073,744 L1085,740 L1093,727 L1100,720 L1104,708 L1115,700 L1119,688 L1123,679 L1128,664 L1121,652" fill="none" stroke="#e48a62" stroke-width="2" stroke-opacity="0.75" stroke-linejoin="round"/><path d="M1127,748 L1119,744 L1107,736 L1098,738 L1087,743 L1073,743 L1062,744 L1053,740 L1039,739 L1027,747" fill="none" stroke="#e48a62" stroke-width="2" stroke-opacity="0.75" stroke-linejoin="round"/><path d="M1131,606 L1140,614 L1148,620 L1160,628 L1169,627 L1181,632 L1189,646 L1192,655 L1193,663 L1190,672 L1187,682 L1180,687 L1170,687 L1160,695" fill="none" stroke="#e48a62" stroke-width="2" stroke-opacity="0.75" stroke-linejoin="round"/><path d="M1174,592 L1180,585 L1185,575 L1192,571 L1200,563 L1205,551 L1204,538 L1197,530 L1185,524 L1175,527 L1161,534" fill="none" stroke="#e48a62" stroke-width="2" stroke-opacity="0.75" stroke-linejoin="round"/><path d="M1218,469 L1203,468 L1197,460 L1184,456 L1171,459 L1161,468 L1156,476 L1154,488" fill="none" stroke="#e48a62" stroke-width="2" stroke-opacity="0.75" stroke-linejoin="round"/><path d="M1116,656 L1129,657 L1138,661 L1146,666 L1152,678 L1160,690 L1157,698 L1159,706 L1169,718 L1171,726" fill="none" stroke="#e48a62" stroke-width="2" stroke-opacity="0.75" stroke-linejoin="round"/><path d="M1032,726 L1043,721 L1053,721 L1062,713 L1075,715 L1088,723 L1097,724 L1111,720" fill="none" stroke="#df6a72" stroke-width="2.2" stroke-opacity="0.6" stroke-linejoin="round"/><path d="M1149,462 L1145,455 L1133,447 L1126,437 L1117,431 L1107,432 L1091,430 L1082,432 L1070,435 L1064,443 L1050,443 L1036,445 L1031,452 L1031,463 L1038,474" fill="none" stroke="#df6a72" stroke-width="2.2" stroke-opacity="0.6" stroke-linejoin="round"/><path d="M1114,616 L1109,608 L1101,598 L1093,595 L1082,587 L1077,580 L1074,568 L1067,559 L1057,550 L1055,537 L1049,530 L1040,527 L1031,531" fill="none" stroke="#df6a72" stroke-width="2.2" stroke-opacity="0.6" stroke-linejoin="round"/><g transform="translate(900,470) scale(0.25954)"><path d="M0,60 L100,80 L200,100 L280,130 L400,150 L520,150" fill="none" stroke="#df6470" stroke-width="11.56" stroke-linejoin="round" stroke-linecap="round"/><path d="M40,0 L60,50 L120,100 L220,150 L260,230" fill="none" stroke="#df6470" stroke-width="9.63" stroke-linejoin="round" stroke-linecap="round"/><path d="M460,0 L460,200" fill="none" stroke="#df6470" stroke-width="9.63" stroke-linejoin="round" stroke-linecap="round"/><path d="M850,520 L950,560 L1000,620 L1050,700 L1070,740 L1156,820" fill="none" stroke="#df6470" stroke-width="9.63" stroke-linejoin="round" stroke-linecap="round"/><path d="M0,940 L200,930 L380,940" fill="none" stroke="#df6470" stroke-width="9.63" stroke-linejoin="round" stroke-linecap="round"/><path d="M720,980 L850,960 L1000,1000 L1156,1040" fill="none" stroke="#df6470" stroke-width="7.71" stroke-linejoin="round" stroke-linecap="round"/><path d="M0,200 L120,200 L240,190 L360,200 L500,210" fill="none" stroke="#e48a62" stroke-width="7.71" stroke-linejoin="round" stroke-linecap="round"/><path d="M180,0 L170,200 L180,400 L160,600 L170,800 L180,1040" fill="none" stroke="#e48a62" stroke-width="7.71" stroke-linejoin="round" stroke-linecap="round"/><path d="M60,0 L40,200 L60,400 L40,700 L60,1040" fill="none" stroke="#e48a62" stroke-width="7.71" stroke-linejoin="round" stroke-linecap="round"/><path d="M850,300 L950,320 L1050,330 L1156,300" fill="none" stroke="#e48a62" stroke-width="7.71" stroke-linejoin="round" stroke-linecap="round"/><path d="M900,0 L920,150 L940,260 L980,400 L1000,520" fill="none" stroke="#e48a62" stroke-width="7.71" stroke-linejoin="round" stroke-linecap="round"/><path d="M850,700 L950,740 L1000,800 L1020,900 L1000,1040" fill="none" stroke="#e48a62" stroke-width="7.71" stroke-linejoin="round" stroke-linecap="round"/><path d="M880,800 L900,900 L950,980" fill="none" stroke="#e48a62" stroke-width="7.71" stroke-linejoin="round" stroke-linecap="round"/><path d="M850,650 L1000,650 L1156,640" fill="none" stroke="#7a5a5e" stroke-width="5.78" stroke-linejoin="round" stroke-linecap="round"/><path d="M0,0 L60,100 L120,200 L200,300" fill="none" stroke="#7a5a5e" stroke-width="5.78" stroke-linejoin="round" stroke-linecap="round"/></g></g><g clip-path="url(#cl7)"><rect x="1200" y="470" width="281" height="271" fill="#b9907f"/><rect x="1200" y="470" width="281" height="271" fill="url(#prur)"/><g transform="translate(1200,470) scale(0.25974)"><path d="M0,560 L59.5,563.3 L120,560 L172.5,589.6 L200,620 L222.8,656.1 L260,700 L277.2,754.2 L270,800 L275.9,846.4 L260,900 L245.6,982 L220,1040 L154.4,1048.7 L121.4,1053 L44.9,1031.4 L0,1040 L11.6,984.1 L-6.1,937.7 L-4.8,876.1 L-3.1,818.6 L9.4,778.5 L-10.3,711 L-13.3,665 L5,612.9Z" fill="#d49a97" /><path d="M0,560 L59.5,563.3 L120,560 L172.5,589.6 L200,620 L222.8,656.1 L260,700 L277.2,754.2 L270,800 L275.9,846.4 L260,900 L245.6,982 L220,1040 L154.4,1048.7 L121.4,1053 L44.9,1031.4 L0,1040 L11.6,984.1 L-6.1,937.7 L-4.8,876.1 L-3.1,818.6 L9.4,778.5 L-10.3,711 L-13.3,665 L5,612.9Z" fill="url(#purb)" /><path d="M0,560 L59.5,563.3 L120,560 L172.5,589.6 L200,620 L222.8,656.1 L260,700 L277.2,754.2 L270,800 L275.9,846.4 L260,900 L245.6,982 L220,1040 L154.4,1048.7 L121.4,1053 L44.9,1031.4 L0,1040 L11.6,984.1 L-6.1,937.7 L-4.8,876.1 L-3.1,818.6 L9.4,778.5 L-10.3,711 L-13.3,665 L5,612.9Z" fill="url(#purb2)" /><path d="M0,0 L41.5,3 L106.4,-13.5 L150,0 L133.5,46.7 L134,101 L130,150 L97.5,196.2 L60,250 L0,260 L2.6,208 L-12.3,146.5 L-6.3,102.7 L-7.9,63.1Z" fill="#d49a97" /><path d="M0,0 L41.5,3 L106.4,-13.5 L150,0 L133.5,46.7 L134,101 L130,150 L97.5,196.2 L60,250 L0,260 L2.6,208 L-12.3,146.5 L-6.3,102.7 L-7.9,63.1Z" fill="url(#purb)" /><path d="M0,0 L41.5,3 L106.4,-13.5 L150,0 L133.5,46.7 L134,101 L130,150 L97.5,196.2 L60,250 L0,260 L2.6,208 L-12.3,146.5 L-6.3,102.7 L-7.9,63.1Z" fill="url(#purb2)" /></g><path d="M1276.8,627.5 L1271,632 L1261.6,632.3 L1265,623.3 L1271.7,619.1Z" fill="#cf9c98" fill-opacity=".7"/><path d="M1294.7,520.8 L1289.1,524.9 L1285.5,522.8 L1284.2,518.7 L1289.3,517.1Z" fill="#cf9c98" fill-opacity=".7"/><path d="M1445,533.8 L1441.7,539.7 L1435.3,537.3 L1435.1,530.3 L1441.7,530.1Z" fill="#cf9c98" fill-opacity=".7"/><path d="M1379.1,682.7 L1373.4,689.6 L1364.8,686.4 L1364.8,677.8 L1373.2,677.4Z" fill="#cf9c98" fill-opacity=".7"/><path d="M1376.1,623.4 L1373.7,629.1 L1367.1,625 L1368.8,620.3 L1373.5,618.8Z" fill="#cf9c98" fill-opacity=".7"/><path d="M1315.2,703.3 L1310.5,709.8 L1302.6,707.4 L1302.5,700.4 L1309.8,698.5Z" fill="#c6a28c" fill-opacity=".7"/><path d="M1477.5,652 L1475.6,654.8 L1472.8,654.3 L1472,648.7 L1475.7,649.4Z" fill="#c6a28c" fill-opacity=".7"/><path d="M1463,608.8 L1460.2,611.8 L1453.8,612.4 L1454.1,606.9 L1460.6,606Z" fill="#c6a28c" fill-opacity=".7"/><path d="M1223.6,635 L1220.5,638.7 L1216.8,636.3 L1216.6,632.8 L1220.4,631.9Z" fill="#cf9c98" fill-opacity=".7"/><path d="M1210.9,594.4 L1208.1,596.8 L1206,595.8 L1205,592.3 L1208.6,591.5Z" fill="#cf9c98" fill-opacity=".7"/><path d="M1451.4,628 L1447.5,633.1 L1442.4,631.1 L1440.9,623.3 L1447.3,622Z" fill="#cf9c98" fill-opacity=".7"/><path d="M1439.8,671.2 L1432.2,678.7 L1425.4,674.4 L1426.9,666 L1432.5,666.8Z" fill="#cf9c98" fill-opacity=".7"/><path d="M1243.6,485.1 L1239.6,489.5 L1233.6,488.6 L1235.2,482.1 L1240.4,478.8Z" fill="#cf9c98" fill-opacity=".7"/><path d="M1314.5,557.5 L1312.7,559.3 L1309,559.8 L1310.8,556 L1312.8,555.2Z" fill="#c6a28c" fill-opacity=".7"/><path d="M1270.6,590.7 L1268.3,593.3 L1265.6,592.4 L1264.6,589.1 L1268.7,588.7Z" fill="#c6a28c" fill-opacity=".7"/><path d="M1437.4,727.9 L1434.7,732.6 L1428.1,729.9 L1430.3,725.6 L1435.1,724.8Z" fill="#cf9c98" fill-opacity=".7"/><path d="M1419.2,708.8 L1416.2,711.4 L1412.5,711.6 L1412.3,706.3 L1416,703.9Z" fill="#c6a28c" fill-opacity=".7"/><path d="M1461.7,512.2 L1454.9,516.7 L1448.2,516.9 L1449.4,507.8 L1455.5,508.2Z" fill="#cf9c98" fill-opacity=".7"/><path d="M1424.3,691.6 L1420.4,695.5 L1417.7,693.3 L1416.2,690.3 L1421.1,688.6Z" fill="#c6a28c" fill-opacity=".7"/><path d="M1285.6,626.2 L1283.3,627.9 L1279.2,627.6 L1279,624.3 L1283.4,623.3Z" fill="#cf9c98" fill-opacity=".7"/><path d="M1482.4,665 L1476.6,672.9 L1467.9,669.8 L1470.6,661.9 L1476.6,661.1Z" fill="#cf9c98" fill-opacity=".7"/><path d="M1306.6,511.8 L1304.1,515.7 L1301.7,512.9 L1301.4,509.5 L1304.1,508.1Z" fill="#cf9c98" fill-opacity=".7"/><path d="M1429.3,601.7 L1426.5,604.5 L1422.6,603.2 L1422.1,600.1 L1426.2,598.6Z" fill="#c6a28c" fill-opacity=".7"/><path d="M1329.2,581.5 L1326.4,585.3 L1317.7,585.3 L1318.1,579.1 L1326.7,573.8Z" fill="#cf9c98" fill-opacity=".7"/><path d="M1421.1,728.3 L1418.7,734 L1410.5,731.3 L1413.2,723.4 L1418.8,721.7Z" fill="#cf9c98" fill-opacity=".7"/><path d="M1373,501.8 L1371.6,505 L1369.6,503.8 L1368.6,500.6 L1371.8,499Z" fill="#c6a28c" fill-opacity=".7"/><path d="M1308.4,534.9 L1305.3,538.2 L1301.8,536.3 L1302.2,533.9 L1305.5,533.2Z" fill="#cf9c98" fill-opacity=".7"/><path d="M1321.8,617.3 L1317.1,623.6 L1310.2,621.9 L1311,613.9 L1317.9,610.1Z" fill="#cf9c98" fill-opacity=".7"/><path d="M1283,702.2 L1281.8,704.5 L1277.9,703.4 L1278.5,699.8 L1281.5,700.5Z" fill="#c6a28c" fill-opacity=".7"/><path d="M1412.5,505.9 L1411.3,508.9 L1409.1,507.5 L1408.2,504.7 L1411.2,504.2Z" fill="#cf9c98" fill-opacity=".7"/><path d="M1441.7,609.2 L1438.9,613.8 L1434,611.6 L1435.7,606.5 L1438.9,605.4Z" fill="#c6a28c" fill-opacity=".7"/><path d="M1281.1,497.4 L1280,501.4 L1275.9,499.5 L1274.2,494.4 L1280.1,494.8Z" fill="#cf9c98" fill-opacity=".7"/><path d="M1400.4,687 L1398,690.7 L1395.6,689 L1394,685 L1398.4,684Z" fill="#cf9c98" fill-opacity=".7"/><path d="M1409.6,589.3 L1407.9,592.6 L1404.4,591.1 L1405.1,587.2 L1407.5,587.2Z" fill="#cf9c98" fill-opacity=".7"/><path d="M1313.7,599.8 L1307.4,605.9 L1298.3,603.7 L1301.2,596.2 L1307.9,591Z" fill="#cf9c98" fill-opacity=".7"/><path d="M1444.7,545.4 L1441.9,548.7 L1437,547.7 L1434.8,541.7 L1442.1,540Z" fill="#c6a28c" fill-opacity=".7"/><path d="M1464.2,485.6 L1460.9,491 L1456.4,487.3 L1457.5,483.3 L1460.6,480.7Z" fill="#c6a28c" fill-opacity=".7"/><path d="M1207.5,638.5 L1203.5,647.4 L1198.3,640.9 L1196.9,635.8 L1203.4,631.1Z" fill="#c6a28c" fill-opacity=".7"/><path d="M1424,593.7 L1421.7,597.6 L1414.1,598 L1415.1,588.5 L1421.8,588.5Z" fill="#cf9c98" fill-opacity=".7"/><path d="M1256.3,613.4 L1254.1,617 L1248.8,615.9 L1248.5,610.3 L1253.7,610.2Z" fill="#cf9c98" fill-opacity=".7"/><path d="M1452.9,727.7 L1450.6,732.4 L1445.6,730.3 L1446.4,724.3 L1451.3,722.9Z" fill="#c6a28c" fill-opacity=".7"/><path d="M1307.6,621.9 L1303.8,627 L1297.3,625.3 L1297,619.6 L1303.2,616.1Z" fill="#cf9c98" fill-opacity=".7"/><path d="M1476.7,597 L1474.8,603.8 L1470.3,599.4 L1467.2,594 L1474,591Z" fill="#cf9c98" fill-opacity=".7"/><path d="M1285,724.3 L1281.9,730.8 L1274.7,729.3 L1272.9,721 L1280.7,717Z" fill="#cf9c98" fill-opacity=".7"/><path d="M1415.5,575.4 L1408.9,579 L1403.2,579.7 L1405.1,573.3 L1409.3,571.6Z" fill="#c6a28c" fill-opacity=".7"/><path d="M1277.1,648.8 L1274.9,651.6 L1272.1,649.7 L1271.9,647.5 L1274.7,646Z" fill="#cf9c98" fill-opacity=".7"/><path d="M1317.9,684 L1314.3,689.6 L1307.6,688.7 L1309.2,680 L1314.4,678.5Z" fill="#c6a28c" fill-opacity=".7"/><path d="M1441.4,639.6 L1439.5,641.9 L1437.5,641.5 L1436.5,638.2 L1439.6,636.5Z" fill="#cf9c98" fill-opacity=".7"/><path d="M1217.9,594 L1214.1,597.3 L1209.3,595.5 L1208.9,591.4 L1214.2,590.2Z" fill="#c6a28c" fill-opacity=".7"/><path d="M1326.4,647.5 L1324.3,650.3 L1321.3,649 L1321.1,646.3 L1324.3,645.2Z" fill="#c6a28c" fill-opacity=".7"/><path d="M1475.2,696.3 L1473.8,699.4 L1471.9,698 L1470.7,694.5 L1473.8,694.3Z" fill="#c6a28c" fill-opacity=".7"/><path d="M1315.1,662.3 L1310.8,670.6 L1304.8,666.7 L1301.5,660 L1311.6,658.3Z" fill="#cf9c98" fill-opacity=".7"/><path d="M1312.6,692.3 L1310.2,698.6 L1301.5,695.8 L1302.6,687.6 L1310.3,686.4Z" fill="#cf9c98" fill-opacity=".7"/><path d="M1361.4,560.6 L1357.7,565.6 L1350.3,562.5 L1352.8,556.6 L1356.9,555.5Z" fill="#cf9c98" fill-opacity=".7"/><path d="M1462.8,545.6 L1459.4,551 L1455.9,548 L1454.1,543.8 L1460,543Z" fill="#cf9c98" fill-opacity=".7"/><path d="M1404.1,594.9 L1400.4,598.1 L1396.1,596.6 L1395.9,592 L1399.7,590.9Z" fill="#cf9c98" fill-opacity=".7"/><path d="M1329,705.6 L1324.3,708 L1319.6,708.2 L1320,703 L1324.4,702.2Z" fill="#cf9c98" fill-opacity=".7"/><path d="M1324.5,721.4 L1321.5,725.3 L1315.1,726.1 L1316.7,717.1 L1321.3,717Z" fill="#cf9c98" fill-opacity=".7"/><path d="M1249,535 L1254,525 L1266,522 L1275,522 L1284,528 L1292,537 L1303,538 L1311,545 L1320,555 L1329,555" fill="none" stroke="#a58ca8" stroke-width="1.4" stroke-opacity="0.6" stroke-linejoin="round"/><path d="M1241,500 L1235,486 L1228,481 L1215,475 L1209,467 L1201,464 L1193,453 L1187,442 L1180,432 L1177,422 L1174,410 L1178,403 L1188,399" fill="none" stroke="#a58ca8" stroke-width="1.4" stroke-opacity="0.6" stroke-linejoin="round"/><path d="M1486,523 L1493,536 L1504,546 L1517,550 L1525,549 L1539,542 L1551,532 L1561,522 L1568,518 L1582,514" fill="none" stroke="#a58ca8" stroke-width="1.4" stroke-opacity="0.6" stroke-linejoin="round"/><path d="M1209,544 L1206,551 L1212,562 L1219,567 L1230,565 L1244,566 L1254,574 L1259,581" fill="none" stroke="#a58ca8" stroke-width="1.4" stroke-opacity="0.6" stroke-linejoin="round"/><path d="M1222,575 L1229,587 L1241,592 L1245,602 L1248,610 L1248,620 L1243,631 L1241,645 L1240,658 L1239,668" fill="none" stroke="#a58ca8" stroke-width="1.4" stroke-opacity="0.6" stroke-linejoin="round"/><path d="M1420,651 L1424,638 L1434,627 L1443,627 L1454,636 L1457,646 L1455,662 L1444,672 L1440,679 L1431,681 L1423,680" fill="none" stroke="#a58ca8" stroke-width="1.4" stroke-opacity="0.6" stroke-linejoin="round"/><path d="M1199,739 L1185,747 L1182,756 L1170,764 L1165,778 L1158,792 L1147,800 L1136,797 L1127,791 L1119,787 L1108,780 L1103,773 L1094,771 L1084,759" fill="none" stroke="#a58ca8" stroke-width="1.4" stroke-opacity="0.6" stroke-linejoin="round"/><path d="M1286,567 L1295,559 L1305,558 L1312,550 L1320,537 L1325,528 L1333,515" fill="none" stroke="#a58ca8" stroke-width="1.4" stroke-opacity="0.6" stroke-linejoin="round"/><path d="M1418,719 L1411,725 L1408,738 L1406,750 L1412,758 L1418,764 L1430,769 L1439,776" fill="none" stroke="#a58ca8" stroke-width="1.4" stroke-opacity="0.6" stroke-linejoin="round"/><path d="M1426,677 L1435,690 L1442,695 L1450,703 L1459,712 L1463,725 L1461,740 L1457,749 L1451,757 L1443,764 L1430,762" fill="none" stroke="#a58ca8" stroke-width="1.4" stroke-opacity="0.6" stroke-linejoin="round"/><path d="M1436,534 L1450,528 L1463,531 L1467,540 L1475,546 L1482,553 L1481,561 L1487,567 L1489,580 L1486,593 L1489,601 L1494,610 L1504,613 L1515,614 L1527,609" fill="none" stroke="#a58ca8" stroke-width="1.4" stroke-opacity="0.6" stroke-linejoin="round"/><path d="M1497,473 L1486,469 L1477,464 L1469,458 L1456,456 L1444,449 L1438,443 L1431,433 L1424,425" fill="none" stroke="#a58ca8" stroke-width="1.4" stroke-opacity="0.6" stroke-linejoin="round"/><path d="M1287,560 L1293,546 L1299,533 L1305,519 L1310,509 L1322,506 L1335,496 L1340,489" fill="none" stroke="#e48a62" stroke-width="2" stroke-opacity="0.75" stroke-linejoin="round"/><path d="M1487,644 L1479,643 L1470,646 L1462,657 L1456,665 L1456,674 L1457,688 L1468,697 L1469,708 L1466,723 L1475,736 L1475,746 L1463,757" fill="none" stroke="#e48a62" stroke-width="2" stroke-opacity="0.75" stroke-linejoin="round"/><path d="M1279,617 L1276,605 L1277,591 L1276,575 L1269,569 L1257,562 L1242,559 L1232,553 L1222,547 L1207,550" fill="none" stroke="#e48a62" stroke-width="2" stroke-opacity="0.75" stroke-linejoin="round"/><path d="M1211,519 L1221,521 L1229,523 L1240,514 L1249,513 L1255,506 L1257,497 L1256,484 L1252,473" fill="none" stroke="#e48a62" stroke-width="2" stroke-opacity="0.75" stroke-linejoin="round"/><path d="M1383,548 L1383,557 L1383,566 L1372,574 L1369,582 L1358,593 L1350,602 L1339,607 L1331,609 L1320,612 L1312,618 L1298,625 L1290,621 L1278,611 L1264,603" fill="none" stroke="#e48a62" stroke-width="2" stroke-opacity="0.75" stroke-linejoin="round"/><path d="M1285,753 L1291,739 L1290,727 L1285,717 L1274,705 L1264,705 L1253,709 L1245,712 L1235,707 L1228,701 L1212,703 L1201,695 L1196,686" fill="none" stroke="#e48a62" stroke-width="2" stroke-opacity="0.75" stroke-linejoin="round"/><path d="M1403,589 L1412,597 L1414,609 L1420,616 L1432,620 L1442,617 L1452,612 L1466,613" fill="none" stroke="#e48a62" stroke-width="2" stroke-opacity="0.75" stroke-linejoin="round"/><path d="M1457,549 L1458,537 L1466,526 L1475,515 L1486,509 L1494,513 L1499,525 L1503,537 L1510,549 L1517,554 L1526,558 L1538,554 L1547,542 L1549,533" fill="none" stroke="#df6a72" stroke-width="2.2" stroke-opacity="0.6" stroke-linejoin="round"/><path d="M1398,504 L1391,515 L1393,523 L1387,536 L1373,543 L1362,551 L1357,566 L1358,579 L1361,588 L1365,603 L1369,618 L1383,626" fill="none" stroke="#df6a72" stroke-width="2.2" stroke-opacity="0.6" stroke-linejoin="round"/><path d="M1277,452 L1267,450 L1254,447 L1240,444 L1230,435 L1227,424 L1231,412 L1238,408 L1250,406 L1264,411" fill="none" stroke="#df6a72" stroke-width="2.2" stroke-opacity="0.6" stroke-linejoin="round"/><g transform="translate(1200,470) scale(0.25974)"><path d="M140,0 L100,100 L20,180 L0,250 L10,340 L60,420 L130,500 L150,560 L180,620 L230,680 L270,780 L250,880 L200,960 L150,1040" fill="none" stroke="#df6470" stroke-width="11.55" stroke-linejoin="round" stroke-linecap="round"/><path d="M200,960 L300,1000 L400,1040" fill="none" stroke="#df6470" stroke-width="9.62" stroke-linejoin="round" stroke-linecap="round"/><path d="M260,600 L350,620 L480,660 L560,620 L650,500 L700,480 L850,490 L950,480 L1000,420 L1082,340" fill="none" stroke="#df6470" stroke-width="9.62" stroke-linejoin="round" stroke-linecap="round"/><path d="M0,60 L120,120 L220,170 L330,120 L430,60 L520,40 L620,80 L680,150 L760,160 L800,230 L900,280 L1000,220 L1082,180" fill="none" stroke="#df6470" stroke-width="7.70" stroke-linejoin="round" stroke-linecap="round"/><path d="M0,300 L100,320 L200,340 L230,400 L180,500 L160,560" fill="none" stroke="#e48a62" stroke-width="7.70" stroke-linejoin="round" stroke-linecap="round"/><path d="M230,400 L320,380 L420,400 L500,370 L600,320 L700,270 L720,400 L660,520 L560,620 L480,680 L400,760 L330,900 L270,1000" fill="none" stroke="#e48a62" stroke-width="7.70" stroke-linejoin="round" stroke-linecap="round"/><path d="M560,620 L600,700 L700,760 L800,820 L900,840 L1000,820 L1082,900" fill="none" stroke="#e48a62" stroke-width="7.70" stroke-linejoin="round" stroke-linecap="round"/><path d="M650,600 L780,540 L900,540 L1000,580 L1040,650 L1082,700" fill="none" stroke="#e48a62" stroke-width="7.70" stroke-linejoin="round" stroke-linecap="round"/><path d="M0,130 L100,130 L250,110 L350,80 L450,0" fill="none" stroke="#e48a62" stroke-width="7.70" stroke-linejoin="round" stroke-linecap="round"/><path d="M500,0 L510,100 L500,250 L420,270 L300,320 L200,420" fill="none" stroke="#e48a62" stroke-width="7.70" stroke-linejoin="round" stroke-linecap="round"/><path d="M800,0 L820,100 L720,230 L700,270" fill="none" stroke="#e48a62" stroke-width="7.70" stroke-linejoin="round" stroke-linecap="round"/><path d="M500,660 L520,800 L570,900 L560,1040" fill="none" stroke="#e48a62" stroke-width="7.70" stroke-linejoin="round" stroke-linecap="round"/><path d="M830,840 L800,950 L700,1040" fill="none" stroke="#e48a62" stroke-width="7.70" stroke-linejoin="round" stroke-linecap="round"/><path d="M0,640 L60,660 L90,720 L60,900 L20,1040" fill="none" stroke="#7a5a5e" stroke-width="5.78" stroke-linejoin="round" stroke-linecap="round"/><path d="M900,600 L960,700 L920,800 L1000,900" fill="none" stroke="#a58ca8" stroke-width="5.78" stroke-linejoin="round" stroke-linecap="round"/></g></g><g clip-path="url(#cl8)"><rect x="300" y="740" width="300" height="272" fill="#b9907f"/><rect x="300" y="740" width="300" height="272" fill="url(#prur)"/><g transform="translate(300,740) scale(0.26062)"><path d="M0,0 L51.7,4.6 L101,-11.2 L147.9,-11.7 L206,-3.7 L264.4,1.8 L309.9,-4.3 L355.8,10.6 L400.9,10.3 L467.7,-4.9 L511.7,-9.3 L568.6,7.5 L593.2,4.3 L649.3,8.3 L709.2,1.2 L752.8,-6.5 L813.8,-12.7 L854.1,0.3 L910,0 L900.3,48.3 L870,120 L823.6,170.7 L800,230 L761,201.3 L707.8,206.5 L652,171.5 L600,160 L520,200 L472.7,178.5 L400,160 L339.7,150.8 L300,120 L242.1,88.6 L200,80 L147.9,75.8 L100,60 L61,71.3 L0,100 L-3.3,63.7Z" fill="#c6958c" /><path d="M0,0 L51.7,4.6 L101,-11.2 L147.9,-11.7 L206,-3.7 L264.4,1.8 L309.9,-4.3 L355.8,10.6 L400.9,10.3 L467.7,-4.9 L511.7,-9.3 L568.6,7.5 L593.2,4.3 L649.3,8.3 L709.2,1.2 L752.8,-6.5 L813.8,-12.7 L854.1,0.3 L910,0 L900.3,48.3 L870,120 L823.6,170.7 L800,230 L761,201.3 L707.8,206.5 L652,171.5 L600,160 L520,200 L472.7,178.5 L400,160 L339.7,150.8 L300,120 L242.1,88.6 L200,80 L147.9,75.8 L100,60 L61,71.3 L0,100 L-3.3,63.7Z" fill="url(#purb)" /><path d="M350,150 L397.7,144.5 L466.3,166.4 L513.2,179.2 L560,180 L595.5,213.2 L641.1,250.8 L700,280 L762.9,301.1 L800,330 L788.6,388.1 L783.9,439.6 L760,500 L749.1,544.1 L756.8,597.4 L750,650 L700,720 L621.6,720 L560,700 L516.5,652.7 L460,600 L430.3,557.2 L424.8,487.7 L400,450 L383.8,390.2 L373.5,348.4 L380,300 L358.1,262.8 L357.9,193.9Z" fill="#c6958c" /><path d="M350,150 L397.7,144.5 L466.3,166.4 L513.2,179.2 L560,180 L595.5,213.2 L641.1,250.8 L700,280 L762.9,301.1 L800,330 L788.6,388.1 L783.9,439.6 L760,500 L749.1,544.1 L756.8,597.4 L750,650 L700,720 L621.6,720 L560,700 L516.5,652.7 L460,600 L430.3,557.2 L424.8,487.7 L400,450 L383.8,390.2 L373.5,348.4 L380,300 L358.1,262.8 L357.9,193.9Z" fill="url(#purb)" /><path d="M330,850 L380.5,836.2 L450.2,811.1 L500,800 L549.8,779.6 L597.9,774.8 L650,780 L644.1,842.9 L660,900 L644.8,957.4 L650,1040 L610.1,1028.1 L541.8,1026.5 L478.4,1031.8 L444.3,1050 L378.8,1033 L330,1040 L321.7,979.5 L328.1,912Z" fill="#c6958c" /><path d="M330,850 L380.5,836.2 L450.2,811.1 L500,800 L549.8,779.6 L597.9,774.8 L650,780 L644.1,842.9 L660,900 L644.8,957.4 L650,1040 L610.1,1028.1 L541.8,1026.5 L478.4,1031.8 L444.3,1050 L378.8,1033 L330,1040 L321.7,979.5 L328.1,912Z" fill="url(#purb)" /><path d="M0,560 L55.4,566.4 L120,560 L180,620 L141,652.4 L120,700 L46.8,712.9 L0,700 L4.7,633.8Z" fill="#c6958c" /><path d="M0,560 L55.4,566.4 L120,560 L180,620 L141,652.4 L120,700 L46.8,712.9 L0,700 L4.7,633.8Z" fill="url(#purb)" /></g><path d="M344.8,961.9 L340.6,965.7 L335.3,964.6 L332.6,959.1 L340.6,953.8Z" fill="#c6a28c" fill-opacity=".7"/><path d="M336.8,827.8 L333.1,835 L327.2,832.5 L323.8,824 L332.5,820.2Z" fill="#c6a28c" fill-opacity=".7"/><path d="M588.4,794.8 L585.2,800.1 L576.7,799.2 L579.7,791.7 L585.2,790.6Z" fill="#cf9c98" fill-opacity=".7"/><path d="M493,835.9 L490.6,839.3 L482.9,840.1 L482.7,833.4 L490.5,832Z" fill="#c6a28c" fill-opacity=".7"/><path d="M486.5,982.4 L485.5,985.4 L482.8,984.4 L482.2,980.9 L485.4,979.3Z" fill="#cf9c98" fill-opacity=".7"/><path d="M390.6,845.4 L389,850.6 L384.3,847.5 L385.7,842.3 L388.7,842.3Z" fill="#c6a28c" fill-opacity=".7"/><path d="M566.6,770.1 L565.5,771.7 L562.5,771.5 L563.4,769.2 L565.4,766.9Z" fill="#cf9c98" fill-opacity=".7"/><path d="M599.8,842.2 L598.2,846.9 L594.1,843.5 L594.1,840.1 L598.7,838.4Z" fill="#cf9c98" fill-opacity=".7"/><path d="M447,912.7 L444.3,914.2 L441.8,914.3 L441.5,911.7 L444.6,910.2Z" fill="#cf9c98" fill-opacity=".7"/><path d="M454.7,911.4 L453,918.7 L446.3,915.7 L446.9,909 L452.9,907.1Z" fill="#c6a28c" fill-opacity=".7"/><path d="M528.4,753.8 L524.8,755.9 L520.6,756.7 L520.6,751 L524.8,749.5Z" fill="#c6a28c" fill-opacity=".7"/><path d="M551,800.4 L547.2,803.1 L544.4,802.9 L543.1,798.9 L546.9,795.7Z" fill="#c6a28c" fill-opacity=".7"/><path d="M308.1,785.8 L304,791.1 L295.2,788.9 L295.2,781.3 L303.4,777.8Z" fill="#c6a28c" fill-opacity=".7"/><path d="M339.9,886 L338.2,891.5 L331.9,888.4 L332.4,882.6 L337.5,880.9Z" fill="#cf9c98" fill-opacity=".7"/><path d="M576.1,836.2 L573,841.5 L567.4,840 L566.9,834.3 L573,832Z" fill="#cf9c98" fill-opacity=".7"/><path d="M587.1,914.3 L584.5,918.8 L580,916.4 L580,912.6 L583.8,910.2Z" fill="#c6a28c" fill-opacity=".7"/><path d="M328,836.2 L326.7,838.8 L322.7,838.6 L323.7,834.2 L326.6,833.8Z" fill="#cf9c98" fill-opacity=".7"/><path d="M392.1,790.2 L389.6,792.3 L386.6,791 L386.7,789 L389.5,787.2Z" fill="#cf9c98" fill-opacity=".7"/><path d="M581.9,763.7 L579.8,766.2 L575.7,765.3 L576.2,762.4 L579.4,761.1Z" fill="#cf9c98" fill-opacity=".7"/><path d="M478.1,829 L476.1,833.3 L469.5,832.8 L471.2,825.9 L476.6,823.3Z" fill="#c6a28c" fill-opacity=".7"/><path d="M354.9,916.8 L353.5,919.8 L349.4,919 L349.4,914.4 L353,914Z" fill="#c6a28c" fill-opacity=".7"/><path d="M327.7,976.4 L325.8,981.1 L315.8,979.8 L319.8,974 L324.9,971.2Z" fill="#c6a28c" fill-opacity=".7"/><path d="M473.9,959.4 L471.6,963.4 L464.3,961.3 L466.5,955.5 L471.5,956.3Z" fill="#c6a28c" fill-opacity=".7"/><path d="M552.2,932.1 L550,938.1 L545.1,934.6 L544,929.8 L549.3,928.4Z" fill="#c6a28c" fill-opacity=".7"/><path d="M387.2,1006.6 L384.6,1011.6 L376.6,1010.8 L377.3,1002.5 L384.3,1000.6Z" fill="#cf9c98" fill-opacity=".7"/><path d="M550.8,938.1 L549.2,940.2 L546.8,939.2 L545.9,936.8 L548.9,935.6Z" fill="#c6a28c" fill-opacity=".7"/><path d="M429.9,993.8 L424.9,999.4 L420.6,997.1 L421.3,989.7 L425.3,987.2Z" fill="#c6a28c" fill-opacity=".7"/><path d="M561.8,996.2 L559.9,999.2 L557,997.7 L557.3,995 L559.5,994.2Z" fill="#c6a28c" fill-opacity=".7"/><path d="M585.7,929.5 L583.7,931 L581.8,931.2 L581.4,927.9 L583.5,926.9Z" fill="#c6a28c" fill-opacity=".7"/><path d="M574.1,917.9 L571.6,922.8 L564.2,922.2 L562.3,913.6 L570.3,914.4Z" fill="#cf9c98" fill-opacity=".7"/><path d="M434,943.7 L430.1,947.6 L425.5,946.6 L424.6,940.8 L430.9,939.6Z" fill="#c6a28c" fill-opacity=".7"/><path d="M404.6,925.1 L401.7,931.5 L396.5,928.9 L396.6,920.6 L401.3,920.1Z" fill="#cf9c98" fill-opacity=".7"/><path d="M525.2,985.6 L524.4,988.9 L520.7,987.1 L520.7,983.8 L524.4,982.7Z" fill="#c6a28c" fill-opacity=".7"/><path d="M455.7,889.3 L451.8,893.1 L447.7,891.6 L447.7,886.8 L452.3,887.5Z" fill="#c6a28c" fill-opacity=".7"/><path d="M323.8,898.5 L321.6,901.2 L319.2,900.1 L318.1,896.9 L321.4,897.1Z" fill="#cf9c98" fill-opacity=".7"/><path d="M553,931.2 L551.5,934.4 L548.3,934.2 L548.2,929.4 L552,926.7Z" fill="#c6a28c" fill-opacity=".7"/><path d="M456.9,930.5 L455.8,935.5 L447.4,934.4 L446.7,925.7 L455.7,924.4Z" fill="#cf9c98" fill-opacity=".7"/><path d="M549.5,915 L545.7,921.9 L540.9,918.8 L538.6,912.1 L545.7,908.1Z" fill="#cf9c98" fill-opacity=".7"/><path d="M326.6,752.3 L322.6,758.3 L317.4,754.3 L317.2,749.7 L322.2,745.9Z" fill="#cf9c98" fill-opacity=".7"/><path d="M383.1,1007.6 L377.5,1012.9 L370.2,1011.6 L371.5,1002.9 L376.6,1002.6Z" fill="#c6a28c" fill-opacity=".7"/><path d="M478.4,871.3 L475.3,875.1 L470.8,873.7 L471.2,867.8 L475.2,868Z" fill="#cf9c98" fill-opacity=".7"/><path d="M489.8,963.5 L487.6,966.2 L484.7,964.5 L484.4,962.3 L488,961.4Z" fill="#cf9c98" fill-opacity=".7"/><path d="M485.8,883.4 L482,889.2 L474.7,886.9 L475.6,878.6 L482.5,879.2Z" fill="#cf9c98" fill-opacity=".7"/><path d="M412.4,745.4 L411.3,752.4 L405.9,748.6 L405.7,741.2 L411.4,740.2Z" fill="#cf9c98" fill-opacity=".7"/><path d="M417.5,891.7 L416.1,898.8 L409.6,895.3 L406.7,889 L415.4,884.8Z" fill="#cf9c98" fill-opacity=".7"/><path d="M491.5,933.1 L489.9,935.6 L487.2,934.4 L486.7,931 L490.1,929.8Z" fill="#cf9c98" fill-opacity=".7"/><path d="M597.7,981 L596.5,983.7 L594.1,982.9 L593.4,979.4 L596.5,978Z" fill="#c6a28c" fill-opacity=".7"/><path d="M490.5,871.7 L489.8,873.1 L487.3,873.5 L486.5,870.6 L490,869.6Z" fill="#cf9c98" fill-opacity=".7"/><path d="M450.2,871.1 L447.5,875 L442.2,873.8 L442.4,869.7 L447.5,867.7Z" fill="#cf9c98" fill-opacity=".7"/><path d="M350.8,767.7 L348.1,770.4 L344.6,769.5 L343.9,766.1 L348,765.8Z" fill="#cf9c98" fill-opacity=".7"/><path d="M457.4,935.9 L454.9,938.1 L450.7,937.2 L450.2,933.3 L455,932.7Z" fill="#cf9c98" fill-opacity=".7"/><path d="M422.8,830.7 L419.1,835.2 L413,832.3 L414.2,828.6 L418.4,826.4Z" fill="#cf9c98" fill-opacity=".7"/><path d="M526.4,928.5 L522.6,932 L518.8,930.7 L518.1,926.5 L522.5,925.4Z" fill="#cf9c98" fill-opacity=".7"/><path d="M529.1,898.4 L523.5,902.1 L517.3,902.4 L516.9,895.8 L523.9,892.3Z" fill="#cf9c98" fill-opacity=".7"/><path d="M537.7,780.8 L535.3,785.4 L530,783 L531,777.3 L534.8,777.6Z" fill="#cf9c98" fill-opacity=".7"/><path d="M583.3,959.1 L581.4,965 L576.3,961.9 L576.2,955.8 L582.2,955.9Z" fill="#cf9c98" fill-opacity=".7"/><path d="M312.1,855.3 L309.6,860.9 L302.4,858.4 L302,853.1 L308.8,848.1Z" fill="#cf9c98" fill-opacity=".7"/><path d="M405.6,843.3 L402.1,846.5 L396.9,846.9 L396,840.3 L401.2,840.1Z" fill="#cf9c98" fill-opacity=".7"/><path d="M518.1,861.6 L514.7,864.3 L510.2,864.6 L510.6,860.2 L514.1,857Z" fill="#c6a28c" fill-opacity=".7"/><path d="M599.1,783.5 L595.7,789.1 L590.7,787 L590,780.4 L595.9,780Z" fill="#cf9c98" fill-opacity=".7"/><path d="M566.5,750.4 L562.9,756.9 L557,754 L557.1,747 L563.6,746.4Z" fill="#c6a28c" fill-opacity=".7"/><path d="M433.3,876.6 L429.9,880.3 L426,880.3 L424.7,874.1 L430.9,871Z" fill="#cf9c98" fill-opacity=".7"/><path d="M518,1029 L526,1023 L538,1015 L548,1006 L552,992 L557,982 L562,976 L566,966 L570,954 L574,946 L578,932 L588,921 L591,909 L588,901" fill="none" stroke="#a58ca8" stroke-width="1.4" stroke-opacity="0.6" stroke-linejoin="round"/><path d="M456,802 L462,794 L462,785 L462,775 L466,762 L473,753 L487,749 L499,756 L512,766 L514,781 L514,793" fill="none" stroke="#a58ca8" stroke-width="1.4" stroke-opacity="0.6" stroke-linejoin="round"/><path d="M302,789 L308,797 L314,804 L316,815 L326,825 L333,832 L342,838" fill="none" stroke="#a58ca8" stroke-width="1.4" stroke-opacity="0.6" stroke-linejoin="round"/><path d="M447,1019 L447,1028 L450,1039 L445,1051 L440,1066 L431,1076 L432,1086" fill="none" stroke="#a58ca8" stroke-width="1.4" stroke-opacity="0.6" stroke-linejoin="round"/><path d="M509,1031 L510,1043 L512,1051 L516,1064 L521,1074 L526,1082 L532,1096 L527,1111 L526,1122" fill="none" stroke="#a58ca8" stroke-width="1.4" stroke-opacity="0.6" stroke-linejoin="round"/><path d="M570,945 L572,937 L579,931 L590,927 L594,919 L601,915 L606,908 L605,897 L600,883 L597,869 L604,856 L612,852" fill="none" stroke="#a58ca8" stroke-width="1.4" stroke-opacity="0.6" stroke-linejoin="round"/><path d="M348,989 L335,985 L323,986 L310,995 L302,1000 L296,1006 L294,1017" fill="none" stroke="#a58ca8" stroke-width="1.4" stroke-opacity="0.6" stroke-linejoin="round"/><path d="M386,927 L371,931 L363,933 L352,933 L343,930 L335,934 L329,939 L322,946 L316,959 L312,968 L309,981" fill="none" stroke="#a58ca8" stroke-width="1.4" stroke-opacity="0.6" stroke-linejoin="round"/><path d="M538,803 L547,797 L554,786 L562,778 L571,765 L568,756 L561,750 L553,745 L548,736 L544,723 L550,711" fill="none" stroke="#a58ca8" stroke-width="1.4" stroke-opacity="0.6" stroke-linejoin="round"/><path d="M611,885 L622,894 L627,901 L630,912 L644,918 L647,932 L652,945 L663,951 L676,952 L685,955 L693,953 L698,944 L706,942" fill="none" stroke="#a58ca8" stroke-width="1.4" stroke-opacity="0.6" stroke-linejoin="round"/><path d="M347,897 L348,888 L352,873 L351,861 L360,851 L367,842 L375,838 L388,841" fill="none" stroke="#a58ca8" stroke-width="1.4" stroke-opacity="0.6" stroke-linejoin="round"/><path d="M573,731 L572,744 L568,754 L560,762 L551,772 L541,773 L528,779 L519,787" fill="none" stroke="#a58ca8" stroke-width="1.4" stroke-opacity="0.6" stroke-linejoin="round"/><path d="M562,832 L555,819 L541,816 L530,807 L522,806 L513,799 L505,791 L497,789 L489,777 L479,764 L477,753 L472,742 L464,739 L454,730" fill="none" stroke="#e48a62" stroke-width="2" stroke-opacity="0.75" stroke-linejoin="round"/><path d="M618,731 L619,743 L619,754 L619,764 L625,777 L638,785 L643,794" fill="none" stroke="#e48a62" stroke-width="2" stroke-opacity="0.75" stroke-linejoin="round"/><path d="M357,779 L354,789 L351,801 L342,813 L335,818 L326,815 L314,809 L304,809 L291,818" fill="none" stroke="#e48a62" stroke-width="2" stroke-opacity="0.75" stroke-linejoin="round"/><path d="M321,867 L309,868 L298,865 L289,863 L276,864 L264,867 L248,871 L238,866 L224,871 L213,879 L203,885 L198,893 L186,903 L171,899" fill="none" stroke="#e48a62" stroke-width="2" stroke-opacity="0.75" stroke-linejoin="round"/><path d="M419,863 L420,871 L432,881 L442,891 L450,892 L465,895 L476,905 L479,917" fill="none" stroke="#e48a62" stroke-width="2" stroke-opacity="0.75" stroke-linejoin="round"/><path d="M559,911 L552,922 L550,933 L543,943 L543,952 L540,962 L536,972" fill="none" stroke="#e48a62" stroke-width="2" stroke-opacity="0.75" stroke-linejoin="round"/><path d="M407,795 L418,786 L429,780 L438,780 L447,773 L457,771 L466,770 L474,774 L484,772 L499,766 L509,770 L519,774" fill="none" stroke="#e48a62" stroke-width="2" stroke-opacity="0.75" stroke-linejoin="round"/><path d="M316,1012 L315,1004 L322,991 L320,981 L310,969 L298,960 L294,946 L284,942 L277,938" fill="none" stroke="#df6a72" stroke-width="2.2" stroke-opacity="0.6" stroke-linejoin="round"/><path d="M471,826 L480,835 L484,844 L483,858 L480,866 L474,881 L474,896 L467,904" fill="none" stroke="#df6a72" stroke-width="2.2" stroke-opacity="0.6" stroke-linejoin="round"/><path d="M470,750 L480,743 L496,740 L506,742 L519,748 L533,745 L543,753 L545,767 L554,774 L564,774 L577,776 L586,771 L595,766 L599,757 L604,750" fill="none" stroke="#df6a72" stroke-width="2.2" stroke-opacity="0.6" stroke-linejoin="round"/><g transform="translate(300,740) scale(0.26062)"><path d="M0,250 L80,320 L200,370 L300,380 L400,400 L500,430 L600,410 L700,370 L800,380 L900,410 L1151,410" fill="none" stroke="#df6470" stroke-width="11.51" stroke-linejoin="round" stroke-linecap="round"/><path d="M420,1040 L480,880 L560,800 L650,740 L750,700 L870,710 L1000,690 L1151,650" fill="none" stroke="#df6470" stroke-width="11.51" stroke-linejoin="round" stroke-linecap="round"/><path d="M0,20 L100,10 L200,30 L300,100 L400,170 L520,180 L650,100 L700,0" fill="none" stroke="#df6470" stroke-width="9.59" stroke-linejoin="round" stroke-linecap="round"/><path d="M540,180 L600,250 L700,300 L800,350 L900,400" fill="none" stroke="#e48a62" stroke-width="7.67" stroke-linejoin="round" stroke-linecap="round"/><path d="M800,0 L860,100 L950,150 L1000,200 L1020,300 L1000,450 L1050,550 L1151,650" fill="none" stroke="#e48a62" stroke-width="7.67" stroke-linejoin="round" stroke-linecap="round"/><path d="M130,0 L250,100 L380,180 L450,280 L550,380 L650,460 L700,530 L750,650 L700,720 L600,780 L500,830 L400,860 L330,880 L200,930 L100,960 L0,980" fill="none" stroke="#7a5a5e" stroke-width="5.76" stroke-linejoin="round" stroke-linecap="round"/><path d="M0,600 L100,580 L200,610 L300,650 L350,700 L380,850" fill="none" stroke="#e48a62" stroke-width="7.67" stroke-linejoin="round" stroke-linecap="round"/><path d="M400,580 L500,600 L600,620 L700,650" fill="none" stroke="#e48a62" stroke-width="7.67" stroke-linejoin="round" stroke-linecap="round"/><path d="M240,380 L200,500 L150,550 L100,600" fill="none" stroke="#e48a62" stroke-width="7.67" stroke-linejoin="round" stroke-linecap="round"/><path d="M850,950 L950,960 L1100,1000" fill="none" stroke="#e48a62" stroke-width="7.67" stroke-linejoin="round" stroke-linecap="round"/><path d="M550,850 L600,950 L650,1040" fill="none" stroke="#e48a62" stroke-width="7.67" stroke-linejoin="round" stroke-linecap="round"/><path d="M0,800 L100,780 L200,820 L280,900" fill="none" stroke="#e48a62" stroke-width="7.67" stroke-linejoin="round" stroke-linecap="round"/><path d="M250,480 L350,540 L400,600 L460,640" fill="none" stroke="#a58ca8" stroke-width="5.76" stroke-linejoin="round" stroke-linecap="round"/><path d="M0,700 L80,760 L150,860 L250,880" fill="none" stroke="#a58ca8" stroke-width="5.76" stroke-linejoin="round" stroke-linecap="round"/></g></g><g clip-path="url(#cl9)"><rect x="600" y="740" width="300" height="272" fill="#b9907f"/><rect x="600" y="740" width="300" height="272" fill="url(#prur)"/><g transform="translate(600,740) scale(0.26062)"><path d="M0,0 L55.8,11.7 L92,-9.4 L139.9,2.3 L201.9,5.4 L254.7,-5.3 L294.9,11.1 L352.9,-13.4 L395.2,-7.8 L448.3,-6.3 L487.3,-9.4 L550.5,0 L599.2,-0.2 L653.9,7.2 L714.6,-8.2 L752.2,-9.3 L788,-9.3 L845.5,5.8 L912.4,-3.3 L956.7,-3.9 L993.2,-7.9 L1061.7,-7.8 L1103.1,11.9 L1151,0 L1148.4,57.2 L1161.8,101.7 L1149.6,165.5 L1155.7,206.3 L1159.8,264.8 L1160.2,313.4 L1161.3,354.9 L1150.7,405.3 L1145.1,464.5 L1162,525.1 L1156.6,569.6 L1163.2,625 L1149.1,666.1 L1150,737.6 L1147.2,791.9 L1159.2,841.8 L1143.3,870.8 L1142.2,922.3 L1143,998.1 L1151,1040 L1108.8,1027.2 L1052.4,1042.1 L997,1042 L937.9,1049.6 L911.6,1032 L840.4,1034.8 L814.5,1051.4 L749.8,1044.9 L691.7,1026.5 L640.9,1050.4 L613.1,1051.6 L551.7,1048.2 L496.7,1032.1 L444.7,1053.8 L394.2,1036.1 L362.8,1033.2 L302.2,1027 L259.1,1028.2 L194.1,1031.2 L136.7,1050.4 L95.6,1029.3 L36.7,1029.7 L0,1040 L-10.4,986.7 L-5.8,939.2 L13.1,873.7 L-8.8,832.9 L-3.9,778.1 L1.7,729.5 L10.7,669.7 L-13.6,624 L-0.4,564.9 L-2.9,515.9 L13,468.1 L-5,424.4 L-6.3,356.2 L-0.8,325.6 L5.4,267.3 L-11.1,208.8 L-13.9,164.2 L10.1,94.2 L-2.4,49.9Z" fill="#d49a97" /><path d="M0,0 L55.8,11.7 L92,-9.4 L139.9,2.3 L201.9,5.4 L254.7,-5.3 L294.9,11.1 L352.9,-13.4 L395.2,-7.8 L448.3,-6.3 L487.3,-9.4 L550.5,0 L599.2,-0.2 L653.9,7.2 L714.6,-8.2 L752.2,-9.3 L788,-9.3 L845.5,5.8 L912.4,-3.3 L956.7,-3.9 L993.2,-7.9 L1061.7,-7.8 L1103.1,11.9 L1151,0 L1148.4,57.2 L1161.8,101.7 L1149.6,165.5 L1155.7,206.3 L1159.8,264.8 L1160.2,313.4 L1161.3,354.9 L1150.7,405.3 L1145.1,464.5 L1162,525.1 L1156.6,569.6 L1163.2,625 L1149.1,666.1 L1150,737.6 L1147.2,791.9 L1159.2,841.8 L1143.3,870.8 L1142.2,922.3 L1143,998.1 L1151,1040 L1108.8,1027.2 L1052.4,1042.1 L997,1042 L937.9,1049.6 L911.6,1032 L840.4,1034.8 L814.5,1051.4 L749.8,1044.9 L691.7,1026.5 L640.9,1050.4 L613.1,1051.6 L551.7,1048.2 L496.7,1032.1 L444.7,1053.8 L394.2,1036.1 L362.8,1033.2 L302.2,1027 L259.1,1028.2 L194.1,1031.2 L136.7,1050.4 L95.6,1029.3 L36.7,1029.7 L0,1040 L-10.4,986.7 L-5.8,939.2 L13.1,873.7 L-8.8,832.9 L-3.9,778.1 L1.7,729.5 L10.7,669.7 L-13.6,624 L-0.4,564.9 L-2.9,515.9 L13,468.1 L-5,424.4 L-6.3,356.2 L-0.8,325.6 L5.4,267.3 L-11.1,208.8 L-13.9,164.2 L10.1,94.2 L-2.4,49.9Z" fill="url(#purb)" /><path d="M0,0 L55.8,11.7 L92,-9.4 L139.9,2.3 L201.9,5.4 L254.7,-5.3 L294.9,11.1 L352.9,-13.4 L395.2,-7.8 L448.3,-6.3 L487.3,-9.4 L550.5,0 L599.2,-0.2 L653.9,7.2 L714.6,-8.2 L752.2,-9.3 L788,-9.3 L845.5,5.8 L912.4,-3.3 L956.7,-3.9 L993.2,-7.9 L1061.7,-7.8 L1103.1,11.9 L1151,0 L1148.4,57.2 L1161.8,101.7 L1149.6,165.5 L1155.7,206.3 L1159.8,264.8 L1160.2,313.4 L1161.3,354.9 L1150.7,405.3 L1145.1,464.5 L1162,525.1 L1156.6,569.6 L1163.2,625 L1149.1,666.1 L1150,737.6 L1147.2,791.9 L1159.2,841.8 L1143.3,870.8 L1142.2,922.3 L1143,998.1 L1151,1040 L1108.8,1027.2 L1052.4,1042.1 L997,1042 L937.9,1049.6 L911.6,1032 L840.4,1034.8 L814.5,1051.4 L749.8,1044.9 L691.7,1026.5 L640.9,1050.4 L613.1,1051.6 L551.7,1048.2 L496.7,1032.1 L444.7,1053.8 L394.2,1036.1 L362.8,1033.2 L302.2,1027 L259.1,1028.2 L194.1,1031.2 L136.7,1050.4 L95.6,1029.3 L36.7,1029.7 L0,1040 L-10.4,986.7 L-5.8,939.2 L13.1,873.7 L-8.8,832.9 L-3.9,778.1 L1.7,729.5 L10.7,669.7 L-13.6,624 L-0.4,564.9 L-2.9,515.9 L13,468.1 L-5,424.4 L-6.3,356.2 L-0.8,325.6 L5.4,267.3 L-11.1,208.8 L-13.9,164.2 L10.1,94.2 L-2.4,49.9Z" fill="url(#purb2)" /><path d="M0,0 L70,0 L61.4,50.6 L58.9,95.8 L59.2,160.9 L71.2,216.8 L56.7,261.3 L77.1,310.9 L61.7,357.2 L79.7,427 L66.3,472.2 L58,525.4 L82.9,564.2 L71,637.4 L70,680 L140,720 L144.8,771 L145.2,835.1 L139.4,873 L153.7,947.2 L148.3,997.3 L140,1040 L71.9,1044 L0,1040 L6.4,998 L13,930.7 L-3.8,896.6 L-2.2,845.1 L6.8,775.2 L-12.6,727.9 L0.5,668 L13.7,620.3 L-13.8,584.7 L8.5,514 L9.3,464.2 L7.6,417.5 L10.3,367.8 L-11.6,322.2 L11.5,249.3 L-12,208.5 L-6.1,168.1 L-9.3,91.7 L10,45.2Z" fill="#b9907f" /><path d="M0,0 L70,0 L61.4,50.6 L58.9,95.8 L59.2,160.9 L71.2,216.8 L56.7,261.3 L77.1,310.9 L61.7,357.2 L79.7,427 L66.3,472.2 L58,525.4 L82.9,564.2 L71,637.4 L70,680 L140,720 L144.8,771 L145.2,835.1 L139.4,873 L153.7,947.2 L148.3,997.3 L140,1040 L71.9,1044 L0,1040 L6.4,998 L13,930.7 L-3.8,896.6 L-2.2,845.1 L6.8,775.2 L-12.6,727.9 L0.5,668 L13.7,620.3 L-13.8,584.7 L8.5,514 L9.3,464.2 L7.6,417.5 L10.3,367.8 L-11.6,322.2 L11.5,249.3 L-12,208.5 L-6.1,168.1 L-9.3,91.7 L10,45.2Z" fill="url(#prurbT)" /><path d="M70,150 L133,158.7 L201.4,154.8 L250,150 L246.7,203.7 L230,260 L180,330 L120,400 L70,420 L77.8,370.8 L79.4,301.4 L79.5,248 L65.4,194.2Z" fill="#b9907f" /><path d="M70,150 L133,158.7 L201.4,154.8 L250,150 L246.7,203.7 L230,260 L180,330 L120,400 L70,420 L77.8,370.8 L79.4,301.4 L79.5,248 L65.4,194.2Z" fill="url(#prurbT)" /></g><path d="M687,864.9 L685.9,869.6 L680,868.3 L680.2,862.7 L685.7,861.7Z" fill="#c6a28c" fill-opacity=".7"/><path d="M868,889.1 L866.8,894.2 L861,891 L860.7,885.3 L866.9,884.2Z" fill="#cf9c98" fill-opacity=".7"/><path d="M730.3,781.7 L727.8,783.9 L724.5,783.5 L724.9,780 L727.8,779.2Z" fill="#c6a28c" fill-opacity=".7"/><path d="M804,753.3 L801.2,758.4 L796.1,755.8 L795.1,750.3 L800.6,749.6Z" fill="#c6a28c" fill-opacity=".7"/><path d="M754.1,921.8 L749.8,929.1 L742.6,925.7 L744.1,919.4 L749.9,917.1Z" fill="#c6a28c" fill-opacity=".7"/><path d="M778.2,972.3 L775.3,978.1 L766.3,976 L768.9,967.1 L775.3,964.7Z" fill="#c6a28c" fill-opacity=".7"/><path d="M886.9,978.5 L886.2,980.8 L883,979.4 L883.9,976.6 L886.1,976.8Z" fill="#cf9c98" fill-opacity=".7"/><path d="M843.8,968.3 L840.9,971.1 L837.4,970.4 L838.8,967.1 L840.7,966.7Z" fill="#c6a28c" fill-opacity=".7"/><path d="M649.2,854.1 L644.6,859.8 L639.4,856.6 L636.8,851.7 L644.9,850.9Z" fill="#cf9c98" fill-opacity=".7"/><path d="M809.6,802.5 L804.5,810.8 L798.3,806 L797.8,798.9 L803.6,797.9Z" fill="#cf9c98" fill-opacity=".7"/><path d="M891.8,914.9 L886.6,920.2 L880.6,917.1 L882.1,911 L886.4,908.8Z" fill="#cf9c98" fill-opacity=".7"/><path d="M753.1,989.3 L750.8,991.6 L748.2,990.4 L747.7,988.2 L750.5,988.1Z" fill="#c6a28c" fill-opacity=".7"/><path d="M676.7,833.2 L673.5,838.2 L669.1,836.6 L667.1,829.8 L673.5,830.4Z" fill="#cf9c98" fill-opacity=".7"/><path d="M873.5,806.6 L866.4,810.6 L856.9,810.3 L856.9,801.2 L865.3,800.8Z" fill="#cf9c98" fill-opacity=".7"/><path d="M656.3,998 L652.4,1001.1 L646.1,1001.6 L645.6,994.1 L652,992.5Z" fill="#c6a28c" fill-opacity=".7"/><path d="M733,1000.5 L730.8,1005 L725.7,1003 L726.1,998 L730.2,998.2Z" fill="#cf9c98" fill-opacity=".7"/><path d="M894.3,758.6 L892.7,763.9 L887.8,761.6 L886.8,755.8 L892.7,752.8Z" fill="#c6a28c" fill-opacity=".7"/><path d="M783.3,994.5 L776.8,1001.8 L768.6,1000 L768,990.9 L776.7,987.4Z" fill="#cf9c98" fill-opacity=".7"/><path d="M803.5,792.2 L799,796.7 L793.4,795.9 L795,788.2 L799.1,785.7Z" fill="#cf9c98" fill-opacity=".7"/><path d="M798.9,978.5 L797.3,982.1 L794.5,980.9 L793.8,977.2 L797.4,975.7Z" fill="#c6a28c" fill-opacity=".7"/><path d="M853.9,748.1 L851,751.6 L846.8,749.5 L848.3,745.7 L851.1,745.3Z" fill="#cf9c98" fill-opacity=".7"/><path d="M900.9,916.5 L898.5,920.6 L894.5,919.5 L894.8,914.3 L898,913.6Z" fill="#cf9c98" fill-opacity=".7"/><path d="M662.8,955.7 L661.2,957.6 L659.1,957.5 L659.1,953.9 L661.7,953.6Z" fill="#cf9c98" fill-opacity=".7"/><path d="M864,985.9 L861,992.5 L854,988.7 L853.8,980.7 L860.7,980.3Z" fill="#c6a28c" fill-opacity=".7"/><path d="M622.6,819.1 L621,821.5 L618.4,820.8 L618.7,817.5 L621.4,815.4Z" fill="#cf9c98" fill-opacity=".7"/><path d="M630.8,751.4 L628.5,755 L624.6,753.6 L623.8,748.3 L629.2,747.3Z" fill="#c6a28c" fill-opacity=".7"/><path d="M705.1,940.8 L700.6,947 L695.7,944.1 L693.4,937.6 L700.2,937.5Z" fill="#c6a28c" fill-opacity=".7"/><path d="M675.4,936.7 L673.8,938.6 L671.6,937.7 L671.1,935.6 L673.9,935.1Z" fill="#cf9c98" fill-opacity=".7"/><path d="M736.9,778.9 L734.3,781.7 L731.6,780.1 L730.8,777.4 L734.6,775.3Z" fill="#cf9c98" fill-opacity=".7"/><path d="M699.7,776.4 L696.6,781.7 L690.5,778.8 L692.7,774.8 L696.6,773.8Z" fill="#cf9c98" fill-opacity=".7"/><path d="M821.9,934.8 L819,941.4 L814,939.2 L813.4,932 L818.5,928.3Z" fill="#cf9c98" fill-opacity=".7"/><path d="M752.6,770.2 L749.2,774.5 L746.2,771.5 L746.8,767.6 L749.4,766.4Z" fill="#cf9c98" fill-opacity=".7"/><path d="M896.5,808.1 L894.7,811.5 L891,810.3 L892.2,805.9 L894.2,804.4Z" fill="#c6a28c" fill-opacity=".7"/><path d="M789.3,856.3 L788.7,858.5 L786.1,858.2 L786.4,855.1 L788.6,854.6Z" fill="#cf9c98" fill-opacity=".7"/><path d="M831.1,1008.2 L826.1,1011.9 L819.3,1011.3 L820.5,1006.3 L826.8,1002.3Z" fill="#cf9c98" fill-opacity=".7"/><path d="M702.7,790.5 L701.5,792.7 L698.2,792.5 L698.3,788.6 L701.5,788.8Z" fill="#cf9c98" fill-opacity=".7"/><path d="M888,751.8 L885.2,755.2 L881.3,753.5 L881.5,750.5 L885.7,748.3Z" fill="#cf9c98" fill-opacity=".7"/><path d="M628.9,806.9 L627.1,811 L619.2,810.4 L618.9,802.9 L627.3,803.1Z" fill="#c6a28c" fill-opacity=".7"/><path d="M851.4,745.9 L847.1,751.9 L838.1,750.9 L838.2,741.5 L846.8,740.8Z" fill="#cf9c98" fill-opacity=".7"/><path d="M648.8,905.8 L646.1,908.2 L643,907.5 L643.1,904.2 L646,902.6Z" fill="#c6a28c" fill-opacity=".7"/><path d="M855.9,987 L854.9,990.3 L852.4,988 L852.5,986 L855,984.8Z" fill="#cf9c98" fill-opacity=".7"/><path d="M719.2,917 L717,921.4 L710.7,920.2 L712.3,913.9 L716.6,913.4Z" fill="#cf9c98" fill-opacity=".7"/><path d="M730.9,843.7 L729.4,847.7 L726.9,846 L726.1,841.2 L729.5,840.1Z" fill="#cf9c98" fill-opacity=".7"/><path d="M790.3,761.4 L788.1,763.7 L785.1,762.2 L785.5,760.1 L788,759Z" fill="#c6a28c" fill-opacity=".7"/><path d="M838.2,975.2 L834.8,977.3 L831,976.5 L832.2,972.9 L834.8,972.1Z" fill="#c6a28c" fill-opacity=".7"/><path d="M655.8,950.1 L651.9,957.8 L643.6,953.5 L645.5,944.8 L651.8,943.1Z" fill="#c6a28c" fill-opacity=".7"/><path d="M780.2,1005 L778.4,1007.3 L775.1,1006.5 L775.3,1002.6 L778.1,1001.3Z" fill="#cf9c98" fill-opacity=".7"/><path d="M649.9,956.1 L647.5,961.6 L640.9,958.2 L642.6,952.9 L647.9,950.3Z" fill="#cf9c98" fill-opacity=".7"/><path d="M862.4,793.6 L860.5,795.8 L857.4,794.8 L857,791.5 L860.3,791Z" fill="#cf9c98" fill-opacity=".7"/><path d="M638,781.1 L635.4,785.8 L629.7,784.4 L629.5,776.1 L635.2,776.5Z" fill="#cf9c98" fill-opacity=".7"/><path d="M749,973.1 L745.7,976.2 L741.5,974.7 L741.9,970.9 L745.8,969.5Z" fill="#c6a28c" fill-opacity=".7"/><path d="M825.6,865.6 L822.7,870.5 L815.7,868.1 L815.5,861.8 L823.1,860.3Z" fill="#c6a28c" fill-opacity=".7"/><path d="M820.1,996.1 L818.9,1002.3 L814,1000 L811.4,992.4 L818.2,992.4Z" fill="#cf9c98" fill-opacity=".7"/><path d="M716.1,839.2 L714.7,843.1 L708.9,842.7 L708.2,836.9 L714,835.1Z" fill="#cf9c98" fill-opacity=".7"/><path d="M660,780 L655.5,785.8 L647.6,784.5 L650.1,776.7 L656,773.6Z" fill="#cf9c98" fill-opacity=".7"/><path d="M817.7,806.6 L814.1,810.4 L810.2,808.7 L811.3,805.3 L814.1,804.1Z" fill="#c6a28c" fill-opacity=".7"/><path d="M672.7,760.5 L671,762.7 L669.4,762.1 L669.5,759.4 L671.2,759Z" fill="#c6a28c" fill-opacity=".7"/><path d="M795.2,1006.6 L789.6,1013.3 L782.7,1009.5 L782.8,1004.5 L788.7,1003.3Z" fill="#cf9c98" fill-opacity=".7"/><path d="M867,959.3 L863,964 L857.6,961.8 L858.5,956.7 L862.9,956.5Z" fill="#c6a28c" fill-opacity=".7"/><path d="M860.5,974.5 L858.2,976.5 L853.6,976.4 L854.3,972.4 L858.1,972.5Z" fill="#cf9c98" fill-opacity=".7"/><path d="M891.3,865.6 L888.5,869.4 L883,868 L883.9,861.9 L888.1,860.8Z" fill="#c6a28c" fill-opacity=".7"/><path d="M666.2,944.7 L664.6,947.6 L660.1,948.2 L657.7,942.7 L664.3,939.4Z" fill="#c6a28c" fill-opacity=".7"/><path d="M884,821 L877,812 L862,808 L854,813 L841,821 L835,827 L823,830" fill="none" stroke="#a58ca8" stroke-width="1.4" stroke-opacity="0.6" stroke-linejoin="round"/><path d="M660,868 L650,858 L639,860 L633,865 L622,874 L612,879 L602,876 L589,877" fill="none" stroke="#a58ca8" stroke-width="1.4" stroke-opacity="0.6" stroke-linejoin="round"/><path d="M908,748 L901,756 L888,757 L881,759 L872,763 L863,773 L854,784 L846,790 L832,787 L823,779 L817,770 L810,765 L809,753" fill="none" stroke="#a58ca8" stroke-width="1.4" stroke-opacity="0.6" stroke-linejoin="round"/><path d="M842,769 L831,773 L817,771 L810,767 L807,756 L812,748 L809,738 L808,727 L808,718 L803,709 L800,700 L798,688" fill="none" stroke="#a58ca8" stroke-width="1.4" stroke-opacity="0.6" stroke-linejoin="round"/><path d="M731,1006 L744,1001 L758,1001 L766,997 L769,983 L763,968 L766,955 L768,944 L779,934 L787,929 L791,919" fill="none" stroke="#a58ca8" stroke-width="1.4" stroke-opacity="0.6" stroke-linejoin="round"/><path d="M734,767 L742,778 L746,788 L757,798 L763,810 L759,819 L748,824 L740,828" fill="none" stroke="#a58ca8" stroke-width="1.4" stroke-opacity="0.6" stroke-linejoin="round"/><path d="M595,783 L583,774 L573,774 L558,778 L547,776 L536,777 L526,776 L511,771" fill="none" stroke="#a58ca8" stroke-width="1.4" stroke-opacity="0.6" stroke-linejoin="round"/><path d="M584,815 L594,810 L608,812 L617,812 L624,806 L632,806 L640,810 L647,807 L652,794 L658,787 L665,775 L662,765" fill="none" stroke="#a58ca8" stroke-width="1.4" stroke-opacity="0.6" stroke-linejoin="round"/><path d="M918,925 L914,939 L907,948 L910,963 L911,971 L923,977 L938,976 L946,970 L952,962 L957,948 L951,934 L951,918 L960,906 L960,894" fill="none" stroke="#a58ca8" stroke-width="1.4" stroke-opacity="0.6" stroke-linejoin="round"/><path d="M854,911 L861,916 L872,928 L880,934 L890,944 L900,950 L907,964 L919,974 L928,985 L935,997 L944,1004 L958,1005 L965,1011 L973,1010" fill="none" stroke="#a58ca8" stroke-width="1.4" stroke-opacity="0.6" stroke-linejoin="round"/><path d="M903,973 L905,963 L911,955 L922,947 L926,939 L934,930 L935,914 L944,907" fill="none" stroke="#a58ca8" stroke-width="1.4" stroke-opacity="0.6" stroke-linejoin="round"/><path d="M752,989 L762,994 L769,1005 L779,1015 L778,1028 L788,1039 L798,1040" fill="none" stroke="#a58ca8" stroke-width="1.4" stroke-opacity="0.6" stroke-linejoin="round"/><path d="M901,772 L909,768 L917,762 L927,756 L936,757 L947,764 L960,771 L966,777 L975,779 L980,788" fill="none" stroke="#e48a62" stroke-width="2" stroke-opacity="0.75" stroke-linejoin="round"/><path d="M671,857 L680,854 L691,849 L702,845 L709,837 L714,828 L722,822 L731,814 L742,814 L754,814 L762,809 L772,808 L779,800" fill="none" stroke="#e48a62" stroke-width="2" stroke-opacity="0.75" stroke-linejoin="round"/><path d="M691,970 L690,983 L681,993 L672,1002 L661,1007 L651,1009 L638,1009" fill="none" stroke="#e48a62" stroke-width="2" stroke-opacity="0.75" stroke-linejoin="round"/><path d="M823,989 L830,995 L844,993 L855,982 L859,969 L865,961 L877,951 L889,943 L897,934 L896,923 L889,918 L877,908 L867,909 L853,903" fill="none" stroke="#e48a62" stroke-width="2" stroke-opacity="0.75" stroke-linejoin="round"/><path d="M833,854 L823,851 L816,844 L802,835 L788,829 L785,818 L788,810 L802,805" fill="none" stroke="#e48a62" stroke-width="2" stroke-opacity="0.75" stroke-linejoin="round"/><path d="M678,816 L666,815 L653,810 L647,798 L648,783 L642,770 L629,762 L623,750 L626,740 L637,732 L651,726 L656,716 L663,705 L672,697 L682,690" fill="none" stroke="#e48a62" stroke-width="2" stroke-opacity="0.75" stroke-linejoin="round"/><path d="M682,800 L675,813 L672,823 L667,835 L671,845 L668,857 L673,867 L680,871 L689,883" fill="none" stroke="#e48a62" stroke-width="2" stroke-opacity="0.75" stroke-linejoin="round"/><path d="M744,1010 L738,1022 L728,1027 L719,1025 L706,1033 L703,1042 L697,1051 L689,1059 L677,1069 L670,1080" fill="none" stroke="#df6a72" stroke-width="2.2" stroke-opacity="0.6" stroke-linejoin="round"/><path d="M686,1028 L701,1027 L710,1015 L720,1014 L731,1004 L743,994 L754,987 L763,977 L775,973 L783,967 L789,959 L798,955 L802,948 L814,943" fill="none" stroke="#df6a72" stroke-width="2.2" stroke-opacity="0.6" stroke-linejoin="round"/><path d="M634,1031 L626,1021 L615,1010 L603,1010 L596,1017 L587,1018 L575,1025 L562,1021 L547,1020 L538,1011" fill="none" stroke="#df6a72" stroke-width="2.2" stroke-opacity="0.6" stroke-linejoin="round"/><g transform="translate(600,740) scale(0.26062)"><path d="M900,0 L1151,0 L1151,1040 L400,1040 L440,980 L500,900 L560,830 L620,760 L700,680 L740,600 L770,520 L810,470 L820,350 L890,340 L890,290 L820,290 L800,240 L830,180 L890,150 L900,80 L890,20Z" fill="#b39094" /><path d="M0,410 L80,400 L150,340 L220,260 L300,200" fill="none" stroke="#df6470" stroke-width="11.51" stroke-linejoin="round" stroke-linecap="round"/><path d="M0,700 L100,680 L200,740 L250,820 L280,950 L300,1040" fill="none" stroke="#df6470" stroke-width="11.51" stroke-linejoin="round" stroke-linecap="round"/><path d="M0,680 L60,660 L100,600 L150,520 L230,480 L300,440 L400,400 L460,380" fill="none" stroke="#df6470" stroke-width="9.59" stroke-linejoin="round" stroke-linecap="round"/><path d="M640,450 L650,550 L600,650 L520,760 L440,880 L380,1040" fill="none" stroke="#7a5a5e" stroke-width="5.76" stroke-linejoin="round" stroke-linecap="round"/><path d="M330,650 L400,600 L500,560 L580,560" fill="none" stroke="#e48a62" stroke-width="7.67" stroke-linejoin="round" stroke-linecap="round"/><path d="M80,460 L200,440 L350,480 L500,490 L640,480" fill="none" stroke="#e48a62" stroke-width="7.67" stroke-linejoin="round" stroke-linecap="round"/><path d="M270,520 L300,700 L360,800 L400,900 L430,1040" fill="none" stroke="#e48a62" stroke-width="7.67" stroke-linejoin="round" stroke-linecap="round"/><path d="M620,600 L600,700 L520,800" fill="none" stroke="#e48a62" stroke-width="7.67" stroke-linejoin="round" stroke-linecap="round"/><path d="M0,30 L100,20 L250,40 L330,60" fill="none" stroke="#e48a62" stroke-width="7.67" stroke-linejoin="round" stroke-linecap="round"/><path d="M1151,820 L1000,880 L900,920 L720,1040" fill="none" stroke="#a58ca8" stroke-width="3.84" stroke-linejoin="round" stroke-linecap="round"/><path d="M1100,0 L1150,150 L1080,300 L1040,500 L1000,800 L990,1040" fill="none" stroke="#a58ca8" stroke-width="3.84" stroke-linejoin="round" stroke-linecap="round"/></g></g><g clip-path="url(#cl10)"><rect x="900" y="740" width="300" height="272" fill="#b9907f"/><rect x="900" y="740" width="300" height="272" fill="url(#prur)"/><g transform="translate(900,740) scale(0.26062)"><path d="M0,0 L55.2,1.4 L107.5,-2.6 L158,-9.6 L210.3,11.2 L254,1.5 L290.7,6.2 L360.8,13.5 L398.1,-7.2 L458.9,0.2 L498.7,2.5 L539.1,8.2 L610.5,-2.5 L651.7,4.5 L708.5,11 L754.7,1 L802.3,1.1 L849.3,5.5 L894.7,-13.2 L941.9,-8.2 L991.5,-8.2 L1041,-11.9 L1108,-2 L1151,0 L1137.2,45.2 L1151.4,93 L1162.6,163.8 L1141.7,194.8 L1160.1,266.1 L1141.3,308.3 L1152.5,353 L1151.7,413.9 L1151,477.9 L1153.9,532.7 L1153,564.1 L1159.7,633 L1157.5,683.6 L1147.6,714.3 L1137.6,770.2 L1148.2,820.8 L1153.6,888 L1151.5,925.3 L1139.6,997.7 L1151,1040 L1092.4,1041.6 L1056.6,1045.6 L1011.3,1028.3 L963.3,1039.2 L898.9,1027.9 L848.9,1053.7 L787.5,1044.9 L740.5,1026.2 L714.2,1047.9 L657.1,1053.8 L611.5,1050.3 L543.9,1052.4 L496.9,1043.8 L461.8,1029.1 L395.8,1029.2 L344.6,1035.7 L301.8,1040.8 L254.8,1041.7 L193.9,1032.4 L163.4,1032.2 L99.4,1031.5 L47.1,1032.8 L0,1040 L-6.9,999.5 L-12.4,941 L-12.2,891.8 L13.9,837.4 L-11.2,778.9 L-11,723.5 L2.8,668.7 L-12.1,612.6 L1.7,564.5 L-2.4,520.9 L1.9,477.2 L3.8,403.1 L0.9,367.7 L-0.4,324.7 L10.3,250 L-13.2,199.6 L-2.2,167.1 L5.2,113.7 L-7.1,54.4Z" fill="#d49a97" /><path d="M0,0 L55.2,1.4 L107.5,-2.6 L158,-9.6 L210.3,11.2 L254,1.5 L290.7,6.2 L360.8,13.5 L398.1,-7.2 L458.9,0.2 L498.7,2.5 L539.1,8.2 L610.5,-2.5 L651.7,4.5 L708.5,11 L754.7,1 L802.3,1.1 L849.3,5.5 L894.7,-13.2 L941.9,-8.2 L991.5,-8.2 L1041,-11.9 L1108,-2 L1151,0 L1137.2,45.2 L1151.4,93 L1162.6,163.8 L1141.7,194.8 L1160.1,266.1 L1141.3,308.3 L1152.5,353 L1151.7,413.9 L1151,477.9 L1153.9,532.7 L1153,564.1 L1159.7,633 L1157.5,683.6 L1147.6,714.3 L1137.6,770.2 L1148.2,820.8 L1153.6,888 L1151.5,925.3 L1139.6,997.7 L1151,1040 L1092.4,1041.6 L1056.6,1045.6 L1011.3,1028.3 L963.3,1039.2 L898.9,1027.9 L848.9,1053.7 L787.5,1044.9 L740.5,1026.2 L714.2,1047.9 L657.1,1053.8 L611.5,1050.3 L543.9,1052.4 L496.9,1043.8 L461.8,1029.1 L395.8,1029.2 L344.6,1035.7 L301.8,1040.8 L254.8,1041.7 L193.9,1032.4 L163.4,1032.2 L99.4,1031.5 L47.1,1032.8 L0,1040 L-6.9,999.5 L-12.4,941 L-12.2,891.8 L13.9,837.4 L-11.2,778.9 L-11,723.5 L2.8,668.7 L-12.1,612.6 L1.7,564.5 L-2.4,520.9 L1.9,477.2 L3.8,403.1 L0.9,367.7 L-0.4,324.7 L10.3,250 L-13.2,199.6 L-2.2,167.1 L5.2,113.7 L-7.1,54.4Z" fill="url(#purb)" /><path d="M0,0 L55.2,1.4 L107.5,-2.6 L158,-9.6 L210.3,11.2 L254,1.5 L290.7,6.2 L360.8,13.5 L398.1,-7.2 L458.9,0.2 L498.7,2.5 L539.1,8.2 L610.5,-2.5 L651.7,4.5 L708.5,11 L754.7,1 L802.3,1.1 L849.3,5.5 L894.7,-13.2 L941.9,-8.2 L991.5,-8.2 L1041,-11.9 L1108,-2 L1151,0 L1137.2,45.2 L1151.4,93 L1162.6,163.8 L1141.7,194.8 L1160.1,266.1 L1141.3,308.3 L1152.5,353 L1151.7,413.9 L1151,477.9 L1153.9,532.7 L1153,564.1 L1159.7,633 L1157.5,683.6 L1147.6,714.3 L1137.6,770.2 L1148.2,820.8 L1153.6,888 L1151.5,925.3 L1139.6,997.7 L1151,1040 L1092.4,1041.6 L1056.6,1045.6 L1011.3,1028.3 L963.3,1039.2 L898.9,1027.9 L848.9,1053.7 L787.5,1044.9 L740.5,1026.2 L714.2,1047.9 L657.1,1053.8 L611.5,1050.3 L543.9,1052.4 L496.9,1043.8 L461.8,1029.1 L395.8,1029.2 L344.6,1035.7 L301.8,1040.8 L254.8,1041.7 L193.9,1032.4 L163.4,1032.2 L99.4,1031.5 L47.1,1032.8 L0,1040 L-6.9,999.5 L-12.4,941 L-12.2,891.8 L13.9,837.4 L-11.2,778.9 L-11,723.5 L2.8,668.7 L-12.1,612.6 L1.7,564.5 L-2.4,520.9 L1.9,477.2 L3.8,403.1 L0.9,367.7 L-0.4,324.7 L10.3,250 L-13.2,199.6 L-2.2,167.1 L5.2,113.7 L-7.1,54.4Z" fill="url(#purb2)" /><path d="M300,1000 L360,960 L379.9,1005.5 L420,1040 L364.7,1049 L300,1040Z" fill="#b9907f" /><path d="M300,1000 L360,960 L379.9,1005.5 L420,1040 L364.7,1049 L300,1040Z" fill="url(#prurbT)" /></g><path d="M1185,845.5 L1181.8,851.4 L1177.1,848.8 L1176.2,843.4 L1182.6,837.9Z" fill="#cf9c98" fill-opacity=".7"/><path d="M1094.1,883.8 L1090.7,887.3 L1086.3,887.2 L1085.2,880.8 L1090.9,878.6Z" fill="#c6a28c" fill-opacity=".7"/><path d="M1168.2,792.9 L1166.7,796.7 L1162.3,794.6 L1162.8,789.9 L1166.8,787.8Z" fill="#cf9c98" fill-opacity=".7"/><path d="M983.5,778.3 L981.5,782.8 L976.7,780.8 L978.1,774.8 L981.5,772.9Z" fill="#cf9c98" fill-opacity=".7"/><path d="M930.4,1009.6 L929,1012.5 L922.3,1011.4 L924.7,1007.8 L929,1005Z" fill="#cf9c98" fill-opacity=".7"/><path d="M1111.3,820 L1110.5,821.5 L1108.5,821.1 L1108.5,819.1 L1110.2,818.5Z" fill="#cf9c98" fill-opacity=".7"/><path d="M1156.4,921.6 L1155.6,923.6 L1153.2,923.1 L1153,920.6 L1155.5,918.8Z" fill="#cf9c98" fill-opacity=".7"/><path d="M1181.4,992.5 L1176.4,996.7 L1170.6,995.1 L1171.4,990.1 L1176.3,989.1Z" fill="#cf9c98" fill-opacity=".7"/><path d="M1126.9,753.3 L1122.2,758.9 L1114.6,756.7 L1117.5,751.2 L1121.8,749.6Z" fill="#c6a28c" fill-opacity=".7"/><path d="M1161.5,769.3 L1155.7,773.5 L1149.6,773.4 L1150.4,765.9 L1155.9,762.2Z" fill="#c6a28c" fill-opacity=".7"/><path d="M1176.2,849.3 L1172.7,853.2 L1167,850.9 L1168.9,846.7 L1172.1,845.4Z" fill="#cf9c98" fill-opacity=".7"/><path d="M1091.9,811.9 L1086.6,818.3 L1077.9,816.1 L1077.5,808.5 L1086.2,805.8Z" fill="#c6a28c" fill-opacity=".7"/><path d="M1070.1,971.4 L1063.2,977.5 L1058.8,974.6 L1058.3,968.3 L1063.9,964.8Z" fill="#c6a28c" fill-opacity=".7"/><path d="M1157.8,963.2 L1155.6,965 L1152.5,965.5 L1151.7,961.1 L1155.3,959.7Z" fill="#cf9c98" fill-opacity=".7"/><path d="M1005.7,875.4 L1004,878.7 L999.8,876.7 L1000.9,874 L1003.8,870.8Z" fill="#cf9c98" fill-opacity=".7"/><path d="M990.8,978.5 L988.9,981.1 L985.7,979.9 L985.6,975.9 L988.7,975.7Z" fill="#c6a28c" fill-opacity=".7"/><path d="M1021,803.5 L1018.7,807.4 L1015.6,805.5 L1013.1,801.6 L1019.6,798.6Z" fill="#cf9c98" fill-opacity=".7"/><path d="M1196.6,753.6 L1190,758.7 L1182.7,757.5 L1184.9,751.1 L1189.7,749.8Z" fill="#cf9c98" fill-opacity=".7"/><path d="M1052.5,775.7 L1049.1,781.3 L1043.9,779.5 L1045.4,773.4 L1050.2,770.8Z" fill="#cf9c98" fill-opacity=".7"/><path d="M933,899.2 L927.9,903.1 L919.7,903.3 L918.1,894.4 L928,894.8Z" fill="#cf9c98" fill-opacity=".7"/><path d="M1130.5,886.7 L1128.3,889.5 L1122.6,889.3 L1124.3,883.9 L1128.3,881.6Z" fill="#c6a28c" fill-opacity=".7"/><path d="M1147.3,978.1 L1141.1,981.8 L1137.5,980.4 L1137.1,975.8 L1142,973.6Z" fill="#cf9c98" fill-opacity=".7"/><path d="M940,948.4 L936.2,952.4 L932.9,950.9 L932.5,946.1 L936.4,944.9Z" fill="#cf9c98" fill-opacity=".7"/><path d="M1176.7,972.9 L1174.8,976.3 L1167.5,977 L1169.2,970.6 L1174.8,966.1Z" fill="#cf9c98" fill-opacity=".7"/><path d="M1124.9,863.5 L1123.6,865.9 L1120.9,864.6 L1119.6,861.4 L1123.4,860.3Z" fill="#cf9c98" fill-opacity=".7"/><path d="M983.6,760.6 L981.7,767.1 L976.8,764 L977.5,758.3 L982.5,755.6Z" fill="#cf9c98" fill-opacity=".7"/><path d="M1017.5,907.1 L1010.3,913.1 L1001.2,912.1 L1003.3,903.1 L1009.4,900Z" fill="#cf9c98" fill-opacity=".7"/><path d="M944.2,997.3 L940.5,1002.5 L936,1001 L934.3,994 L940.5,991.1Z" fill="#c6a28c" fill-opacity=".7"/><path d="M1109.8,1011.4 L1105.8,1015.5 L1101,1013.3 L1101.9,1009.3 L1105.4,1009.1Z" fill="#c6a28c" fill-opacity=".7"/><path d="M1165.1,897 L1162.4,904.2 L1155.5,900 L1158,893.5 L1163.5,893.1Z" fill="#cf9c98" fill-opacity=".7"/><path d="M1144.3,926.7 L1142.8,930.5 L1138.8,928.3 L1138.8,925.7 L1142.8,923Z" fill="#cf9c98" fill-opacity=".7"/><path d="M1142.7,848.7 L1141.1,850.1 L1139,850 L1138.2,847.8 L1141.2,846.9Z" fill="#cf9c98" fill-opacity=".7"/><path d="M1188.2,969.6 L1186.1,972.7 L1183.1,970.5 L1183.3,967.7 L1185.9,967.3Z" fill="#cf9c98" fill-opacity=".7"/><path d="M1129.8,805.7 L1126.2,808.7 L1121.1,809.7 L1120.8,803.7 L1126.1,802.1Z" fill="#cf9c98" fill-opacity=".7"/><path d="M1170.6,1011.1 L1165.9,1016.9 L1159.3,1014.7 L1160.3,1009.1 L1165.5,1004.3Z" fill="#cf9c98" fill-opacity=".7"/><path d="M1143.2,808 L1140.3,811 L1134.9,810.8 L1136.6,804.8 L1140.9,805Z" fill="#c6a28c" fill-opacity=".7"/><path d="M1033.2,860.6 L1029.9,865.2 L1020.9,863.3 L1022.5,856.2 L1031,853Z" fill="#cf9c98" fill-opacity=".7"/><path d="M1174.7,923.6 L1172.5,927.6 L1165.4,926.9 L1166.3,921.5 L1173.2,919.2Z" fill="#c6a28c" fill-opacity=".7"/><path d="M1050.1,838 L1048.4,841.2 L1045.3,838.9 L1046.4,836.6 L1048.5,835.1Z" fill="#cf9c98" fill-opacity=".7"/><path d="M951.3,949.3 L947.2,956.2 L939.5,953.2 L939.2,945.4 L947.1,942.7Z" fill="#c6a28c" fill-opacity=".7"/><path d="M1161.5,894 L1156.9,902.3 L1150.9,897.3 L1151.1,891.1 L1157.3,888.3Z" fill="#cf9c98" fill-opacity=".7"/><path d="M1060.1,868.3 L1059.2,871.1 L1055.4,870.1 L1053.5,866.5 L1058.9,864.8Z" fill="#cf9c98" fill-opacity=".7"/><path d="M941.6,863.8 L937.1,868.3 L931.7,867.2 L933.5,860.4 L937,859.4Z" fill="#cf9c98" fill-opacity=".7"/><path d="M1076,846.6 L1075.4,847.8 L1072.7,847.9 L1072.8,845.8 L1075.7,843.7Z" fill="#c6a28c" fill-opacity=".7"/><path d="M1148.3,869 L1147.1,872.7 L1143.5,870.5 L1142.7,866.9 L1147.2,866.7Z" fill="#cf9c98" fill-opacity=".7"/><path d="M1195.1,997.8 L1191.9,1003 L1185.9,1000.4 L1187.4,996.1 L1191.6,994Z" fill="#cf9c98" fill-opacity=".7"/><path d="M1053.5,923.2 L1050.9,929.2 L1041.6,925.9 L1044.5,918 L1050.9,917.7Z" fill="#cf9c98" fill-opacity=".7"/><path d="M1005.1,988.7 L1001.8,993.8 L995.1,990.6 L997.9,984.5 L1002.5,982.8Z" fill="#c6a28c" fill-opacity=".7"/><path d="M1188,794.3 L1182,800.6 L1174,798.4 L1172.7,791.8 L1180.6,787.7Z" fill="#cf9c98" fill-opacity=".7"/><path d="M1110.9,824.4 L1103.7,833.2 L1094.5,829.9 L1096.9,820 L1103.1,816.4Z" fill="#c6a28c" fill-opacity=".7"/><path d="M1054.9,934.7 L1054.1,937.2 L1051.6,936.7 L1051.3,933 L1053.9,933Z" fill="#c6a28c" fill-opacity=".7"/><path d="M1172.2,757.7 L1168.1,760.8 L1161.9,761.1 L1162.2,755.1 L1168.5,752.9Z" fill="#c6a28c" fill-opacity=".7"/><path d="M1035.7,1007.6 L1034.3,1010.7 L1031.6,1009.1 L1032.2,1006 L1034.5,1006.1Z" fill="#c6a28c" fill-opacity=".7"/><path d="M1067.9,792.7 L1063.1,798 L1058.3,795.1 L1056.2,788.4 L1063.2,785.2Z" fill="#cf9c98" fill-opacity=".7"/><path d="M1131.7,843.4 L1130.3,847.9 L1126.3,845.7 L1125.3,841.1 L1130,839Z" fill="#c6a28c" fill-opacity=".7"/><path d="M1075.1,931 L1072.3,933.8 L1066,933.8 L1066.8,927.8 L1072,926.1Z" fill="#cf9c98" fill-opacity=".7"/><path d="M1011,856.8 L1006.5,860.1 L1000.6,860.2 L1001.6,855 L1006,852.5Z" fill="#cf9c98" fill-opacity=".7"/><path d="M1071.9,960.2 L1069.1,962.5 L1064.9,962.5 L1066.1,958.6 L1069.3,956.5Z" fill="#c6a28c" fill-opacity=".7"/><path d="M955,949.9 L949.7,955.1 L944.1,953.4 L943.9,947.9 L949.1,942.4Z" fill="#cf9c98" fill-opacity=".7"/><path d="M1006.1,924.2 L1003.9,928.7 L998.7,926.4 L998,920.2 L1004.6,916.9Z" fill="#cf9c98" fill-opacity=".7"/><path d="M1064.9,966.6 L1060.8,974.4 L1053.8,969.8 L1055.6,963.6 L1060.9,959.2Z" fill="#cf9c98" fill-opacity=".7"/><path d="M996.1,759.7 L991.7,762.2 L987.1,762.5 L987.6,758.1 L992.3,754.9Z" fill="#c6a28c" fill-opacity=".7"/><path d="M1198,876 L1206,867 L1218,857 L1226,853 L1235,850 L1240,844 L1245,832 L1254,829 L1267,825 L1276,820 L1283,812 L1283,797 L1288,782" fill="none" stroke="#a58ca8" stroke-width="1.4" stroke-opacity="0.6" stroke-linejoin="round"/><path d="M885,943 L884,927 L890,916 L901,911 L912,902 L925,894 L935,892 L947,897 L956,908" fill="none" stroke="#a58ca8" stroke-width="1.4" stroke-opacity="0.6" stroke-linejoin="round"/><path d="M988,782 L977,791 L962,793 L949,791 L939,783 L932,780 L918,780 L909,779" fill="none" stroke="#a58ca8" stroke-width="1.4" stroke-opacity="0.6" stroke-linejoin="round"/><path d="M1127,910 L1127,921 L1121,927 L1115,937 L1102,946 L1087,950 L1079,951 L1065,950 L1056,949 L1048,937 L1050,928" fill="none" stroke="#a58ca8" stroke-width="1.4" stroke-opacity="0.6" stroke-linejoin="round"/><path d="M899,993 L884,989 L871,980 L861,978 L855,973 L845,960 L838,951 L826,941 L825,930 L828,915 L837,910 L847,910 L859,915" fill="none" stroke="#a58ca8" stroke-width="1.4" stroke-opacity="0.6" stroke-linejoin="round"/><path d="M1154,934 L1166,929 L1170,917 L1173,906 L1174,894 L1178,882 L1189,875 L1193,863 L1202,851 L1215,846 L1229,842 L1240,834 L1243,826 L1254,819" fill="none" stroke="#a58ca8" stroke-width="1.4" stroke-opacity="0.6" stroke-linejoin="round"/><path d="M1119,828 L1107,829 L1098,823 L1091,812 L1093,801 L1090,793 L1088,785" fill="none" stroke="#a58ca8" stroke-width="1.4" stroke-opacity="0.6" stroke-linejoin="round"/><path d="M1032,967 L1028,977 L1023,983 L1007,984 L994,977 L991,962 L979,953 L970,955 L958,949 L943,949 L929,951" fill="none" stroke="#a58ca8" stroke-width="1.4" stroke-opacity="0.6" stroke-linejoin="round"/><path d="M1073,853 L1085,859 L1097,866 L1099,873 L1104,881 L1110,890 L1119,893 L1129,898 L1136,903" fill="none" stroke="#a58ca8" stroke-width="1.4" stroke-opacity="0.6" stroke-linejoin="round"/><path d="M886,739 L879,729 L870,725 L856,728 L848,728 L841,734 L829,736 L820,730 L808,730 L795,722 L789,709 L782,702 L771,696 L757,698" fill="none" stroke="#a58ca8" stroke-width="1.4" stroke-opacity="0.6" stroke-linejoin="round"/><path d="M1020,753 L1033,751 L1044,753 L1055,751 L1063,737 L1071,729 L1071,718" fill="none" stroke="#a58ca8" stroke-width="1.4" stroke-opacity="0.6" stroke-linejoin="round"/><path d="M1216,849 L1213,862 L1205,874 L1197,877 L1189,876 L1182,868 L1168,867 L1154,868" fill="none" stroke="#a58ca8" stroke-width="1.4" stroke-opacity="0.6" stroke-linejoin="round"/><path d="M1111,875 L1108,890 L1103,897 L1092,906 L1091,915 L1101,926 L1103,936 L1108,951 L1121,959 L1135,966 L1139,980" fill="none" stroke="#e48a62" stroke-width="2" stroke-opacity="0.75" stroke-linejoin="round"/><path d="M1116,979 L1101,979 L1092,979 L1081,980 L1066,978 L1054,979 L1045,984 L1031,980" fill="none" stroke="#e48a62" stroke-width="2" stroke-opacity="0.75" stroke-linejoin="round"/><path d="M1076,916 L1084,921 L1096,921 L1104,912 L1102,897 L1093,888 L1083,887 L1073,890 L1064,899 L1057,909 L1049,913 L1047,922 L1050,931 L1055,942 L1057,952" fill="none" stroke="#e48a62" stroke-width="2" stroke-opacity="0.75" stroke-linejoin="round"/><path d="M1218,869 L1219,859 L1216,850 L1211,835 L1210,827 L1202,821 L1189,814 L1174,817 L1164,828 L1154,831" fill="none" stroke="#e48a62" stroke-width="2" stroke-opacity="0.75" stroke-linejoin="round"/><path d="M1042,1017 L1040,1025 L1045,1034 L1052,1040 L1067,1039 L1074,1032 L1084,1030 L1092,1032 L1105,1034 L1110,1040 L1109,1048" fill="none" stroke="#e48a62" stroke-width="2" stroke-opacity="0.75" stroke-linejoin="round"/><path d="M1138,908 L1150,916 L1160,919 L1170,925 L1174,933 L1171,945 L1173,957 L1182,968 L1184,976 L1178,987 L1181,996 L1191,1002 L1204,1006 L1214,999 L1224,987" fill="none" stroke="#e48a62" stroke-width="2" stroke-opacity="0.75" stroke-linejoin="round"/><path d="M950,1020 L942,1030 L941,1039 L942,1055 L945,1067 L952,1075 L965,1080 L980,1080 L986,1086 L993,1098 L1007,1101 L1017,1107 L1031,1106" fill="none" stroke="#e48a62" stroke-width="2" stroke-opacity="0.75" stroke-linejoin="round"/><path d="M1024,869 L1031,859 L1037,853 L1038,845 L1038,832 L1038,822 L1031,812 L1020,810 L1013,815 L1011,828" fill="none" stroke="#df6a72" stroke-width="2.2" stroke-opacity="0.6" stroke-linejoin="round"/><path d="M1188,913 L1185,903 L1188,894 L1183,881 L1183,870 L1185,859 L1189,847 L1187,839 L1180,832 L1168,823 L1152,825 L1139,820 L1129,817 L1116,820 L1105,817" fill="none" stroke="#df6a72" stroke-width="2.2" stroke-opacity="0.6" stroke-linejoin="round"/><path d="M1131,837 L1118,833 L1108,837 L1096,844 L1087,844 L1075,846 L1065,848" fill="none" stroke="#df6a72" stroke-width="2.2" stroke-opacity="0.6" stroke-linejoin="round"/><g transform="translate(900,740) scale(0.26062)"><path d="M-10,-10 L260,-10 L220,60 L170,130 L220,200 L160,270 L200,340 L210,430 L180,520 L130,560 L120,660 L160,700 L200,680 L270,600 L320,650 L330,750 L300,850 L260,950 L240,1050 L-10,1050Z" fill="#b39094" /><path d="M500,560 L540,600 L560,640 L600,700 L660,760 L700,720 L740,760 L720,820 L760,880 L820,910 L900,920 L1000,900 L1075,880 L1151,870 L1151,1050 L560,1050 L520,960 L500,880 L500,760 L480,660Z" fill="#b39094" /><path d="M520,0 L500,100 L480,250 L440,350 L430,460 L430,560 L420,700 L400,800 L420,900 L460,1040" fill="none" stroke="#df6470" stroke-width="11.51" stroke-linejoin="round" stroke-linecap="round"/><path d="M360,0 L300,100 L250,180" fill="none" stroke="#df6470" stroke-width="9.59" stroke-linejoin="round" stroke-linecap="round"/><path d="M300,440 L350,440 L430,460" fill="none" stroke="#df6470" stroke-width="9.59" stroke-linejoin="round" stroke-linecap="round"/><path d="M180,600 L200,540 L240,520" fill="none" stroke="#df6470" stroke-width="9.59" stroke-linejoin="round" stroke-linecap="round"/><path d="M1075,0 L1100,20 L1151,40" fill="none" stroke="#df6470" stroke-width="7.67" stroke-linejoin="round" stroke-linecap="round"/><path d="M220,200 L230,320 L240,450 L310,520 L340,700 L350,900 L300,1040" fill="none" stroke="#e48a62" stroke-width="7.67" stroke-linejoin="round" stroke-linecap="round"/><path d="M600,0 L650,150 L680,300 L690,500 L700,600" fill="none" stroke="#e48a62" stroke-width="7.67" stroke-linejoin="round" stroke-linecap="round"/><path d="M840,0 L850,150 L880,300 L950,450 L1000,560 L1151,620" fill="none" stroke="#e48a62" stroke-width="7.67" stroke-linejoin="round" stroke-linecap="round"/><path d="M560,600 L760,620 L900,700 L1000,720 L1075,700" fill="none" stroke="#e48a62" stroke-width="7.67" stroke-linejoin="round" stroke-linecap="round"/><path d="M330,60 L450,40 L560,60 L700,40 L900,60 L1075,40" fill="none" stroke="#e48a62" stroke-width="7.67" stroke-linejoin="round" stroke-linecap="round"/><path d="M800,880 L900,820 L1000,760" fill="none" stroke="#e48a62" stroke-width="7.67" stroke-linejoin="round" stroke-linecap="round"/><path d="M300,300 L400,280 L500,300 L600,330" fill="none" stroke="#e48a62" stroke-width="7.67" stroke-linejoin="round" stroke-linecap="round"/><path d="M640,0 L750,80 L900,170 L1000,230 L1151,350" fill="none" stroke="#7a5a5e" stroke-width="5.76" stroke-linejoin="round" stroke-linecap="round"/><path d="M1000,280 L1000,450 L950,550 L900,700 L960,860" fill="none" stroke="#7a5a5e" stroke-width="5.76" stroke-linejoin="round" stroke-linecap="round"/><path d="M480,540 L490,700 L490,900 L470,1040" fill="none" stroke="#7a5a5e" stroke-width="5.76" stroke-linejoin="round" stroke-linecap="round"/><path d="M120,0 L60,300 L70,600 L100,800 L90,1040" fill="none" stroke="#a58ca8" stroke-width="3.84" stroke-linejoin="round" stroke-linecap="round"/><path d="M0,900 L150,840 L250,770 L350,800" fill="none" stroke="#a58ca8" stroke-width="3.84" stroke-linejoin="round" stroke-linecap="round"/><path d="M560,620 L600,800 L640,960 L700,1040" fill="none" stroke="#a58ca8" stroke-width="3.84" stroke-linejoin="round" stroke-linecap="round"/></g></g><g clip-path="url(#cl11)"><rect x="1200" y="740" width="281" height="272" fill="#b9907f"/><rect x="1200" y="740" width="281" height="272" fill="url(#prur)"/><g transform="translate(1200,740) scale(0.26069)"><path d="M0,0 L39,-10.6 L92.8,6.8 L141.9,-6.3 L209.7,-10.3 L250,0 L249.2,58.7 L239.5,88.3 L230.6,158.5 L240,200 L244.2,238.8 L240.3,310.6 L260,350 L247.6,413.7 L223.2,458.1 L200,500 L207.7,546.7 L198.4,588 L203.1,643.9 L220,700 L276.8,699.6 L341.5,714 L400,720 L456.1,728.5 L489.4,705.9 L560.4,694.1 L600,700 L636.4,717.8 L696.2,708 L737.6,742.8 L800,740 L850.9,700.6 L905.5,680.8 L946.1,651.2 L972.1,619.7 L1024.6,601.9 L1078,560 L1075.6,604.5 L1089.1,654 L1067.6,724 L1065.7,762.9 L1068.7,839.8 L1078,880 L1039.5,891.9 L979.7,878.5 L922.3,882.1 L859.6,894.2 L808.3,882.5 L778,881.7 L729,884.2 L665.8,880.7 L610.6,874.6 L576.1,900.8 L505.8,893.9 L460.6,896 L402.6,882.3 L347.9,896.3 L317.5,882.2 L250,893.4 L206.4,887.8 L145.7,897.2 L110.7,894.5 L55,910 L0,900 L5.7,841.4 L-3.3,802.4 L11.7,756.8 L-12.3,708.2 L6.3,660.9 L-8,611.8 L10,538.9 L5.9,495 L9.9,455 L13.2,408.7 L-13.1,337.3 L-4.9,288.4 L-12.6,244.9 L-8.2,213 L13.1,143 L12.5,103.3 L7.9,56.3Z" fill="#d49a97" /><path d="M0,0 L39,-10.6 L92.8,6.8 L141.9,-6.3 L209.7,-10.3 L250,0 L249.2,58.7 L239.5,88.3 L230.6,158.5 L240,200 L244.2,238.8 L240.3,310.6 L260,350 L247.6,413.7 L223.2,458.1 L200,500 L207.7,546.7 L198.4,588 L203.1,643.9 L220,700 L276.8,699.6 L341.5,714 L400,720 L456.1,728.5 L489.4,705.9 L560.4,694.1 L600,700 L636.4,717.8 L696.2,708 L737.6,742.8 L800,740 L850.9,700.6 L905.5,680.8 L946.1,651.2 L972.1,619.7 L1024.6,601.9 L1078,560 L1075.6,604.5 L1089.1,654 L1067.6,724 L1065.7,762.9 L1068.7,839.8 L1078,880 L1039.5,891.9 L979.7,878.5 L922.3,882.1 L859.6,894.2 L808.3,882.5 L778,881.7 L729,884.2 L665.8,880.7 L610.6,874.6 L576.1,900.8 L505.8,893.9 L460.6,896 L402.6,882.3 L347.9,896.3 L317.5,882.2 L250,893.4 L206.4,887.8 L145.7,897.2 L110.7,894.5 L55,910 L0,900 L5.7,841.4 L-3.3,802.4 L11.7,756.8 L-12.3,708.2 L6.3,660.9 L-8,611.8 L10,538.9 L5.9,495 L9.9,455 L13.2,408.7 L-13.1,337.3 L-4.9,288.4 L-12.6,244.9 L-8.2,213 L13.1,143 L12.5,103.3 L7.9,56.3Z" fill="url(#purb)" /><path d="M0,0 L39,-10.6 L92.8,6.8 L141.9,-6.3 L209.7,-10.3 L250,0 L249.2,58.7 L239.5,88.3 L230.6,158.5 L240,200 L244.2,238.8 L240.3,310.6 L260,350 L247.6,413.7 L223.2,458.1 L200,500 L207.7,546.7 L198.4,588 L203.1,643.9 L220,700 L276.8,699.6 L341.5,714 L400,720 L456.1,728.5 L489.4,705.9 L560.4,694.1 L600,700 L636.4,717.8 L696.2,708 L737.6,742.8 L800,740 L850.9,700.6 L905.5,680.8 L946.1,651.2 L972.1,619.7 L1024.6,601.9 L1078,560 L1075.6,604.5 L1089.1,654 L1067.6,724 L1065.7,762.9 L1068.7,839.8 L1078,880 L1039.5,891.9 L979.7,878.5 L922.3,882.1 L859.6,894.2 L808.3,882.5 L778,881.7 L729,884.2 L665.8,880.7 L610.6,874.6 L576.1,900.8 L505.8,893.9 L460.6,896 L402.6,882.3 L347.9,896.3 L317.5,882.2 L250,893.4 L206.4,887.8 L145.7,897.2 L110.7,894.5 L55,910 L0,900 L5.7,841.4 L-3.3,802.4 L11.7,756.8 L-12.3,708.2 L6.3,660.9 L-8,611.8 L10,538.9 L5.9,495 L9.9,455 L13.2,408.7 L-13.1,337.3 L-4.9,288.4 L-12.6,244.9 L-8.2,213 L13.1,143 L12.5,103.3 L7.9,56.3Z" fill="url(#purb2)" /><path d="M400,600 L450.2,587.5 L520,580 L539.8,620.3 L560,680 L505.7,697.2 L460,700 L380,680Z" fill="#b9907f" /><path d="M400,600 L450.2,587.5 L520,580 L539.8,620.3 L560,680 L505.7,697.2 L460,700 L380,680Z" fill="url(#prurbT)" /></g><path d="M1438.9,797.9 L1434.6,802.4 L1428.5,801.5 L1428.3,793.5 L1434.3,792.3Z" fill="#cf9c98" fill-opacity=".7"/><path d="M1267.6,934.8 L1263.7,942.1 L1258,938.7 L1257.3,929.9 L1264.4,930.7Z" fill="#cf9c98" fill-opacity=".7"/><path d="M1333.7,798.6 L1329.9,800.4 L1326.4,801.2 L1325.8,796.4 L1330.5,795.5Z" fill="#cf9c98" fill-opacity=".7"/><path d="M1447.1,769.2 L1442.8,772.9 L1434.8,773 L1436.6,765.9 L1443.1,764.7Z" fill="#cf9c98" fill-opacity=".7"/><path d="M1397.2,985.7 L1394.8,988.3 L1390.6,987.4 L1390.6,983.3 L1394.4,982Z" fill="#c6a28c" fill-opacity=".7"/><path d="M1242.5,897.2 L1241.3,901.4 L1238.6,899.3 L1236.7,895.4 L1241.6,893.7Z" fill="#c6a28c" fill-opacity=".7"/><path d="M1338.4,1007 L1336.3,1009.6 L1330.9,1008.6 L1331.2,1004.1 L1336.5,1004.6Z" fill="#cf9c98" fill-opacity=".7"/><path d="M1466.9,852.6 L1464.5,857.4 L1459.4,856.4 L1458,849 L1464.5,847.5Z" fill="#cf9c98" fill-opacity=".7"/><path d="M1362.4,845.7 L1357,848.9 L1350,848.8 L1350.8,842.5 L1356.4,839.2Z" fill="#cf9c98" fill-opacity=".7"/><path d="M1261.7,871.7 L1256,878 L1248.6,874.6 L1250.8,868.4 L1255.6,868Z" fill="#cf9c98" fill-opacity=".7"/><path d="M1447.8,906.9 L1444.1,911.6 L1438.2,909.7 L1438.9,904.9 L1443.3,901Z" fill="#cf9c98" fill-opacity=".7"/><path d="M1338.4,818.7 L1336.1,825 L1327.9,820.7 L1329.6,816.2 L1336.3,814.4Z" fill="#c6a28c" fill-opacity=".7"/><path d="M1352.9,948.9 L1346.9,955.3 L1338.9,953.2 L1340.8,944.6 L1347.5,943.6Z" fill="#cf9c98" fill-opacity=".7"/><path d="M1327.3,995 L1323.7,998.6 L1319.9,996.5 L1320.7,993 L1324.1,992.2Z" fill="#cf9c98" fill-opacity=".7"/><path d="M1327.9,965.8 L1322.7,971.4 L1315.2,968.9 L1315.3,961.9 L1322.9,957.4Z" fill="#cf9c98" fill-opacity=".7"/><path d="M1273.6,741.8 L1271.9,743.3 L1270.1,743 L1270,740.9 L1271.9,740.3Z" fill="#cf9c98" fill-opacity=".7"/><path d="M1441.7,872.6 L1438.6,877 L1435.3,875.1 L1435.8,871.2 L1438.7,868.2Z" fill="#cf9c98" fill-opacity=".7"/><path d="M1412.1,823.8 L1405.4,827.5 L1399.3,826.7 L1401,819.5 L1406.4,816.3Z" fill="#c6a28c" fill-opacity=".7"/><path d="M1367.7,879 L1363.3,887.8 L1355.6,884.6 L1354.5,874.7 L1363.7,874.4Z" fill="#cf9c98" fill-opacity=".7"/><path d="M1223.2,905.8 L1222.5,907.8 L1219.4,908.3 L1218.4,903.6 L1222.1,904Z" fill="#c6a28c" fill-opacity=".7"/><path d="M1363.7,899.5 L1361.8,901.8 L1359.7,900.8 L1359.6,898.6 L1362.1,897.6Z" fill="#cf9c98" fill-opacity=".7"/><path d="M1367.9,792.9 L1364.9,796.4 L1357.3,796.6 L1358.1,788.1 L1364.6,785.8Z" fill="#cf9c98" fill-opacity=".7"/><path d="M1453.6,1003.3 L1449.2,1006.8 L1444.8,1005.7 L1445.2,1001.7 L1449.8,998.8Z" fill="#c6a28c" fill-opacity=".7"/><path d="M1268.9,934.1 L1265.6,940 L1257.5,938.2 L1261.1,931.3 L1265.9,926.6Z" fill="#c6a28c" fill-opacity=".7"/><path d="M1438.8,789.3 L1437.2,792.8 L1432.8,791.5 L1432.8,788.1 L1437,786Z" fill="#cf9c98" fill-opacity=".7"/><path d="M1269.9,970.3 L1269.4,972.5 L1266.6,972.2 L1266.2,969 L1269.1,967.7Z" fill="#cf9c98" fill-opacity=".7"/><path d="M1277.1,1011.9 L1274.1,1015.3 L1269.3,1013.6 L1269.5,1010.1 L1274.7,1007.2Z" fill="#c6a28c" fill-opacity=".7"/><path d="M1247.7,777 L1243.4,781.6 L1236.9,780.5 L1239.7,773.7 L1244.2,773.2Z" fill="#cf9c98" fill-opacity=".7"/><path d="M1417.7,746.9 L1416,751.7 L1410.4,749.9 L1410.3,745 L1415.7,741.6Z" fill="#cf9c98" fill-opacity=".7"/><path d="M1238.8,884.9 L1236,891.6 L1231.6,888.1 L1231,882.7 L1237.4,881Z" fill="#cf9c98" fill-opacity=".7"/><path d="M1382.2,752 L1380.5,756.4 L1375.9,754.2 L1375.9,749.2 L1380,748.9Z" fill="#c6a28c" fill-opacity=".7"/><path d="M1316.7,840.3 L1312.3,844.1 L1306.5,844.5 L1306.1,837 L1312,835.9Z" fill="#c6a28c" fill-opacity=".7"/><path d="M1382.7,972.3 L1381.6,974.9 L1378.4,973.8 L1377.6,970.3 L1381.9,970.4Z" fill="#c6a28c" fill-opacity=".7"/><path d="M1349,834.2 L1343.4,840 L1337.9,836.5 L1338.4,831.7 L1343.9,828.1Z" fill="#cf9c98" fill-opacity=".7"/><path d="M1481.7,824.3 L1478.1,827.6 L1469.5,827.4 L1470.5,822.3 L1477.2,817.1Z" fill="#c6a28c" fill-opacity=".7"/><path d="M1415.7,906.3 L1414.3,912.2 L1410,909.4 L1410,904.3 L1414.2,902.5Z" fill="#cf9c98" fill-opacity=".7"/><path d="M1473.4,959.1 L1467.6,964.8 L1461.9,964.1 L1460.1,957 L1467.5,952.5Z" fill="#cf9c98" fill-opacity=".7"/><path d="M1432.9,746.9 L1429.6,751.7 L1423.6,750 L1422.6,743.7 L1430.2,740.7Z" fill="#c6a28c" fill-opacity=".7"/><path d="M1426.4,741 L1424.3,743.7 L1421.3,741.9 L1421.8,739.8 L1424.2,739.4Z" fill="#cf9c98" fill-opacity=".7"/><path d="M1345.4,896.7 L1340.4,900.1 L1333.7,900.1 L1334.6,893.1 L1340.4,890Z" fill="#c6a28c" fill-opacity=".7"/><path d="M1239.9,773.4 L1234.2,779.3 L1226.8,778.1 L1227.5,768.1 L1234.9,769.5Z" fill="#c6a28c" fill-opacity=".7"/><path d="M1362,873.6 L1360.5,876.3 L1356.5,875.8 L1358,871.7 L1360.5,870.6Z" fill="#cf9c98" fill-opacity=".7"/><path d="M1284.3,757.5 L1281.3,761.7 L1274,761.6 L1274.4,753.8 L1280.6,749.6Z" fill="#cf9c98" fill-opacity=".7"/><path d="M1331,773.1 L1326.7,780 L1321.4,775.6 L1322.2,770.4 L1326.4,769.3Z" fill="#cf9c98" fill-opacity=".7"/><path d="M1411.2,802.2 L1405.8,808.2 L1397,805.5 L1397.9,797.7 L1405.8,795.9Z" fill="#c6a28c" fill-opacity=".7"/><path d="M1302.3,990.3 L1296.8,997 L1290.7,994.8 L1291.9,986 L1296.1,986.9Z" fill="#c6a28c" fill-opacity=".7"/><path d="M1218.5,906.8 L1211.1,910.6 L1204.7,911.5 L1205.6,904.1 L1212.2,902.5Z" fill="#cf9c98" fill-opacity=".7"/><path d="M1475.6,780.4 L1472.9,784.6 L1469.2,782.1 L1467.8,777.4 L1473,777.5Z" fill="#cf9c98" fill-opacity=".7"/><path d="M1349.9,834.5 L1345.2,840.2 L1341.3,837.2 L1338,831 L1345.3,831.3Z" fill="#cf9c98" fill-opacity=".7"/><path d="M1372.8,757.6 L1370.6,759.6 L1366.2,758.9 L1365.7,755.1 L1370,753.6Z" fill="#c6a28c" fill-opacity=".7"/><path d="M1419.6,825.3 L1417.3,828.6 L1414.5,826.4 L1414.2,823.4 L1417.8,823.1Z" fill="#cf9c98" fill-opacity=".7"/><path d="M1309.1,987.5 L1304.4,992.7 L1299.1,990 L1300.8,985.4 L1305.3,983.8Z" fill="#c6a28c" fill-opacity=".7"/><path d="M1377.2,997.5 L1374.9,1002.3 L1368.1,1000.5 L1369.6,994.3 L1375.2,992.6Z" fill="#c6a28c" fill-opacity=".7"/><path d="M1418.8,882.9 L1416.5,887.2 L1412.5,884.4 L1411.7,880 L1416.7,880.4Z" fill="#c6a28c" fill-opacity=".7"/><path d="M1377.5,868.8 L1376.1,871.3 L1370.4,871.8 L1369.9,866.5 L1375.8,864.5Z" fill="#c6a28c" fill-opacity=".7"/><path d="M1218.7,752.5 L1217.6,754.8 L1215.3,753.4 L1215.6,751.4 L1217.4,749.6Z" fill="#cf9c98" fill-opacity=".7"/><path d="M1461.7,858.1 L1459.4,860.8 L1456.3,860.9 L1456.5,855.5 L1459.5,856.2Z" fill="#cf9c98" fill-opacity=".7"/><path d="M1453.9,742.2 L1452.1,743.4 L1449,743.5 L1449.3,741 L1452.2,739.5Z" fill="#cf9c98" fill-opacity=".7"/><path d="M1218,797 L1203,801 L1196,807 L1190,818 L1183,827 L1170,828 L1160,833 L1153,839 L1145,843 L1137,844 L1129,850 L1122,855 L1121,870 L1117,881 L1114,891" fill="none" stroke="#a58ca8" stroke-width="1.4" stroke-opacity="0.6" stroke-linejoin="round"/><path d="M1204,980 L1214,980 L1222,984 L1227,990 L1234,998 L1239,1008 L1252,1014 L1264,1007 L1272,1001 L1281,991 L1284,983 L1283,969" fill="none" stroke="#a58ca8" stroke-width="1.4" stroke-opacity="0.6" stroke-linejoin="round"/><path d="M1324,1029 L1336,1019 L1340,1011 L1345,1002 L1349,994 L1352,986 L1364,980 L1371,972 L1383,966" fill="none" stroke="#a58ca8" stroke-width="1.4" stroke-opacity="0.6" stroke-linejoin="round"/><path d="M1355,992 L1347,1001 L1335,1007 L1330,1015 L1320,1027 L1315,1040 L1302,1049 L1292,1051 L1284,1057" fill="none" stroke="#a58ca8" stroke-width="1.4" stroke-opacity="0.6" stroke-linejoin="round"/><path d="M1199,744 L1194,731 L1186,721 L1175,716 L1161,711 L1152,713 L1140,724 L1134,730 L1124,730 L1116,734 L1104,737 L1093,744 L1091,752" fill="none" stroke="#a58ca8" stroke-width="1.4" stroke-opacity="0.6" stroke-linejoin="round"/><path d="M1224,979 L1236,985 L1248,981 L1259,977 L1268,974 L1283,977 L1292,985 L1297,995 L1312,1000 L1322,1005 L1329,1014 L1332,1027 L1340,1040 L1337,1050 L1332,1065" fill="none" stroke="#a58ca8" stroke-width="1.4" stroke-opacity="0.6" stroke-linejoin="round"/><path d="M1243,848 L1250,840 L1252,826 L1249,814 L1248,799 L1247,789 L1253,779 L1254,766 L1261,762" fill="none" stroke="#a58ca8" stroke-width="1.4" stroke-opacity="0.6" stroke-linejoin="round"/><path d="M1200,966 L1189,975 L1180,975 L1172,982 L1162,987 L1150,996 L1145,1005 L1136,1011 L1124,1008 L1117,1004 L1106,998 L1100,989" fill="none" stroke="#a58ca8" stroke-width="1.4" stroke-opacity="0.6" stroke-linejoin="round"/><path d="M1261,863 L1251,852 L1253,841 L1249,830 L1243,822 L1237,810 L1236,797 L1232,789 L1226,783" fill="none" stroke="#a58ca8" stroke-width="1.4" stroke-opacity="0.6" stroke-linejoin="round"/><path d="M1308,981 L1299,973 L1289,962 L1285,955 L1275,952 L1268,946 L1265,932 L1256,924 L1250,911 L1255,901 L1259,891 L1267,883" fill="none" stroke="#a58ca8" stroke-width="1.4" stroke-opacity="0.6" stroke-linejoin="round"/><path d="M1317,868 L1311,875 L1303,885 L1294,891 L1287,902 L1273,903 L1263,910 L1260,920 L1256,934" fill="none" stroke="#a58ca8" stroke-width="1.4" stroke-opacity="0.6" stroke-linejoin="round"/><path d="M1290,939 L1280,936 L1266,941 L1258,953 L1253,961 L1244,963 L1237,960 L1234,951 L1222,942 L1214,930 L1206,923 L1203,915 L1202,906" fill="none" stroke="#a58ca8" stroke-width="1.4" stroke-opacity="0.6" stroke-linejoin="round"/><path d="M1221,805 L1233,801 L1242,799 L1249,793 L1260,786 L1266,771 L1269,759 L1273,748 L1275,734 L1280,726 L1283,717 L1282,704 L1280,692" fill="none" stroke="#e48a62" stroke-width="2" stroke-opacity="0.75" stroke-linejoin="round"/><path d="M1422,773 L1414,778 L1409,787 L1407,797 L1408,810 L1414,818 L1412,828 L1420,837 L1425,850 L1435,858 L1443,868" fill="none" stroke="#e48a62" stroke-width="2" stroke-opacity="0.75" stroke-linejoin="round"/><path d="M1294,902 L1301,896 L1309,895 L1321,888 L1329,879 L1337,869 L1353,869 L1362,864 L1367,851 L1370,838 L1380,826" fill="none" stroke="#e48a62" stroke-width="2" stroke-opacity="0.75" stroke-linejoin="round"/><path d="M1368,847 L1367,832 L1364,820 L1356,811 L1354,801 L1350,786 L1342,778 L1341,763" fill="none" stroke="#e48a62" stroke-width="2" stroke-opacity="0.75" stroke-linejoin="round"/><path d="M1495,898 L1497,885 L1498,874 L1506,865 L1510,856 L1518,845 L1520,830 L1531,824 L1540,817 L1550,810 L1555,797 L1564,793" fill="none" stroke="#e48a62" stroke-width="2" stroke-opacity="0.75" stroke-linejoin="round"/><path d="M1493,736 L1486,745 L1474,753 L1465,756 L1459,766 L1461,778 L1454,791 L1451,804 L1445,817" fill="none" stroke="#e48a62" stroke-width="2" stroke-opacity="0.75" stroke-linejoin="round"/><path d="M1431,730 L1420,731 L1410,742 L1399,750 L1390,759 L1382,769 L1383,784 L1394,794 L1406,798 L1416,793 L1427,794 L1442,787" fill="none" stroke="#e48a62" stroke-width="2" stroke-opacity="0.75" stroke-linejoin="round"/><path d="M1182,885 L1172,885 L1157,882 L1146,875 L1138,866 L1123,864 L1115,863 L1099,865 L1090,869" fill="none" stroke="#df6a72" stroke-width="2.2" stroke-opacity="0.6" stroke-linejoin="round"/><path d="M1427,967 L1413,971 L1404,967 L1394,957 L1392,945 L1399,932 L1407,920 L1419,916 L1429,912 L1437,906" fill="none" stroke="#df6a72" stroke-width="2.2" stroke-opacity="0.6" stroke-linejoin="round"/><path d="M1271,933 L1261,931 L1250,926 L1242,922 L1230,920 L1223,911 L1222,897 L1216,890 L1216,880 L1220,870 L1219,860 L1221,845" fill="none" stroke="#df6a72" stroke-width="2.2" stroke-opacity="0.6" stroke-linejoin="round"/><g transform="translate(1200,740) scale(0.26069)"><path d="M-10,880 L100,880 L170,850 L250,820 L400,820 L520,850 L520,1050 L-10,1050Z" fill="#b39094" /><path d="M100,0 L150,100 L160,200 L190,310 L250,350 L350,420 L430,500 L500,560 L600,620 L700,660 L800,690 L850,700" fill="none" stroke="#df6470" stroke-width="11.51" stroke-linejoin="round" stroke-linecap="round"/><path d="M290,60 L330,170 L400,300 L450,400 L550,460 L700,520 L800,540 L900,520 L1000,460 L1078,410" fill="none" stroke="#df6470" stroke-width="11.51" stroke-linejoin="round" stroke-linecap="round"/><path d="M0,310 L60,330 L150,360 L300,420 L400,520 L500,600 L600,720 L700,850" fill="none" stroke="#7a5a5e" stroke-width="5.75" stroke-linejoin="round" stroke-linecap="round"/><path d="M0,650 L100,640 L200,660 L300,640 L400,600 L520,580" fill="none" stroke="#e48a62" stroke-width="7.67" stroke-linejoin="round" stroke-linecap="round"/><path d="M380,210 L500,150 L550,150 L680,100 L750,50" fill="none" stroke="#e48a62" stroke-width="7.67" stroke-linejoin="round" stroke-linecap="round"/><path d="M550,150 L520,300 L480,400 L380,480" fill="none" stroke="#e48a62" stroke-width="7.67" stroke-linejoin="round" stroke-linecap="round"/><path d="M900,0 L900,120 L850,250 L870,350 L950,420 L1000,440" fill="none" stroke="#e48a62" stroke-width="7.67" stroke-linejoin="round" stroke-linecap="round"/><path d="M700,0 L720,80 L800,120 L900,90" fill="none" stroke="#e48a62" stroke-width="7.67" stroke-linejoin="round" stroke-linecap="round"/><path d="M440,400 L600,380 L700,320 L800,280 L850,200" fill="none" stroke="#e48a62" stroke-width="7.67" stroke-linejoin="round" stroke-linecap="round"/><path d="M0,20 L80,20 L100,80 L80,200 L60,400 L80,600 L130,700" fill="none" stroke="#e48a62" stroke-width="7.67" stroke-linejoin="round" stroke-linecap="round"/><path d="M600,700 L700,680 L800,700 L900,650 L1000,560 L1078,520" fill="none" stroke="#e48a62" stroke-width="7.67" stroke-linejoin="round" stroke-linecap="round"/><path d="M300,100 L400,150 L450,250 L600,280 L700,250" fill="none" stroke="#a58ca8" stroke-width="5.75" stroke-linejoin="round" stroke-linecap="round"/></g></g><defs><clipPath id="cl0"><rect x="300" y="199" width="300" height="271"/></clipPath><clipPath id="cl1"><rect x="600" y="199" width="300" height="271"/></clipPath><clipPath id="cl2"><rect x="900" y="199" width="300" height="271"/></clipPath><clipPath id="cl3"><rect x="1200" y="199" width="281" height="271"/></clipPath><clipPath id="cl4"><rect x="300" y="470" width="300" height="271"/></clipPath><clipPath id="cl5"><rect x="600" y="470" width="300" height="271"/></clipPath><clipPath id="cl6"><rect x="900" y="470" width="300" height="271"/></clipPath><clipPath id="cl7"><rect x="1200" y="470" width="281" height="271"/></clipPath><clipPath id="cl8"><rect x="300" y="740" width="300" height="272"/></clipPath><clipPath id="cl9"><rect x="600" y="740" width="300" height="272"/></clipPath><clipPath id="cl10"><rect x="900" y="740" width="300" height="272"/></clipPath><clipPath id="cl11"><rect x="1200" y="740" width="281" height="272"/></clipPath></defs><g fill="none" stroke="#9a80b4" stroke-width="1.2" stroke-dasharray="4 3" opacity=".8"><path d="M329,376 L409,355 L435,368 L467,386 L498,405"/><path d="M409,357 L425,386 L446,420 L467,449 L477,470 L486,480"/><path d="M315,490 L340,486 L360,479"/><path d="M392,622 L430,628 L486,630"/><path d="M871,860 L890,800 L915,770 L950,745"/><path d="M834,1011 L880,980 L940,950 L970,940"/><path d="M1080,900 L1110,930 L1130,960 L1160,1011"/></g><g font-family="Liberation Sans" fill="#6a3a3e" stroke="#e2a8a8" stroke-width="2.5" paint-order="stroke" stroke-opacity=".5" stroke-linejoin="round"><text x="508.5" y="300.6" font-size="15" textLength="43.5" lengthAdjust="spacingAndGlyphs">長浜市</text><text x="301.3" y="430.9" font-size="15" textLength="43.5" lengthAdjust="spacingAndGlyphs">高島市</text><text x="505.9" y="467.4" font-size="15" textLength="43.5" lengthAdjust="spacingAndGlyphs">米原市</text><text x="727.7" y="296.0" font-size="11" textLength="41.2" lengthAdjust="spacingAndGlyphs">揖斐川町</text><text x="815.0" y="303.2" font-size="15" textLength="43.5" lengthAdjust="spacingAndGlyphs">本巣市</text><text x="736.8" y="341.1" font-size="11" textLength="30.9" lengthAdjust="spacingAndGlyphs">池田町</text><text x="825.4" y="345.0" font-size="11" textLength="30.9" lengthAdjust="spacingAndGlyphs">北方町</text><text x="764.2" y="365.8" font-size="11" textLength="30.9" lengthAdjust="spacingAndGlyphs">神戸町</text><text x="825.4" y="393.1" font-size="15" textLength="43.5" lengthAdjust="spacingAndGlyphs">瑞穂市</text><text x="700.3" y="410.6" font-size="11" textLength="30.9" lengthAdjust="spacingAndGlyphs">垂井町</text><text x="766.8" y="416.5" font-size="15" textLength="43.5" lengthAdjust="spacingAndGlyphs">大垣市</text><text x="646.9" y="417.9" font-size="11" textLength="41.2" lengthAdjust="spacingAndGlyphs">関ヶ原町</text><text x="834.6" y="463.4" font-size="15" textLength="43.5" lengthAdjust="spacingAndGlyphs">羽島市</text><text x="888.0" y="412.7" font-size="11" textLength="30.9" lengthAdjust="spacingAndGlyphs">笠松町</text><text x="726.4" y="474.0" font-size="11" textLength="30.9" lengthAdjust="spacingAndGlyphs">養老町</text><text x="997.7" y="241.9" font-size="15" textLength="43.5" lengthAdjust="spacingAndGlyphs">美濃市</text><text x="900.0" y="278.4" font-size="15" textLength="43.5" lengthAdjust="spacingAndGlyphs">山県市</text><text x="1014.7" y="290.1" font-size="15" textLength="29.0" lengthAdjust="spacingAndGlyphs">関市</text><text x="1057.7" y="298.1" font-size="11" textLength="30.9" lengthAdjust="spacingAndGlyphs">富加町</text><text x="1130.6" y="296.8" font-size="11" textLength="30.9" lengthAdjust="spacingAndGlyphs">川辺町</text><text x="1172.3" y="242.0" font-size="11" textLength="30.9" lengthAdjust="spacingAndGlyphs">七宗町</text><text x="1184.1" y="307.2" font-size="11" textLength="41.2" lengthAdjust="spacingAndGlyphs">八百津町</text><text x="1060.3" y="352.8" font-size="11" textLength="30.9" lengthAdjust="spacingAndGlyphs">坂祝町</text><text x="1121.5" y="359.2" font-size="15" textLength="43.5" lengthAdjust="spacingAndGlyphs">可児市</text><text x="1182.8" y="351.5" font-size="11" textLength="30.9" lengthAdjust="spacingAndGlyphs">御嵩町</text><text x="879.2" y="361.8" font-size="15" textLength="43.5" lengthAdjust="spacingAndGlyphs">岐阜市</text><text x="944.3" y="385.3" font-size="15" textLength="58.0" lengthAdjust="spacingAndGlyphs">各務原市</text><text x="903.9" y="391.9" font-size="11" textLength="30.9" lengthAdjust="spacingAndGlyphs">岐南町</text><text x="1004.2" y="415.3" font-size="11" textLength="30.9" lengthAdjust="spacingAndGlyphs">扶桑町</text><text x="1060.3" y="423.0" font-size="15" textLength="43.5" lengthAdjust="spacingAndGlyphs">犬山市</text><text x="965.2" y="438.7" font-size="15" textLength="43.5" lengthAdjust="spacingAndGlyphs">江南市</text><text x="1171.0" y="449.1" font-size="15" textLength="58.0" lengthAdjust="spacingAndGlyphs">多治見市</text><text x="918.2" y="476.5" font-size="15" textLength="43.5" lengthAdjust="spacingAndGlyphs">一宮市</text><text x="1019.9" y="475.2" font-size="15" textLength="43.5" lengthAdjust="spacingAndGlyphs">小牧市</text><text x="1465.9" y="299.3" font-size="15" textLength="58.0" lengthAdjust="spacingAndGlyphs">中津川市</text><text x="1402.0" y="335.8" font-size="15" textLength="43.5" lengthAdjust="spacingAndGlyphs">恵那市</text><text x="1275.6" y="421.8" font-size="15" textLength="43.5" lengthAdjust="spacingAndGlyphs">瑞浪市</text><text x="1228.7" y="204.2" font-size="11" textLength="30.9" lengthAdjust="spacingAndGlyphs">七宗町</text><text x="480.4" y="506.3" font-size="15" textLength="43.5" lengthAdjust="spacingAndGlyphs">彦根市</text><text x="538.8" y="562.2" font-size="11" textLength="30.9" lengthAdjust="spacingAndGlyphs">多賀町</text><text x="466.1" y="579.1" font-size="11" textLength="30.9" lengthAdjust="spacingAndGlyphs">豊郷町</text><text x="489.5" y="607.6" font-size="11" textLength="30.9" lengthAdjust="spacingAndGlyphs">愛荘町</text><text x="337.6" y="650.4" font-size="15" textLength="72.5" lengthAdjust="spacingAndGlyphs">近江八幡市</text><text x="432.4" y="664.6" font-size="15" textLength="58.0" lengthAdjust="spacingAndGlyphs">東近江市</text><text x="374.0" y="714.0" font-size="11" textLength="30.9" lengthAdjust="spacingAndGlyphs">竜王町</text><text x="287.0" y="717.8" font-size="15" textLength="43.5" lengthAdjust="spacingAndGlyphs">守山市</text><text x="779.1" y="494.7" font-size="11" textLength="41.2" lengthAdjust="spacingAndGlyphs">輪之内町</text><text x="879.0" y="540.1" font-size="15" textLength="43.5" lengthAdjust="spacingAndGlyphs">稲沢市</text><text x="781.7" y="559.5" font-size="15" textLength="43.5" lengthAdjust="spacingAndGlyphs">海津市</text><text x="679.2" y="620.5" font-size="15" textLength="58.0" lengthAdjust="spacingAndGlyphs">いなべ市</text><text x="854.3" y="636.1" font-size="15" textLength="43.5" lengthAdjust="spacingAndGlyphs">愛西市</text><text x="871.2" y="680.2" font-size="15" textLength="43.5" lengthAdjust="spacingAndGlyphs">弥富市</text><text x="744.0" y="699.8" font-size="11" textLength="30.9" lengthAdjust="spacingAndGlyphs">東員町</text><text x="819.3" y="710.0" font-size="15" textLength="43.5" lengthAdjust="spacingAndGlyphs">桑名市</text><text x="812.8" y="736.1" font-size="11" textLength="30.9" lengthAdjust="spacingAndGlyphs">朝日町</text><text x="968.8" y="507.6" font-size="15" textLength="43.5" lengthAdjust="spacingAndGlyphs">岩倉市</text><text x="963.6" y="534.9" font-size="15" textLength="72.5" lengthAdjust="spacingAndGlyphs">北名古屋市</text><text x="949.3" y="564.7" font-size="15" textLength="43.5" lengthAdjust="spacingAndGlyphs">清須市</text><text x="914.3" y="588.1" font-size="15" textLength="43.5" lengthAdjust="spacingAndGlyphs">あま市</text><text x="1102.4" y="572.5" font-size="15" textLength="58.0" lengthAdjust="spacingAndGlyphs">尾張旭市</text><text x="1121.9" y="606.2" font-size="15" textLength="58.0" lengthAdjust="spacingAndGlyphs">長久手市</text><text x="1118.0" y="637.4" font-size="15" textLength="43.5" lengthAdjust="spacingAndGlyphs">日進市</text><text x="1121.9" y="679.0" font-size="11" textLength="30.9" lengthAdjust="spacingAndGlyphs">東郷町</text><text x="1085.6" y="716.5" font-size="15" textLength="43.5" lengthAdjust="spacingAndGlyphs">豊明市</text><text x="999.9" y="732.1" font-size="15" textLength="43.5" lengthAdjust="spacingAndGlyphs">東海市</text><text x="1164.7" y="540.1" font-size="15" textLength="43.5" lengthAdjust="spacingAndGlyphs">瀬戸市</text><text x="1200.0" y="693.3" font-size="15" textLength="43.5" lengthAdjust="spacingAndGlyphs">豊田市</text><text x="340.4" y="771.2" font-size="15" textLength="43.5" lengthAdjust="spacingAndGlyphs">湖南市</text><text x="474.6" y="754.4" font-size="11" textLength="30.9" lengthAdjust="spacingAndGlyphs">日野町</text><text x="406.9" y="807.7" font-size="15" textLength="43.5" lengthAdjust="spacingAndGlyphs">甲賀市</text><text x="386.0" y="1017.5" font-size="15" textLength="43.5" lengthAdjust="spacingAndGlyphs">伊賀市</text><text x="683.4" y="753.1" font-size="11" textLength="30.9" lengthAdjust="spacingAndGlyphs">菰野町</text><text x="824.1" y="754.4" font-size="11" textLength="30.9" lengthAdjust="spacingAndGlyphs">川越町</text><text x="763.9" y="811.6" font-size="15" textLength="58.0" lengthAdjust="spacingAndGlyphs">四日市市</text><text x="739.4" y="892.4" font-size="15" textLength="43.5" lengthAdjust="spacingAndGlyphs">鈴鹿市</text><text x="630.0" y="909.3" font-size="15" textLength="43.5" lengthAdjust="spacingAndGlyphs">亀山市</text><text x="1035.5" y="759.5" font-size="15" textLength="43.5" lengthAdjust="spacingAndGlyphs">大府市</text><text x="1112.4" y="773.8" font-size="15" textLength="43.5" lengthAdjust="spacingAndGlyphs">知立市</text><text x="961.2" y="803.8" font-size="15" textLength="43.5" lengthAdjust="spacingAndGlyphs">知多市</text><text x="1074.6" y="799.9" font-size="15" textLength="43.5" lengthAdjust="spacingAndGlyphs">刈谷市</text><text x="1132.0" y="825.9" font-size="15" textLength="43.5" lengthAdjust="spacingAndGlyphs">安城市</text><text x="1006.9" y="826.0" font-size="11" textLength="41.2" lengthAdjust="spacingAndGlyphs">阿久比町</text><text x="1062.9" y="853.3" font-size="15" textLength="43.5" lengthAdjust="spacingAndGlyphs">高浜市</text><text x="943.0" y="876.7" font-size="15" textLength="43.5" lengthAdjust="spacingAndGlyphs">常滑市</text><text x="1021.2" y="878.0" font-size="15" textLength="43.5" lengthAdjust="spacingAndGlyphs">半田市</text><text x="1059.0" y="905.4" font-size="15" textLength="43.5" lengthAdjust="spacingAndGlyphs">碧南市</text><text x="1009.5" y="917.2" font-size="11" textLength="30.9" lengthAdjust="spacingAndGlyphs">武豊町</text><text x="1128.0" y="948.4" font-size="15" textLength="43.5" lengthAdjust="spacingAndGlyphs">西尾市</text><text x="1004.2" y="987.6" font-size="11" textLength="30.9" lengthAdjust="spacingAndGlyphs">美浜町</text><text x="1210.4" y="819.4" font-size="15" textLength="43.5" lengthAdjust="spacingAndGlyphs">岡崎市</text><text x="1205.2" y="897.7" font-size="11" textLength="30.9" lengthAdjust="spacingAndGlyphs">幸田町</text><text x="1252.1" y="936.7" font-size="15" textLength="43.5" lengthAdjust="spacingAndGlyphs">蒲郡市</text><text x="1374.7" y="943.2" font-size="15" textLength="43.5" lengthAdjust="spacingAndGlyphs">豊川市</text><text x="1468.5" y="872.9" font-size="15" textLength="43.5" lengthAdjust="spacingAndGlyphs">新城市</text></g><g transform="translate(840,420) scale(0.317359568390987)"><path d="M900,40 L985,40 L985,135 L1010,135 L1010,180 L1045,180 L1045,215 L1010,215 L1010,270 L985,270 L985,295 L940,295 L940,380 L880,380 L880,420 L825,420 L825,465 L885,465 L885,715 L830,715 L830,880 L775,880 L775,965 L720,965 L720,1005 L665,1005 L665,920 L610,920 L610,965 L445,965 L445,1010 L390,1010 L390,840 L275,840 L275,730 L220,730 L220,680 L165,680 L165,585 L55,585 L55,490 L100,490 L100,500 L165,500 L165,470 L230,470 L230,500 L275,500 L275,555 L385,555 L385,470 L445,470 L445,420 L390,420 L390,345 L610,345 L610,245 L640,245 L640,195 L820,195 L820,150 L835,150 L835,80 L880,80 L880,65 L900,65Z" fill="#9a6060" /></g><g transform="translate(610,680) scale(0.1923076923076923)"><path d="M545,65 L660,65 L660,100 L740,100 L740,150 L815,150 L815,185 L850,185 L850,195 L1055,195 L1055,275 L1105,275 L1105,320 L1160,320 L1160,405 L1180,405 L1180,590 L1050,590 L1040,700 L1160,700 L1160,780 L1055,780 L1055,950 L900,950 L900,925 L800,925 L800,905 L650,905 L650,860 L595,860 L595,820 L490,820 L490,790 L450,790 L450,745 L430,745 L430,700 L330,700 L330,650 L280,650 L280,570 L180,570 L180,525 L75,525 L75,450 L125,450 L125,400 L225,400 L225,450 L490,450 L490,405 L535,405 L535,440 L590,440 L590,400 L545,400 L545,320 L640,320 L640,275 L545,275 L545,190 L595,190 L595,150 L545,150Z" fill="#9a6060" /></g><g transform="translate(1200,740) scale(0.26068821689259647)"><path d="M510,870 L640,860 L640,840 L750,840 L750,820 L860,820 L860,660 L970,660 L970,610 L1078,610 L1078,1040 L510,1040Z" fill="#8f6868" /></g><g transform="translate(840,420) scale(0.317359568390987)"><path d="M900,40 L985,40 L985,135 L1010,135 L1010,180 L1045,180 L1045,215 L1010,215 L1010,270 L985,270 L985,295 L940,295 L940,380 L880,380 L880,420 L825,420 L825,465 L885,465 L885,715 L830,715 L830,880 L775,880 L775,965 L720,965 L720,1005 L665,1005 L665,920 L610,920 L610,965 L445,965 L445,1010 L390,1010 L390,840 L275,840 L275,730 L220,730 L220,680 L165,680 L165,585 L55,585 L55,490 L100,490 L100,500 L165,500 L165,470 L230,470 L230,500 L275,500 L275,555 L385,555 L385,470 L445,470 L445,420 L390,420 L390,345 L610,345 L610,245 L640,245 L640,195 L820,195 L820,150 L835,150 L835,80 L880,80 L880,65 L900,65Z" fill="url(#porth)" /></g><g transform="translate(900,470) scale(0.25954)" fill="#7a4248" fill-opacity=".2"><ellipse cx="670" cy="725" rx="30" ry="25"/><ellipse cx="690" cy="530" rx="30" ry="50"/><ellipse cx="815" cy="520" rx="18" ry="22"/><ellipse cx="730" cy="305" rx="30" ry="25"/><ellipse cx="920" cy="95" rx="40" ry="35"/><ellipse cx="440" cy="440" rx="20" ry="20"/><ellipse cx="370" cy="835" rx="35" ry="35"/><ellipse cx="600" cy="900" rx="25" ry="20"/><ellipse cx="760" cy="590" rx="25" ry="30"/><ellipse cx="820" cy="140" rx="25" ry="30"/></g><g transform="translate(900,470) scale(0.25954)" fill="none" stroke="#6e3a40" stroke-opacity=".6"><path d="M440,230 L400,300 L320,380 L260,450 L230,520 L250,640 L260,760 L300,830 L330,900" stroke-width="8"/><path d="M540,330 L620,320 L700,300 L780,260" stroke-width="5"/><path d="M100,640 L130,760 L180,820 L230,840" stroke-width="10"/><path d="M250,880 L300,1040 M340,880 L320,1040" stroke-width="14"/><path d="M360,560 L360,800" stroke-width="3"/></g><defs><clipPath id="ykclip"><path d="M545,65 L660,65 L660,100 L740,100 L740,150 L815,150 L815,185 L850,185 L850,195 L1055,195 L1055,275 L1105,275 L1105,320 L1160,320 L1160,405 L1180,405 L1180,590 L1050,590 L1040,700 L1160,700 L1160,780 L1055,780 L1055,950 L900,950 L900,925 L800,925 L800,905 L650,905 L650,860 L595,860 L595,820 L490,820 L490,790 L450,790 L450,745 L430,745 L430,700 L330,700 L330,650 L280,650 L280,570 L180,570 L180,525 L75,525 L75,450 L125,450 L125,400 L225,400 L225,450 L490,450 L490,405 L535,405 L535,440 L590,440 L590,400 L545,400 L545,320 L640,320 L640,275 L545,275 L545,190 L595,190 L595,150 L545,150Z" fill="#000" /></clipPath><clipPath id="brclip"><path d="M510,870 L640,860 L640,840 L750,840 L750,820 L860,820 L860,660 L970,660 L970,610 L1078,610 L1078,1040 L510,1040Z" fill="#000" /></clipPath></defs><g transform="translate(610,680) scale(0.19231)"><g clip-path="url(#ykclip)" fill="none" stroke="#7a3e44" stroke-opacity=".45" stroke-linecap="round"><path d="M243,675 L347,732" stroke-width="15"/><path d="M475,459 L537,493" stroke-width="18"/><path d="M256,535 L435,634" stroke-width="14"/><path d="M602,644 L739,720" stroke-width="10"/><path d="M481,821 L604,888" stroke-width="17"/><path d="M503,459 L654,542" stroke-width="15"/><path d="M281,444 L445,534" stroke-width="14"/><path d="M531,825 L677,906" stroke-width="19"/><path d="M337,790 L450,853" stroke-width="19"/><path d="M627,474 L704,516" stroke-width="11"/><path d="M679,626 L814,701" stroke-width="12"/><path d="M404,604 L506,660" stroke-width="15"/><path d="M451,837 L592,915" stroke-width="19"/><path d="M614,876 L754,953" stroke-width="10"/><path d="M616,864 L785,957" stroke-width="15"/><path d="M528,525 L688,613" stroke-width="15"/><path d="M271,459 L433,548" stroke-width="20"/><path d="M153,790 L262,850" stroke-width="10"/><path d="M276,776 L441,867" stroke-width="9"/><path d="M469,450 L615,531" stroke-width="12"/><path d="M629,871 L749,938" stroke-width="20"/><path d="M286,465 L418,537" stroke-width="8"/><path d="M218,614 L352,687" stroke-width="10"/><path d="M125,821 L223,874" stroke-width="20"/><path d="M638,600 L753,663" stroke-width="14"/><path d="M486,698 L613,768" stroke-width="15"/></g></g><g transform="translate(1200,740) scale(0.26069)"><g clip-path="url(#brclip)" fill="#6a4650" fill-opacity=".3"><ellipse cx="1065" cy="833" rx="28" ry="17" transform="rotate(-35 1065 833)"/><ellipse cx="912" cy="746" rx="44" ry="14" transform="rotate(-35 912 746)"/><ellipse cx="980" cy="625" rx="27" ry="15" transform="rotate(-35 980 625)"/><ellipse cx="864" cy="879" rx="34" ry="9" transform="rotate(-35 864 879)"/><ellipse cx="997" cy="816" rx="35" ry="12" transform="rotate(-35 997 816)"/><ellipse cx="1014" cy="930" rx="16" ry="9" transform="rotate(-35 1014 930)"/><ellipse cx="1007" cy="1025" rx="23" ry="13" transform="rotate(-35 1007 1025)"/><ellipse cx="989" cy="754" rx="26" ry="12" transform="rotate(-35 989 754)"/><ellipse cx="940" cy="870" rx="24" ry="13" transform="rotate(-35 940 870)"/><ellipse cx="1028" cy="631" rx="32" ry="17" transform="rotate(-35 1028 631)"/><ellipse cx="928" cy="713" rx="39" ry="11" transform="rotate(-35 928 713)"/><ellipse cx="901" cy="803" rx="36" ry="9" transform="rotate(-35 901 803)"/><ellipse cx="930" cy="760" rx="40" ry="13" transform="rotate(-35 930 760)"/><ellipse cx="1047" cy="691" rx="25" ry="16" transform="rotate(-35 1047 691)"/><ellipse cx="1053" cy="809" rx="22" ry="9" transform="rotate(-35 1053 809)"/><ellipse cx="975" cy="700" rx="39" ry="18" transform="rotate(-35 975 700)"/><ellipse cx="900" cy="737" rx="39" ry="16" transform="rotate(-35 900 737)"/><ellipse cx="1036" cy="765" rx="19" ry="12" transform="rotate(-35 1036 765)"/><ellipse cx="1033" cy="734" rx="25" ry="13" transform="rotate(-35 1033 734)"/><ellipse cx="952" cy="792" rx="43" ry="10" transform="rotate(-35 952 792)"/><ellipse cx="861" cy="1016" rx="41" ry="20" transform="rotate(-35 861 1016)"/><ellipse cx="955" cy="1019" rx="43" ry="11" transform="rotate(-35 955 1019)"/></g></g><defs><filter id="grain" x="0" y="0" width="100%" height="100%" filterUnits="objectBoundingBox"><feTurbulence type="fractalNoise" baseFrequency="0.6" numOctaves="2" seed="5"/><feColorMatrix type="matrix" values="0 0 0 0 0.8  0 0 0 0 0.55  0 0 0 0 0.55  0.9 0 0 0 -0.43"/></filter><clipPath id="orthoclip"><path transform="translate(840,420) scale(0.31736)" d="M900,40 L985,40 L985,135 L1010,135 L1010,180 L1045,180 L1045,215 L1010,215 L1010,270 L985,270 L985,295 L940,295 L940,380 L880,380 L880,420 L825,420 L825,465 L885,465 L885,715 L830,715 L830,880 L775,880 L775,965 L720,965 L720,1005 L665,1005 L665,920 L610,920 L610,965 L445,965 L445,1010 L390,1010 L390,840 L275,840 L275,730 L220,730 L220,680 L165,680 L165,585 L55,585 L55,490 L100,490 L100,500 L165,500 L165,470 L230,470 L230,500 L275,500 L275,555 L385,555 L385,470 L445,470 L445,420 L390,420 L390,345 L610,345 L610,245 L640,245 L640,195 L820,195 L820,150 L835,150 L835,80 L880,80 L880,65 L900,65Z"/><path transform="translate(610,680) scale(0.19231)" d="M545,65 L660,65 L660,100 L740,100 L740,150 L815,150 L815,185 L850,185 L850,195 L1055,195 L1055,275 L1105,275 L1105,320 L1160,320 L1160,405 L1180,405 L1180,590 L1050,590 L1040,700 L1160,700 L1160,780 L1055,780 L1055,950 L900,950 L900,925 L800,925 L800,905 L650,905 L650,860 L595,860 L595,820 L490,820 L490,790 L450,790 L450,745 L430,745 L430,700 L330,700 L330,650 L280,650 L280,570 L180,570 L180,525 L75,525 L75,450 L125,450 L125,400 L225,400 L225,450 L490,450 L490,405 L535,405 L535,440 L590,440 L590,400 L545,400 L545,320 L640,320 L640,275 L545,275 L545,190 L595,190 L595,150 L545,150Z"/><path transform="translate(1200,740) scale(0.26069)" d="M510,870 L640,860 L640,840 L750,840 L750,820 L860,820 L860,660 L970,660 L970,610 L1078,610 L1078,1040 L510,1040Z"/></clipPath></defs><g clip-path="url(#orthoclip)"><rect x="620" y="430" width="560" height="440" filter="url(#grain)"/><rect x="1330" y="890" width="151" height="121" filter="url(#grain)"/></g><rect x="618" y="315" width="562" height="561" fill="rgba(255,10,10,0.135)"/><path d="M618.5 199V1011M1180.5 199V1011M300 315.5H1481M300 876.5H1481" stroke="#3a2a2a" stroke-width="1" opacity=".85"/><rect x="618.5" y="315.5" width="562" height="561" fill="none" stroke="#e02828" stroke-width="5" opacity=".9"/><path d="M618.5 313V879M1180.5 313V879M616 315.5H1183M616 876.5H1183" stroke="#a01818" stroke-width="1" opacity=".6"/><g font-family="Liberation Sans" font-size="12.2" fill="#000" stroke="#fff" stroke-width="3" paint-order="stroke" stroke-linejoin="round"><text x="428.5" y="262" textLength="62" lengthAdjust="spacingAndGlyphs">133002003</text><text x="868.5" y="262" textLength="62" lengthAdjust="spacingAndGlyphs">133002012</text><text x="1299.5" y="262" textLength="62" lengthAdjust="spacingAndGlyphs">133002013</text><text x="428.5" y="601" textLength="62" lengthAdjust="spacingAndGlyphs">133002021</text><text x="868.5" y="601" textLength="62" lengthAdjust="spacingAndGlyphs">133002030</text><text x="1299.5" y="601" textLength="62" lengthAdjust="spacingAndGlyphs">133002031</text><text x="428.5" y="949" textLength="62" lengthAdjust="spacingAndGlyphs">133002023</text><text x="868.5" y="949" textLength="62" lengthAdjust="spacingAndGlyphs">133002032</text><text x="1299.5" y="949" textLength="62" lengthAdjust="spacingAndGlyphs">133002033</text></g><g font-family="Liberation Sans" font-size="10" text-anchor="middle"><rect x="435.0" y="193.5" width="24" height="17" rx="2.5" fill="#d48d93" stroke="#c27a82" stroke-width="1"/><text x="447" y="205.8" fill="#8a4a52">E8</text><rect x="1224.0" y="613.5" width="24" height="17" rx="2.5" fill="#d48d93" stroke="#c27a82" stroke-width="1"/><text x="1236" y="625.8" fill="#8a4a52">C3</text><rect x="554.0" y="838.5" width="30" height="17" rx="2.5" fill="#d48d93" stroke="#c27a82" stroke-width="1"/><text x="569" y="850.8" fill="#8a4a52">E1A</text><rect x="497.0" y="916.5" width="30" height="17" rx="2.5" fill="#d48d93" stroke="#c27a82" stroke-width="1"/><text x="512" y="928.8" fill="#8a4a52">E25</text><rect x="636.0" y="951.5" width="30" height="17" rx="2.5" fill="#d48d93" stroke="#c27a82" stroke-width="1"/><text x="651" y="963.8" fill="#8a4a52">E23</text><rect x="1259.0" y="740.5" width="30" height="17" rx="2.5" fill="#d48d93" stroke="#c27a82" stroke-width="1"/><text x="1274" y="752.8" fill="#8a4a52">E1A</text></g><path d="M943,896 L945,903 L950,905 L950,907 L945,906 L944,911 L946,913 L946,914 L943,913 L940,914 L940,913 L942,911 L941,906 L936,907 L936,905 L941,903Z" fill="#9a62a8"/></svg><div style="position:absolute;left:300px;top:199px;width:1182px;height:812px;border:1px solid #a4a4a4;border-right-color:#c0c0c0;border-bottom:none"></div><div style="position:absolute;left:1481px;top:198px;width:439px;height:812px;background:#f0f0f0"></div><div class="t" id="t24" style="left:1492px;top:202.3px;font-size:12px;color:#000;transform:scaleX(1.0171);width:117.00px;clip-path:inset(-5px -1px -5px -2px);--w:119;">プロセシングツールボックス</div><div class="dbtn" style="left:1893px;top:203px"><svg viewBox="0 0 11 11" style="width:11px;height:11px;position:absolute;left:0;top:0"><rect x="3.5" y="2.5" width="4.5" height="4.5" fill="none" stroke="#555" stroke-width="1"/><rect x="2.5" y="4.5" width="4" height="4" fill="#f0f0f0" stroke="#555" stroke-width="1"/></svg></div><div class="dbtn" style="left:1907px;top:203px"><svg viewBox="0 0 11 11" style="width:11px;height:11px;position:absolute;left:0;top:0"><path d="M2.5 2.5l6 6M8.5 2.5l-6 6" stroke="#555" stroke-width="1.8"/></svg></div><svg class="ic" style="left:1495px;top:224px;width:18px;height:18px" viewBox="0 0 24 24"><path d="M8 1l1.5 3 3-1-1 3 3 1.5-3 1.5 1 3-3-1L8 14l-1.5-3-3 1 1-3-3-1.5 3-1.5-1-3 3 1z" fill="#d02020"/><circle cx="14" cy="12" r="3" fill="none" stroke="#777" stroke-width="2"/><circle cx="8" cy="19" r="3" fill="#8ab0e0"/><path d="M16 20l3 3 3-3z" fill="#333"/></svg><svg class="ic" style="left:1520px;top:224px;width:18px;height:18px" viewBox="0 0 24 24"><path d="M12 2c-5 0-5 2-5 4v3h5v1H5c-3 0-4 2-4 5s1 5 4 5h2v-3c0-2 2-4 4-4h5c2 0 3-1 3-3V6c0-2-2-4-7-4z" fill="#3a72a8"/><path d="M12 22c5 0 5-2 5-4v-3h-5v-1h7c3 0 4-2 4-5s-1-5-4-5h-2v3c0 2-2 4-4 4H8c-2 0-3 1-3 3v4c0 2 2 4 7 4z" fill="#f4d040"/></svg><svg class="ic" style="left:1546px;top:225px;width:16px;height:16px" viewBox="0 0 24 24"><circle cx="12" cy="12" r="10" fill="#fff" stroke="#777" stroke-width="1.5"/><path d="M12 5v7l4 4" stroke="#777" stroke-width="1.5" fill="none"/></svg><svg class="ic" style="left:1571px;top:225px;width:16px;height:16px" viewBox="0 0 24 24"><path d="M4 2h11l5 5v15H4z" fill="#f4f4f4" stroke="#aaa"/><path d="M7 10h10M7 13h10M7 16h10" stroke="#aaa"/></svg><div class="sep" style="left:1594px;top:226px;height:14px"></div><svg class="ic" style="left:1601px;top:225px;width:16px;height:16px" viewBox="0 0 24 24"><path d="M2 3h14l5 6-5 6H2z" fill="#f0d040" stroke="#999" stroke-width=".8"/><path d="M12 20l8-12" stroke="#777" stroke-width="2"/></svg><div class="sep" style="left:1624px;top:226px;height:14px"></div><svg class="ic" style="left:1633px;top:225px;width:16px;height:16px" viewBox="0 0 24 24"><path d="M3 3a5 5 0 006 6l12 12-2 2L7 11a5 5 0 01-6-6l3 2 2-2z" fill="#fff" stroke="#333" stroke-width="1.3"/><path d="M11 12l9 9" stroke="#f0d040" stroke-width="3"/></svg><div class="box" style="left:1488px;top:249px;width:430px;height:21px;border-radius:3px"></div><svg class="ic" style="left:1496px;top:253px;width:13px;height:13px" viewBox="0 0 13 13"><circle cx="5.5" cy="5.5" r="4" fill="none" stroke="#666" stroke-width="1.2"/><path d="M8.5 8.5l3.5 3.5" stroke="#666" stroke-width="1.4"/></svg><div class="t" id="t25" style="left:1516px;top:253.3px;font-size:11.5px;color:#777;transform:scaleX(1.1362);width:26.84px;clip-path:inset(-5px -1px -5px -2px);--w:30.5;">検索...</div><div class="box" style="left:1488px;top:271px;width:430px;height:357px"></div><div style="position:absolute;left:1905px;top:272px;width:13px;height:355px;background:#f8f8f8;border-left:1px solid #e6e6e6"></div><div style="position:absolute;left:1906px;top:508px;width:12px;height:106px;background:#dadada"></div><svg class="ic" style="left:1908px;top:276px;width:8px;height:5px" viewBox="0 0 8 5"><path d="M0 5h8L4 0z" fill="#555"/></svg><svg class="ic" style="left:1908px;top:619px;width:8px;height:5px" viewBox="0 0 8 5"><path d="M0 0h8L4 5z" fill="#555"/></svg><div style="position:absolute;left:1489px;top:272px;width:415px;height:355px;overflow:hidden"><svg class="ic" style="left:8px;top:5px;width:5px;height:9px" viewBox="0 0 5 9"><path d="M0 0v9l5-4.5z" fill="#333"/></svg><svg class="ic" style="left:23px;top:1px;width:16px;height:16px" viewBox="0 0 16 16"><circle cx="8" cy="8" r="7" fill="#fff" stroke="#888" stroke-width="1.2"/><path d="M8 3v5l3 3" stroke="#888" stroke-width="1.2" fill="none"/></svg><div class="t" id="t26" style="left:45px;top:2px;font-size:11.5px;color:#000;transform:scaleX(1.1449);width:69.00px;clip-path:inset(-5px -1px -5px -2px);--w:79;">最近使ったツール</div><svg class="ic" style="left:8px;top:23px;width:5px;height:9px" viewBox="0 0 5 9"><path d="M0 0v9l5-4.5z" fill="#333"/></svg><svg class="ic" style="left:23px;top:19px;width:16px;height:16px" viewBox="0 0 16 16"><circle cx="7.5" cy="7.5" r="5.5" fill="none" stroke="#6aa030" stroke-width="2.6"/><path d="M8.5 8.5l5.5 6" stroke="#6aa030" stroke-width="2.8"/><circle cx="8" cy="8" r="2" fill="#f09030"/></svg><div class="t" id="t27" style="left:45px;top:21.3px;font-size:11.5px;color:#000;transform:scaleX(0.9628);width:41.55px;clip-path:inset(-5px -1px -5px -2px);--w:40;">3D Tiles</div><svg class="ic" style="left:8px;top:41px;width:5px;height:9px" viewBox="0 0 5 9"><path d="M0 0v9l5-4.5z" fill="#333"/></svg><svg class="ic" style="left:23px;top:37px;width:16px;height:16px" viewBox="0 0 16 16"><circle cx="7.5" cy="7.5" r="5.5" fill="none" stroke="#6aa030" stroke-width="2.6"/><path d="M8.5 8.5l5.5 6" stroke="#6aa030" stroke-width="2.8"/><circle cx="8" cy="8" r="2" fill="#f09030"/></svg><div class="t" id="t28" style="left:45px;top:39.3px;font-size:11.5px;color:#000;transform:scaleX(0.9749);width:49.23px;clip-path:inset(-5px -1px -5px -2px);--w:48;">Database</div><svg class="ic" style="left:8px;top:59px;width:5px;height:9px" viewBox="0 0 5 9"><path d="M0 0v9l5-4.5z" fill="#333"/></svg><svg class="ic" style="left:23px;top:55px;width:16px;height:16px" viewBox="0 0 16 16"><circle cx="7.5" cy="7.5" r="5.5" fill="none" stroke="#6aa030" stroke-width="2.6"/><path d="M8.5 8.5l5.5 6" stroke="#6aa030" stroke-width="2.8"/><circle cx="8" cy="8" r="2" fill="#f09030"/></svg><div class="t" id="t29" style="left:45px;top:57.3px;font-size:11.5px;color:#000;transform:scaleX(0.8643);width:24.30px;clip-path:inset(-5px -1px -5px -2px);--w:21;">GPS</div><svg class="ic" style="left:8px;top:77px;width:5px;height:9px" viewBox="0 0 5 9"><path d="M0 0v9l5-4.5z" fill="#333"/></svg><svg class="ic" style="left:23px;top:73px;width:16px;height:16px" viewBox="0 0 16 16"><circle cx="7.5" cy="7.5" r="5.5" fill="none" stroke="#6aa030" stroke-width="2.6"/><path d="M8.5 8.5l5.5 6" stroke="#6aa030" stroke-width="2.8"/><circle cx="8" cy="8" r="2" fill="#f09030"/></svg><div class="t" id="t30" style="left:45px;top:75.3px;font-size:11.5px;color:#000;transform:scaleX(1.0957);width:69.00px;clip-path:inset(-5px -1px -5px -2px);--w:75.6;">ネットワーク解析</div><svg class="ic" style="left:8px;top:95px;width:5px;height:9px" viewBox="0 0 5 9"><path d="M0 0v9l5-4.5z" fill="#333"/></svg><svg class="ic" style="left:23px;top:91px;width:16px;height:16px" viewBox="0 0 16 16"><circle cx="7.5" cy="7.5" r="5.5" fill="none" stroke="#6aa030" stroke-width="2.6"/><path d="M8.5 8.5l5.5 6" stroke="#6aa030" stroke-width="2.8"/><circle cx="8" cy="8" r="2" fill="#f09030"/></svg><div class="t" id="t31" style="left:45px;top:93.3px;font-size:11.5px;color:#000;transform:scaleX(0.9938);width:60.38px;clip-path:inset(-5px -1px -5px -2px);--w:60;">ファイルツール</div><svg class="ic" style="left:8px;top:113px;width:5px;height:9px" viewBox="0 0 5 9"><path d="M0 0v9l5-4.5z" fill="#333"/></svg><svg class="ic" style="left:23px;top:109px;width:16px;height:16px" viewBox="0 0 16 16"><circle cx="7.5" cy="7.5" r="5.5" fill="none" stroke="#6aa030" stroke-width="2.6"/><path d="M8.5 8.5l5.5 6" stroke="#6aa030" stroke-width="2.8"/><circle cx="8" cy="8" r="2" fill="#f09030"/></svg><div class="t" id="t32" style="left:45px;top:111.3px;font-size:11.5px;color:#000;transform:scaleX(0.9739);width:34.50px;clip-path:inset(-5px -1px -5px -2px);--w:33.6;">プロット</div><svg class="ic" style="left:8px;top:131px;width:5px;height:9px" viewBox="0 0 5 9"><path d="M0 0v9l5-4.5z" fill="#333"/></svg><svg class="ic" style="left:23px;top:127px;width:16px;height:16px" viewBox="0 0 16 16"><circle cx="7.5" cy="7.5" r="5.5" fill="none" stroke="#6aa030" stroke-width="2.6"/><path d="M8.5 8.5l5.5 6" stroke="#6aa030" stroke-width="2.8"/><circle cx="8" cy="8" r="2" fill="#f09030"/></svg><div class="t" id="t33" style="left:45px;top:129.3px;font-size:11.5px;color:#000;transform:scaleX(1.0306);width:77.62px;clip-path:inset(-5px -1px -5px -2px);--w:80;">ベクタオーバーレイ</div><svg class="ic" style="left:8px;top:149px;width:5px;height:9px" viewBox="0 0 5 9"><path d="M0 0v9l5-4.5z" fill="#333"/></svg><svg class="ic" style="left:23px;top:145px;width:16px;height:16px" viewBox="0 0 16 16"><circle cx="7.5" cy="7.5" r="5.5" fill="none" stroke="#6aa030" stroke-width="2.6"/><path d="M8.5 8.5l5.5 6" stroke="#6aa030" stroke-width="2.8"/><circle cx="8" cy="8" r="2" fill="#f09030"/></svg><div class="t" id="t34" style="left:45px;top:147.3px;font-size:11.5px;color:#000;transform:scaleX(1.0290);width:69.00px;clip-path:inset(-5px -1px -5px -2px);--w:71;">ベクタジオメトリ</div><svg class="ic" style="left:8px;top:167px;width:5px;height:9px" viewBox="0 0 5 9"><path d="M0 0v9l5-4.5z" fill="#333"/></svg><svg class="ic" style="left:23px;top:163px;width:16px;height:16px" viewBox="0 0 16 16"><circle cx="7.5" cy="7.5" r="5.5" fill="none" stroke="#6aa030" stroke-width="2.6"/><path d="M8.5 8.5l5.5 6" stroke="#6aa030" stroke-width="2.8"/><circle cx="8" cy="8" r="2" fill="#f09030"/></svg><div class="t" id="t35" style="left:45px;top:165.3px;font-size:11.5px;color:#000;transform:scaleX(1.0628);width:51.75px;clip-path:inset(-5px -1px -5px -2px);--w:55;">ベクタタイル</div><svg class="ic" style="left:8px;top:185px;width:5px;height:9px" viewBox="0 0 5 9"><path d="M0 0v9l5-4.5z" fill="#333"/></svg><svg class="ic" style="left:23px;top:181px;width:16px;height:16px" viewBox="0 0 16 16"><circle cx="7.5" cy="7.5" r="5.5" fill="none" stroke="#6aa030" stroke-width="2.6"/><path d="M8.5 8.5l5.5 6" stroke="#6aa030" stroke-width="2.8"/><circle cx="8" cy="8" r="2" fill="#f09030"/></svg><div class="t" id="t36" style="left:45px;top:183.3px;font-size:11.5px;color:#000;transform:scaleX(1.0435);width:60.38px;clip-path:inset(-5px -1px -5px -2px);--w:63;">ベクタテーブル</div><svg class="ic" style="left:8px;top:203px;width:5px;height:9px" viewBox="0 0 5 9"><path d="M0 0v9l5-4.5z" fill="#333"/></svg><svg class="ic" style="left:23px;top:199px;width:16px;height:16px" viewBox="0 0 16 16"><circle cx="7.5" cy="7.5" r="5.5" fill="none" stroke="#6aa030" stroke-width="2.6"/><path d="M8.5 8.5l5.5 6" stroke="#6aa030" stroke-width="2.8"/><circle cx="8" cy="8" r="2" fill="#f09030"/></svg><div class="t" id="t37" style="left:45px;top:201.3px;font-size:11.5px;color:#000;transform:scaleX(1.2058);width:43.12px;clip-path:inset(-5px -1px -5px -2px);--w:52;">ベクター般</div><svg class="ic" style="left:8px;top:221px;width:5px;height:9px" viewBox="0 0 5 9"><path d="M0 0v9l5-4.5z" fill="#333"/></svg><svg class="ic" style="left:23px;top:217px;width:16px;height:16px" viewBox="0 0 16 16"><circle cx="7.5" cy="7.5" r="5.5" fill="none" stroke="#6aa030" stroke-width="2.6"/><path d="M8.5 8.5l5.5 6" stroke="#6aa030" stroke-width="2.8"/><circle cx="8" cy="8" r="2" fill="#f09030"/></svg><div class="t" id="t38" style="left:45px;top:219.3px;font-size:11.5px;color:#000;transform:scaleX(1.1826);width:43.12px;clip-path:inset(-5px -1px -5px -2px);--w:51;">ベクタ解析</div><svg class="ic" style="left:8px;top:239px;width:5px;height:9px" viewBox="0 0 5 9"><path d="M0 0v9l5-4.5z" fill="#333"/></svg><svg class="ic" style="left:23px;top:235px;width:16px;height:16px" viewBox="0 0 16 16"><circle cx="7.5" cy="7.5" r="5.5" fill="none" stroke="#6aa030" stroke-width="2.6"/><path d="M8.5 8.5l5.5 6" stroke="#6aa030" stroke-width="2.8"/><circle cx="8" cy="8" r="2" fill="#f09030"/></svg><div class="t" id="t39" style="left:45px;top:237.3px;font-size:11.5px;color:#000;transform:scaleX(1.1826);width:43.12px;clip-path:inset(-5px -1px -5px -2px);--w:51;">ベクタ作成</div><svg class="ic" style="left:8px;top:257px;width:5px;height:9px" viewBox="0 0 5 9"><path d="M0 0v9l5-4.5z" fill="#333"/></svg><svg class="ic" style="left:23px;top:253px;width:16px;height:16px" viewBox="0 0 16 16"><circle cx="7.5" cy="7.5" r="5.5" fill="none" stroke="#6aa030" stroke-width="2.6"/><path d="M8.5 8.5l5.5 6" stroke="#6aa030" stroke-width="2.8"/><circle cx="8" cy="8" r="2" fill="#f09030"/></svg><div class="t" id="t40" style="left:45px;top:255.3px;font-size:11.5px;color:#000;transform:scaleX(1.1826);width:43.12px;clip-path:inset(-5px -1px -5px -2px);--w:51;">ベクタ選択</div><svg class="ic" style="left:8px;top:275px;width:5px;height:9px" viewBox="0 0 5 9"><path d="M0 0v9l5-4.5z" fill="#333"/></svg><svg class="ic" style="left:23px;top:271px;width:16px;height:16px" viewBox="0 0 16 16"><circle cx="7.5" cy="7.5" r="5.5" fill="none" stroke="#6aa030" stroke-width="2.6"/><path d="M8.5 8.5l5.5 6" stroke="#6aa030" stroke-width="2.8"/><circle cx="8" cy="8" r="2" fill="#f09030"/></svg><div class="t" id="t41" style="left:45px;top:273.3px;font-size:11.5px;color:#000;transform:scaleX(0.9855);width:34.50px;clip-path:inset(-5px -1px -5px -2px);--w:34;">メッシュ</div><svg class="ic" style="left:8px;top:293px;width:5px;height:9px" viewBox="0 0 5 9"><path d="M0 0v9l5-4.5z" fill="#333"/></svg><svg class="ic" style="left:23px;top:289px;width:16px;height:16px" viewBox="0 0 16 16"><circle cx="7.5" cy="7.5" r="5.5" fill="none" stroke="#6aa030" stroke-width="2.6"/><path d="M8.5 8.5l5.5 6" stroke="#6aa030" stroke-width="2.8"/><circle cx="8" cy="8" r="2" fill="#f09030"/></svg><div class="t" id="t42" style="left:45px;top:291.3px;font-size:11.5px;color:#000;transform:scaleX(1.0145);width:51.75px;clip-path:inset(-5px -1px -5px -2px);--w:52.5;">ラスタツール</div><svg class="ic" style="left:8px;top:311px;width:5px;height:9px" viewBox="0 0 5 9"><path d="M0 0v9l5-4.5z" fill="#333"/></svg><svg class="ic" style="left:23px;top:307px;width:16px;height:16px" viewBox="0 0 16 16"><circle cx="7.5" cy="7.5" r="5.5" fill="none" stroke="#6aa030" stroke-width="2.6"/><path d="M8.5 8.5l5.5 6" stroke="#6aa030" stroke-width="2.8"/><circle cx="8" cy="8" r="2" fill="#f09030"/></svg><div class="t" id="t43" style="left:45px;top:309.3px;font-size:11.5px;color:#000;transform:scaleX(1.1594);width:43.12px;clip-path:inset(-5px -1px -5px -2px);--w:50;">ラスタ解析</div><svg class="ic" style="left:8px;top:329px;width:5px;height:9px" viewBox="0 0 5 9"><path d="M0 0v9l5-4.5z" fill="#333"/></svg><svg class="ic" style="left:23px;top:325px;width:16px;height:16px" viewBox="0 0 16 16"><circle cx="7.5" cy="7.5" r="5.5" fill="none" stroke="#6aa030" stroke-width="2.6"/><path d="M8.5 8.5l5.5 6" stroke="#6aa030" stroke-width="2.8"/><circle cx="8" cy="8" r="2" fill="#f09030"/></svg><div class="t" id="t44" style="left:45px;top:327.3px;font-size:11.5px;color:#000;transform:scaleX(1.1594);width:43.12px;clip-path:inset(-5px -1px -5px -2px);--w:50;">ラスタ作成</div><svg class="ic" style="left:8px;top:347px;width:5px;height:9px" viewBox="0 0 5 9"><path d="M0 0v9l5-4.5z" fill="#333"/></svg><svg class="ic" style="left:23px;top:343px;width:16px;height:16px" viewBox="0 0 16 16"><circle cx="7.5" cy="7.5" r="5.5" fill="none" stroke="#6aa030" stroke-width="2.6"/><path d="M8.5 8.5l5.5 6" stroke="#6aa030" stroke-width="2.8"/><circle cx="8" cy="8" r="2" fill="#f09030"/></svg><div class="t" id="t45" style="left:45px;top:345.3px;font-size:11.5px;color:#000;transform:scaleX(1.2091);width:60.38px;clip-path:inset(-5px -1px -5px -2px);--w:73;">ラスタ地形解析</div></div><div style="position:absolute;left:1632px;top:631px;width:80px;height:18px;background:#e4e4e4;border:1px solid #c8c8c8;border-top:none"></div><div style="position:absolute;left:1488px;top:628px;width:142px;height:23px;background:#f8f8f8;border:1px solid #c8c8c8;border-top:none;border-radius:0 0 3px 3px"></div><div class="t" id="t46" style="left:1499.5px;top:634.3px;font-size:11.5px;color:#000;transform:scaleX(1.0569);width:112.12px;clip-path:inset(-5px -1px -5px -2px);--w:118.5;">プロセシングツールボックス</div><div class="t" id="t47" style="left:1643px;top:633.3px;font-size:11.5px;color:#000;transform:scaleX(1.1401);width:51.75px;clip-path:inset(-5px -1px -5px -2px);--w:59;">結果ビューア</div><div style="position:absolute;left:1697px;top:655px;width:16px;height:1px;border-top:1px dotted #aaa"></div><div class="t" id="t48" style="left:1492.5px;top:662.3px;font-size:12px;color:#000;transform:scaleX(1.3185);width:54.00px;clip-path:inset(-5px -1px -5px -2px);--w:71.2;">地物情報結果</div><div class="dbtn" style="left:1893px;top:663px"><svg viewBox="0 0 11 11" style="width:11px;height:11px;position:absolute;left:0;top:0"><rect x="3.5" y="2.5" width="4.5" height="4.5" fill="none" stroke="#555" stroke-width="1"/><rect x="2.5" y="4.5" width="4" height="4" fill="#f0f0f0" stroke="#555" stroke-width="1"/></svg></div><div class="dbtn" style="left:1907px;top:663px"><svg viewBox="0 0 11 11" style="width:11px;height:11px;position:absolute;left:0;top:0"><path d="M2.5 2.5l6 6M8.5 2.5l-6 6" stroke="#555" stroke-width="1.8"/></svg></div><svg class="ic" style="left:1495px;top:686px;width:16px;height:16px" viewBox="0 0 24 24"><rect x="2" y="3" width="20" height="18" rx="1" fill="#dde8f4" stroke="#6a8ab0"/><path d="M6 8h4M6 12h12M6 16h12" stroke="#6a8ab0" stroke-width="1.5"/></svg><div class="sep" style="left:1521px;top:687px;height:14px"></div><svg class="ic" style="left:1529px;top:686px;width:16px;height:16px" viewBox="0 0 24 24"><rect x="3" y="4" width="9" height="14" fill="none" stroke="#888" stroke-dasharray="2 1"/><path d="M14 2v16l-4-4M14 18l4-4" stroke="#4a7ac0" stroke-width="2.5" fill="none"/><rect x="4" y="7" width="3" height="3" fill="#e08020"/><rect x="4" y="13" width="3" height="3" fill="#e08020"/></svg><svg class="ic" style="left:1554px;top:686px;width:16px;height:16px" viewBox="0 0 24 24"><rect x="3" y="6" width="9" height="14" fill="none" stroke="#888" stroke-dasharray="2 1"/><path d="M14 22V6l-4 4M14 6l4 4" stroke="#4a7ac0" stroke-width="2.5" fill="none"/><rect x="4" y="9" width="3" height="3" fill="#e08020"/><rect x="4" y="15" width="3" height="3" fill="#e08020"/></svg><svg class="ic" style="left:1578px;top:686px;width:16px;height:16px" viewBox="0 0 24 24"><path d="M3 3h14l5 5-5 5H3z" fill="#f4d040" stroke="#999"/><path d="M10 8l2-5 2 5 5 0-4 3 2 5-5-3-5 3 2-5-4-3z" fill="#f8d040"/><path d="M14 22V10l-4 4M14 10l4 4" stroke="#4a7ac0" stroke-width="2.5" fill="none"/></svg><div class="sep" style="left:1603px;top:687px;height:14px"></div><svg class="ic" style="left:1610px;top:686px;width:16px;height:16px" viewBox="0 0 24 24"><rect x="2" y="2" width="12" height="12" fill="#f4e040" stroke="#c8a820"/><rect x="6" y="6" width="12" height="12" fill="#f4e040" stroke="#c8a820"/><circle cx="18" cy="18" r="5" fill="#d02020"/><path d="M15 21l6-6" stroke="#fff" stroke-width="1.3"/></svg><div class="sep" style="left:1635px;top:687px;height:14px"></div><svg class="ic" style="left:1642px;top:686px;width:16px;height:16px" viewBox="0 0 24 24"><path d="M3 6h9l3 3v13H3z" fill="#f4f4f4" stroke="#d2d2ce"/><path d="M8 2h9l3 3v12h-5" fill="#f4f4f4" stroke="#d2d2ce"/></svg><svg class="ic" style="left:1668px;top:686px;width:16px;height:16px" viewBox="0 0 24 24"><rect x="6" y="2" width="12" height="7" fill="#f4f4f4" stroke="#d2d2ce"/><rect x="2" y="9" width="20" height="9" rx="2" fill="#d2d2ce"/><rect x="6" y="15" width="12" height="7" fill="#f4f4f4" stroke="#d2d2ce"/></svg><div class="sep" style="left:1691px;top:687px;height:14px"></div><svg class="ic" style="left:1698px;top:686px;width:16px;height:16px" viewBox="0 0 24 24"><rect x="2" y="2" width="18" height="18" fill="none" stroke="#555" stroke-dasharray="1.5 1.5"/><circle cx="9" cy="8" r="5" fill="#5b8ac6"/><path d="M10 10l10 9-4 .5 2 3-2 1-2-3-3 2z" fill="#fff" stroke="#333" stroke-width=".9"/></svg><svg class="ic" style="left:1720px;top:692px;width:8px;height:5px" viewBox="0 0 8 5"><path d="M0 0h8L4 5z" fill="#444"/></svg><svg class="ic" style="left:1736px;top:686px;width:16px;height:16px" viewBox="0 0 24 24"><path d="M3 3a5 5 0 006 6l12 12-2 2L7 11a5 5 0 01-6-6l3 2 2-2z" fill="#fff" stroke="#333" stroke-width="1.3"/><path d="M11 12l9 9" stroke="#f0d040" stroke-width="3"/></svg><div class="sep" style="left:1761px;top:687px;height:14px"></div><svg class="ic" style="left:1769px;top:686px;width:16px;height:16px" viewBox="0 0 24 24"><rect x="3" y="2" width="18" height="20" rx="1" fill="#4a7ac0" stroke="#1a2a4a" stroke-width="1.2"/><rect x="3" y="2" width="4" height="20" fill="#1a2a4a"/><text x="10" y="17" font-size="12" fill="#fff" font-family="Liberation Sans">?</text></svg><div class="box" style="left:1488px;top:709px;width:431px;height:235px"></div><div style="position:absolute;left:1489px;top:710px;width:430px;height:18px;background:linear-gradient(#fdfdfd,#f0f0f0);border-bottom:1px solid #d8d8d8"></div><div style="position:absolute;left:1588px;top:710px;width:1px;height:18px;background:#d8d8d8"></div><div class="t" id="t49" style="left:1491.4px;top:713.3px;font-size:11.5px;color:#000;transform:scaleX(1.3333);width:17.25px;clip-path:inset(-5px -1px -5px -2px);--w:23;">地物</div><div class="t" id="t50" style="left:1591px;top:713.3px;font-size:11.5px;color:#000;transform:scaleX(1.3449);width:8.62px;clip-path:inset(-5px -1px -5px -2px);--w:11.6;">値</div><div style="position:absolute;left:1489px;top:744px;width:430px;height:15px;background:#ececec"></div><div style="position:absolute;left:1489px;top:774px;width:430px;height:15px;background:#e8e8e8"></div><svg class="ic" style="left:1492px;top:734px;width:8px;height:5px" viewBox="0 0 8 5"><path d="M0 0h8L4 5z" fill="#444"/></svg><div class="t" id="t51" style="left:1503.9px;top:730.3px;font-size:11.5px;color:#000;transform:scaleX(0.9124);width:23.02px;clip-path:inset(-5px -1px -5px -2px);--w:21;"><b>tiles</b></div><svg class="ic" style="left:1503px;top:749px;width:8px;height:5px" viewBox="0 0 8 5"><path d="M0 0h8L4 5z" fill="#444"/></svg><div class="t" id="t52" style="left:1516px;top:746.3px;font-size:11.5px;color:#000;transform:scaleX(1.1086);width:14.70px;clip-path:inset(-5px -1px -5px -2px);--w:16.3;">tile</div><div class="t" id="t53" style="left:1592.8px;top:746.3px;font-size:11px;color:#000;transform:scaleX(0.9662);width:55.06px;clip-path:inset(-5px -1px -5px -2px);--w:53.2;">133002030</div><svg class="ic" style="left:1517px;top:762px;width:5px;height:9px" viewBox="0 0 5 9"><path d="M0 0v9l5-4.5z" fill="#333"/></svg><div class="t" id="t54" style="left:1527.4px;top:760.3px;font-size:11.5px;color:#000;transform:scaleX(1.1268);width:47.92px;clip-path:inset(-5px -1px -5px -2px);--w:54;">(派生した...</div><svg class="ic" style="left:1517px;top:777px;width:5px;height:9px" viewBox="0 0 5 9"><path d="M0 0v9l5-4.5z" fill="#333"/></svg><div class="t" id="t55" style="left:1527.4px;top:775.3px;font-size:11.5px;color:#000;transform:scaleX(1.0296);width:50.80px;clip-path:inset(-5px -1px -5px -2px);--w:52.3;">(アクション)</div><div class="t" id="t56" style="left:1528.4px;top:791.3px;font-size:11.5px;color:#000;transform:scaleX(1.0610);width:14.70px;clip-path:inset(-5px -1px -5px -2px);--w:15.6;">tile</div><div class="t" id="t57" style="left:1592.8px;top:791.3px;font-size:11px;color:#000;transform:scaleX(0.9662);width:55.06px;clip-path:inset(-5px -1px -5px -2px);--w:53.2;">133002030</div><div class="t" id="t58" style="left:1491.4px;top:955.3px;font-size:11.5px;color:#000;transform:scaleX(1.1401);width:25.88px;clip-path:inset(-5px -1px -5px -2px);--w:29.5;">モード</div><div class="box" style="left:1527px;top:950px;width:387px;height:22px;border-radius:3px;background:#fdfdfd"></div><div class="t" id="t59" style="left:1532.3px;top:955.3px;font-size:11.5px;color:#000;transform:scaleX(1.1988);width:43.12px;clip-path:inset(-5px -1px -5px -2px);--w:51.7;">レイヤ選択</div><svg class="ic" style="left:1899px;top:960px;width:8px;height:5px" viewBox="0 0 8 5"><path d="M0 0h8L4 5z" fill="#444"/></svg><div class="t" id="t60" style="left:1493px;top:986.3px;font-size:11.5px;color:#888;transform:scaleX(0.9894);width:25.88px;clip-path:inset(-5px -1px -5px -2px);--w:25.6;">ビュー</div><div class="box" style="left:1525px;top:983px;width:70px;height:20px;border-radius:3px;background:#f0f0f0;border-color:#d0d0d0"></div><div class="t" id="t61" style="left:1529px;top:987.3px;font-size:11.5px;color:#999;transform:scaleX(1.0435);width:25.88px;clip-path:inset(-5px -1px -5px -2px);--w:27;">ツリー</div><svg class="ic" style="left:1581px;top:991px;width:8px;height:5px" viewBox="0 0 8 5"><path d="M0 0h8L4 5z" fill="#aaa"/></svg><div style="position:absolute;left:0;top:1011px;width:1920px;height:29px;background:#f0f0f0"></div><div class="box" style="left:5px;top:1015px;width:197px;height:20px;border-radius:3px"></div><svg class="ic" style="left:12px;top:1019px;width:13px;height:13px" viewBox="0 0 13 13"><circle cx="5.5" cy="5.5" r="4" fill="none" stroke="#555" stroke-width="1.2"/><path d="M8.5 8.5l3.5 3.5" stroke="#555" stroke-width="1.4"/></svg><div class="t" id="t62" style="left:32.7px;top:1019.3px;font-size:11.5px;color:#777;transform:scaleX(1.1734);width:63.58px;clip-path:inset(-5px -1px -5px -2px);--w:74.6;">検索(Ctrl + K)</div><div class="t" id="t63" style="left:211.7px;top:1019.3px;font-size:11.5px;color:#000;transform:scaleX(1.2560);width:51.75px;clip-path:inset(-5px -1px -5px -2px);--w:65;">地物検索終了</div><div class="t" id="t64" style="left:1202px;top:1019.3px;font-size:11.5px;color:#000;transform:scaleX(1.1826);width:17.25px;clip-path:inset(-5px -1px -5px -2px);--w:20.4;">座標</div><div class="box" style="left:1228px;top:1016px;width:108px;height:20px;border-radius:2px"></div><div class="t" id="t65" style="left:1234px;top:1020.3px;font-size:10.5px;color:#000;transform:scaleX(0.9581);width:98.53px;clip-path:inset(-5px -1px -5px -2px);--w:94.4;letter-spacing:.3px">15275562, 4241686</div><svg class="ic" style="left:1342px;top:1017px;width:16px;height:17px" viewBox="0 0 16 17"><path d="M3 3c3-2 6 0 5 3s-5 4-3 7 7 1 8-2" fill="none" stroke="#444" stroke-width="2"/><path d="M2 14L14 2" stroke="#444" stroke-width="1.4"/></svg><div class="t" id="t66" style="left:1370.8px;top:1019.3px;font-size:11.5px;color:#000;transform:scaleX(1.1130);width:17.25px;clip-path:inset(-5px -1px -5px -2px);--w:19.2;">縮尺</div><div class="box" style="left:1396px;top:1016px;width:78px;height:20px;border-radius:2px"></div><div style="position:absolute;left:1454px;top:1017px;width:1px;height:19px;background:#ccc"></div><div class="t" id="t67" style="left:1399px;top:1020.3px;font-size:10.5px;color:#000;transform:scaleX(0.9523);width:46.20px;clip-path:inset(-5px -1px -5px -2px);--w:44;letter-spacing:.3px">1:526476</div><svg class="ic" style="left:1460px;top:1024px;width:8px;height:5px" viewBox="0 0 8 5"><path d="M0 0h8L4 5z" fill="#555"/></svg><svg class="ic" style="left:1486px;top:1017px;width:14px;height:16px" viewBox="0 0 14 16"><path d="M3 8V5a4 4 0 018 0v3" fill="none" stroke="#555" stroke-width="2"/><rect x="1" y="7.5" width="12" height="8" rx="1.5" fill="#555"/></svg><div class="t" id="t68" style="left:1507.8px;top:1019.3px;font-size:11.5px;color:#000;transform:scaleX(1.1942);width:17.25px;clip-path:inset(-5px -1px -5px -2px);--w:20.6;">拡大</div><div class="box" style="left:1533px;top:1016px;width:82px;height:20px;border-radius:2px"></div><div style="position:absolute;left:1600px;top:1017px;width:1px;height:19px;background:#ccc"></div><div class="t" id="t69" style="left:1536px;top:1020.3px;font-size:10.5px;color:#000;transform:scaleX(0.9308);width:26.86px;clip-path:inset(-5px -1px -5px -2px);--w:25;">100%</div><svg class="ic" style="left:1604px;top:1019px;width:8px;height:14px" viewBox="0 0 8 14"><path d="M0 5h8L4 1zM0 9h8l-4 4z" fill="#555"/></svg><div class="t" id="t70" style="left:1624.5px;top:1019.3px;font-size:11.5px;color:#000;transform:scaleX(1.2290);width:17.25px;clip-path:inset(-5px -1px -5px -2px);--w:21.2;">回転</div><div class="box" style="left:1656px;top:1016px;width:82px;height:20px;border-radius:2px"></div><div style="position:absolute;left:1722px;top:1017px;width:1px;height:19px;background:#ccc"></div><div class="t" id="t71" style="left:1660px;top:1020.3px;font-size:10.5px;color:#000;transform:scaleX(1.0129);width:21.72px;clip-path:inset(-5px -1px -5px -2px);--w:22;">0.0 °</div><svg class="ic" style="left:1726px;top:1019px;width:8px;height:14px" viewBox="0 0 8 14"><path d="M0 5h8L4 1zM0 9h8l-4 4z" fill="#555"/></svg><div class="cb" style="left:1746px;top:1019px"><svg viewBox="0 0 13 13" style="position:absolute;left:0;top:0;width:13px;height:13px"><path d="M3 6.5l2.5 3 4.5-6.5" stroke="#000" stroke-width="1.6" fill="none"/></svg></div><div class="t" id="t72" style="left:1763.8px;top:1019.3px;font-size:11.5px;color:#000;transform:scaleX(0.9082);width:25.88px;clip-path:inset(-5px -1px -5px -2px);--w:23.5;">レンダ</div><svg class="ic" style="left:1803px;top:1018px;width:15px;height:15px" viewBox="0 0 16 16"><circle cx="8" cy="8" r="7" fill="none" stroke="#666" stroke-width="1.2"/><path d="M1 8h14M8 1v14M3 4h10M3 12h10M8 1c-4 4-4 10 0 14M8 1c4 4 4 10 0 14" stroke="#666" stroke-width=".9" fill="none"/></svg><div class="t" id="t73" style="left:1820px;top:1020.3px;font-size:11px;color:#000;transform:scaleX(0.9003);width:58.09px;clip-path:inset(-5px -1px -5px -2px);--w:52.3;">EPSG:3857</div><svg class="ic" style="left:1896px;top:1017px;width:17px;height:16px" viewBox="0 0 17 16"><path d="M8.5 1c4.4 0 8 2.7 8 6s-3.6 6-8 6c-1 0-2-.1-3-.4L1 15l1.5-3.5C1 10.4.5 8.8.5 7c0-3.3 3.6-6 8-6z" fill="#555"/><circle cx="5" cy="7" r="1.2" fill="#fff"/><circle cx="8.5" cy="7" r="1.2" fill="#fff"/><circle cx="12" cy="7" r="1.2" fill="#fff"/></svg>
<script>(function(){var L=document.querySelectorAll('.t');for(var i=0;i<L.length;i++){var e=L[i];var w=parseFloat(e.style.getPropertyValue('--w'));if(!w)continue;e.style.transform='none';e.style.width='auto';var n=e.getBoundingClientRect().width;if(n>0){e.style.width=n+'px';e.style.transform='scaleX('+(w/n)+')';}}})();</script>
</body></html>
